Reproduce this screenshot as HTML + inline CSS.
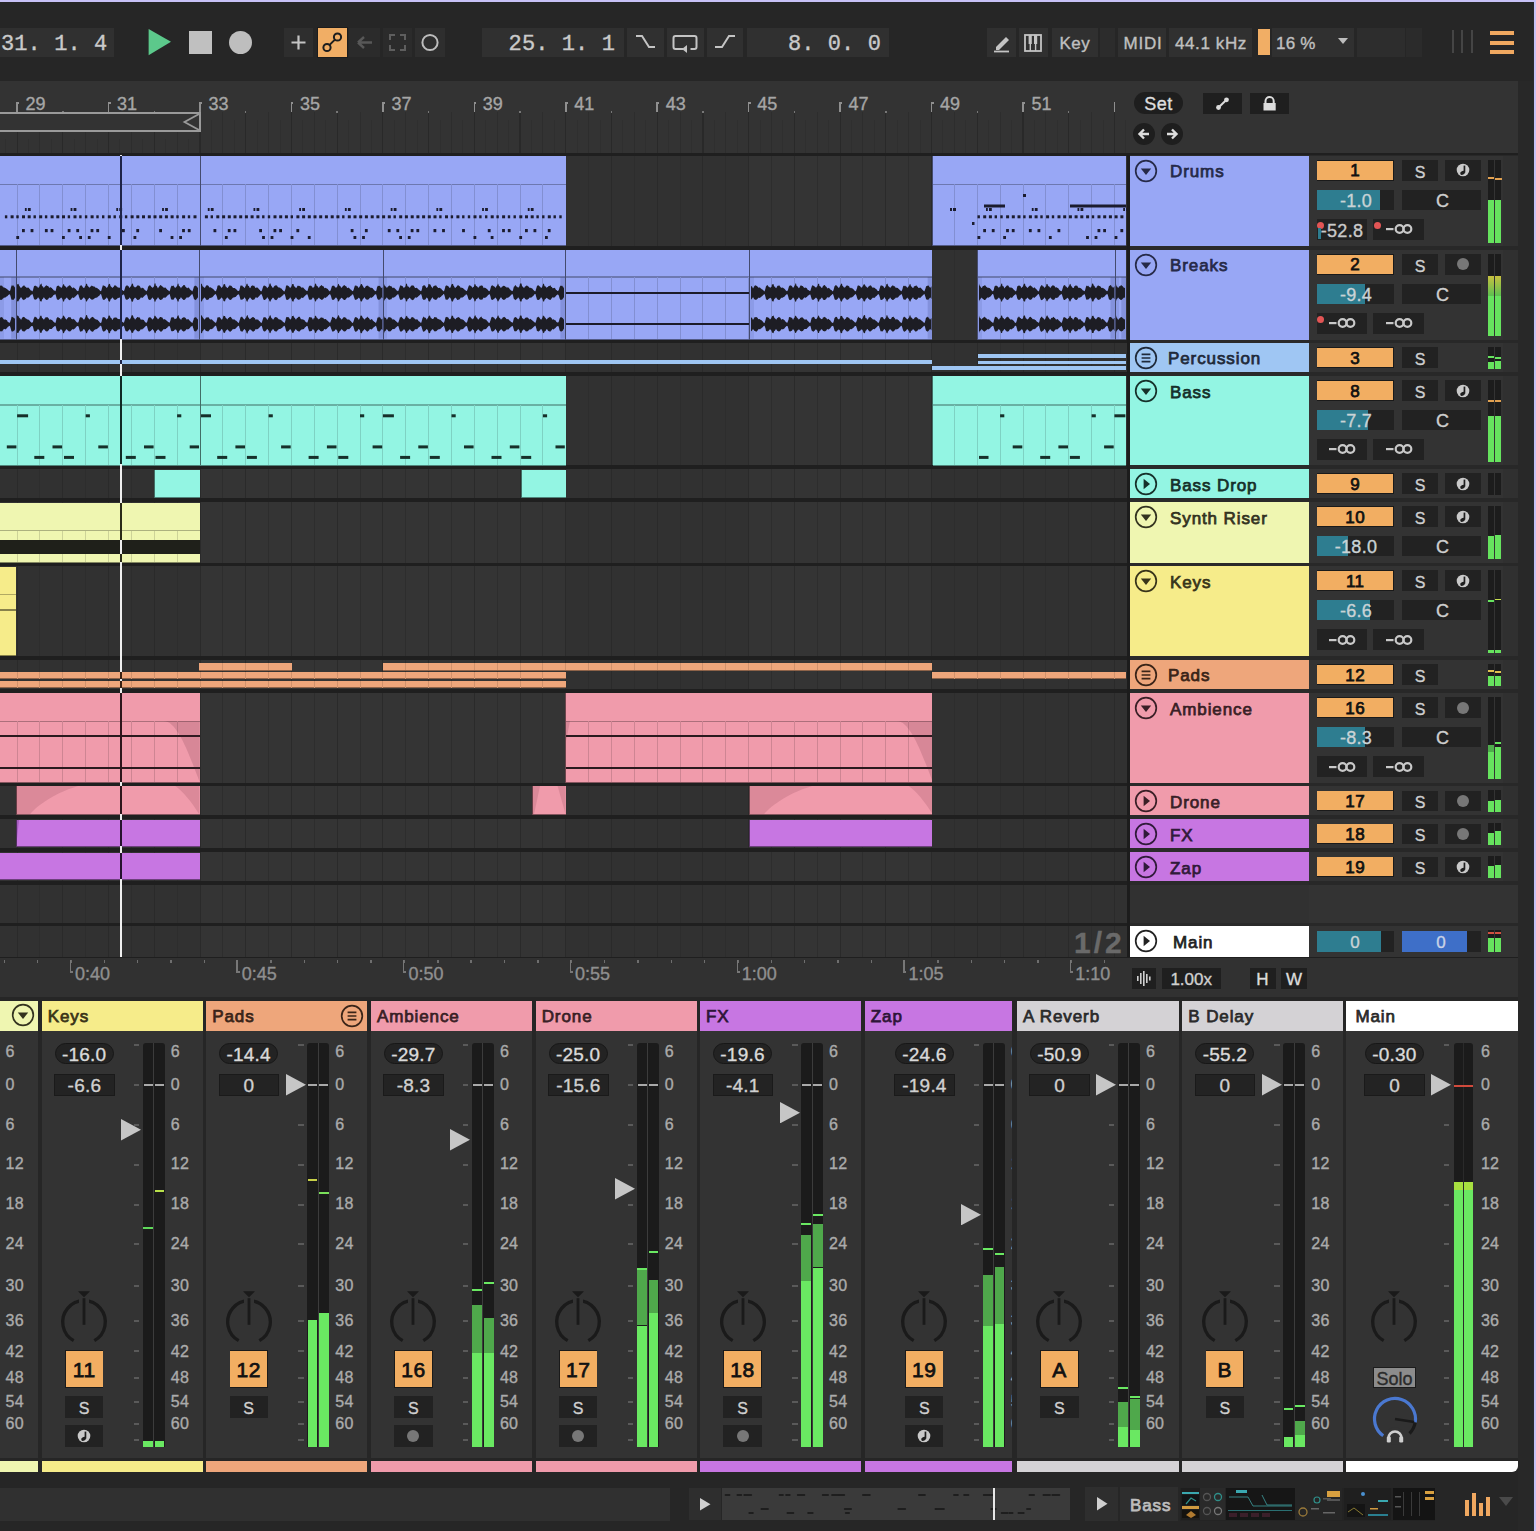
<!DOCTYPE html><html><head><meta charset="utf-8"><style>
html,body{margin:0;padding:0;width:1536px;height:1531px;overflow:hidden;background:#2a2a2a;}
div{position:absolute;box-sizing:border-box;}
.t{white-space:nowrap;-webkit-text-stroke:0.35px currentColor;}
.b{-webkit-text-stroke:0.75px currentColor;}
</style></head><body>
<div style="left:0.00px;top:0.00px;width:1536.00px;height:1531.00px;background:#2a2a2a;"></div>
<div style="left:0.00px;top:2.00px;width:1533.00px;height:79.00px;background:#262626;"></div>
<div style="left:0.00px;top:28.00px;width:114.00px;height:29.00px;background:#303030;"></div>
<div class="t" style="left:1.00px;top:32.24px;line-height:26.40px;font-size:22px;color:#cacaca;font-weight:normal;font-family:'Liberation Mono',monospace;letter-spacing:0.1px;">31.&nbsp;1.&nbsp;4</div>
<svg style="position:absolute;left:148.00px;top:28.00px;" width="24.00" height="28.00" viewBox="0 0 24.00 28.00"><polygon points="0.6,1 23,13.8 0.6,27.2" fill="#5cc98b"/></svg>
<div style="left:189.00px;top:31.00px;width:22.60px;height:23.00px;background:#c0c0c0;"></div>
<div style="left:228.5px;top:31px;width:23px;height:23px;border-radius:50%;background:#bebebe"></div>
<div style="left:284.00px;top:28.00px;width:29.00px;height:29.00px;background:#2e2e2e;"></div>
<svg style="position:absolute;left:284.00px;top:28.00px;" width="29.00" height="29.00" viewBox="0 0 29.00 29.00"><path d="M14.5 7.5v14M7.5 14.5h14" stroke="#c4c4c4" stroke-width="2.2" fill="none"/></svg>
<div style="left:316.50px;top:26.50px;width:31.00px;height:31.00px;background:#1c1c1c;"></div>
<div style="left:317.50px;top:27.50px;width:29.00px;height:29.00px;background:#f1ae65;"></div>
<svg style="position:absolute;left:316.50px;top:26.50px;" width="31.00" height="31.00" viewBox="0 0 31.00 31.00"><circle cx="10" cy="20.5" r="3.6" stroke="#1e1e1e" stroke-width="2" fill="none"/><circle cx="20.5" cy="10" r="3.6" stroke="#1e1e1e" stroke-width="2" fill="none"/><path d="M12.6 17.9L17.9 12.6" stroke="#1e1e1e" stroke-width="2"/></svg>
<div style="left:349.00px;top:28.00px;width:31.00px;height:29.00px;background:#2b2b2b;"></div>
<svg style="position:absolute;left:349.00px;top:28.00px;" width="31.00" height="29.00" viewBox="0 0 31.00 29.00"><path d="M9 14.5h14M9 14.5l6-5.5M9 14.5l6 5.5" stroke="#585858" stroke-width="2.4" fill="none"/></svg>
<div style="left:383.00px;top:28.00px;width:29.00px;height:29.00px;background:#2b2b2b;"></div>
<svg style="position:absolute;left:383.00px;top:28.00px;" width="29.00" height="29.00" viewBox="0 0 29.00 29.00"><path d="M7 12V7h5M17 7h5v5M22 17v5h-5M12 22H7v-5" stroke="#5e5e5e" stroke-width="2" fill="none"/></svg>
<div style="left:415.00px;top:28.00px;width:30.00px;height:29.00px;background:#2e2e2e;"></div>
<svg style="position:absolute;left:415.00px;top:28.00px;" width="30.00" height="29.00" viewBox="0 0 30.00 29.00"><circle cx="15" cy="14.5" r="7.6" stroke="#bdbdbd" stroke-width="2" fill="none"/></svg>
<div style="left:482.00px;top:28.00px;width:142.00px;height:29.00px;background:#303030;"></div>
<div class="t" style="left:315.00px;width:300px;text-align:right;top:32.24px;line-height:26.40px;font-size:22px;color:#cacaca;font-weight:normal;font-family:'Liberation Mono',monospace;letter-spacing:0.1px;">25.&nbsp;1.&nbsp;1</div>
<div style="left:627.00px;top:28.00px;width:37.00px;height:29.00px;background:#303030;"></div>
<svg style="position:absolute;left:627.00px;top:27.00px;" width="37.00" height="29.00" viewBox="0 0 37.00 29.00"><path d="M9 9h6l7 11h6" stroke="#c4c4c4" stroke-width="2" fill="none"/></svg>
<div style="left:667.00px;top:28.00px;width:37.00px;height:29.00px;background:#303030;"></div>
<svg style="position:absolute;left:667.00px;top:27.00px;" width="37.00" height="29.00" viewBox="0 0 37.00 29.00"><path d="M16 22h-7.5a2 2 0 0 1-2-2v-9a2 2 0 0 1 2-2h19a2 2 0 0 1 2 2v9a2 2 0 0 1-2 2h-4" stroke="#c4c4c4" stroke-width="2" fill="none"/><polygon points="15,22 20,18 20,26" fill="#c4c4c4"/></svg>
<div style="left:707.00px;top:28.00px;width:36.00px;height:29.00px;background:#303030;"></div>
<svg style="position:absolute;left:707.00px;top:27.00px;" width="36.00" height="29.00" viewBox="0 0 36.00 29.00"><path d="M8 20h7l7-11h6" stroke="#c4c4c4" stroke-width="2" fill="none"/></svg>
<div style="left:747.00px;top:28.00px;width:142.00px;height:29.00px;background:#303030;"></div>
<div class="t" style="left:581.00px;width:300px;text-align:right;top:32.24px;line-height:26.40px;font-size:22px;color:#cacaca;font-weight:normal;font-family:'Liberation Mono',monospace;letter-spacing:0.1px;">8.&nbsp;0.&nbsp;0</div>
<div style="left:987.00px;top:28.00px;width:29.00px;height:29.00px;background:#303030;"></div>
<svg style="position:absolute;left:987.00px;top:28.00px;" width="29.00" height="29.00" viewBox="0 0 29.00 29.00"><path d="M9 19l10-10 3 3-10 10h-3z" fill="#c4c4c4"/><path d="M7 23.5h15" stroke="#c4c4c4" stroke-width="1.8"/></svg>
<div style="left:1019.00px;top:28.00px;width:28.50px;height:29.00px;background:#303030;"></div>
<svg style="position:absolute;left:1019.00px;top:28.00px;" width="28.50" height="29.00" viewBox="0 0 28.50 29.00"><rect x="6" y="7" width="16" height="16" stroke="#c4c4c4" stroke-width="1.8" fill="none"/><path d="M11.3 7v16M16.6 7v16" stroke="#c4c4c4" stroke-width="1.4"/><rect x="9.6" y="7" width="3.2" height="9" fill="#c4c4c4"/><rect x="15" y="7" width="3.2" height="9" fill="#c4c4c4"/></svg>
<div style="left:1052.00px;top:28.00px;width:45.50px;height:29.00px;background:#303030;"></div>
<div class="t" style="left:1059.50px;top:34.34px;line-height:20.40px;font-size:17px;color:#c0c0c0;font-weight:normal;font-family:'Liberation Sans',sans-serif;letter-spacing:0.5px">Key</div>
<div style="left:1100.00px;top:28.00px;width:15.00px;height:29.00px;background:#2c2c2c;"></div>
<div style="left:1118.00px;top:28.00px;width:48.00px;height:29.00px;background:#303030;"></div>
<div class="t" style="left:1123.50px;top:34.34px;line-height:20.40px;font-size:17px;color:#c0c0c0;font-weight:normal;font-family:'Liberation Sans',sans-serif;letter-spacing:0.8px">MIDI</div>
<div style="left:1169.00px;top:28.00px;width:83.00px;height:29.00px;background:#303030;"></div>
<div class="t" style="left:1175.00px;top:34.34px;line-height:20.40px;font-size:17px;color:#c0c0c0;font-weight:normal;font-family:'Liberation Sans',sans-serif;letter-spacing:0.6px">44.1 kHz</div>
<div style="left:1258.00px;top:29.00px;width:12.00px;height:26.00px;background:#f1ae65;"></div>
<div style="left:1272.00px;top:28.00px;width:82.00px;height:29.00px;background:#303030;"></div>
<div class="t" style="left:1276.00px;top:34.34px;line-height:20.40px;font-size:17px;color:#c0c0c0;font-weight:normal;font-family:'Liberation Sans',sans-serif;letter-spacing:0.2px">16 %</div>
<svg style="position:absolute;left:1337.00px;top:37.00px;" width="12.00" height="8.00" viewBox="0 0 12.00 8.00"><polygon points="1,1 11,1 6,7" fill="#bdbdbd"/></svg>
<div style="left:1357.00px;top:28.00px;width:48.00px;height:29.00px;background:#2d2d2d;"></div>
<div style="left:1406.00px;top:28.00px;width:16.00px;height:29.00px;background:#2b2b2b;"></div>
<div style="left:1451.70px;top:30.00px;width:2.60px;height:23.00px;background:#454545;"></div>
<div style="left:1460.70px;top:30.00px;width:2.60px;height:23.00px;background:#454545;"></div>
<div style="left:1470.70px;top:30.00px;width:2.60px;height:23.00px;background:#454545;"></div>
<div style="left:1490.00px;top:31.00px;width:23.50px;height:4.00px;background:#f0a860;"></div>
<div style="left:1490.00px;top:40.50px;width:23.50px;height:4.00px;background:#f0a860;"></div>
<div style="left:1490.00px;top:50.00px;width:23.50px;height:4.00px;background:#f0a860;"></div>
<div style="left:1518.00px;top:81.00px;width:15.00px;height:1450.00px;background:#282828;"></div>
<div style="left:0.00px;top:0.00px;width:1536.00px;height:2.00px;background:#c7c1f6;"></div>
<div style="left:1533.50px;top:0.00px;width:2.50px;height:1531.00px;background:#c7c1f6;"></div>
<div style="left:0.00px;top:81.00px;width:1518.00px;height:72.00px;background:#333333;"></div>
<div style="left:0.00px;top:153.00px;width:1518.00px;height:2.00px;background:#1f1f1f;"></div>
<div style="left:5.18px;top:139.00px;width:1.00px;height:14.00px;background:#2f2f2f;"></div>
<div style="left:16.51px;top:131.00px;width:1.20px;height:22.00px;background:#292929;"></div>
<div style="left:28.04px;top:139.00px;width:1.00px;height:14.00px;background:#2f2f2f;"></div>
<div style="left:39.47px;top:131.00px;width:1.00px;height:22.00px;background:#2d2d2d;"></div>
<div style="left:50.90px;top:139.00px;width:1.00px;height:14.00px;background:#2f2f2f;"></div>
<div style="left:62.23px;top:131.00px;width:1.20px;height:22.00px;background:#292929;"></div>
<div style="left:73.76px;top:139.00px;width:1.00px;height:14.00px;background:#2f2f2f;"></div>
<div style="left:85.19px;top:131.00px;width:1.00px;height:22.00px;background:#2d2d2d;"></div>
<div style="left:96.63px;top:139.00px;width:1.00px;height:14.00px;background:#2f2f2f;"></div>
<div style="left:107.96px;top:131.00px;width:1.20px;height:22.00px;background:#292929;"></div>
<div style="left:119.49px;top:139.00px;width:1.00px;height:14.00px;background:#2f2f2f;"></div>
<div style="left:130.92px;top:131.00px;width:1.00px;height:22.00px;background:#2d2d2d;"></div>
<div style="left:142.35px;top:139.00px;width:1.00px;height:14.00px;background:#2f2f2f;"></div>
<div style="left:153.68px;top:131.00px;width:1.20px;height:22.00px;background:#292929;"></div>
<div style="left:165.21px;top:139.00px;width:1.00px;height:14.00px;background:#2f2f2f;"></div>
<div style="left:176.64px;top:131.00px;width:1.00px;height:22.00px;background:#2d2d2d;"></div>
<div style="left:188.07px;top:139.00px;width:1.00px;height:14.00px;background:#2f2f2f;"></div>
<div style="left:199.40px;top:131.00px;width:1.20px;height:22.00px;background:#292929;"></div>
<div style="left:210.93px;top:120.00px;width:1.00px;height:33.00px;background:#2f2f2f;"></div>
<div style="left:222.36px;top:112.00px;width:1.00px;height:41.00px;background:#2d2d2d;"></div>
<div style="left:233.79px;top:120.00px;width:1.00px;height:33.00px;background:#2f2f2f;"></div>
<div style="left:245.12px;top:112.00px;width:1.20px;height:41.00px;background:#292929;"></div>
<div style="left:256.65px;top:120.00px;width:1.00px;height:33.00px;background:#2f2f2f;"></div>
<div style="left:268.08px;top:112.00px;width:1.00px;height:41.00px;background:#2d2d2d;"></div>
<div style="left:279.51px;top:120.00px;width:1.00px;height:33.00px;background:#2f2f2f;"></div>
<div style="left:290.84px;top:112.00px;width:1.20px;height:41.00px;background:#292929;"></div>
<div style="left:302.37px;top:120.00px;width:1.00px;height:33.00px;background:#2f2f2f;"></div>
<div style="left:313.81px;top:112.00px;width:1.00px;height:41.00px;background:#2d2d2d;"></div>
<div style="left:325.24px;top:120.00px;width:1.00px;height:33.00px;background:#2f2f2f;"></div>
<div style="left:336.57px;top:112.00px;width:1.20px;height:41.00px;background:#292929;"></div>
<div style="left:348.10px;top:120.00px;width:1.00px;height:33.00px;background:#2f2f2f;"></div>
<div style="left:359.53px;top:112.00px;width:1.00px;height:41.00px;background:#2d2d2d;"></div>
<div style="left:370.96px;top:120.00px;width:1.00px;height:33.00px;background:#2f2f2f;"></div>
<div style="left:382.29px;top:112.00px;width:1.20px;height:41.00px;background:#292929;"></div>
<div style="left:393.82px;top:120.00px;width:1.00px;height:33.00px;background:#2f2f2f;"></div>
<div style="left:405.25px;top:112.00px;width:1.00px;height:41.00px;background:#2d2d2d;"></div>
<div style="left:416.68px;top:120.00px;width:1.00px;height:33.00px;background:#2f2f2f;"></div>
<div style="left:428.01px;top:112.00px;width:1.20px;height:41.00px;background:#292929;"></div>
<div style="left:439.54px;top:120.00px;width:1.00px;height:33.00px;background:#2f2f2f;"></div>
<div style="left:450.97px;top:112.00px;width:1.00px;height:41.00px;background:#2d2d2d;"></div>
<div style="left:462.40px;top:120.00px;width:1.00px;height:33.00px;background:#2f2f2f;"></div>
<div style="left:473.73px;top:112.00px;width:1.20px;height:41.00px;background:#292929;"></div>
<div style="left:485.26px;top:120.00px;width:1.00px;height:33.00px;background:#2f2f2f;"></div>
<div style="left:496.69px;top:112.00px;width:1.00px;height:41.00px;background:#2d2d2d;"></div>
<div style="left:508.12px;top:120.00px;width:1.00px;height:33.00px;background:#2f2f2f;"></div>
<div style="left:519.45px;top:112.00px;width:1.20px;height:41.00px;background:#292929;"></div>
<div style="left:530.98px;top:120.00px;width:1.00px;height:33.00px;background:#2f2f2f;"></div>
<div style="left:542.41px;top:112.00px;width:1.00px;height:41.00px;background:#2d2d2d;"></div>
<div style="left:553.85px;top:120.00px;width:1.00px;height:33.00px;background:#2f2f2f;"></div>
<div style="left:565.18px;top:112.00px;width:1.20px;height:41.00px;background:#292929;"></div>
<div style="left:576.71px;top:120.00px;width:1.00px;height:33.00px;background:#2f2f2f;"></div>
<div style="left:588.14px;top:112.00px;width:1.00px;height:41.00px;background:#2d2d2d;"></div>
<div style="left:599.57px;top:120.00px;width:1.00px;height:33.00px;background:#2f2f2f;"></div>
<div style="left:610.90px;top:112.00px;width:1.20px;height:41.00px;background:#292929;"></div>
<div style="left:622.43px;top:120.00px;width:1.00px;height:33.00px;background:#2f2f2f;"></div>
<div style="left:633.86px;top:112.00px;width:1.00px;height:41.00px;background:#2d2d2d;"></div>
<div style="left:645.29px;top:120.00px;width:1.00px;height:33.00px;background:#2f2f2f;"></div>
<div style="left:656.62px;top:112.00px;width:1.20px;height:41.00px;background:#292929;"></div>
<div style="left:668.15px;top:120.00px;width:1.00px;height:33.00px;background:#2f2f2f;"></div>
<div style="left:679.58px;top:112.00px;width:1.00px;height:41.00px;background:#2d2d2d;"></div>
<div style="left:691.01px;top:120.00px;width:1.00px;height:33.00px;background:#2f2f2f;"></div>
<div style="left:702.34px;top:112.00px;width:1.20px;height:41.00px;background:#292929;"></div>
<div style="left:713.87px;top:120.00px;width:1.00px;height:33.00px;background:#2f2f2f;"></div>
<div style="left:725.30px;top:112.00px;width:1.00px;height:41.00px;background:#2d2d2d;"></div>
<div style="left:736.73px;top:120.00px;width:1.00px;height:33.00px;background:#2f2f2f;"></div>
<div style="left:748.06px;top:112.00px;width:1.20px;height:41.00px;background:#292929;"></div>
<div style="left:759.59px;top:120.00px;width:1.00px;height:33.00px;background:#2f2f2f;"></div>
<div style="left:771.02px;top:112.00px;width:1.00px;height:41.00px;background:#2d2d2d;"></div>
<div style="left:782.46px;top:120.00px;width:1.00px;height:33.00px;background:#2f2f2f;"></div>
<div style="left:793.79px;top:112.00px;width:1.20px;height:41.00px;background:#292929;"></div>
<div style="left:805.32px;top:120.00px;width:1.00px;height:33.00px;background:#2f2f2f;"></div>
<div style="left:816.75px;top:112.00px;width:1.00px;height:41.00px;background:#2d2d2d;"></div>
<div style="left:828.18px;top:120.00px;width:1.00px;height:33.00px;background:#2f2f2f;"></div>
<div style="left:839.51px;top:112.00px;width:1.20px;height:41.00px;background:#292929;"></div>
<div style="left:851.04px;top:120.00px;width:1.00px;height:33.00px;background:#2f2f2f;"></div>
<div style="left:862.47px;top:112.00px;width:1.00px;height:41.00px;background:#2d2d2d;"></div>
<div style="left:873.90px;top:120.00px;width:1.00px;height:33.00px;background:#2f2f2f;"></div>
<div style="left:885.23px;top:112.00px;width:1.20px;height:41.00px;background:#292929;"></div>
<div style="left:896.76px;top:120.00px;width:1.00px;height:33.00px;background:#2f2f2f;"></div>
<div style="left:908.19px;top:112.00px;width:1.00px;height:41.00px;background:#2d2d2d;"></div>
<div style="left:919.62px;top:120.00px;width:1.00px;height:33.00px;background:#2f2f2f;"></div>
<div style="left:930.95px;top:112.00px;width:1.20px;height:41.00px;background:#292929;"></div>
<div style="left:942.48px;top:120.00px;width:1.00px;height:33.00px;background:#2f2f2f;"></div>
<div style="left:953.91px;top:112.00px;width:1.00px;height:41.00px;background:#2d2d2d;"></div>
<div style="left:965.34px;top:120.00px;width:1.00px;height:33.00px;background:#2f2f2f;"></div>
<div style="left:976.67px;top:112.00px;width:1.20px;height:41.00px;background:#292929;"></div>
<div style="left:988.20px;top:120.00px;width:1.00px;height:33.00px;background:#2f2f2f;"></div>
<div style="left:999.63px;top:112.00px;width:1.00px;height:41.00px;background:#2d2d2d;"></div>
<div style="left:1011.07px;top:120.00px;width:1.00px;height:33.00px;background:#2f2f2f;"></div>
<div style="left:1022.40px;top:112.00px;width:1.20px;height:41.00px;background:#292929;"></div>
<div style="left:1033.93px;top:120.00px;width:1.00px;height:33.00px;background:#2f2f2f;"></div>
<div style="left:1045.36px;top:112.00px;width:1.00px;height:41.00px;background:#2d2d2d;"></div>
<div style="left:1056.79px;top:120.00px;width:1.00px;height:33.00px;background:#2f2f2f;"></div>
<div style="left:1068.12px;top:112.00px;width:1.20px;height:41.00px;background:#292929;"></div>
<div style="left:1079.65px;top:120.00px;width:1.00px;height:33.00px;background:#2f2f2f;"></div>
<div style="left:1091.08px;top:112.00px;width:1.00px;height:41.00px;background:#2d2d2d;"></div>
<div style="left:1102.51px;top:120.00px;width:1.00px;height:33.00px;background:#2f2f2f;"></div>
<div style="left:1113.84px;top:112.00px;width:1.20px;height:41.00px;background:#292929;"></div>
<div style="left:1125.37px;top:120.00px;width:1.00px;height:33.00px;background:#2f2f2f;"></div>
<div style="left:16.36px;top:102.00px;width:1.50px;height:10.00px;background:#8f8f8f;"></div>
<div style="left:16.36px;top:102.00px;width:2.75px;height:1.50px;background:#8f8f8f;"></div>
<div class="t" style="left:25.61px;top:93.56px;line-height:21.60px;font-size:18px;color:#a6a6a6;font-weight:normal;font-family:'Liberation Sans',sans-serif;">29</div>
<div style="left:62.08px;top:111.00px;width:1.50px;height:2.00px;background:#777;"></div>
<div style="left:107.81px;top:102.00px;width:1.50px;height:10.00px;background:#8f8f8f;"></div>
<div style="left:107.81px;top:102.00px;width:2.75px;height:1.50px;background:#8f8f8f;"></div>
<div class="t" style="left:117.06px;top:93.56px;line-height:21.60px;font-size:18px;color:#a6a6a6;font-weight:normal;font-family:'Liberation Sans',sans-serif;">31</div>
<div style="left:153.53px;top:111.00px;width:1.50px;height:2.00px;background:#777;"></div>
<div style="left:199.25px;top:102.00px;width:1.50px;height:10.00px;background:#8f8f8f;"></div>
<div style="left:199.25px;top:102.00px;width:2.75px;height:1.50px;background:#8f8f8f;"></div>
<div class="t" style="left:208.50px;top:93.56px;line-height:21.60px;font-size:18px;color:#a6a6a6;font-weight:normal;font-family:'Liberation Sans',sans-serif;">33</div>
<div style="left:244.97px;top:111.00px;width:1.50px;height:2.00px;background:#777;"></div>
<div style="left:290.69px;top:102.00px;width:1.50px;height:10.00px;background:#8f8f8f;"></div>
<div style="left:290.69px;top:102.00px;width:2.75px;height:1.50px;background:#8f8f8f;"></div>
<div class="t" style="left:299.94px;top:93.56px;line-height:21.60px;font-size:18px;color:#a6a6a6;font-weight:normal;font-family:'Liberation Sans',sans-serif;">35</div>
<div style="left:336.42px;top:111.00px;width:1.50px;height:2.00px;background:#777;"></div>
<div style="left:382.14px;top:102.00px;width:1.50px;height:10.00px;background:#8f8f8f;"></div>
<div style="left:382.14px;top:102.00px;width:2.75px;height:1.50px;background:#8f8f8f;"></div>
<div class="t" style="left:391.39px;top:93.56px;line-height:21.60px;font-size:18px;color:#a6a6a6;font-weight:normal;font-family:'Liberation Sans',sans-serif;">37</div>
<div style="left:427.86px;top:111.00px;width:1.50px;height:2.00px;background:#777;"></div>
<div style="left:473.58px;top:102.00px;width:1.50px;height:10.00px;background:#8f8f8f;"></div>
<div style="left:473.58px;top:102.00px;width:2.75px;height:1.50px;background:#8f8f8f;"></div>
<div class="t" style="left:482.83px;top:93.56px;line-height:21.60px;font-size:18px;color:#a6a6a6;font-weight:normal;font-family:'Liberation Sans',sans-serif;">39</div>
<div style="left:519.30px;top:111.00px;width:1.50px;height:2.00px;background:#777;"></div>
<div style="left:565.03px;top:102.00px;width:1.50px;height:10.00px;background:#8f8f8f;"></div>
<div style="left:565.03px;top:102.00px;width:2.75px;height:1.50px;background:#8f8f8f;"></div>
<div class="t" style="left:574.28px;top:93.56px;line-height:21.60px;font-size:18px;color:#a6a6a6;font-weight:normal;font-family:'Liberation Sans',sans-serif;">41</div>
<div style="left:610.75px;top:111.00px;width:1.50px;height:2.00px;background:#777;"></div>
<div style="left:656.47px;top:102.00px;width:1.50px;height:10.00px;background:#8f8f8f;"></div>
<div style="left:656.47px;top:102.00px;width:2.75px;height:1.50px;background:#8f8f8f;"></div>
<div class="t" style="left:665.72px;top:93.56px;line-height:21.60px;font-size:18px;color:#a6a6a6;font-weight:normal;font-family:'Liberation Sans',sans-serif;">43</div>
<div style="left:702.19px;top:111.00px;width:1.50px;height:2.00px;background:#777;"></div>
<div style="left:747.91px;top:102.00px;width:1.50px;height:10.00px;background:#8f8f8f;"></div>
<div style="left:747.91px;top:102.00px;width:2.75px;height:1.50px;background:#8f8f8f;"></div>
<div class="t" style="left:757.16px;top:93.56px;line-height:21.60px;font-size:18px;color:#a6a6a6;font-weight:normal;font-family:'Liberation Sans',sans-serif;">45</div>
<div style="left:793.64px;top:111.00px;width:1.50px;height:2.00px;background:#777;"></div>
<div style="left:839.36px;top:102.00px;width:1.50px;height:10.00px;background:#8f8f8f;"></div>
<div style="left:839.36px;top:102.00px;width:2.75px;height:1.50px;background:#8f8f8f;"></div>
<div class="t" style="left:848.61px;top:93.56px;line-height:21.60px;font-size:18px;color:#a6a6a6;font-weight:normal;font-family:'Liberation Sans',sans-serif;">47</div>
<div style="left:885.08px;top:111.00px;width:1.50px;height:2.00px;background:#777;"></div>
<div style="left:930.80px;top:102.00px;width:1.50px;height:10.00px;background:#8f8f8f;"></div>
<div style="left:930.80px;top:102.00px;width:2.75px;height:1.50px;background:#8f8f8f;"></div>
<div class="t" style="left:940.05px;top:93.56px;line-height:21.60px;font-size:18px;color:#a6a6a6;font-weight:normal;font-family:'Liberation Sans',sans-serif;">49</div>
<div style="left:976.52px;top:111.00px;width:1.50px;height:2.00px;background:#777;"></div>
<div style="left:1022.25px;top:102.00px;width:1.50px;height:10.00px;background:#8f8f8f;"></div>
<div style="left:1022.25px;top:102.00px;width:2.75px;height:1.50px;background:#8f8f8f;"></div>
<div class="t" style="left:1031.50px;top:93.56px;line-height:21.60px;font-size:18px;color:#a6a6a6;font-weight:normal;font-family:'Liberation Sans',sans-serif;">51</div>
<div style="left:1067.97px;top:111.00px;width:1.50px;height:2.00px;background:#777;"></div>
<div style="left:1113.69px;top:102.00px;width:1.50px;height:10.00px;background:#8f8f8f;"></div>
<div style="left:0.00px;top:112.30px;width:201.00px;height:2.00px;background:#9a9a9a;"></div>
<div style="left:0.00px;top:129.50px;width:201.00px;height:2.00px;background:#9a9a9a;"></div>
<div style="left:199.00px;top:112.30px;width:2.00px;height:19.20px;background:#9a9a9a;"></div>
<svg style="position:absolute;left:182.00px;top:112.00px;" width="20.00" height="20.00" viewBox="0 0 20.00 20.00"><path d="M18 1.5L2.5 10L18 18.5" stroke="#9a9a9a" stroke-width="1.8" fill="none"/></svg>
<div style="left:1134px;top:92px;width:49px;height:22px;border-radius:11px;background:#1e1e1e"></div>
<div class="t" style="left:1134.00px;width:49px;text-align:center;top:94.36px;line-height:21.60px;font-size:18px;color:#dedede;font-weight:normal;font-family:'Liberation Sans',sans-serif;letter-spacing:0.5px">Set</div>
<div style="left:1203.00px;top:92.50px;width:39.00px;height:21.20px;background:#1f1f1f;"></div>
<svg style="position:absolute;left:1203.00px;top:92.50px;" width="39.00" height="21.20" viewBox="0 0 39.00 21.20"><circle cx="15.5" cy="14.5" r="2.4" fill="#ddd"/><circle cx="23.5" cy="6.8" r="2.4" fill="#ddd"/><path d="M15.5 14.5L23.5 6.8" stroke="#ddd" stroke-width="2"/></svg>
<div style="left:1249.60px;top:92.50px;width:39.20px;height:21.20px;background:#1f1f1f;"></div>
<svg style="position:absolute;left:1249.60px;top:92.50px;" width="39.20" height="21.20" viewBox="0 0 39.20 21.20"><path d="M15.5 10V8a4.1 4.1 0 0 1 8.2 0v2" stroke="#ddd" stroke-width="2" fill="none"/><rect x="13.5" y="10" width="12.2" height="7.5" fill="#ddd"/></svg>
<div style="left:1133.40px;top:123px;width:22px;height:22px;border-radius:50%;background:#1e1e1e"></div>
<svg style="position:absolute;left:1133.40px;top:123.00px;" width="22.00" height="22.00" viewBox="0 0 22.00 22.00"><path d="M16 11H7M11 6.5L6.5 11L11 15.5" stroke="#ddd" stroke-width="2.4" fill="none"/></svg>
<div style="left:1161.20px;top:123px;width:22px;height:22px;border-radius:50%;background:#1e1e1e"></div>
<svg style="position:absolute;left:1161.20px;top:123.00px;" width="22.00" height="22.00" viewBox="0 0 22.00 22.00"><path d="M6 11H15M11 6.5L15.5 11L11 15.5" stroke="#ddd" stroke-width="2.4" fill="none"/></svg>
<div style="left:0.00px;top:155.00px;width:1126.50px;height:802.00px;background:#1f1f1f;"></div>
<div style="left:0.00px;top:155.50px;width:1126.50px;height:90.50px;background:#313131;"></div>
<div style="left:0.00px;top:249.50px;width:1126.50px;height:90.20px;background:#313131;"></div>
<div style="left:0.00px;top:342.70px;width:1126.50px;height:29.30px;background:#313131;"></div>
<div style="left:0.00px;top:375.70px;width:1126.50px;height:89.80px;background:#313131;"></div>
<div style="left:0.00px;top:468.70px;width:1126.50px;height:29.60px;background:#313131;"></div>
<div style="left:0.00px;top:501.80px;width:1126.50px;height:61.00px;background:#313131;"></div>
<div style="left:0.00px;top:565.80px;width:1126.50px;height:90.50px;background:#313131;"></div>
<div style="left:0.00px;top:659.80px;width:1126.50px;height:29.70px;background:#313131;"></div>
<div style="left:0.00px;top:692.80px;width:1126.50px;height:90.00px;background:#313131;"></div>
<div style="left:0.00px;top:786.00px;width:1126.50px;height:29.30px;background:#313131;"></div>
<div style="left:0.00px;top:819.00px;width:1126.50px;height:29.00px;background:#313131;"></div>
<div style="left:0.00px;top:852.00px;width:1126.50px;height:29.30px;background:#313131;"></div>
<div style="left:0.00px;top:884.50px;width:1126.50px;height:38.50px;background:#313131;"></div>
<div style="left:0.00px;top:926.00px;width:1126.50px;height:30.50px;background:#313131;"></div>
<div style="left:200.00px;top:155.50px;width:182.89px;height:90.50px;background:#343434;"></div>
<div style="left:200.00px;top:249.50px;width:182.89px;height:90.20px;background:#343434;"></div>
<div style="left:200.00px;top:342.70px;width:182.89px;height:29.30px;background:#343434;"></div>
<div style="left:200.00px;top:375.70px;width:182.89px;height:89.80px;background:#343434;"></div>
<div style="left:200.00px;top:468.70px;width:182.89px;height:29.60px;background:#343434;"></div>
<div style="left:200.00px;top:501.80px;width:182.89px;height:61.00px;background:#343434;"></div>
<div style="left:200.00px;top:565.80px;width:182.89px;height:90.50px;background:#343434;"></div>
<div style="left:200.00px;top:659.80px;width:182.89px;height:29.70px;background:#343434;"></div>
<div style="left:200.00px;top:692.80px;width:182.89px;height:90.00px;background:#343434;"></div>
<div style="left:200.00px;top:786.00px;width:182.89px;height:29.30px;background:#343434;"></div>
<div style="left:200.00px;top:819.00px;width:182.89px;height:29.00px;background:#343434;"></div>
<div style="left:200.00px;top:852.00px;width:182.89px;height:29.30px;background:#343434;"></div>
<div style="left:200.00px;top:884.50px;width:182.89px;height:38.50px;background:#343434;"></div>
<div style="left:200.00px;top:926.00px;width:182.89px;height:30.50px;background:#343434;"></div>
<div style="left:382.89px;top:155.50px;width:182.89px;height:90.50px;background:#343434;"></div>
<div style="left:382.89px;top:249.50px;width:182.89px;height:90.20px;background:#343434;"></div>
<div style="left:382.89px;top:342.70px;width:182.89px;height:29.30px;background:#343434;"></div>
<div style="left:382.89px;top:375.70px;width:182.89px;height:89.80px;background:#343434;"></div>
<div style="left:382.89px;top:468.70px;width:182.89px;height:29.60px;background:#343434;"></div>
<div style="left:382.89px;top:501.80px;width:182.89px;height:61.00px;background:#343434;"></div>
<div style="left:382.89px;top:565.80px;width:182.89px;height:90.50px;background:#343434;"></div>
<div style="left:382.89px;top:659.80px;width:182.89px;height:29.70px;background:#343434;"></div>
<div style="left:382.89px;top:692.80px;width:182.89px;height:90.00px;background:#343434;"></div>
<div style="left:382.89px;top:786.00px;width:182.89px;height:29.30px;background:#343434;"></div>
<div style="left:382.89px;top:819.00px;width:182.89px;height:29.00px;background:#343434;"></div>
<div style="left:382.89px;top:852.00px;width:182.89px;height:29.30px;background:#343434;"></div>
<div style="left:382.89px;top:884.50px;width:182.89px;height:38.50px;background:#343434;"></div>
<div style="left:382.89px;top:926.00px;width:182.89px;height:30.50px;background:#343434;"></div>
<div style="left:748.66px;top:155.50px;width:182.89px;height:90.50px;background:#343434;"></div>
<div style="left:748.66px;top:249.50px;width:182.89px;height:90.20px;background:#343434;"></div>
<div style="left:748.66px;top:342.70px;width:182.89px;height:29.30px;background:#343434;"></div>
<div style="left:748.66px;top:375.70px;width:182.89px;height:89.80px;background:#343434;"></div>
<div style="left:748.66px;top:468.70px;width:182.89px;height:29.60px;background:#343434;"></div>
<div style="left:748.66px;top:501.80px;width:182.89px;height:61.00px;background:#343434;"></div>
<div style="left:748.66px;top:565.80px;width:182.89px;height:90.50px;background:#343434;"></div>
<div style="left:748.66px;top:659.80px;width:182.89px;height:29.70px;background:#343434;"></div>
<div style="left:748.66px;top:692.80px;width:182.89px;height:90.00px;background:#343434;"></div>
<div style="left:748.66px;top:786.00px;width:182.89px;height:29.30px;background:#343434;"></div>
<div style="left:748.66px;top:819.00px;width:182.89px;height:29.00px;background:#343434;"></div>
<div style="left:748.66px;top:852.00px;width:182.89px;height:29.30px;background:#343434;"></div>
<div style="left:748.66px;top:884.50px;width:182.89px;height:38.50px;background:#343434;"></div>
<div style="left:748.66px;top:926.00px;width:182.89px;height:30.50px;background:#343434;"></div>
<div style="left:16.61px;top:155.50px;width:1.00px;height:90.50px;background:#2a2a2a;"></div>
<div style="left:39.47px;top:155.50px;width:1.00px;height:90.50px;background:#2d2d2d;"></div>
<div style="left:62.33px;top:155.50px;width:1.00px;height:90.50px;background:#2a2a2a;"></div>
<div style="left:85.19px;top:155.50px;width:1.00px;height:90.50px;background:#2d2d2d;"></div>
<div style="left:108.06px;top:155.50px;width:1.00px;height:90.50px;background:#2a2a2a;"></div>
<div style="left:130.92px;top:155.50px;width:1.00px;height:90.50px;background:#2d2d2d;"></div>
<div style="left:153.78px;top:155.50px;width:1.00px;height:90.50px;background:#2a2a2a;"></div>
<div style="left:176.64px;top:155.50px;width:1.00px;height:90.50px;background:#2d2d2d;"></div>
<div style="left:199.50px;top:155.50px;width:1.00px;height:90.50px;background:#2a2a2a;"></div>
<div style="left:222.36px;top:155.50px;width:1.00px;height:90.50px;background:#2d2d2d;"></div>
<div style="left:245.22px;top:155.50px;width:1.00px;height:90.50px;background:#2a2a2a;"></div>
<div style="left:268.08px;top:155.50px;width:1.00px;height:90.50px;background:#2d2d2d;"></div>
<div style="left:290.94px;top:155.50px;width:1.00px;height:90.50px;background:#2a2a2a;"></div>
<div style="left:313.81px;top:155.50px;width:1.00px;height:90.50px;background:#2d2d2d;"></div>
<div style="left:336.67px;top:155.50px;width:1.00px;height:90.50px;background:#2a2a2a;"></div>
<div style="left:359.53px;top:155.50px;width:1.00px;height:90.50px;background:#2d2d2d;"></div>
<div style="left:382.39px;top:155.50px;width:1.00px;height:90.50px;background:#2a2a2a;"></div>
<div style="left:405.25px;top:155.50px;width:1.00px;height:90.50px;background:#2d2d2d;"></div>
<div style="left:428.11px;top:155.50px;width:1.00px;height:90.50px;background:#2a2a2a;"></div>
<div style="left:450.97px;top:155.50px;width:1.00px;height:90.50px;background:#2d2d2d;"></div>
<div style="left:473.83px;top:155.50px;width:1.00px;height:90.50px;background:#2a2a2a;"></div>
<div style="left:496.69px;top:155.50px;width:1.00px;height:90.50px;background:#2d2d2d;"></div>
<div style="left:519.55px;top:155.50px;width:1.00px;height:90.50px;background:#2a2a2a;"></div>
<div style="left:542.41px;top:155.50px;width:1.00px;height:90.50px;background:#2d2d2d;"></div>
<div style="left:565.28px;top:155.50px;width:1.00px;height:90.50px;background:#2a2a2a;"></div>
<div style="left:588.14px;top:155.50px;width:1.00px;height:90.50px;background:#2d2d2d;"></div>
<div style="left:611.00px;top:155.50px;width:1.00px;height:90.50px;background:#2a2a2a;"></div>
<div style="left:633.86px;top:155.50px;width:1.00px;height:90.50px;background:#2d2d2d;"></div>
<div style="left:656.72px;top:155.50px;width:1.00px;height:90.50px;background:#2a2a2a;"></div>
<div style="left:679.58px;top:155.50px;width:1.00px;height:90.50px;background:#2d2d2d;"></div>
<div style="left:702.44px;top:155.50px;width:1.00px;height:90.50px;background:#2a2a2a;"></div>
<div style="left:725.30px;top:155.50px;width:1.00px;height:90.50px;background:#2d2d2d;"></div>
<div style="left:748.16px;top:155.50px;width:1.00px;height:90.50px;background:#2a2a2a;"></div>
<div style="left:771.02px;top:155.50px;width:1.00px;height:90.50px;background:#2d2d2d;"></div>
<div style="left:793.89px;top:155.50px;width:1.00px;height:90.50px;background:#2a2a2a;"></div>
<div style="left:816.75px;top:155.50px;width:1.00px;height:90.50px;background:#2d2d2d;"></div>
<div style="left:839.61px;top:155.50px;width:1.00px;height:90.50px;background:#2a2a2a;"></div>
<div style="left:862.47px;top:155.50px;width:1.00px;height:90.50px;background:#2d2d2d;"></div>
<div style="left:885.33px;top:155.50px;width:1.00px;height:90.50px;background:#2a2a2a;"></div>
<div style="left:908.19px;top:155.50px;width:1.00px;height:90.50px;background:#2d2d2d;"></div>
<div style="left:931.05px;top:155.50px;width:1.00px;height:90.50px;background:#2a2a2a;"></div>
<div style="left:953.91px;top:155.50px;width:1.00px;height:90.50px;background:#2d2d2d;"></div>
<div style="left:976.77px;top:155.50px;width:1.00px;height:90.50px;background:#2a2a2a;"></div>
<div style="left:999.63px;top:155.50px;width:1.00px;height:90.50px;background:#2d2d2d;"></div>
<div style="left:1022.50px;top:155.50px;width:1.00px;height:90.50px;background:#2a2a2a;"></div>
<div style="left:1045.36px;top:155.50px;width:1.00px;height:90.50px;background:#2d2d2d;"></div>
<div style="left:1068.22px;top:155.50px;width:1.00px;height:90.50px;background:#2a2a2a;"></div>
<div style="left:1091.08px;top:155.50px;width:1.00px;height:90.50px;background:#2d2d2d;"></div>
<div style="left:1113.94px;top:155.50px;width:1.00px;height:90.50px;background:#2a2a2a;"></div>
<div style="left:16.61px;top:249.50px;width:1.00px;height:90.20px;background:#2a2a2a;"></div>
<div style="left:39.47px;top:249.50px;width:1.00px;height:90.20px;background:#2d2d2d;"></div>
<div style="left:62.33px;top:249.50px;width:1.00px;height:90.20px;background:#2a2a2a;"></div>
<div style="left:85.19px;top:249.50px;width:1.00px;height:90.20px;background:#2d2d2d;"></div>
<div style="left:108.06px;top:249.50px;width:1.00px;height:90.20px;background:#2a2a2a;"></div>
<div style="left:130.92px;top:249.50px;width:1.00px;height:90.20px;background:#2d2d2d;"></div>
<div style="left:153.78px;top:249.50px;width:1.00px;height:90.20px;background:#2a2a2a;"></div>
<div style="left:176.64px;top:249.50px;width:1.00px;height:90.20px;background:#2d2d2d;"></div>
<div style="left:199.50px;top:249.50px;width:1.00px;height:90.20px;background:#2a2a2a;"></div>
<div style="left:222.36px;top:249.50px;width:1.00px;height:90.20px;background:#2d2d2d;"></div>
<div style="left:245.22px;top:249.50px;width:1.00px;height:90.20px;background:#2a2a2a;"></div>
<div style="left:268.08px;top:249.50px;width:1.00px;height:90.20px;background:#2d2d2d;"></div>
<div style="left:290.94px;top:249.50px;width:1.00px;height:90.20px;background:#2a2a2a;"></div>
<div style="left:313.81px;top:249.50px;width:1.00px;height:90.20px;background:#2d2d2d;"></div>
<div style="left:336.67px;top:249.50px;width:1.00px;height:90.20px;background:#2a2a2a;"></div>
<div style="left:359.53px;top:249.50px;width:1.00px;height:90.20px;background:#2d2d2d;"></div>
<div style="left:382.39px;top:249.50px;width:1.00px;height:90.20px;background:#2a2a2a;"></div>
<div style="left:405.25px;top:249.50px;width:1.00px;height:90.20px;background:#2d2d2d;"></div>
<div style="left:428.11px;top:249.50px;width:1.00px;height:90.20px;background:#2a2a2a;"></div>
<div style="left:450.97px;top:249.50px;width:1.00px;height:90.20px;background:#2d2d2d;"></div>
<div style="left:473.83px;top:249.50px;width:1.00px;height:90.20px;background:#2a2a2a;"></div>
<div style="left:496.69px;top:249.50px;width:1.00px;height:90.20px;background:#2d2d2d;"></div>
<div style="left:519.55px;top:249.50px;width:1.00px;height:90.20px;background:#2a2a2a;"></div>
<div style="left:542.41px;top:249.50px;width:1.00px;height:90.20px;background:#2d2d2d;"></div>
<div style="left:565.28px;top:249.50px;width:1.00px;height:90.20px;background:#2a2a2a;"></div>
<div style="left:588.14px;top:249.50px;width:1.00px;height:90.20px;background:#2d2d2d;"></div>
<div style="left:611.00px;top:249.50px;width:1.00px;height:90.20px;background:#2a2a2a;"></div>
<div style="left:633.86px;top:249.50px;width:1.00px;height:90.20px;background:#2d2d2d;"></div>
<div style="left:656.72px;top:249.50px;width:1.00px;height:90.20px;background:#2a2a2a;"></div>
<div style="left:679.58px;top:249.50px;width:1.00px;height:90.20px;background:#2d2d2d;"></div>
<div style="left:702.44px;top:249.50px;width:1.00px;height:90.20px;background:#2a2a2a;"></div>
<div style="left:725.30px;top:249.50px;width:1.00px;height:90.20px;background:#2d2d2d;"></div>
<div style="left:748.16px;top:249.50px;width:1.00px;height:90.20px;background:#2a2a2a;"></div>
<div style="left:771.02px;top:249.50px;width:1.00px;height:90.20px;background:#2d2d2d;"></div>
<div style="left:793.89px;top:249.50px;width:1.00px;height:90.20px;background:#2a2a2a;"></div>
<div style="left:816.75px;top:249.50px;width:1.00px;height:90.20px;background:#2d2d2d;"></div>
<div style="left:839.61px;top:249.50px;width:1.00px;height:90.20px;background:#2a2a2a;"></div>
<div style="left:862.47px;top:249.50px;width:1.00px;height:90.20px;background:#2d2d2d;"></div>
<div style="left:885.33px;top:249.50px;width:1.00px;height:90.20px;background:#2a2a2a;"></div>
<div style="left:908.19px;top:249.50px;width:1.00px;height:90.20px;background:#2d2d2d;"></div>
<div style="left:931.05px;top:249.50px;width:1.00px;height:90.20px;background:#2a2a2a;"></div>
<div style="left:953.91px;top:249.50px;width:1.00px;height:90.20px;background:#2d2d2d;"></div>
<div style="left:976.77px;top:249.50px;width:1.00px;height:90.20px;background:#2a2a2a;"></div>
<div style="left:999.63px;top:249.50px;width:1.00px;height:90.20px;background:#2d2d2d;"></div>
<div style="left:1022.50px;top:249.50px;width:1.00px;height:90.20px;background:#2a2a2a;"></div>
<div style="left:1045.36px;top:249.50px;width:1.00px;height:90.20px;background:#2d2d2d;"></div>
<div style="left:1068.22px;top:249.50px;width:1.00px;height:90.20px;background:#2a2a2a;"></div>
<div style="left:1091.08px;top:249.50px;width:1.00px;height:90.20px;background:#2d2d2d;"></div>
<div style="left:1113.94px;top:249.50px;width:1.00px;height:90.20px;background:#2a2a2a;"></div>
<div style="left:16.61px;top:342.70px;width:1.00px;height:29.30px;background:#2a2a2a;"></div>
<div style="left:39.47px;top:342.70px;width:1.00px;height:29.30px;background:#2d2d2d;"></div>
<div style="left:62.33px;top:342.70px;width:1.00px;height:29.30px;background:#2a2a2a;"></div>
<div style="left:85.19px;top:342.70px;width:1.00px;height:29.30px;background:#2d2d2d;"></div>
<div style="left:108.06px;top:342.70px;width:1.00px;height:29.30px;background:#2a2a2a;"></div>
<div style="left:130.92px;top:342.70px;width:1.00px;height:29.30px;background:#2d2d2d;"></div>
<div style="left:153.78px;top:342.70px;width:1.00px;height:29.30px;background:#2a2a2a;"></div>
<div style="left:176.64px;top:342.70px;width:1.00px;height:29.30px;background:#2d2d2d;"></div>
<div style="left:199.50px;top:342.70px;width:1.00px;height:29.30px;background:#2a2a2a;"></div>
<div style="left:222.36px;top:342.70px;width:1.00px;height:29.30px;background:#2d2d2d;"></div>
<div style="left:245.22px;top:342.70px;width:1.00px;height:29.30px;background:#2a2a2a;"></div>
<div style="left:268.08px;top:342.70px;width:1.00px;height:29.30px;background:#2d2d2d;"></div>
<div style="left:290.94px;top:342.70px;width:1.00px;height:29.30px;background:#2a2a2a;"></div>
<div style="left:313.81px;top:342.70px;width:1.00px;height:29.30px;background:#2d2d2d;"></div>
<div style="left:336.67px;top:342.70px;width:1.00px;height:29.30px;background:#2a2a2a;"></div>
<div style="left:359.53px;top:342.70px;width:1.00px;height:29.30px;background:#2d2d2d;"></div>
<div style="left:382.39px;top:342.70px;width:1.00px;height:29.30px;background:#2a2a2a;"></div>
<div style="left:405.25px;top:342.70px;width:1.00px;height:29.30px;background:#2d2d2d;"></div>
<div style="left:428.11px;top:342.70px;width:1.00px;height:29.30px;background:#2a2a2a;"></div>
<div style="left:450.97px;top:342.70px;width:1.00px;height:29.30px;background:#2d2d2d;"></div>
<div style="left:473.83px;top:342.70px;width:1.00px;height:29.30px;background:#2a2a2a;"></div>
<div style="left:496.69px;top:342.70px;width:1.00px;height:29.30px;background:#2d2d2d;"></div>
<div style="left:519.55px;top:342.70px;width:1.00px;height:29.30px;background:#2a2a2a;"></div>
<div style="left:542.41px;top:342.70px;width:1.00px;height:29.30px;background:#2d2d2d;"></div>
<div style="left:565.28px;top:342.70px;width:1.00px;height:29.30px;background:#2a2a2a;"></div>
<div style="left:588.14px;top:342.70px;width:1.00px;height:29.30px;background:#2d2d2d;"></div>
<div style="left:611.00px;top:342.70px;width:1.00px;height:29.30px;background:#2a2a2a;"></div>
<div style="left:633.86px;top:342.70px;width:1.00px;height:29.30px;background:#2d2d2d;"></div>
<div style="left:656.72px;top:342.70px;width:1.00px;height:29.30px;background:#2a2a2a;"></div>
<div style="left:679.58px;top:342.70px;width:1.00px;height:29.30px;background:#2d2d2d;"></div>
<div style="left:702.44px;top:342.70px;width:1.00px;height:29.30px;background:#2a2a2a;"></div>
<div style="left:725.30px;top:342.70px;width:1.00px;height:29.30px;background:#2d2d2d;"></div>
<div style="left:748.16px;top:342.70px;width:1.00px;height:29.30px;background:#2a2a2a;"></div>
<div style="left:771.02px;top:342.70px;width:1.00px;height:29.30px;background:#2d2d2d;"></div>
<div style="left:793.89px;top:342.70px;width:1.00px;height:29.30px;background:#2a2a2a;"></div>
<div style="left:816.75px;top:342.70px;width:1.00px;height:29.30px;background:#2d2d2d;"></div>
<div style="left:839.61px;top:342.70px;width:1.00px;height:29.30px;background:#2a2a2a;"></div>
<div style="left:862.47px;top:342.70px;width:1.00px;height:29.30px;background:#2d2d2d;"></div>
<div style="left:885.33px;top:342.70px;width:1.00px;height:29.30px;background:#2a2a2a;"></div>
<div style="left:908.19px;top:342.70px;width:1.00px;height:29.30px;background:#2d2d2d;"></div>
<div style="left:931.05px;top:342.70px;width:1.00px;height:29.30px;background:#2a2a2a;"></div>
<div style="left:953.91px;top:342.70px;width:1.00px;height:29.30px;background:#2d2d2d;"></div>
<div style="left:976.77px;top:342.70px;width:1.00px;height:29.30px;background:#2a2a2a;"></div>
<div style="left:999.63px;top:342.70px;width:1.00px;height:29.30px;background:#2d2d2d;"></div>
<div style="left:1022.50px;top:342.70px;width:1.00px;height:29.30px;background:#2a2a2a;"></div>
<div style="left:1045.36px;top:342.70px;width:1.00px;height:29.30px;background:#2d2d2d;"></div>
<div style="left:1068.22px;top:342.70px;width:1.00px;height:29.30px;background:#2a2a2a;"></div>
<div style="left:1091.08px;top:342.70px;width:1.00px;height:29.30px;background:#2d2d2d;"></div>
<div style="left:1113.94px;top:342.70px;width:1.00px;height:29.30px;background:#2a2a2a;"></div>
<div style="left:16.61px;top:375.70px;width:1.00px;height:89.80px;background:#2a2a2a;"></div>
<div style="left:39.47px;top:375.70px;width:1.00px;height:89.80px;background:#2d2d2d;"></div>
<div style="left:62.33px;top:375.70px;width:1.00px;height:89.80px;background:#2a2a2a;"></div>
<div style="left:85.19px;top:375.70px;width:1.00px;height:89.80px;background:#2d2d2d;"></div>
<div style="left:108.06px;top:375.70px;width:1.00px;height:89.80px;background:#2a2a2a;"></div>
<div style="left:130.92px;top:375.70px;width:1.00px;height:89.80px;background:#2d2d2d;"></div>
<div style="left:153.78px;top:375.70px;width:1.00px;height:89.80px;background:#2a2a2a;"></div>
<div style="left:176.64px;top:375.70px;width:1.00px;height:89.80px;background:#2d2d2d;"></div>
<div style="left:199.50px;top:375.70px;width:1.00px;height:89.80px;background:#2a2a2a;"></div>
<div style="left:222.36px;top:375.70px;width:1.00px;height:89.80px;background:#2d2d2d;"></div>
<div style="left:245.22px;top:375.70px;width:1.00px;height:89.80px;background:#2a2a2a;"></div>
<div style="left:268.08px;top:375.70px;width:1.00px;height:89.80px;background:#2d2d2d;"></div>
<div style="left:290.94px;top:375.70px;width:1.00px;height:89.80px;background:#2a2a2a;"></div>
<div style="left:313.81px;top:375.70px;width:1.00px;height:89.80px;background:#2d2d2d;"></div>
<div style="left:336.67px;top:375.70px;width:1.00px;height:89.80px;background:#2a2a2a;"></div>
<div style="left:359.53px;top:375.70px;width:1.00px;height:89.80px;background:#2d2d2d;"></div>
<div style="left:382.39px;top:375.70px;width:1.00px;height:89.80px;background:#2a2a2a;"></div>
<div style="left:405.25px;top:375.70px;width:1.00px;height:89.80px;background:#2d2d2d;"></div>
<div style="left:428.11px;top:375.70px;width:1.00px;height:89.80px;background:#2a2a2a;"></div>
<div style="left:450.97px;top:375.70px;width:1.00px;height:89.80px;background:#2d2d2d;"></div>
<div style="left:473.83px;top:375.70px;width:1.00px;height:89.80px;background:#2a2a2a;"></div>
<div style="left:496.69px;top:375.70px;width:1.00px;height:89.80px;background:#2d2d2d;"></div>
<div style="left:519.55px;top:375.70px;width:1.00px;height:89.80px;background:#2a2a2a;"></div>
<div style="left:542.41px;top:375.70px;width:1.00px;height:89.80px;background:#2d2d2d;"></div>
<div style="left:565.28px;top:375.70px;width:1.00px;height:89.80px;background:#2a2a2a;"></div>
<div style="left:588.14px;top:375.70px;width:1.00px;height:89.80px;background:#2d2d2d;"></div>
<div style="left:611.00px;top:375.70px;width:1.00px;height:89.80px;background:#2a2a2a;"></div>
<div style="left:633.86px;top:375.70px;width:1.00px;height:89.80px;background:#2d2d2d;"></div>
<div style="left:656.72px;top:375.70px;width:1.00px;height:89.80px;background:#2a2a2a;"></div>
<div style="left:679.58px;top:375.70px;width:1.00px;height:89.80px;background:#2d2d2d;"></div>
<div style="left:702.44px;top:375.70px;width:1.00px;height:89.80px;background:#2a2a2a;"></div>
<div style="left:725.30px;top:375.70px;width:1.00px;height:89.80px;background:#2d2d2d;"></div>
<div style="left:748.16px;top:375.70px;width:1.00px;height:89.80px;background:#2a2a2a;"></div>
<div style="left:771.02px;top:375.70px;width:1.00px;height:89.80px;background:#2d2d2d;"></div>
<div style="left:793.89px;top:375.70px;width:1.00px;height:89.80px;background:#2a2a2a;"></div>
<div style="left:816.75px;top:375.70px;width:1.00px;height:89.80px;background:#2d2d2d;"></div>
<div style="left:839.61px;top:375.70px;width:1.00px;height:89.80px;background:#2a2a2a;"></div>
<div style="left:862.47px;top:375.70px;width:1.00px;height:89.80px;background:#2d2d2d;"></div>
<div style="left:885.33px;top:375.70px;width:1.00px;height:89.80px;background:#2a2a2a;"></div>
<div style="left:908.19px;top:375.70px;width:1.00px;height:89.80px;background:#2d2d2d;"></div>
<div style="left:931.05px;top:375.70px;width:1.00px;height:89.80px;background:#2a2a2a;"></div>
<div style="left:953.91px;top:375.70px;width:1.00px;height:89.80px;background:#2d2d2d;"></div>
<div style="left:976.77px;top:375.70px;width:1.00px;height:89.80px;background:#2a2a2a;"></div>
<div style="left:999.63px;top:375.70px;width:1.00px;height:89.80px;background:#2d2d2d;"></div>
<div style="left:1022.50px;top:375.70px;width:1.00px;height:89.80px;background:#2a2a2a;"></div>
<div style="left:1045.36px;top:375.70px;width:1.00px;height:89.80px;background:#2d2d2d;"></div>
<div style="left:1068.22px;top:375.70px;width:1.00px;height:89.80px;background:#2a2a2a;"></div>
<div style="left:1091.08px;top:375.70px;width:1.00px;height:89.80px;background:#2d2d2d;"></div>
<div style="left:1113.94px;top:375.70px;width:1.00px;height:89.80px;background:#2a2a2a;"></div>
<div style="left:16.61px;top:468.70px;width:1.00px;height:29.60px;background:#2a2a2a;"></div>
<div style="left:39.47px;top:468.70px;width:1.00px;height:29.60px;background:#2d2d2d;"></div>
<div style="left:62.33px;top:468.70px;width:1.00px;height:29.60px;background:#2a2a2a;"></div>
<div style="left:85.19px;top:468.70px;width:1.00px;height:29.60px;background:#2d2d2d;"></div>
<div style="left:108.06px;top:468.70px;width:1.00px;height:29.60px;background:#2a2a2a;"></div>
<div style="left:130.92px;top:468.70px;width:1.00px;height:29.60px;background:#2d2d2d;"></div>
<div style="left:153.78px;top:468.70px;width:1.00px;height:29.60px;background:#2a2a2a;"></div>
<div style="left:176.64px;top:468.70px;width:1.00px;height:29.60px;background:#2d2d2d;"></div>
<div style="left:199.50px;top:468.70px;width:1.00px;height:29.60px;background:#2a2a2a;"></div>
<div style="left:222.36px;top:468.70px;width:1.00px;height:29.60px;background:#2d2d2d;"></div>
<div style="left:245.22px;top:468.70px;width:1.00px;height:29.60px;background:#2a2a2a;"></div>
<div style="left:268.08px;top:468.70px;width:1.00px;height:29.60px;background:#2d2d2d;"></div>
<div style="left:290.94px;top:468.70px;width:1.00px;height:29.60px;background:#2a2a2a;"></div>
<div style="left:313.81px;top:468.70px;width:1.00px;height:29.60px;background:#2d2d2d;"></div>
<div style="left:336.67px;top:468.70px;width:1.00px;height:29.60px;background:#2a2a2a;"></div>
<div style="left:359.53px;top:468.70px;width:1.00px;height:29.60px;background:#2d2d2d;"></div>
<div style="left:382.39px;top:468.70px;width:1.00px;height:29.60px;background:#2a2a2a;"></div>
<div style="left:405.25px;top:468.70px;width:1.00px;height:29.60px;background:#2d2d2d;"></div>
<div style="left:428.11px;top:468.70px;width:1.00px;height:29.60px;background:#2a2a2a;"></div>
<div style="left:450.97px;top:468.70px;width:1.00px;height:29.60px;background:#2d2d2d;"></div>
<div style="left:473.83px;top:468.70px;width:1.00px;height:29.60px;background:#2a2a2a;"></div>
<div style="left:496.69px;top:468.70px;width:1.00px;height:29.60px;background:#2d2d2d;"></div>
<div style="left:519.55px;top:468.70px;width:1.00px;height:29.60px;background:#2a2a2a;"></div>
<div style="left:542.41px;top:468.70px;width:1.00px;height:29.60px;background:#2d2d2d;"></div>
<div style="left:565.28px;top:468.70px;width:1.00px;height:29.60px;background:#2a2a2a;"></div>
<div style="left:588.14px;top:468.70px;width:1.00px;height:29.60px;background:#2d2d2d;"></div>
<div style="left:611.00px;top:468.70px;width:1.00px;height:29.60px;background:#2a2a2a;"></div>
<div style="left:633.86px;top:468.70px;width:1.00px;height:29.60px;background:#2d2d2d;"></div>
<div style="left:656.72px;top:468.70px;width:1.00px;height:29.60px;background:#2a2a2a;"></div>
<div style="left:679.58px;top:468.70px;width:1.00px;height:29.60px;background:#2d2d2d;"></div>
<div style="left:702.44px;top:468.70px;width:1.00px;height:29.60px;background:#2a2a2a;"></div>
<div style="left:725.30px;top:468.70px;width:1.00px;height:29.60px;background:#2d2d2d;"></div>
<div style="left:748.16px;top:468.70px;width:1.00px;height:29.60px;background:#2a2a2a;"></div>
<div style="left:771.02px;top:468.70px;width:1.00px;height:29.60px;background:#2d2d2d;"></div>
<div style="left:793.89px;top:468.70px;width:1.00px;height:29.60px;background:#2a2a2a;"></div>
<div style="left:816.75px;top:468.70px;width:1.00px;height:29.60px;background:#2d2d2d;"></div>
<div style="left:839.61px;top:468.70px;width:1.00px;height:29.60px;background:#2a2a2a;"></div>
<div style="left:862.47px;top:468.70px;width:1.00px;height:29.60px;background:#2d2d2d;"></div>
<div style="left:885.33px;top:468.70px;width:1.00px;height:29.60px;background:#2a2a2a;"></div>
<div style="left:908.19px;top:468.70px;width:1.00px;height:29.60px;background:#2d2d2d;"></div>
<div style="left:931.05px;top:468.70px;width:1.00px;height:29.60px;background:#2a2a2a;"></div>
<div style="left:953.91px;top:468.70px;width:1.00px;height:29.60px;background:#2d2d2d;"></div>
<div style="left:976.77px;top:468.70px;width:1.00px;height:29.60px;background:#2a2a2a;"></div>
<div style="left:999.63px;top:468.70px;width:1.00px;height:29.60px;background:#2d2d2d;"></div>
<div style="left:1022.50px;top:468.70px;width:1.00px;height:29.60px;background:#2a2a2a;"></div>
<div style="left:1045.36px;top:468.70px;width:1.00px;height:29.60px;background:#2d2d2d;"></div>
<div style="left:1068.22px;top:468.70px;width:1.00px;height:29.60px;background:#2a2a2a;"></div>
<div style="left:1091.08px;top:468.70px;width:1.00px;height:29.60px;background:#2d2d2d;"></div>
<div style="left:1113.94px;top:468.70px;width:1.00px;height:29.60px;background:#2a2a2a;"></div>
<div style="left:16.61px;top:501.80px;width:1.00px;height:61.00px;background:#2a2a2a;"></div>
<div style="left:39.47px;top:501.80px;width:1.00px;height:61.00px;background:#2d2d2d;"></div>
<div style="left:62.33px;top:501.80px;width:1.00px;height:61.00px;background:#2a2a2a;"></div>
<div style="left:85.19px;top:501.80px;width:1.00px;height:61.00px;background:#2d2d2d;"></div>
<div style="left:108.06px;top:501.80px;width:1.00px;height:61.00px;background:#2a2a2a;"></div>
<div style="left:130.92px;top:501.80px;width:1.00px;height:61.00px;background:#2d2d2d;"></div>
<div style="left:153.78px;top:501.80px;width:1.00px;height:61.00px;background:#2a2a2a;"></div>
<div style="left:176.64px;top:501.80px;width:1.00px;height:61.00px;background:#2d2d2d;"></div>
<div style="left:199.50px;top:501.80px;width:1.00px;height:61.00px;background:#2a2a2a;"></div>
<div style="left:222.36px;top:501.80px;width:1.00px;height:61.00px;background:#2d2d2d;"></div>
<div style="left:245.22px;top:501.80px;width:1.00px;height:61.00px;background:#2a2a2a;"></div>
<div style="left:268.08px;top:501.80px;width:1.00px;height:61.00px;background:#2d2d2d;"></div>
<div style="left:290.94px;top:501.80px;width:1.00px;height:61.00px;background:#2a2a2a;"></div>
<div style="left:313.81px;top:501.80px;width:1.00px;height:61.00px;background:#2d2d2d;"></div>
<div style="left:336.67px;top:501.80px;width:1.00px;height:61.00px;background:#2a2a2a;"></div>
<div style="left:359.53px;top:501.80px;width:1.00px;height:61.00px;background:#2d2d2d;"></div>
<div style="left:382.39px;top:501.80px;width:1.00px;height:61.00px;background:#2a2a2a;"></div>
<div style="left:405.25px;top:501.80px;width:1.00px;height:61.00px;background:#2d2d2d;"></div>
<div style="left:428.11px;top:501.80px;width:1.00px;height:61.00px;background:#2a2a2a;"></div>
<div style="left:450.97px;top:501.80px;width:1.00px;height:61.00px;background:#2d2d2d;"></div>
<div style="left:473.83px;top:501.80px;width:1.00px;height:61.00px;background:#2a2a2a;"></div>
<div style="left:496.69px;top:501.80px;width:1.00px;height:61.00px;background:#2d2d2d;"></div>
<div style="left:519.55px;top:501.80px;width:1.00px;height:61.00px;background:#2a2a2a;"></div>
<div style="left:542.41px;top:501.80px;width:1.00px;height:61.00px;background:#2d2d2d;"></div>
<div style="left:565.28px;top:501.80px;width:1.00px;height:61.00px;background:#2a2a2a;"></div>
<div style="left:588.14px;top:501.80px;width:1.00px;height:61.00px;background:#2d2d2d;"></div>
<div style="left:611.00px;top:501.80px;width:1.00px;height:61.00px;background:#2a2a2a;"></div>
<div style="left:633.86px;top:501.80px;width:1.00px;height:61.00px;background:#2d2d2d;"></div>
<div style="left:656.72px;top:501.80px;width:1.00px;height:61.00px;background:#2a2a2a;"></div>
<div style="left:679.58px;top:501.80px;width:1.00px;height:61.00px;background:#2d2d2d;"></div>
<div style="left:702.44px;top:501.80px;width:1.00px;height:61.00px;background:#2a2a2a;"></div>
<div style="left:725.30px;top:501.80px;width:1.00px;height:61.00px;background:#2d2d2d;"></div>
<div style="left:748.16px;top:501.80px;width:1.00px;height:61.00px;background:#2a2a2a;"></div>
<div style="left:771.02px;top:501.80px;width:1.00px;height:61.00px;background:#2d2d2d;"></div>
<div style="left:793.89px;top:501.80px;width:1.00px;height:61.00px;background:#2a2a2a;"></div>
<div style="left:816.75px;top:501.80px;width:1.00px;height:61.00px;background:#2d2d2d;"></div>
<div style="left:839.61px;top:501.80px;width:1.00px;height:61.00px;background:#2a2a2a;"></div>
<div style="left:862.47px;top:501.80px;width:1.00px;height:61.00px;background:#2d2d2d;"></div>
<div style="left:885.33px;top:501.80px;width:1.00px;height:61.00px;background:#2a2a2a;"></div>
<div style="left:908.19px;top:501.80px;width:1.00px;height:61.00px;background:#2d2d2d;"></div>
<div style="left:931.05px;top:501.80px;width:1.00px;height:61.00px;background:#2a2a2a;"></div>
<div style="left:953.91px;top:501.80px;width:1.00px;height:61.00px;background:#2d2d2d;"></div>
<div style="left:976.77px;top:501.80px;width:1.00px;height:61.00px;background:#2a2a2a;"></div>
<div style="left:999.63px;top:501.80px;width:1.00px;height:61.00px;background:#2d2d2d;"></div>
<div style="left:1022.50px;top:501.80px;width:1.00px;height:61.00px;background:#2a2a2a;"></div>
<div style="left:1045.36px;top:501.80px;width:1.00px;height:61.00px;background:#2d2d2d;"></div>
<div style="left:1068.22px;top:501.80px;width:1.00px;height:61.00px;background:#2a2a2a;"></div>
<div style="left:1091.08px;top:501.80px;width:1.00px;height:61.00px;background:#2d2d2d;"></div>
<div style="left:1113.94px;top:501.80px;width:1.00px;height:61.00px;background:#2a2a2a;"></div>
<div style="left:16.61px;top:565.80px;width:1.00px;height:90.50px;background:#2a2a2a;"></div>
<div style="left:39.47px;top:565.80px;width:1.00px;height:90.50px;background:#2d2d2d;"></div>
<div style="left:62.33px;top:565.80px;width:1.00px;height:90.50px;background:#2a2a2a;"></div>
<div style="left:85.19px;top:565.80px;width:1.00px;height:90.50px;background:#2d2d2d;"></div>
<div style="left:108.06px;top:565.80px;width:1.00px;height:90.50px;background:#2a2a2a;"></div>
<div style="left:130.92px;top:565.80px;width:1.00px;height:90.50px;background:#2d2d2d;"></div>
<div style="left:153.78px;top:565.80px;width:1.00px;height:90.50px;background:#2a2a2a;"></div>
<div style="left:176.64px;top:565.80px;width:1.00px;height:90.50px;background:#2d2d2d;"></div>
<div style="left:199.50px;top:565.80px;width:1.00px;height:90.50px;background:#2a2a2a;"></div>
<div style="left:222.36px;top:565.80px;width:1.00px;height:90.50px;background:#2d2d2d;"></div>
<div style="left:245.22px;top:565.80px;width:1.00px;height:90.50px;background:#2a2a2a;"></div>
<div style="left:268.08px;top:565.80px;width:1.00px;height:90.50px;background:#2d2d2d;"></div>
<div style="left:290.94px;top:565.80px;width:1.00px;height:90.50px;background:#2a2a2a;"></div>
<div style="left:313.81px;top:565.80px;width:1.00px;height:90.50px;background:#2d2d2d;"></div>
<div style="left:336.67px;top:565.80px;width:1.00px;height:90.50px;background:#2a2a2a;"></div>
<div style="left:359.53px;top:565.80px;width:1.00px;height:90.50px;background:#2d2d2d;"></div>
<div style="left:382.39px;top:565.80px;width:1.00px;height:90.50px;background:#2a2a2a;"></div>
<div style="left:405.25px;top:565.80px;width:1.00px;height:90.50px;background:#2d2d2d;"></div>
<div style="left:428.11px;top:565.80px;width:1.00px;height:90.50px;background:#2a2a2a;"></div>
<div style="left:450.97px;top:565.80px;width:1.00px;height:90.50px;background:#2d2d2d;"></div>
<div style="left:473.83px;top:565.80px;width:1.00px;height:90.50px;background:#2a2a2a;"></div>
<div style="left:496.69px;top:565.80px;width:1.00px;height:90.50px;background:#2d2d2d;"></div>
<div style="left:519.55px;top:565.80px;width:1.00px;height:90.50px;background:#2a2a2a;"></div>
<div style="left:542.41px;top:565.80px;width:1.00px;height:90.50px;background:#2d2d2d;"></div>
<div style="left:565.28px;top:565.80px;width:1.00px;height:90.50px;background:#2a2a2a;"></div>
<div style="left:588.14px;top:565.80px;width:1.00px;height:90.50px;background:#2d2d2d;"></div>
<div style="left:611.00px;top:565.80px;width:1.00px;height:90.50px;background:#2a2a2a;"></div>
<div style="left:633.86px;top:565.80px;width:1.00px;height:90.50px;background:#2d2d2d;"></div>
<div style="left:656.72px;top:565.80px;width:1.00px;height:90.50px;background:#2a2a2a;"></div>
<div style="left:679.58px;top:565.80px;width:1.00px;height:90.50px;background:#2d2d2d;"></div>
<div style="left:702.44px;top:565.80px;width:1.00px;height:90.50px;background:#2a2a2a;"></div>
<div style="left:725.30px;top:565.80px;width:1.00px;height:90.50px;background:#2d2d2d;"></div>
<div style="left:748.16px;top:565.80px;width:1.00px;height:90.50px;background:#2a2a2a;"></div>
<div style="left:771.02px;top:565.80px;width:1.00px;height:90.50px;background:#2d2d2d;"></div>
<div style="left:793.89px;top:565.80px;width:1.00px;height:90.50px;background:#2a2a2a;"></div>
<div style="left:816.75px;top:565.80px;width:1.00px;height:90.50px;background:#2d2d2d;"></div>
<div style="left:839.61px;top:565.80px;width:1.00px;height:90.50px;background:#2a2a2a;"></div>
<div style="left:862.47px;top:565.80px;width:1.00px;height:90.50px;background:#2d2d2d;"></div>
<div style="left:885.33px;top:565.80px;width:1.00px;height:90.50px;background:#2a2a2a;"></div>
<div style="left:908.19px;top:565.80px;width:1.00px;height:90.50px;background:#2d2d2d;"></div>
<div style="left:931.05px;top:565.80px;width:1.00px;height:90.50px;background:#2a2a2a;"></div>
<div style="left:953.91px;top:565.80px;width:1.00px;height:90.50px;background:#2d2d2d;"></div>
<div style="left:976.77px;top:565.80px;width:1.00px;height:90.50px;background:#2a2a2a;"></div>
<div style="left:999.63px;top:565.80px;width:1.00px;height:90.50px;background:#2d2d2d;"></div>
<div style="left:1022.50px;top:565.80px;width:1.00px;height:90.50px;background:#2a2a2a;"></div>
<div style="left:1045.36px;top:565.80px;width:1.00px;height:90.50px;background:#2d2d2d;"></div>
<div style="left:1068.22px;top:565.80px;width:1.00px;height:90.50px;background:#2a2a2a;"></div>
<div style="left:1091.08px;top:565.80px;width:1.00px;height:90.50px;background:#2d2d2d;"></div>
<div style="left:1113.94px;top:565.80px;width:1.00px;height:90.50px;background:#2a2a2a;"></div>
<div style="left:16.61px;top:659.80px;width:1.00px;height:29.70px;background:#2a2a2a;"></div>
<div style="left:39.47px;top:659.80px;width:1.00px;height:29.70px;background:#2d2d2d;"></div>
<div style="left:62.33px;top:659.80px;width:1.00px;height:29.70px;background:#2a2a2a;"></div>
<div style="left:85.19px;top:659.80px;width:1.00px;height:29.70px;background:#2d2d2d;"></div>
<div style="left:108.06px;top:659.80px;width:1.00px;height:29.70px;background:#2a2a2a;"></div>
<div style="left:130.92px;top:659.80px;width:1.00px;height:29.70px;background:#2d2d2d;"></div>
<div style="left:153.78px;top:659.80px;width:1.00px;height:29.70px;background:#2a2a2a;"></div>
<div style="left:176.64px;top:659.80px;width:1.00px;height:29.70px;background:#2d2d2d;"></div>
<div style="left:199.50px;top:659.80px;width:1.00px;height:29.70px;background:#2a2a2a;"></div>
<div style="left:222.36px;top:659.80px;width:1.00px;height:29.70px;background:#2d2d2d;"></div>
<div style="left:245.22px;top:659.80px;width:1.00px;height:29.70px;background:#2a2a2a;"></div>
<div style="left:268.08px;top:659.80px;width:1.00px;height:29.70px;background:#2d2d2d;"></div>
<div style="left:290.94px;top:659.80px;width:1.00px;height:29.70px;background:#2a2a2a;"></div>
<div style="left:313.81px;top:659.80px;width:1.00px;height:29.70px;background:#2d2d2d;"></div>
<div style="left:336.67px;top:659.80px;width:1.00px;height:29.70px;background:#2a2a2a;"></div>
<div style="left:359.53px;top:659.80px;width:1.00px;height:29.70px;background:#2d2d2d;"></div>
<div style="left:382.39px;top:659.80px;width:1.00px;height:29.70px;background:#2a2a2a;"></div>
<div style="left:405.25px;top:659.80px;width:1.00px;height:29.70px;background:#2d2d2d;"></div>
<div style="left:428.11px;top:659.80px;width:1.00px;height:29.70px;background:#2a2a2a;"></div>
<div style="left:450.97px;top:659.80px;width:1.00px;height:29.70px;background:#2d2d2d;"></div>
<div style="left:473.83px;top:659.80px;width:1.00px;height:29.70px;background:#2a2a2a;"></div>
<div style="left:496.69px;top:659.80px;width:1.00px;height:29.70px;background:#2d2d2d;"></div>
<div style="left:519.55px;top:659.80px;width:1.00px;height:29.70px;background:#2a2a2a;"></div>
<div style="left:542.41px;top:659.80px;width:1.00px;height:29.70px;background:#2d2d2d;"></div>
<div style="left:565.28px;top:659.80px;width:1.00px;height:29.70px;background:#2a2a2a;"></div>
<div style="left:588.14px;top:659.80px;width:1.00px;height:29.70px;background:#2d2d2d;"></div>
<div style="left:611.00px;top:659.80px;width:1.00px;height:29.70px;background:#2a2a2a;"></div>
<div style="left:633.86px;top:659.80px;width:1.00px;height:29.70px;background:#2d2d2d;"></div>
<div style="left:656.72px;top:659.80px;width:1.00px;height:29.70px;background:#2a2a2a;"></div>
<div style="left:679.58px;top:659.80px;width:1.00px;height:29.70px;background:#2d2d2d;"></div>
<div style="left:702.44px;top:659.80px;width:1.00px;height:29.70px;background:#2a2a2a;"></div>
<div style="left:725.30px;top:659.80px;width:1.00px;height:29.70px;background:#2d2d2d;"></div>
<div style="left:748.16px;top:659.80px;width:1.00px;height:29.70px;background:#2a2a2a;"></div>
<div style="left:771.02px;top:659.80px;width:1.00px;height:29.70px;background:#2d2d2d;"></div>
<div style="left:793.89px;top:659.80px;width:1.00px;height:29.70px;background:#2a2a2a;"></div>
<div style="left:816.75px;top:659.80px;width:1.00px;height:29.70px;background:#2d2d2d;"></div>
<div style="left:839.61px;top:659.80px;width:1.00px;height:29.70px;background:#2a2a2a;"></div>
<div style="left:862.47px;top:659.80px;width:1.00px;height:29.70px;background:#2d2d2d;"></div>
<div style="left:885.33px;top:659.80px;width:1.00px;height:29.70px;background:#2a2a2a;"></div>
<div style="left:908.19px;top:659.80px;width:1.00px;height:29.70px;background:#2d2d2d;"></div>
<div style="left:931.05px;top:659.80px;width:1.00px;height:29.70px;background:#2a2a2a;"></div>
<div style="left:953.91px;top:659.80px;width:1.00px;height:29.70px;background:#2d2d2d;"></div>
<div style="left:976.77px;top:659.80px;width:1.00px;height:29.70px;background:#2a2a2a;"></div>
<div style="left:999.63px;top:659.80px;width:1.00px;height:29.70px;background:#2d2d2d;"></div>
<div style="left:1022.50px;top:659.80px;width:1.00px;height:29.70px;background:#2a2a2a;"></div>
<div style="left:1045.36px;top:659.80px;width:1.00px;height:29.70px;background:#2d2d2d;"></div>
<div style="left:1068.22px;top:659.80px;width:1.00px;height:29.70px;background:#2a2a2a;"></div>
<div style="left:1091.08px;top:659.80px;width:1.00px;height:29.70px;background:#2d2d2d;"></div>
<div style="left:1113.94px;top:659.80px;width:1.00px;height:29.70px;background:#2a2a2a;"></div>
<div style="left:16.61px;top:692.80px;width:1.00px;height:90.00px;background:#2a2a2a;"></div>
<div style="left:39.47px;top:692.80px;width:1.00px;height:90.00px;background:#2d2d2d;"></div>
<div style="left:62.33px;top:692.80px;width:1.00px;height:90.00px;background:#2a2a2a;"></div>
<div style="left:85.19px;top:692.80px;width:1.00px;height:90.00px;background:#2d2d2d;"></div>
<div style="left:108.06px;top:692.80px;width:1.00px;height:90.00px;background:#2a2a2a;"></div>
<div style="left:130.92px;top:692.80px;width:1.00px;height:90.00px;background:#2d2d2d;"></div>
<div style="left:153.78px;top:692.80px;width:1.00px;height:90.00px;background:#2a2a2a;"></div>
<div style="left:176.64px;top:692.80px;width:1.00px;height:90.00px;background:#2d2d2d;"></div>
<div style="left:199.50px;top:692.80px;width:1.00px;height:90.00px;background:#2a2a2a;"></div>
<div style="left:222.36px;top:692.80px;width:1.00px;height:90.00px;background:#2d2d2d;"></div>
<div style="left:245.22px;top:692.80px;width:1.00px;height:90.00px;background:#2a2a2a;"></div>
<div style="left:268.08px;top:692.80px;width:1.00px;height:90.00px;background:#2d2d2d;"></div>
<div style="left:290.94px;top:692.80px;width:1.00px;height:90.00px;background:#2a2a2a;"></div>
<div style="left:313.81px;top:692.80px;width:1.00px;height:90.00px;background:#2d2d2d;"></div>
<div style="left:336.67px;top:692.80px;width:1.00px;height:90.00px;background:#2a2a2a;"></div>
<div style="left:359.53px;top:692.80px;width:1.00px;height:90.00px;background:#2d2d2d;"></div>
<div style="left:382.39px;top:692.80px;width:1.00px;height:90.00px;background:#2a2a2a;"></div>
<div style="left:405.25px;top:692.80px;width:1.00px;height:90.00px;background:#2d2d2d;"></div>
<div style="left:428.11px;top:692.80px;width:1.00px;height:90.00px;background:#2a2a2a;"></div>
<div style="left:450.97px;top:692.80px;width:1.00px;height:90.00px;background:#2d2d2d;"></div>
<div style="left:473.83px;top:692.80px;width:1.00px;height:90.00px;background:#2a2a2a;"></div>
<div style="left:496.69px;top:692.80px;width:1.00px;height:90.00px;background:#2d2d2d;"></div>
<div style="left:519.55px;top:692.80px;width:1.00px;height:90.00px;background:#2a2a2a;"></div>
<div style="left:542.41px;top:692.80px;width:1.00px;height:90.00px;background:#2d2d2d;"></div>
<div style="left:565.28px;top:692.80px;width:1.00px;height:90.00px;background:#2a2a2a;"></div>
<div style="left:588.14px;top:692.80px;width:1.00px;height:90.00px;background:#2d2d2d;"></div>
<div style="left:611.00px;top:692.80px;width:1.00px;height:90.00px;background:#2a2a2a;"></div>
<div style="left:633.86px;top:692.80px;width:1.00px;height:90.00px;background:#2d2d2d;"></div>
<div style="left:656.72px;top:692.80px;width:1.00px;height:90.00px;background:#2a2a2a;"></div>
<div style="left:679.58px;top:692.80px;width:1.00px;height:90.00px;background:#2d2d2d;"></div>
<div style="left:702.44px;top:692.80px;width:1.00px;height:90.00px;background:#2a2a2a;"></div>
<div style="left:725.30px;top:692.80px;width:1.00px;height:90.00px;background:#2d2d2d;"></div>
<div style="left:748.16px;top:692.80px;width:1.00px;height:90.00px;background:#2a2a2a;"></div>
<div style="left:771.02px;top:692.80px;width:1.00px;height:90.00px;background:#2d2d2d;"></div>
<div style="left:793.89px;top:692.80px;width:1.00px;height:90.00px;background:#2a2a2a;"></div>
<div style="left:816.75px;top:692.80px;width:1.00px;height:90.00px;background:#2d2d2d;"></div>
<div style="left:839.61px;top:692.80px;width:1.00px;height:90.00px;background:#2a2a2a;"></div>
<div style="left:862.47px;top:692.80px;width:1.00px;height:90.00px;background:#2d2d2d;"></div>
<div style="left:885.33px;top:692.80px;width:1.00px;height:90.00px;background:#2a2a2a;"></div>
<div style="left:908.19px;top:692.80px;width:1.00px;height:90.00px;background:#2d2d2d;"></div>
<div style="left:931.05px;top:692.80px;width:1.00px;height:90.00px;background:#2a2a2a;"></div>
<div style="left:953.91px;top:692.80px;width:1.00px;height:90.00px;background:#2d2d2d;"></div>
<div style="left:976.77px;top:692.80px;width:1.00px;height:90.00px;background:#2a2a2a;"></div>
<div style="left:999.63px;top:692.80px;width:1.00px;height:90.00px;background:#2d2d2d;"></div>
<div style="left:1022.50px;top:692.80px;width:1.00px;height:90.00px;background:#2a2a2a;"></div>
<div style="left:1045.36px;top:692.80px;width:1.00px;height:90.00px;background:#2d2d2d;"></div>
<div style="left:1068.22px;top:692.80px;width:1.00px;height:90.00px;background:#2a2a2a;"></div>
<div style="left:1091.08px;top:692.80px;width:1.00px;height:90.00px;background:#2d2d2d;"></div>
<div style="left:1113.94px;top:692.80px;width:1.00px;height:90.00px;background:#2a2a2a;"></div>
<div style="left:16.61px;top:786.00px;width:1.00px;height:29.30px;background:#2a2a2a;"></div>
<div style="left:39.47px;top:786.00px;width:1.00px;height:29.30px;background:#2d2d2d;"></div>
<div style="left:62.33px;top:786.00px;width:1.00px;height:29.30px;background:#2a2a2a;"></div>
<div style="left:85.19px;top:786.00px;width:1.00px;height:29.30px;background:#2d2d2d;"></div>
<div style="left:108.06px;top:786.00px;width:1.00px;height:29.30px;background:#2a2a2a;"></div>
<div style="left:130.92px;top:786.00px;width:1.00px;height:29.30px;background:#2d2d2d;"></div>
<div style="left:153.78px;top:786.00px;width:1.00px;height:29.30px;background:#2a2a2a;"></div>
<div style="left:176.64px;top:786.00px;width:1.00px;height:29.30px;background:#2d2d2d;"></div>
<div style="left:199.50px;top:786.00px;width:1.00px;height:29.30px;background:#2a2a2a;"></div>
<div style="left:222.36px;top:786.00px;width:1.00px;height:29.30px;background:#2d2d2d;"></div>
<div style="left:245.22px;top:786.00px;width:1.00px;height:29.30px;background:#2a2a2a;"></div>
<div style="left:268.08px;top:786.00px;width:1.00px;height:29.30px;background:#2d2d2d;"></div>
<div style="left:290.94px;top:786.00px;width:1.00px;height:29.30px;background:#2a2a2a;"></div>
<div style="left:313.81px;top:786.00px;width:1.00px;height:29.30px;background:#2d2d2d;"></div>
<div style="left:336.67px;top:786.00px;width:1.00px;height:29.30px;background:#2a2a2a;"></div>
<div style="left:359.53px;top:786.00px;width:1.00px;height:29.30px;background:#2d2d2d;"></div>
<div style="left:382.39px;top:786.00px;width:1.00px;height:29.30px;background:#2a2a2a;"></div>
<div style="left:405.25px;top:786.00px;width:1.00px;height:29.30px;background:#2d2d2d;"></div>
<div style="left:428.11px;top:786.00px;width:1.00px;height:29.30px;background:#2a2a2a;"></div>
<div style="left:450.97px;top:786.00px;width:1.00px;height:29.30px;background:#2d2d2d;"></div>
<div style="left:473.83px;top:786.00px;width:1.00px;height:29.30px;background:#2a2a2a;"></div>
<div style="left:496.69px;top:786.00px;width:1.00px;height:29.30px;background:#2d2d2d;"></div>
<div style="left:519.55px;top:786.00px;width:1.00px;height:29.30px;background:#2a2a2a;"></div>
<div style="left:542.41px;top:786.00px;width:1.00px;height:29.30px;background:#2d2d2d;"></div>
<div style="left:565.28px;top:786.00px;width:1.00px;height:29.30px;background:#2a2a2a;"></div>
<div style="left:588.14px;top:786.00px;width:1.00px;height:29.30px;background:#2d2d2d;"></div>
<div style="left:611.00px;top:786.00px;width:1.00px;height:29.30px;background:#2a2a2a;"></div>
<div style="left:633.86px;top:786.00px;width:1.00px;height:29.30px;background:#2d2d2d;"></div>
<div style="left:656.72px;top:786.00px;width:1.00px;height:29.30px;background:#2a2a2a;"></div>
<div style="left:679.58px;top:786.00px;width:1.00px;height:29.30px;background:#2d2d2d;"></div>
<div style="left:702.44px;top:786.00px;width:1.00px;height:29.30px;background:#2a2a2a;"></div>
<div style="left:725.30px;top:786.00px;width:1.00px;height:29.30px;background:#2d2d2d;"></div>
<div style="left:748.16px;top:786.00px;width:1.00px;height:29.30px;background:#2a2a2a;"></div>
<div style="left:771.02px;top:786.00px;width:1.00px;height:29.30px;background:#2d2d2d;"></div>
<div style="left:793.89px;top:786.00px;width:1.00px;height:29.30px;background:#2a2a2a;"></div>
<div style="left:816.75px;top:786.00px;width:1.00px;height:29.30px;background:#2d2d2d;"></div>
<div style="left:839.61px;top:786.00px;width:1.00px;height:29.30px;background:#2a2a2a;"></div>
<div style="left:862.47px;top:786.00px;width:1.00px;height:29.30px;background:#2d2d2d;"></div>
<div style="left:885.33px;top:786.00px;width:1.00px;height:29.30px;background:#2a2a2a;"></div>
<div style="left:908.19px;top:786.00px;width:1.00px;height:29.30px;background:#2d2d2d;"></div>
<div style="left:931.05px;top:786.00px;width:1.00px;height:29.30px;background:#2a2a2a;"></div>
<div style="left:953.91px;top:786.00px;width:1.00px;height:29.30px;background:#2d2d2d;"></div>
<div style="left:976.77px;top:786.00px;width:1.00px;height:29.30px;background:#2a2a2a;"></div>
<div style="left:999.63px;top:786.00px;width:1.00px;height:29.30px;background:#2d2d2d;"></div>
<div style="left:1022.50px;top:786.00px;width:1.00px;height:29.30px;background:#2a2a2a;"></div>
<div style="left:1045.36px;top:786.00px;width:1.00px;height:29.30px;background:#2d2d2d;"></div>
<div style="left:1068.22px;top:786.00px;width:1.00px;height:29.30px;background:#2a2a2a;"></div>
<div style="left:1091.08px;top:786.00px;width:1.00px;height:29.30px;background:#2d2d2d;"></div>
<div style="left:1113.94px;top:786.00px;width:1.00px;height:29.30px;background:#2a2a2a;"></div>
<div style="left:16.61px;top:819.00px;width:1.00px;height:29.00px;background:#2a2a2a;"></div>
<div style="left:39.47px;top:819.00px;width:1.00px;height:29.00px;background:#2d2d2d;"></div>
<div style="left:62.33px;top:819.00px;width:1.00px;height:29.00px;background:#2a2a2a;"></div>
<div style="left:85.19px;top:819.00px;width:1.00px;height:29.00px;background:#2d2d2d;"></div>
<div style="left:108.06px;top:819.00px;width:1.00px;height:29.00px;background:#2a2a2a;"></div>
<div style="left:130.92px;top:819.00px;width:1.00px;height:29.00px;background:#2d2d2d;"></div>
<div style="left:153.78px;top:819.00px;width:1.00px;height:29.00px;background:#2a2a2a;"></div>
<div style="left:176.64px;top:819.00px;width:1.00px;height:29.00px;background:#2d2d2d;"></div>
<div style="left:199.50px;top:819.00px;width:1.00px;height:29.00px;background:#2a2a2a;"></div>
<div style="left:222.36px;top:819.00px;width:1.00px;height:29.00px;background:#2d2d2d;"></div>
<div style="left:245.22px;top:819.00px;width:1.00px;height:29.00px;background:#2a2a2a;"></div>
<div style="left:268.08px;top:819.00px;width:1.00px;height:29.00px;background:#2d2d2d;"></div>
<div style="left:290.94px;top:819.00px;width:1.00px;height:29.00px;background:#2a2a2a;"></div>
<div style="left:313.81px;top:819.00px;width:1.00px;height:29.00px;background:#2d2d2d;"></div>
<div style="left:336.67px;top:819.00px;width:1.00px;height:29.00px;background:#2a2a2a;"></div>
<div style="left:359.53px;top:819.00px;width:1.00px;height:29.00px;background:#2d2d2d;"></div>
<div style="left:382.39px;top:819.00px;width:1.00px;height:29.00px;background:#2a2a2a;"></div>
<div style="left:405.25px;top:819.00px;width:1.00px;height:29.00px;background:#2d2d2d;"></div>
<div style="left:428.11px;top:819.00px;width:1.00px;height:29.00px;background:#2a2a2a;"></div>
<div style="left:450.97px;top:819.00px;width:1.00px;height:29.00px;background:#2d2d2d;"></div>
<div style="left:473.83px;top:819.00px;width:1.00px;height:29.00px;background:#2a2a2a;"></div>
<div style="left:496.69px;top:819.00px;width:1.00px;height:29.00px;background:#2d2d2d;"></div>
<div style="left:519.55px;top:819.00px;width:1.00px;height:29.00px;background:#2a2a2a;"></div>
<div style="left:542.41px;top:819.00px;width:1.00px;height:29.00px;background:#2d2d2d;"></div>
<div style="left:565.28px;top:819.00px;width:1.00px;height:29.00px;background:#2a2a2a;"></div>
<div style="left:588.14px;top:819.00px;width:1.00px;height:29.00px;background:#2d2d2d;"></div>
<div style="left:611.00px;top:819.00px;width:1.00px;height:29.00px;background:#2a2a2a;"></div>
<div style="left:633.86px;top:819.00px;width:1.00px;height:29.00px;background:#2d2d2d;"></div>
<div style="left:656.72px;top:819.00px;width:1.00px;height:29.00px;background:#2a2a2a;"></div>
<div style="left:679.58px;top:819.00px;width:1.00px;height:29.00px;background:#2d2d2d;"></div>
<div style="left:702.44px;top:819.00px;width:1.00px;height:29.00px;background:#2a2a2a;"></div>
<div style="left:725.30px;top:819.00px;width:1.00px;height:29.00px;background:#2d2d2d;"></div>
<div style="left:748.16px;top:819.00px;width:1.00px;height:29.00px;background:#2a2a2a;"></div>
<div style="left:771.02px;top:819.00px;width:1.00px;height:29.00px;background:#2d2d2d;"></div>
<div style="left:793.89px;top:819.00px;width:1.00px;height:29.00px;background:#2a2a2a;"></div>
<div style="left:816.75px;top:819.00px;width:1.00px;height:29.00px;background:#2d2d2d;"></div>
<div style="left:839.61px;top:819.00px;width:1.00px;height:29.00px;background:#2a2a2a;"></div>
<div style="left:862.47px;top:819.00px;width:1.00px;height:29.00px;background:#2d2d2d;"></div>
<div style="left:885.33px;top:819.00px;width:1.00px;height:29.00px;background:#2a2a2a;"></div>
<div style="left:908.19px;top:819.00px;width:1.00px;height:29.00px;background:#2d2d2d;"></div>
<div style="left:931.05px;top:819.00px;width:1.00px;height:29.00px;background:#2a2a2a;"></div>
<div style="left:953.91px;top:819.00px;width:1.00px;height:29.00px;background:#2d2d2d;"></div>
<div style="left:976.77px;top:819.00px;width:1.00px;height:29.00px;background:#2a2a2a;"></div>
<div style="left:999.63px;top:819.00px;width:1.00px;height:29.00px;background:#2d2d2d;"></div>
<div style="left:1022.50px;top:819.00px;width:1.00px;height:29.00px;background:#2a2a2a;"></div>
<div style="left:1045.36px;top:819.00px;width:1.00px;height:29.00px;background:#2d2d2d;"></div>
<div style="left:1068.22px;top:819.00px;width:1.00px;height:29.00px;background:#2a2a2a;"></div>
<div style="left:1091.08px;top:819.00px;width:1.00px;height:29.00px;background:#2d2d2d;"></div>
<div style="left:1113.94px;top:819.00px;width:1.00px;height:29.00px;background:#2a2a2a;"></div>
<div style="left:16.61px;top:852.00px;width:1.00px;height:29.30px;background:#2a2a2a;"></div>
<div style="left:39.47px;top:852.00px;width:1.00px;height:29.30px;background:#2d2d2d;"></div>
<div style="left:62.33px;top:852.00px;width:1.00px;height:29.30px;background:#2a2a2a;"></div>
<div style="left:85.19px;top:852.00px;width:1.00px;height:29.30px;background:#2d2d2d;"></div>
<div style="left:108.06px;top:852.00px;width:1.00px;height:29.30px;background:#2a2a2a;"></div>
<div style="left:130.92px;top:852.00px;width:1.00px;height:29.30px;background:#2d2d2d;"></div>
<div style="left:153.78px;top:852.00px;width:1.00px;height:29.30px;background:#2a2a2a;"></div>
<div style="left:176.64px;top:852.00px;width:1.00px;height:29.30px;background:#2d2d2d;"></div>
<div style="left:199.50px;top:852.00px;width:1.00px;height:29.30px;background:#2a2a2a;"></div>
<div style="left:222.36px;top:852.00px;width:1.00px;height:29.30px;background:#2d2d2d;"></div>
<div style="left:245.22px;top:852.00px;width:1.00px;height:29.30px;background:#2a2a2a;"></div>
<div style="left:268.08px;top:852.00px;width:1.00px;height:29.30px;background:#2d2d2d;"></div>
<div style="left:290.94px;top:852.00px;width:1.00px;height:29.30px;background:#2a2a2a;"></div>
<div style="left:313.81px;top:852.00px;width:1.00px;height:29.30px;background:#2d2d2d;"></div>
<div style="left:336.67px;top:852.00px;width:1.00px;height:29.30px;background:#2a2a2a;"></div>
<div style="left:359.53px;top:852.00px;width:1.00px;height:29.30px;background:#2d2d2d;"></div>
<div style="left:382.39px;top:852.00px;width:1.00px;height:29.30px;background:#2a2a2a;"></div>
<div style="left:405.25px;top:852.00px;width:1.00px;height:29.30px;background:#2d2d2d;"></div>
<div style="left:428.11px;top:852.00px;width:1.00px;height:29.30px;background:#2a2a2a;"></div>
<div style="left:450.97px;top:852.00px;width:1.00px;height:29.30px;background:#2d2d2d;"></div>
<div style="left:473.83px;top:852.00px;width:1.00px;height:29.30px;background:#2a2a2a;"></div>
<div style="left:496.69px;top:852.00px;width:1.00px;height:29.30px;background:#2d2d2d;"></div>
<div style="left:519.55px;top:852.00px;width:1.00px;height:29.30px;background:#2a2a2a;"></div>
<div style="left:542.41px;top:852.00px;width:1.00px;height:29.30px;background:#2d2d2d;"></div>
<div style="left:565.28px;top:852.00px;width:1.00px;height:29.30px;background:#2a2a2a;"></div>
<div style="left:588.14px;top:852.00px;width:1.00px;height:29.30px;background:#2d2d2d;"></div>
<div style="left:611.00px;top:852.00px;width:1.00px;height:29.30px;background:#2a2a2a;"></div>
<div style="left:633.86px;top:852.00px;width:1.00px;height:29.30px;background:#2d2d2d;"></div>
<div style="left:656.72px;top:852.00px;width:1.00px;height:29.30px;background:#2a2a2a;"></div>
<div style="left:679.58px;top:852.00px;width:1.00px;height:29.30px;background:#2d2d2d;"></div>
<div style="left:702.44px;top:852.00px;width:1.00px;height:29.30px;background:#2a2a2a;"></div>
<div style="left:725.30px;top:852.00px;width:1.00px;height:29.30px;background:#2d2d2d;"></div>
<div style="left:748.16px;top:852.00px;width:1.00px;height:29.30px;background:#2a2a2a;"></div>
<div style="left:771.02px;top:852.00px;width:1.00px;height:29.30px;background:#2d2d2d;"></div>
<div style="left:793.89px;top:852.00px;width:1.00px;height:29.30px;background:#2a2a2a;"></div>
<div style="left:816.75px;top:852.00px;width:1.00px;height:29.30px;background:#2d2d2d;"></div>
<div style="left:839.61px;top:852.00px;width:1.00px;height:29.30px;background:#2a2a2a;"></div>
<div style="left:862.47px;top:852.00px;width:1.00px;height:29.30px;background:#2d2d2d;"></div>
<div style="left:885.33px;top:852.00px;width:1.00px;height:29.30px;background:#2a2a2a;"></div>
<div style="left:908.19px;top:852.00px;width:1.00px;height:29.30px;background:#2d2d2d;"></div>
<div style="left:931.05px;top:852.00px;width:1.00px;height:29.30px;background:#2a2a2a;"></div>
<div style="left:953.91px;top:852.00px;width:1.00px;height:29.30px;background:#2d2d2d;"></div>
<div style="left:976.77px;top:852.00px;width:1.00px;height:29.30px;background:#2a2a2a;"></div>
<div style="left:999.63px;top:852.00px;width:1.00px;height:29.30px;background:#2d2d2d;"></div>
<div style="left:1022.50px;top:852.00px;width:1.00px;height:29.30px;background:#2a2a2a;"></div>
<div style="left:1045.36px;top:852.00px;width:1.00px;height:29.30px;background:#2d2d2d;"></div>
<div style="left:1068.22px;top:852.00px;width:1.00px;height:29.30px;background:#2a2a2a;"></div>
<div style="left:1091.08px;top:852.00px;width:1.00px;height:29.30px;background:#2d2d2d;"></div>
<div style="left:1113.94px;top:852.00px;width:1.00px;height:29.30px;background:#2a2a2a;"></div>
<div style="left:16.61px;top:884.50px;width:1.00px;height:38.50px;background:#2a2a2a;"></div>
<div style="left:39.47px;top:884.50px;width:1.00px;height:38.50px;background:#2d2d2d;"></div>
<div style="left:62.33px;top:884.50px;width:1.00px;height:38.50px;background:#2a2a2a;"></div>
<div style="left:85.19px;top:884.50px;width:1.00px;height:38.50px;background:#2d2d2d;"></div>
<div style="left:108.06px;top:884.50px;width:1.00px;height:38.50px;background:#2a2a2a;"></div>
<div style="left:130.92px;top:884.50px;width:1.00px;height:38.50px;background:#2d2d2d;"></div>
<div style="left:153.78px;top:884.50px;width:1.00px;height:38.50px;background:#2a2a2a;"></div>
<div style="left:176.64px;top:884.50px;width:1.00px;height:38.50px;background:#2d2d2d;"></div>
<div style="left:199.50px;top:884.50px;width:1.00px;height:38.50px;background:#2a2a2a;"></div>
<div style="left:222.36px;top:884.50px;width:1.00px;height:38.50px;background:#2d2d2d;"></div>
<div style="left:245.22px;top:884.50px;width:1.00px;height:38.50px;background:#2a2a2a;"></div>
<div style="left:268.08px;top:884.50px;width:1.00px;height:38.50px;background:#2d2d2d;"></div>
<div style="left:290.94px;top:884.50px;width:1.00px;height:38.50px;background:#2a2a2a;"></div>
<div style="left:313.81px;top:884.50px;width:1.00px;height:38.50px;background:#2d2d2d;"></div>
<div style="left:336.67px;top:884.50px;width:1.00px;height:38.50px;background:#2a2a2a;"></div>
<div style="left:359.53px;top:884.50px;width:1.00px;height:38.50px;background:#2d2d2d;"></div>
<div style="left:382.39px;top:884.50px;width:1.00px;height:38.50px;background:#2a2a2a;"></div>
<div style="left:405.25px;top:884.50px;width:1.00px;height:38.50px;background:#2d2d2d;"></div>
<div style="left:428.11px;top:884.50px;width:1.00px;height:38.50px;background:#2a2a2a;"></div>
<div style="left:450.97px;top:884.50px;width:1.00px;height:38.50px;background:#2d2d2d;"></div>
<div style="left:473.83px;top:884.50px;width:1.00px;height:38.50px;background:#2a2a2a;"></div>
<div style="left:496.69px;top:884.50px;width:1.00px;height:38.50px;background:#2d2d2d;"></div>
<div style="left:519.55px;top:884.50px;width:1.00px;height:38.50px;background:#2a2a2a;"></div>
<div style="left:542.41px;top:884.50px;width:1.00px;height:38.50px;background:#2d2d2d;"></div>
<div style="left:565.28px;top:884.50px;width:1.00px;height:38.50px;background:#2a2a2a;"></div>
<div style="left:588.14px;top:884.50px;width:1.00px;height:38.50px;background:#2d2d2d;"></div>
<div style="left:611.00px;top:884.50px;width:1.00px;height:38.50px;background:#2a2a2a;"></div>
<div style="left:633.86px;top:884.50px;width:1.00px;height:38.50px;background:#2d2d2d;"></div>
<div style="left:656.72px;top:884.50px;width:1.00px;height:38.50px;background:#2a2a2a;"></div>
<div style="left:679.58px;top:884.50px;width:1.00px;height:38.50px;background:#2d2d2d;"></div>
<div style="left:702.44px;top:884.50px;width:1.00px;height:38.50px;background:#2a2a2a;"></div>
<div style="left:725.30px;top:884.50px;width:1.00px;height:38.50px;background:#2d2d2d;"></div>
<div style="left:748.16px;top:884.50px;width:1.00px;height:38.50px;background:#2a2a2a;"></div>
<div style="left:771.02px;top:884.50px;width:1.00px;height:38.50px;background:#2d2d2d;"></div>
<div style="left:793.89px;top:884.50px;width:1.00px;height:38.50px;background:#2a2a2a;"></div>
<div style="left:816.75px;top:884.50px;width:1.00px;height:38.50px;background:#2d2d2d;"></div>
<div style="left:839.61px;top:884.50px;width:1.00px;height:38.50px;background:#2a2a2a;"></div>
<div style="left:862.47px;top:884.50px;width:1.00px;height:38.50px;background:#2d2d2d;"></div>
<div style="left:885.33px;top:884.50px;width:1.00px;height:38.50px;background:#2a2a2a;"></div>
<div style="left:908.19px;top:884.50px;width:1.00px;height:38.50px;background:#2d2d2d;"></div>
<div style="left:931.05px;top:884.50px;width:1.00px;height:38.50px;background:#2a2a2a;"></div>
<div style="left:953.91px;top:884.50px;width:1.00px;height:38.50px;background:#2d2d2d;"></div>
<div style="left:976.77px;top:884.50px;width:1.00px;height:38.50px;background:#2a2a2a;"></div>
<div style="left:999.63px;top:884.50px;width:1.00px;height:38.50px;background:#2d2d2d;"></div>
<div style="left:1022.50px;top:884.50px;width:1.00px;height:38.50px;background:#2a2a2a;"></div>
<div style="left:1045.36px;top:884.50px;width:1.00px;height:38.50px;background:#2d2d2d;"></div>
<div style="left:1068.22px;top:884.50px;width:1.00px;height:38.50px;background:#2a2a2a;"></div>
<div style="left:1091.08px;top:884.50px;width:1.00px;height:38.50px;background:#2d2d2d;"></div>
<div style="left:1113.94px;top:884.50px;width:1.00px;height:38.50px;background:#2a2a2a;"></div>
<div style="left:16.61px;top:926.00px;width:1.00px;height:30.50px;background:#2a2a2a;"></div>
<div style="left:39.47px;top:926.00px;width:1.00px;height:30.50px;background:#2d2d2d;"></div>
<div style="left:62.33px;top:926.00px;width:1.00px;height:30.50px;background:#2a2a2a;"></div>
<div style="left:85.19px;top:926.00px;width:1.00px;height:30.50px;background:#2d2d2d;"></div>
<div style="left:108.06px;top:926.00px;width:1.00px;height:30.50px;background:#2a2a2a;"></div>
<div style="left:130.92px;top:926.00px;width:1.00px;height:30.50px;background:#2d2d2d;"></div>
<div style="left:153.78px;top:926.00px;width:1.00px;height:30.50px;background:#2a2a2a;"></div>
<div style="left:176.64px;top:926.00px;width:1.00px;height:30.50px;background:#2d2d2d;"></div>
<div style="left:199.50px;top:926.00px;width:1.00px;height:30.50px;background:#2a2a2a;"></div>
<div style="left:222.36px;top:926.00px;width:1.00px;height:30.50px;background:#2d2d2d;"></div>
<div style="left:245.22px;top:926.00px;width:1.00px;height:30.50px;background:#2a2a2a;"></div>
<div style="left:268.08px;top:926.00px;width:1.00px;height:30.50px;background:#2d2d2d;"></div>
<div style="left:290.94px;top:926.00px;width:1.00px;height:30.50px;background:#2a2a2a;"></div>
<div style="left:313.81px;top:926.00px;width:1.00px;height:30.50px;background:#2d2d2d;"></div>
<div style="left:336.67px;top:926.00px;width:1.00px;height:30.50px;background:#2a2a2a;"></div>
<div style="left:359.53px;top:926.00px;width:1.00px;height:30.50px;background:#2d2d2d;"></div>
<div style="left:382.39px;top:926.00px;width:1.00px;height:30.50px;background:#2a2a2a;"></div>
<div style="left:405.25px;top:926.00px;width:1.00px;height:30.50px;background:#2d2d2d;"></div>
<div style="left:428.11px;top:926.00px;width:1.00px;height:30.50px;background:#2a2a2a;"></div>
<div style="left:450.97px;top:926.00px;width:1.00px;height:30.50px;background:#2d2d2d;"></div>
<div style="left:473.83px;top:926.00px;width:1.00px;height:30.50px;background:#2a2a2a;"></div>
<div style="left:496.69px;top:926.00px;width:1.00px;height:30.50px;background:#2d2d2d;"></div>
<div style="left:519.55px;top:926.00px;width:1.00px;height:30.50px;background:#2a2a2a;"></div>
<div style="left:542.41px;top:926.00px;width:1.00px;height:30.50px;background:#2d2d2d;"></div>
<div style="left:565.28px;top:926.00px;width:1.00px;height:30.50px;background:#2a2a2a;"></div>
<div style="left:588.14px;top:926.00px;width:1.00px;height:30.50px;background:#2d2d2d;"></div>
<div style="left:611.00px;top:926.00px;width:1.00px;height:30.50px;background:#2a2a2a;"></div>
<div style="left:633.86px;top:926.00px;width:1.00px;height:30.50px;background:#2d2d2d;"></div>
<div style="left:656.72px;top:926.00px;width:1.00px;height:30.50px;background:#2a2a2a;"></div>
<div style="left:679.58px;top:926.00px;width:1.00px;height:30.50px;background:#2d2d2d;"></div>
<div style="left:702.44px;top:926.00px;width:1.00px;height:30.50px;background:#2a2a2a;"></div>
<div style="left:725.30px;top:926.00px;width:1.00px;height:30.50px;background:#2d2d2d;"></div>
<div style="left:748.16px;top:926.00px;width:1.00px;height:30.50px;background:#2a2a2a;"></div>
<div style="left:771.02px;top:926.00px;width:1.00px;height:30.50px;background:#2d2d2d;"></div>
<div style="left:793.89px;top:926.00px;width:1.00px;height:30.50px;background:#2a2a2a;"></div>
<div style="left:816.75px;top:926.00px;width:1.00px;height:30.50px;background:#2d2d2d;"></div>
<div style="left:839.61px;top:926.00px;width:1.00px;height:30.50px;background:#2a2a2a;"></div>
<div style="left:862.47px;top:926.00px;width:1.00px;height:30.50px;background:#2d2d2d;"></div>
<div style="left:885.33px;top:926.00px;width:1.00px;height:30.50px;background:#2a2a2a;"></div>
<div style="left:908.19px;top:926.00px;width:1.00px;height:30.50px;background:#2d2d2d;"></div>
<div style="left:931.05px;top:926.00px;width:1.00px;height:30.50px;background:#2a2a2a;"></div>
<div style="left:953.91px;top:926.00px;width:1.00px;height:30.50px;background:#2d2d2d;"></div>
<div style="left:976.77px;top:926.00px;width:1.00px;height:30.50px;background:#2a2a2a;"></div>
<div style="left:999.63px;top:926.00px;width:1.00px;height:30.50px;background:#2d2d2d;"></div>
<div style="left:1022.50px;top:926.00px;width:1.00px;height:30.50px;background:#2a2a2a;"></div>
<div style="left:1045.36px;top:926.00px;width:1.00px;height:30.50px;background:#2d2d2d;"></div>
<div style="left:1068.22px;top:926.00px;width:1.00px;height:30.50px;background:#2a2a2a;"></div>
<div style="left:1091.08px;top:926.00px;width:1.00px;height:30.50px;background:#2d2d2d;"></div>
<div style="left:1113.94px;top:926.00px;width:1.00px;height:30.50px;background:#2a2a2a;"></div>
<div style="left:-2.00px;top:155.50px;width:202.00px;height:90.50px;background:#98a7f5;"></div>
<div style="left:-2.00px;top:245.00px;width:202.00px;height:1.00px;background:#535b86;"></div>
<div style="left:-2.00px;top:183.60px;width:202.00px;height:1.20px;background:#6d78b0;"></div>
<div style="left:16.61px;top:184.20px;width:1.00px;height:60.80px;background:#828fd2;"></div>
<div style="left:39.47px;top:184.20px;width:1.00px;height:60.80px;background:#828fd2;"></div>
<div style="left:62.33px;top:184.20px;width:1.00px;height:60.80px;background:#828fd2;"></div>
<div style="left:85.19px;top:184.20px;width:1.00px;height:60.80px;background:#828fd2;"></div>
<div style="left:108.06px;top:184.20px;width:1.00px;height:60.80px;background:#828fd2;"></div>
<div style="left:130.92px;top:184.20px;width:1.00px;height:60.80px;background:#828fd2;"></div>
<div style="left:153.78px;top:184.20px;width:1.00px;height:60.80px;background:#828fd2;"></div>
<div style="left:176.64px;top:184.20px;width:1.00px;height:60.80px;background:#828fd2;"></div>
<svg style="position:absolute;left:0.00px;top:155.50px;" width="200.00" height="90.50" viewBox="0 0 200.00 90.50"><g fill="#1b1c2e"><rect x="4.9" y="59.3" width="2.4" height="3.0"/><rect x="10.6" y="59.3" width="3.0" height="3.0"/><rect x="16.3" y="59.3" width="2.4" height="3.0"/><rect x="16.3" y="80.0" width="2.8" height="3.0"/><rect x="22.0" y="59.3" width="3.0" height="3.0"/><rect x="22.0" y="73.0" width="2.8" height="3.2"/><rect x="24.9" y="52.0" width="1.8" height="3.0"/><rect x="27.9" y="52.0" width="2.8" height="3.0"/><rect x="27.7" y="59.3" width="3.0" height="3.0"/><rect x="30.6" y="73.0" width="2.8" height="3.2"/><rect x="33.5" y="59.3" width="2.4" height="3.0"/><rect x="39.2" y="59.3" width="3.0" height="3.0"/><rect x="44.9" y="59.3" width="2.4" height="3.0"/><rect x="44.9" y="73.0" width="2.8" height="3.2"/><rect x="50.6" y="59.3" width="3.0" height="3.0"/><rect x="50.6" y="73.0" width="2.8" height="3.2"/><rect x="56.3" y="59.3" width="3.0" height="3.0"/><rect x="62.0" y="59.3" width="3.0" height="3.0"/><rect x="62.0" y="80.0" width="2.8" height="3.0"/><rect x="67.7" y="59.3" width="2.4" height="3.0"/><rect x="67.7" y="73.0" width="2.8" height="3.2"/><rect x="70.6" y="52.0" width="1.8" height="3.0"/><rect x="73.6" y="52.0" width="2.8" height="3.0"/><rect x="73.5" y="59.3" width="3.0" height="3.0"/><rect x="76.3" y="73.0" width="2.8" height="3.2"/><rect x="79.2" y="59.3" width="2.4" height="3.0"/><rect x="79.2" y="80.0" width="2.8" height="3.0"/><rect x="84.9" y="59.3" width="2.4" height="3.0"/><rect x="87.8" y="80.0" width="2.8" height="3.0"/><rect x="90.6" y="59.3" width="3.0" height="3.0"/><rect x="90.6" y="73.0" width="2.8" height="3.2"/><rect x="96.3" y="59.3" width="2.4" height="3.0"/><rect x="96.3" y="73.0" width="2.8" height="3.2"/><rect x="102.0" y="59.3" width="2.4" height="3.0"/><rect x="107.8" y="59.3" width="3.0" height="3.0"/><rect x="107.8" y="80.0" width="2.8" height="3.0"/><rect x="113.5" y="59.3" width="2.4" height="3.0"/><rect x="116.3" y="52.0" width="1.8" height="3.0"/><rect x="119.3" y="52.0" width="2.8" height="3.0"/><rect x="119.2" y="59.3" width="3.0" height="3.0"/><rect x="122.0" y="73.0" width="2.8" height="3.2"/><rect x="124.9" y="59.3" width="2.4" height="3.0"/><rect x="130.6" y="59.3" width="3.0" height="3.0"/><rect x="133.5" y="80.0" width="2.8" height="3.0"/><rect x="136.3" y="59.3" width="3.0" height="3.0"/><rect x="136.3" y="73.0" width="2.8" height="3.2"/><rect x="142.0" y="59.3" width="3.0" height="3.0"/><rect x="147.8" y="59.3" width="3.0" height="3.0"/><rect x="153.5" y="59.3" width="3.0" height="3.0"/><rect x="159.2" y="59.3" width="3.0" height="3.0"/><rect x="159.2" y="73.0" width="2.8" height="3.2"/><rect x="162.1" y="52.0" width="1.8" height="3.0"/><rect x="165.1" y="52.0" width="2.8" height="3.0"/><rect x="164.9" y="59.3" width="3.0" height="3.0"/><rect x="170.6" y="59.3" width="3.0" height="3.0"/><rect x="170.6" y="80.0" width="2.8" height="3.0"/><rect x="176.3" y="59.3" width="2.4" height="3.0"/><rect x="179.2" y="80.0" width="2.8" height="3.0"/><rect x="182.1" y="59.3" width="3.0" height="3.0"/><rect x="182.1" y="73.0" width="2.8" height="3.2"/><rect x="187.8" y="59.3" width="2.4" height="3.0"/><rect x="187.8" y="73.0" width="2.8" height="3.2"/><rect x="193.5" y="59.3" width="3.0" height="3.0"/></g></svg>
<div style="left:200.00px;top:155.50px;width:365.80px;height:90.50px;background:#98a7f5;"></div>
<div style="left:200.00px;top:245.00px;width:365.80px;height:1.00px;background:#535b86;"></div>
<div style="left:200.00px;top:183.60px;width:365.80px;height:1.20px;background:#6d78b0;"></div>
<div style="left:222.36px;top:184.20px;width:1.00px;height:60.80px;background:#828fd2;"></div>
<div style="left:245.22px;top:184.20px;width:1.00px;height:60.80px;background:#828fd2;"></div>
<div style="left:268.08px;top:184.20px;width:1.00px;height:60.80px;background:#828fd2;"></div>
<div style="left:290.94px;top:184.20px;width:1.00px;height:60.80px;background:#828fd2;"></div>
<div style="left:313.81px;top:184.20px;width:1.00px;height:60.80px;background:#828fd2;"></div>
<div style="left:336.67px;top:184.20px;width:1.00px;height:60.80px;background:#828fd2;"></div>
<div style="left:359.53px;top:184.20px;width:1.00px;height:60.80px;background:#828fd2;"></div>
<div style="left:382.39px;top:184.20px;width:1.00px;height:60.80px;background:#828fd2;"></div>
<div style="left:405.25px;top:184.20px;width:1.00px;height:60.80px;background:#828fd2;"></div>
<div style="left:428.11px;top:184.20px;width:1.00px;height:60.80px;background:#828fd2;"></div>
<div style="left:450.97px;top:184.20px;width:1.00px;height:60.80px;background:#828fd2;"></div>
<div style="left:473.83px;top:184.20px;width:1.00px;height:60.80px;background:#828fd2;"></div>
<div style="left:496.69px;top:184.20px;width:1.00px;height:60.80px;background:#828fd2;"></div>
<div style="left:519.55px;top:184.20px;width:1.00px;height:60.80px;background:#828fd2;"></div>
<div style="left:542.41px;top:184.20px;width:1.00px;height:60.80px;background:#828fd2;"></div>
<div style="left:199.50px;top:155.50px;width:1.10px;height:90.50px;background:#444b6e;"></div>
<svg style="position:absolute;left:200.00px;top:155.50px;" width="365.80" height="90.50" viewBox="0 0 365.80 90.50"><g fill="#1b1c2e"><rect x="4.9" y="59.3" width="3.0" height="3.0"/><rect x="7.8" y="52.0" width="1.8" height="3.0"/><rect x="10.8" y="52.0" width="2.8" height="3.0"/><rect x="10.6" y="59.3" width="2.4" height="3.0"/><rect x="13.5" y="73.0" width="2.8" height="3.2"/><rect x="16.3" y="59.3" width="3.0" height="3.0"/><rect x="22.1" y="59.3" width="3.0" height="3.0"/><rect x="24.9" y="80.0" width="2.8" height="3.0"/><rect x="27.8" y="59.3" width="3.0" height="3.0"/><rect x="27.8" y="73.0" width="2.8" height="3.2"/><rect x="33.5" y="59.3" width="3.0" height="3.0"/><rect x="33.5" y="73.0" width="2.8" height="3.2"/><rect x="39.2" y="59.3" width="3.0" height="3.0"/><rect x="44.9" y="59.3" width="3.0" height="3.0"/><rect x="50.6" y="59.3" width="3.0" height="3.0"/><rect x="53.5" y="52.0" width="1.8" height="3.0"/><rect x="56.5" y="52.0" width="2.8" height="3.0"/><rect x="56.4" y="59.3" width="3.0" height="3.0"/><rect x="59.2" y="73.0" width="2.8" height="3.2"/><rect x="62.1" y="59.3" width="2.4" height="3.0"/><rect x="62.1" y="80.0" width="2.8" height="3.0"/><rect x="67.8" y="59.3" width="2.4" height="3.0"/><rect x="70.6" y="80.0" width="2.8" height="3.0"/><rect x="73.5" y="59.3" width="3.0" height="3.0"/><rect x="73.5" y="73.0" width="2.8" height="3.2"/><rect x="79.2" y="59.3" width="3.0" height="3.0"/><rect x="79.2" y="73.0" width="2.8" height="3.2"/><rect x="84.9" y="59.3" width="3.0" height="3.0"/><rect x="90.6" y="59.3" width="2.4" height="3.0"/><rect x="90.6" y="80.0" width="2.8" height="3.0"/><rect x="96.4" y="59.3" width="3.0" height="3.0"/><rect x="96.4" y="73.0" width="2.8" height="3.2"/><rect x="99.2" y="52.0" width="1.8" height="3.0"/><rect x="102.2" y="52.0" width="2.8" height="3.0"/><rect x="102.1" y="59.3" width="3.0" height="3.0"/><rect x="107.8" y="59.3" width="3.0" height="3.0"/><rect x="107.8" y="80.0" width="2.8" height="3.0"/><rect x="113.5" y="59.3" width="3.0" height="3.0"/><rect x="119.2" y="59.3" width="3.0" height="3.0"/><rect x="124.9" y="59.3" width="3.0" height="3.0"/><rect x="130.7" y="59.3" width="3.0" height="3.0"/><rect x="136.4" y="59.3" width="3.0" height="3.0"/><rect x="142.1" y="59.3" width="2.4" height="3.0"/><rect x="144.9" y="52.0" width="1.8" height="3.0"/><rect x="147.9" y="52.0" width="2.8" height="3.0"/><rect x="147.8" y="59.3" width="3.0" height="3.0"/><rect x="150.7" y="73.0" width="2.8" height="3.2"/><rect x="153.5" y="59.3" width="3.0" height="3.0"/><rect x="153.5" y="80.0" width="2.8" height="3.0"/><rect x="159.2" y="59.3" width="3.0" height="3.0"/><rect x="162.1" y="80.0" width="2.8" height="3.0"/><rect x="164.9" y="59.3" width="3.0" height="3.0"/><rect x="164.9" y="73.0" width="2.8" height="3.2"/><rect x="170.7" y="59.3" width="3.0" height="3.0"/><rect x="176.4" y="59.3" width="3.0" height="3.0"/><rect x="182.1" y="59.3" width="3.0" height="3.0"/><rect x="187.8" y="59.3" width="3.0" height="3.0"/><rect x="187.8" y="73.0" width="2.8" height="3.2"/><rect x="190.7" y="52.0" width="1.8" height="3.0"/><rect x="193.7" y="52.0" width="2.8" height="3.0"/><rect x="193.5" y="59.3" width="2.4" height="3.0"/><rect x="196.4" y="73.0" width="2.8" height="3.2"/><rect x="199.2" y="59.3" width="3.0" height="3.0"/><rect x="199.2" y="80.0" width="2.8" height="3.0"/><rect x="204.9" y="59.3" width="3.0" height="3.0"/><rect x="207.8" y="80.0" width="2.8" height="3.0"/><rect x="210.7" y="59.3" width="3.0" height="3.0"/><rect x="210.7" y="73.0" width="2.8" height="3.2"/><rect x="216.4" y="59.3" width="3.0" height="3.0"/><rect x="216.4" y="73.0" width="2.8" height="3.2"/><rect x="222.1" y="59.3" width="3.0" height="3.0"/><rect x="227.8" y="59.3" width="3.0" height="3.0"/><rect x="233.5" y="59.3" width="3.0" height="3.0"/><rect x="233.5" y="73.0" width="2.8" height="3.2"/><rect x="236.4" y="52.0" width="1.8" height="3.0"/><rect x="239.4" y="52.0" width="2.8" height="3.0"/><rect x="239.2" y="59.3" width="2.4" height="3.0"/><rect x="242.1" y="73.0" width="2.8" height="3.2"/><rect x="245.0" y="59.3" width="3.0" height="3.0"/><rect x="250.7" y="59.3" width="2.4" height="3.0"/><rect x="256.4" y="59.3" width="3.0" height="3.0"/><rect x="262.1" y="59.3" width="2.4" height="3.0"/><rect x="262.1" y="73.0" width="2.8" height="3.2"/><rect x="267.8" y="59.3" width="2.4" height="3.0"/><rect x="273.5" y="59.3" width="3.0" height="3.0"/><rect x="273.5" y="80.0" width="2.8" height="3.0"/><rect x="279.2" y="59.3" width="2.4" height="3.0"/><rect x="282.1" y="52.0" width="1.8" height="3.0"/><rect x="285.1" y="52.0" width="2.8" height="3.0"/><rect x="285.0" y="59.3" width="2.4" height="3.0"/><rect x="287.8" y="73.0" width="2.8" height="3.2"/><rect x="290.7" y="59.3" width="3.0" height="3.0"/><rect x="290.7" y="80.0" width="2.8" height="3.0"/><rect x="296.4" y="59.3" width="2.4" height="3.0"/><rect x="302.1" y="59.3" width="3.0" height="3.0"/><rect x="302.1" y="73.0" width="2.8" height="3.2"/><rect x="307.8" y="59.3" width="2.4" height="3.0"/><rect x="307.8" y="73.0" width="2.8" height="3.2"/><rect x="313.5" y="59.3" width="2.4" height="3.0"/><rect x="319.3" y="59.3" width="3.0" height="3.0"/><rect x="319.3" y="80.0" width="2.8" height="3.0"/><rect x="325.0" y="59.3" width="3.0" height="3.0"/><rect x="325.0" y="73.0" width="2.8" height="3.2"/><rect x="327.8" y="52.0" width="1.8" height="3.0"/><rect x="330.8" y="52.0" width="2.8" height="3.0"/><rect x="330.7" y="59.3" width="3.0" height="3.0"/><rect x="333.5" y="73.0" width="2.8" height="3.2"/><rect x="336.4" y="59.3" width="2.4" height="3.0"/><rect x="342.1" y="59.3" width="2.4" height="3.0"/><rect x="345.0" y="80.0" width="2.8" height="3.0"/><rect x="347.8" y="59.3" width="3.0" height="3.0"/><rect x="347.8" y="73.0" width="2.8" height="3.2"/><rect x="353.5" y="59.3" width="2.4" height="3.0"/><rect x="359.3" y="59.3" width="2.4" height="3.0"/></g></svg>
<div style="left:932.80px;top:155.50px;width:193.70px;height:90.50px;background:#98a7f5;"></div>
<div style="left:932.80px;top:245.00px;width:193.70px;height:1.00px;background:#535b86;"></div>
<div style="left:932.80px;top:183.60px;width:193.70px;height:1.20px;background:#6d78b0;"></div>
<div style="left:953.91px;top:184.20px;width:1.00px;height:60.80px;background:#828fd2;"></div>
<div style="left:976.77px;top:184.20px;width:1.00px;height:60.80px;background:#828fd2;"></div>
<div style="left:999.63px;top:184.20px;width:1.00px;height:60.80px;background:#828fd2;"></div>
<div style="left:1022.50px;top:184.20px;width:1.00px;height:60.80px;background:#828fd2;"></div>
<div style="left:1045.36px;top:184.20px;width:1.00px;height:60.80px;background:#828fd2;"></div>
<div style="left:1068.22px;top:184.20px;width:1.00px;height:60.80px;background:#828fd2;"></div>
<div style="left:1091.08px;top:184.20px;width:1.00px;height:60.80px;background:#828fd2;"></div>
<div style="left:1113.94px;top:184.20px;width:1.00px;height:60.80px;background:#828fd2;"></div>
<div style="left:932.30px;top:155.50px;width:1.10px;height:90.50px;background:#444b6e;"></div>
<svg style="position:absolute;left:977.00px;top:155.50px;" width="149.50" height="90.50" viewBox="0 0 149.50 90.50"><g fill="#1b1c2e"><rect x="0.5" y="59.3" width="2.4" height="3.0"/><rect x="0.5" y="80.0" width="2.8" height="3.0"/><rect x="6.2" y="59.3" width="3.0" height="3.0"/><rect x="6.2" y="73.0" width="2.8" height="3.2"/><rect x="9.0" y="52.0" width="1.8" height="3.0"/><rect x="12.0" y="52.0" width="2.8" height="3.0"/><rect x="11.9" y="59.3" width="3.0" height="3.0"/><rect x="14.8" y="73.0" width="2.8" height="3.2"/><rect x="17.6" y="59.3" width="2.4" height="3.0"/><rect x="23.3" y="59.3" width="2.4" height="3.0"/><rect x="26.2" y="80.0" width="2.8" height="3.0"/><rect x="29.1" y="59.3" width="3.0" height="3.0"/><rect x="29.1" y="73.0" width="2.8" height="3.2"/><rect x="34.8" y="59.3" width="3.0" height="3.0"/><rect x="34.8" y="73.0" width="2.8" height="3.2"/><rect x="40.5" y="59.3" width="3.0" height="3.0"/><rect x="46.2" y="59.3" width="2.4" height="3.0"/><rect x="51.9" y="59.3" width="3.0" height="3.0"/><rect x="51.9" y="73.0" width="2.8" height="3.2"/><rect x="54.8" y="52.0" width="1.8" height="3.0"/><rect x="57.8" y="52.0" width="2.8" height="3.0"/><rect x="57.6" y="59.3" width="3.0" height="3.0"/><rect x="60.5" y="73.0" width="2.8" height="3.2"/><rect x="63.3" y="59.3" width="2.4" height="3.0"/><rect x="69.1" y="59.3" width="3.0" height="3.0"/><rect x="71.9" y="80.0" width="2.8" height="3.0"/><rect x="74.8" y="59.3" width="2.4" height="3.0"/><rect x="80.5" y="59.3" width="3.0" height="3.0"/><rect x="80.5" y="73.0" width="2.8" height="3.2"/><rect x="86.2" y="59.3" width="3.0" height="3.0"/><rect x="91.9" y="59.3" width="3.0" height="3.0"/><rect x="97.6" y="59.3" width="3.0" height="3.0"/><rect x="100.5" y="52.0" width="1.8" height="3.0"/><rect x="103.5" y="52.0" width="2.8" height="3.0"/><rect x="103.3" y="59.3" width="3.0" height="3.0"/><rect x="109.1" y="59.3" width="3.0" height="3.0"/><rect x="109.1" y="80.0" width="2.8" height="3.0"/><rect x="114.8" y="59.3" width="2.4" height="3.0"/><rect x="117.6" y="80.0" width="2.8" height="3.0"/><rect x="120.5" y="59.3" width="3.0" height="3.0"/><rect x="120.5" y="73.0" width="2.8" height="3.2"/><rect x="126.2" y="59.3" width="3.0" height="3.0"/><rect x="126.2" y="73.0" width="2.8" height="3.2"/><rect x="131.9" y="59.3" width="3.0" height="3.0"/><rect x="137.6" y="59.3" width="3.0" height="3.0"/><rect x="137.6" y="80.0" width="2.8" height="3.0"/><rect x="143.4" y="59.3" width="3.0" height="3.0"/><rect x="143.4" y="73.0" width="2.8" height="3.2"/><rect x="146.2" y="52.0" width="1.8" height="3.0"/><rect x="149.2" y="52.0" width="2.8" height="3.0"/></g></svg>
<svg style="position:absolute;left:932.80px;top:155.50px;" width="193.70" height="90.50" viewBox="0 0 193.70 90.50"><g fill="#1b1c2e"><rect x="51" y="48.5" width="21" height="3"/><rect x="137" y="48.5" width="56" height="3"/><rect x="17" y="52" width="2" height="3"/><rect x="20" y="52" width="3" height="3"/><rect x="39" y="66" width="2.5" height="3"/><rect x="90" y="38" width="3" height="3"/></g></svg>
<div style="left:-2.00px;top:249.50px;width:18.20px;height:90.20px;background:#98a7f5;"></div>
<div style="left:-2.00px;top:338.70px;width:18.20px;height:1.00px;background:#535b86;"></div>
<div style="left:-2.00px;top:276.40px;width:18.20px;height:1.20px;background:#6d78b0;"></div>
<svg style="position:absolute;left:0.00px;top:277.00px;" width="16.20" height="61.70" viewBox="0 0 16.20 61.70"><rect x="11.2" y="0" width="5" height="61.69999999999999" fill="rgba(40,50,110,0.18)"/><rect x="0" y="0" width="4" height="61.69999999999999" fill="rgba(40,50,110,0.10)"/><path d="M0.0,9.0 L0.5,8.5 L1.0,8.4 L1.5,8.7 L2.0,8.4 L2.5,9.5 L3.0,9.7 L3.5,10.5 L4.0,10.5 L4.5,10.5 L5.0,11.1 L5.5,11.0 L6.0,11.4 L6.5,11.8 L7.0,11.9 L7.5,12.4 L8.0,13.0 L8.5,13.6 L9.0,13.5 L9.5,14.1 L10.0,13.9 L10.5,12.5 L11.0,10.3 L11.5,8.9 L12.0,8.1 L12.5,9.0 L13.0,8.3 L13.5,8.6 L14.0,9.4 L14.5,9.8 L15.0,10.8 L15.0,20.7 L14.5,21.8 L14.0,21.9 L13.5,22.9 L13.0,23.1 L12.5,22.6 L12.0,23.0 L11.5,22.6 L11.0,21.1 L10.5,19.0 L10.0,17.5 L9.5,17.3 L9.0,17.7 L8.5,17.8 L8.0,18.4 L7.5,18.9 L7.0,19.4 L6.5,19.6 L6.0,20.1 L5.5,20.6 L5.0,20.5 L4.5,20.8 L4.0,20.6 L3.5,21.2 L3.0,21.5 L2.5,22.0 L2.0,22.7 L1.5,22.7 L1.0,22.9 L0.5,23.0 L0.0,22.3Z" fill="#1d1d24"/><path d="M0.0,40.5 L0.5,40.5 L1.0,40.5 L1.5,40.0 L2.0,40.2 L2.5,40.6 L3.0,41.5 L3.5,41.9 L4.0,42.7 L4.5,42.4 L5.0,42.4 L5.5,42.5 L6.0,42.7 L6.5,43.3 L7.0,43.1 L7.5,44.4 L8.0,44.9 L8.5,45.2 L9.0,45.5 L9.5,45.8 L10.0,45.4 L10.5,43.8 L11.0,42.4 L11.5,40.0 L12.0,39.8 L12.5,40.3 L13.0,39.9 L13.5,40.8 L14.0,40.9 L14.5,41.2 L15.0,42.1 L15.0,52.3 L14.5,53.4 L14.0,53.7 L13.5,54.0 L13.0,54.6 L12.5,54.4 L12.0,54.6 L11.5,54.2 L11.0,52.5 L10.5,50.8 L10.0,49.2 L9.5,48.7 L9.0,49.2 L8.5,49.5 L8.0,49.7 L7.5,50.3 L7.0,51.3 L6.5,51.5 L6.0,51.7 L5.5,52.4 L5.0,52.2 L4.5,52.0 L4.0,51.7 L3.5,52.5 L3.0,53.1 L2.5,53.9 L2.0,54.4 L1.5,54.3 L1.0,54.2 L0.5,54.4 L0.0,54.0Z" fill="#1d1d24"/></svg>
<div style="left:16.20px;top:249.50px;width:183.40px;height:90.20px;background:#98a7f5;"></div>
<div style="left:16.20px;top:338.70px;width:183.40px;height:1.00px;background:#535b86;"></div>
<div style="left:16.20px;top:276.40px;width:183.40px;height:1.20px;background:#6d78b0;"></div>
<div style="left:39.47px;top:277.00px;width:1.00px;height:61.70px;background:#828fd2;"></div>
<div style="left:62.33px;top:277.00px;width:1.00px;height:61.70px;background:#828fd2;"></div>
<div style="left:85.19px;top:277.00px;width:1.00px;height:61.70px;background:#828fd2;"></div>
<div style="left:108.06px;top:277.00px;width:1.00px;height:61.70px;background:#828fd2;"></div>
<div style="left:130.92px;top:277.00px;width:1.00px;height:61.70px;background:#828fd2;"></div>
<div style="left:153.78px;top:277.00px;width:1.00px;height:61.70px;background:#828fd2;"></div>
<div style="left:176.64px;top:277.00px;width:1.00px;height:61.70px;background:#828fd2;"></div>
<div style="left:15.70px;top:249.50px;width:1.10px;height:90.20px;background:#444b6e;"></div>
<svg style="position:absolute;left:16.20px;top:277.00px;" width="183.40" height="61.70" viewBox="0 0 183.40 61.70"><rect x="178.4" y="0" width="5" height="61.69999999999999" fill="rgba(40,50,110,0.18)"/><rect x="0" y="0" width="4" height="61.69999999999999" fill="rgba(40,50,110,0.10)"/><path d="M1.0,7.2 L1.5,7.3 L2.0,7.3 L2.5,6.8 L3.0,8.6 L3.5,9.0 L4.0,10.0 L4.5,10.4 L5.0,11.2 L5.5,10.5 L6.0,9.9 L6.5,9.4 L7.0,8.7 L7.5,8.9 L8.0,7.8 L8.5,9.0 L9.0,9.4 L9.5,9.7 L10.0,10.3 L10.5,10.8 L11.0,10.8 L11.5,10.6 L12.0,11.1 L12.5,10.6 L13.0,11.0 L13.5,12.0 L14.0,12.2 L14.5,13.2 L15.0,13.5 L15.5,13.6 L16.0,14.2 L16.5,14.2 L17.0,12.9 L17.5,11.0 L18.0,9.3 L18.5,8.8 L19.0,9.0 L19.5,8.5 L20.0,9.0 L20.5,9.4 L21.0,9.3 L21.5,9.9 L22.0,10.9 L22.5,10.8 L23.0,9.5 L23.5,9.8 L24.0,7.3 L24.5,7.7 L25.0,7.1 L25.5,6.2 L26.0,9.3 L26.5,9.2 L27.0,9.6 L27.5,10.8 L28.0,10.8 L28.5,10.0 L29.0,9.6 L29.5,8.9 L30.0,8.5 L30.5,8.3 L31.0,8.7 L31.5,9.1 L32.0,8.9 L32.5,9.6 L33.0,10.5 L33.5,10.8 L34.0,10.6 L34.5,10.1 L35.0,10.7 L35.5,10.8 L36.0,11.2 L36.5,12.1 L37.0,12.3 L37.5,13.3 L38.0,13.2 L38.5,13.6 L39.0,14.2 L39.5,14.0 L40.0,12.5 L40.5,10.1 L41.0,8.9 L41.5,8.9 L42.0,8.5 L42.5,8.8 L43.0,8.7 L43.5,9.7 L44.0,9.7 L44.5,10.1 L45.0,10.9 L45.5,10.7 L46.0,10.0 L46.5,9.2 L47.0,7.5 L47.5,7.2 L48.0,7.2 L48.5,8.9 L49.0,8.8 L49.5,9.4 L50.0,10.3 L50.5,10.5 L51.0,10.8 L51.5,9.5 L52.0,9.5 L52.5,8.9 L53.0,8.4 L53.5,8.2 L54.0,8.6 L54.5,8.8 L55.0,9.4 L55.5,10.2 L56.0,10.6 L56.5,11.4 L57.0,10.6 L57.5,10.4 L58.0,10.7 L58.5,11.0 L59.0,11.8 L59.5,11.8 L60.0,12.5 L60.5,13.2 L61.0,13.7 L61.5,14.1 L62.0,14.2 L62.5,13.7 L63.0,11.5 L63.5,10.0 L64.0,8.4 L64.5,8.5 L65.0,8.9 L65.5,8.1 L66.0,8.8 L66.5,9.8 L67.0,10.4 L67.5,10.7 L68.0,11.2 L68.5,10.5 L69.0,9.3 L69.5,9.1 L70.0,7.1 L70.5,6.7 L71.0,6.7 L71.5,8.7 L72.0,9.1 L72.5,9.7 L73.0,10.3 L73.5,10.8 L74.0,10.1 L74.5,9.4 L75.0,9.4 L75.5,8.5 L76.0,8.7 L76.5,9.1 L77.0,9.2 L77.5,9.4 L78.0,9.5 L78.5,9.6 L79.0,10.3 L79.5,10.8 L80.0,10.6 L80.5,10.9 L81.0,10.8 L81.5,11.3 L82.0,12.1 L82.5,12.0 L83.0,12.4 L83.5,13.1 L84.0,13.8 L84.5,14.1 L85.0,14.3 L85.5,12.9 L86.0,11.0 L86.5,9.6 L87.0,8.1 L87.5,8.8 L88.0,8.4 L88.5,9.0 L89.0,9.0 L89.5,9.7 L90.0,9.7 L90.5,11.0 L91.0,10.8 L91.5,10.1 L92.0,9.3 L92.5,7.4 L93.0,7.3 L93.5,6.8 L94.0,7.0 L94.5,9.1 L95.0,9.6 L95.5,10.0 L96.0,10.4 L96.5,11.0 L97.0,10.3 L97.5,9.9 L98.0,9.3 L98.5,8.6 L99.0,8.1 L99.5,8.8 L100.0,8.5 L100.5,9.5 L101.0,9.4 L101.5,10.2 L102.0,10.6 L102.5,10.5 L103.0,10.8 L103.5,10.5 L104.0,11.1 L104.5,11.3 L105.0,11.7 L105.5,12.3 L106.0,13.2 L106.5,13.1 L107.0,13.8 L107.5,14.1 L108.0,13.9 L108.5,12.8 L109.0,11.1 L109.5,9.6 L110.0,9.1 L110.5,8.5 L111.0,8.6 L111.5,8.3 L112.0,9.5 L112.5,9.1 L113.0,10.0 L113.5,11.2 L114.0,10.1 L114.5,9.6 L115.0,9.4 L115.5,7.4 L116.0,7.2 L116.5,6.3 L117.0,7.0 L117.5,9.2 L118.0,9.6 L118.5,10.0 L119.0,10.6 L119.5,10.3 L120.0,10.0 L120.5,9.4 L121.0,9.2 L121.5,8.5 L122.0,8.0 L122.5,8.8 L123.0,8.4 L123.5,9.0 L124.0,9.4 L124.5,10.4 L125.0,11.4 L125.5,11.2 L126.0,10.6 L126.5,11.0 L127.0,10.8 L127.5,11.6 L128.0,11.6 L128.5,12.8 L129.0,13.1 L129.5,13.5 L130.0,13.8 L130.5,14.2 L131.0,13.5 L131.5,12.5 L132.0,10.3 L132.5,9.2 L133.0,8.8 L133.5,8.4 L134.0,8.1 L134.5,8.8 L135.0,9.2 L135.5,9.9 L136.0,10.3 L136.5,10.8 L137.0,10.7 L137.5,9.7 L138.0,9.4 L138.5,6.8 L139.0,6.3 L139.5,6.5 L140.0,9.2 L140.5,8.5 L141.0,9.5 L141.5,10.5 L142.0,11.4 L142.5,10.4 L143.0,9.7 L143.5,9.3 L144.0,8.5 L144.5,8.0 L145.0,8.3 L145.5,8.8 L146.0,9.2 L146.5,9.6 L147.0,10.0 L147.5,10.4 L148.0,10.8 L148.5,10.8 L149.0,10.6 L149.5,10.5 L150.0,11.3 L150.5,11.8 L151.0,12.2 L151.5,13.0 L152.0,13.1 L152.5,13.6 L153.0,14.2 L153.5,14.3 L154.0,13.3 L154.5,11.3 L155.0,9.8 L155.5,8.9 L156.0,8.4 L156.5,9.0 L157.0,9.0 L157.5,8.3 L158.0,9.4 L158.5,10.1 L159.0,11.1 L159.5,10.6 L160.0,10.6 L160.5,9.6 L161.0,9.2 L161.5,7.5 L162.0,6.5 L162.5,6.7 L163.0,9.3 L163.5,9.1 L164.0,9.8 L164.5,10.2 L165.0,11.5 L165.5,10.3 L166.0,9.7 L166.5,9.3 L167.0,8.9 L167.5,8.1 L168.0,8.1 L168.5,8.3 L169.0,8.3 L169.5,9.9 L170.0,9.7 L170.5,10.8 L171.0,11.1 L171.5,11.2 L172.0,10.6 L172.5,10.6 L173.0,11.1 L173.5,11.6 L174.0,12.4 L174.5,12.7 L175.0,13.3 L175.5,13.6 L176.0,14.3 L176.5,14.2 L177.0,12.7 L177.5,11.3 L178.0,9.4 L178.5,9.3 L179.0,8.7 L179.5,8.7 L180.0,8.8 L180.5,9.3 L181.0,9.8 L181.5,10.6 L182.0,10.9 L182.0,20.3 L181.5,21.1 L181.0,21.6 L180.5,22.2 L180.0,22.7 L179.5,23.2 L179.0,22.6 L178.5,22.4 L178.0,22.3 L177.5,20.2 L177.0,18.8 L176.5,17.3 L176.0,17.1 L175.5,17.7 L175.0,18.0 L174.5,18.8 L174.0,19.2 L173.5,19.7 L173.0,20.3 L172.5,20.6 L172.0,20.5 L171.5,20.5 L171.0,20.6 L170.5,20.5 L170.0,21.4 L169.5,21.7 L169.0,22.7 L168.5,22.7 L168.0,22.9 L167.5,23.0 L167.0,22.4 L166.5,22.0 L166.0,21.5 L165.5,20.9 L165.0,20.1 L164.5,20.9 L164.0,21.9 L163.5,22.1 L163.0,22.4 L162.5,24.7 L162.0,24.5 L161.5,24.2 L161.0,22.5 L160.5,22.1 L160.0,21.1 L159.5,20.6 L159.0,20.5 L158.5,21.1 L158.0,22.1 L157.5,22.7 L157.0,22.6 L156.5,22.8 L156.0,22.7 L155.5,22.4 L155.0,21.9 L154.5,20.1 L154.0,18.2 L153.5,17.1 L153.0,17.1 L152.5,17.9 L152.0,18.3 L151.5,18.5 L151.0,19.1 L150.5,19.8 L150.0,20.3 L149.5,20.8 L149.0,20.5 L148.5,20.7 L148.0,20.6 L147.5,20.7 L147.0,21.3 L146.5,21.9 L146.0,22.5 L145.5,22.6 L145.0,23.0 L144.5,23.1 L144.0,22.7 L143.5,22.2 L143.0,21.7 L142.5,20.8 L142.0,20.3 L141.5,21.0 L141.0,21.9 L140.5,22.6 L140.0,22.6 L139.5,24.4 L139.0,24.8 L138.5,24.5 L138.0,22.1 L137.5,22.0 L137.0,20.9 L136.5,20.5 L136.0,20.8 L135.5,21.8 L135.0,22.4 L134.5,22.8 L134.0,22.8 L133.5,22.9 L133.0,22.7 L132.5,22.2 L132.0,21.2 L131.5,19.1 L131.0,17.9 L130.5,17.2 L130.0,17.6 L129.5,17.9 L129.0,18.4 L128.5,18.7 L128.0,19.6 L127.5,19.7 L127.0,20.6 L126.5,20.7 L126.0,21.0 L125.5,20.5 L125.0,20.2 L124.5,21.1 L124.0,21.8 L123.5,22.2 L123.0,22.8 L122.5,22.7 L122.0,23.0 L121.5,22.9 L121.0,22.6 L120.5,22.1 L120.0,21.3 L119.5,20.8 L119.0,20.7 L118.5,21.1 L118.0,21.9 L117.5,22.2 L117.0,24.5 L116.5,24.7 L116.0,24.5 L115.5,24.4 L115.0,22.0 L114.5,21.6 L114.0,21.2 L113.5,20.3 L113.0,21.4 L112.5,22.0 L112.0,22.1 L111.5,22.7 L111.0,22.8 L110.5,22.7 L110.0,22.6 L109.5,22.1 L109.0,20.5 L108.5,18.7 L108.0,17.6 L107.5,17.4 L107.0,17.5 L106.5,18.2 L106.0,18.3 L105.5,19.1 L105.0,19.6 L104.5,20.1 L104.0,20.2 L103.5,20.8 L103.0,20.7 L102.5,20.9 L102.0,20.8 L101.5,21.3 L101.0,21.9 L100.5,22.2 L100.0,22.6 L99.5,22.7 L99.0,23.2 L98.5,22.5 L98.0,22.4 L97.5,21.8 L97.0,21.1 L96.5,20.3 L96.0,21.2 L95.5,21.5 L95.0,22.0 L94.5,22.4 L94.0,24.4 L93.5,24.8 L93.0,24.3 L92.5,24.1 L92.0,22.0 L91.5,21.5 L91.0,20.5 L90.5,20.5 L90.0,21.6 L89.5,21.7 L89.0,22.3 L88.5,22.7 L88.0,23.0 L87.5,22.8 L87.0,22.8 L86.5,21.8 L86.0,20.3 L85.5,18.4 L85.0,17.1 L84.5,17.3 L84.0,17.5 L83.5,18.4 L83.0,18.9 L82.5,19.2 L82.0,19.5 L81.5,20.2 L81.0,20.6 L80.5,20.7 L80.0,20.6 L79.5,20.9 L79.0,21.0 L78.5,21.5 L78.0,21.8 L77.5,22.2 L77.0,22.5 L76.5,22.6 L76.0,23.0 L75.5,22.6 L75.0,22.1 L74.5,21.9 L74.0,21.1 L73.5,20.7 L73.0,21.2 L72.5,21.7 L72.0,22.4 L71.5,22.7 L71.0,24.6 L70.5,24.5 L70.0,24.3 L69.5,22.1 L69.0,22.1 L68.5,21.0 L68.0,20.4 L67.5,20.6 L67.0,21.2 L66.5,21.8 L66.0,22.3 L65.5,23.0 L65.0,22.8 L64.5,22.7 L64.0,22.7 L63.5,21.1 L63.0,19.9 L62.5,17.8 L62.0,17.2 L61.5,17.3 L61.0,17.7 L60.5,18.3 L60.0,18.9 L59.5,19.5 L59.0,19.6 L58.5,20.5 L58.0,20.5 L57.5,21.0 L57.0,20.9 L56.5,20.3 L56.0,20.7 L55.5,21.4 L55.0,22.1 L54.5,22.7 L54.0,22.9 L53.5,23.2 L53.0,22.9 L52.5,22.6 L52.0,21.8 L51.5,21.6 L51.0,20.6 L50.5,20.7 L50.0,21.1 L49.5,21.9 L49.0,22.2 L48.5,22.6 L48.0,24.4 L47.5,24.7 L47.0,24.1 L46.5,22.3 L46.0,21.6 L45.5,20.7 L45.0,20.6 L44.5,21.2 L44.0,21.5 L43.5,22.0 L43.0,22.5 L42.5,22.7 L42.0,23.0 L41.5,22.5 L41.0,22.4 L40.5,21.1 L40.0,19.0 L39.5,17.5 L39.0,17.1 L38.5,17.7 L38.0,18.1 L37.5,18.1 L37.0,19.1 L36.5,19.4 L36.0,20.1 L35.5,20.4 L35.0,20.8 L34.5,21.0 L34.0,20.7 L33.5,20.4 L33.0,21.0 L32.5,21.5 L32.0,22.4 L31.5,22.5 L31.0,23.0 L30.5,22.9 L30.0,22.6 L29.5,22.2 L29.0,22.1 L28.5,21.1 L28.0,20.5 L27.5,20.6 L27.0,21.7 L26.5,21.9 L26.0,22.5 L25.5,24.7 L25.0,24.2 L24.5,24.3 L24.0,24.3 L23.5,21.8 L23.0,21.7 L22.5,20.8 L22.0,20.3 L21.5,21.2 L21.0,21.8 L20.5,22.2 L20.0,22.4 L19.5,22.8 L19.0,22.6 L18.5,22.5 L18.0,22.0 L17.5,20.3 L17.0,18.5 L16.5,17.2 L16.0,17.1 L15.5,17.8 L15.0,17.9 L14.5,18.3 L14.0,19.2 L13.5,19.5 L13.0,20.3 L12.5,20.6 L12.0,20.6 L11.5,20.8 L11.0,20.6 L10.5,20.4 L10.0,21.4 L9.5,22.0 L9.0,22.2 L8.5,22.5 L8.0,23.2 L7.5,22.9 L7.0,22.4 L6.5,22.4 L6.0,21.6 L5.5,20.8 L5.0,20.1 L4.5,20.8 L4.0,21.4 L3.5,22.2 L3.0,22.7 L2.5,24.3 L2.0,24.2 L1.5,24.4 L1.0,24.0Z" fill="#1d1d24"/><path d="M1.0,38.9 L1.5,38.2 L2.0,39.0 L2.5,39.0 L3.0,40.6 L3.5,41.0 L4.0,41.5 L4.5,41.7 L5.0,43.1 L5.5,41.9 L6.0,40.9 L6.5,40.4 L7.0,39.8 L7.5,40.0 L8.0,39.9 L8.5,40.3 L9.0,40.7 L9.5,41.5 L10.0,41.3 L10.5,42.0 L11.0,42.2 L11.5,42.4 L12.0,42.6 L12.5,42.7 L13.0,43.1 L13.5,43.4 L14.0,44.2 L14.5,44.7 L15.0,45.2 L15.5,45.7 L16.0,45.6 L16.5,45.6 L17.0,44.7 L17.5,42.3 L18.0,40.9 L18.5,40.1 L19.0,39.6 L19.5,40.0 L20.0,40.2 L20.5,40.5 L21.0,41.0 L21.5,41.9 L22.0,42.4 L22.5,42.1 L23.0,41.7 L23.5,41.0 L24.0,39.4 L24.5,38.7 L25.0,38.4 L25.5,38.9 L26.0,40.9 L26.5,40.9 L27.0,41.9 L27.5,42.3 L28.0,42.7 L28.5,41.6 L29.0,41.6 L29.5,40.3 L30.0,40.3 L30.5,40.2 L31.0,40.4 L31.5,39.9 L32.0,40.7 L32.5,41.2 L33.0,42.0 L33.5,42.9 L34.0,42.6 L34.5,42.6 L35.0,42.5 L35.5,42.9 L36.0,43.1 L36.5,43.5 L37.0,44.3 L37.5,44.8 L38.0,45.0 L38.5,45.4 L39.0,45.9 L39.5,45.8 L40.0,44.0 L40.5,41.6 L41.0,40.8 L41.5,40.2 L42.0,39.9 L42.5,40.4 L43.0,40.9 L43.5,40.9 L44.0,41.5 L44.5,41.9 L45.0,42.7 L45.5,41.6 L46.0,41.0 L46.5,40.8 L47.0,38.4 L47.5,38.7 L48.0,38.7 L48.5,40.0 L49.0,40.4 L49.5,41.5 L50.0,42.3 L50.5,42.5 L51.0,41.9 L51.5,41.1 L52.0,41.0 L52.5,40.1 L53.0,40.1 L53.5,40.5 L54.0,39.9 L54.5,40.3 L55.0,41.3 L55.5,41.9 L56.0,41.9 L56.5,42.5 L57.0,42.1 L57.5,41.8 L58.0,42.6 L58.5,42.6 L59.0,43.3 L59.5,43.8 L60.0,44.4 L60.5,45.0 L61.0,45.5 L61.5,45.6 L62.0,45.7 L62.5,44.9 L63.0,43.5 L63.5,41.6 L64.0,40.6 L64.5,40.3 L65.0,40.2 L65.5,40.5 L66.0,40.4 L66.5,40.9 L67.0,41.7 L67.5,42.5 L68.0,42.4 L68.5,42.2 L69.0,41.1 L69.5,40.2 L70.0,38.5 L70.5,37.9 L71.0,38.1 L71.5,40.1 L72.0,40.9 L72.5,41.3 L73.0,42.1 L73.5,42.5 L74.0,41.9 L74.5,41.3 L75.0,40.7 L75.5,40.5 L76.0,40.0 L76.5,40.0 L77.0,39.8 L77.5,40.5 L78.0,41.3 L78.5,41.5 L79.0,41.8 L79.5,42.5 L80.0,42.1 L80.5,42.7 L81.0,42.8 L81.5,42.7 L82.0,43.3 L82.5,44.1 L83.0,44.3 L83.5,45.2 L84.0,45.6 L84.5,46.0 L85.0,45.9 L85.5,45.0 L86.0,42.7 L86.5,40.8 L87.0,40.0 L87.5,40.2 L88.0,40.3 L88.5,40.2 L89.0,40.7 L89.5,41.0 L90.0,41.9 L90.5,42.5 L91.0,42.0 L91.5,41.6 L92.0,41.1 L92.5,38.8 L93.0,38.6 L93.5,38.6 L94.0,39.1 L94.5,40.8 L95.0,40.7 L95.5,41.3 L96.0,42.4 L96.5,42.9 L97.0,41.9 L97.5,41.3 L98.0,40.6 L98.5,40.7 L99.0,40.4 L99.5,40.6 L100.0,40.5 L100.5,40.5 L101.0,41.3 L101.5,41.6 L102.0,42.2 L102.5,42.1 L103.0,42.1 L103.5,42.1 L104.0,42.6 L104.5,43.1 L105.0,43.6 L105.5,44.1 L106.0,44.5 L106.5,45.0 L107.0,45.3 L107.5,45.8 L108.0,45.5 L108.5,43.9 L109.0,42.6 L109.5,40.9 L110.0,40.0 L110.5,40.5 L111.0,40.0 L111.5,40.4 L112.0,40.6 L112.5,41.5 L113.0,41.8 L113.5,42.4 L114.0,42.4 L114.5,41.3 L115.0,40.6 L115.5,38.5 L116.0,38.3 L116.5,38.3 L117.0,38.6 L117.5,40.3 L118.0,41.3 L118.5,41.3 L119.0,42.7 L119.5,42.2 L120.0,41.5 L120.5,41.1 L121.0,40.6 L121.5,39.9 L122.0,40.1 L122.5,40.4 L123.0,40.5 L123.5,40.3 L124.0,41.2 L124.5,42.1 L125.0,42.9 L125.5,42.4 L126.0,42.4 L126.5,42.6 L127.0,42.9 L127.5,42.8 L128.0,43.3 L128.5,44.3 L129.0,44.7 L129.5,45.4 L130.0,45.5 L130.5,45.8 L131.0,45.5 L131.5,43.8 L132.0,42.0 L132.5,40.7 L133.0,40.4 L133.5,40.4 L134.0,39.8 L134.5,40.4 L135.0,41.1 L135.5,41.5 L136.0,41.8 L136.5,42.7 L137.0,41.9 L137.5,41.5 L138.0,40.8 L138.5,38.6 L139.0,39.0 L139.5,38.7 L140.0,40.3 L140.5,40.2 L141.0,41.3 L141.5,41.6 L142.0,42.4 L142.5,41.8 L143.0,41.5 L143.5,40.7 L144.0,40.0 L144.5,39.9 L145.0,40.1 L145.5,40.5 L146.0,40.3 L146.5,40.8 L147.0,41.8 L147.5,42.3 L148.0,42.8 L148.5,42.1 L149.0,42.2 L149.5,42.8 L150.0,42.9 L150.5,43.4 L151.0,43.9 L151.5,44.2 L152.0,45.1 L152.5,45.1 L153.0,45.6 L153.5,45.8 L154.0,44.7 L154.5,43.3 L155.0,41.1 L155.5,40.3 L156.0,40.4 L156.5,39.9 L157.0,40.7 L157.5,40.3 L158.0,40.5 L158.5,41.9 L159.0,42.3 L159.5,41.8 L160.0,41.8 L160.5,41.5 L161.0,40.4 L161.5,38.7 L162.0,38.8 L162.5,38.1 L163.0,40.3 L163.5,41.2 L164.0,41.7 L164.5,42.1 L165.0,42.9 L165.5,42.2 L166.0,40.9 L166.5,40.9 L167.0,40.6 L167.5,40.5 L168.0,40.1 L168.5,40.6 L169.0,40.5 L169.5,40.9 L170.0,41.5 L170.5,42.4 L171.0,42.4 L171.5,42.2 L172.0,42.3 L172.5,42.1 L173.0,42.9 L173.5,43.4 L174.0,43.7 L174.5,44.4 L175.0,45.1 L175.5,45.2 L176.0,45.8 L176.5,45.9 L177.0,44.1 L177.5,42.9 L178.0,40.7 L178.5,40.7 L179.0,40.6 L179.5,40.6 L180.0,39.8 L180.5,41.0 L181.0,41.5 L181.5,42.0 L182.0,42.6 L182.0,52.1 L181.5,52.6 L181.0,53.5 L180.5,53.8 L180.0,54.4 L179.5,54.3 L179.0,54.4 L178.5,54.1 L178.0,53.7 L177.5,51.8 L177.0,50.4 L176.5,48.7 L176.0,48.8 L175.5,49.4 L175.0,49.5 L174.5,50.1 L174.0,50.9 L173.5,51.3 L173.0,51.9 L172.5,52.3 L172.0,52.1 L171.5,52.6 L171.0,52.2 L170.5,52.1 L170.0,53.0 L169.5,53.4 L169.0,53.8 L168.5,54.3 L168.0,54.4 L167.5,54.4 L167.0,54.2 L166.5,53.8 L166.0,53.4 L165.5,52.6 L165.0,51.9 L164.5,52.4 L164.0,53.2 L163.5,53.6 L163.0,54.0 L162.5,56.1 L162.0,55.8 L161.5,55.8 L161.0,54.2 L160.5,53.3 L160.0,52.6 L159.5,52.5 L159.0,52.5 L158.5,53.1 L158.0,53.8 L157.5,54.0 L157.0,54.1 L156.5,54.3 L156.0,54.4 L155.5,54.0 L155.0,53.4 L154.5,51.2 L154.0,50.0 L153.5,48.9 L153.0,49.1 L152.5,49.5 L152.0,49.6 L151.5,50.6 L151.0,50.9 L150.5,51.1 L150.0,51.9 L149.5,52.1 L149.0,52.3 L148.5,52.2 L148.0,52.0 L147.5,52.2 L147.0,53.0 L146.5,53.5 L146.0,54.2 L145.5,54.4 L145.0,54.8 L144.5,54.6 L144.0,54.3 L143.5,53.6 L143.0,53.0 L142.5,52.5 L142.0,52.2 L141.5,53.0 L141.0,53.2 L140.5,54.0 L140.0,54.2 L139.5,56.3 L139.0,56.0 L138.5,55.6 L138.0,54.0 L137.5,53.2 L137.0,52.8 L136.5,51.7 L136.0,52.7 L135.5,53.0 L135.0,53.7 L134.5,54.0 L134.0,54.5 L133.5,54.5 L133.0,54.5 L132.5,53.9 L132.0,52.8 L131.5,50.9 L131.0,49.1 L130.5,48.8 L130.0,49.0 L129.5,49.2 L129.0,50.0 L128.5,50.2 L128.0,51.1 L127.5,51.6 L127.0,51.6 L126.5,52.2 L126.0,52.4 L125.5,52.4 L125.0,51.9 L124.5,52.7 L124.0,53.4 L123.5,53.9 L123.0,54.3 L122.5,54.6 L122.0,54.3 L121.5,54.3 L121.0,53.8 L120.5,53.2 L120.0,53.1 L119.5,52.2 L119.0,52.2 L118.5,53.2 L118.0,53.6 L117.5,54.3 L117.0,56.0 L116.5,55.8 L116.0,55.8 L115.5,55.7 L115.0,53.9 L114.5,53.3 L114.0,52.5 L113.5,52.2 L113.0,52.7 L112.5,53.4 L112.0,54.0 L111.5,54.5 L111.0,54.6 L110.5,54.2 L110.0,54.3 L109.5,53.8 L109.0,52.2 L108.5,50.7 L108.0,49.1 L107.5,48.8 L107.0,49.3 L106.5,49.6 L106.0,50.0 L105.5,50.5 L105.0,51.0 L104.5,51.3 L104.0,52.1 L103.5,52.3 L103.0,52.5 L102.5,52.5 L102.0,52.2 L101.5,52.9 L101.0,53.6 L100.5,53.9 L100.0,54.5 L99.5,54.3 L99.0,54.2 L98.5,54.2 L98.0,54.1 L97.5,53.1 L97.0,52.9 L96.5,51.9 L96.0,52.3 L95.5,53.1 L95.0,53.9 L94.5,54.1 L94.0,55.9 L93.5,56.3 L93.0,56.3 L92.5,55.5 L92.0,53.4 L91.5,52.9 L91.0,52.4 L90.5,52.1 L90.0,52.8 L89.5,53.6 L89.0,54.2 L88.5,54.3 L88.0,54.2 L87.5,54.7 L87.0,54.3 L86.5,53.6 L86.0,51.7 L85.5,49.7 L85.0,48.7 L84.5,48.7 L84.0,49.0 L83.5,49.5 L83.0,50.5 L82.5,50.6 L82.0,51.1 L81.5,51.6 L81.0,51.9 L80.5,52.0 L80.0,52.4 L79.5,52.2 L79.0,52.5 L78.5,52.9 L78.0,53.3 L77.5,54.2 L77.0,54.5 L76.5,54.8 L76.0,54.7 L75.5,54.2 L75.0,53.9 L74.5,53.4 L74.0,52.5 L73.5,52.1 L73.0,52.8 L72.5,53.1 L72.0,53.9 L71.5,54.4 L71.0,56.3 L70.5,56.3 L70.0,55.7 L69.5,54.2 L69.0,53.6 L68.5,52.6 L68.0,52.3 L67.5,52.1 L67.0,52.9 L66.5,53.7 L66.0,54.4 L65.5,54.1 L65.0,54.7 L64.5,54.6 L64.0,54.4 L63.5,53.1 L63.0,51.0 L62.5,49.6 L62.0,48.9 L61.5,49.0 L61.0,49.2 L60.5,49.6 L60.0,50.2 L59.5,50.8 L59.0,51.4 L58.5,51.8 L58.0,52.1 L57.5,52.6 L57.0,52.5 L56.5,51.9 L56.0,52.4 L55.5,52.9 L55.0,53.7 L54.5,54.0 L54.0,54.7 L53.5,54.3 L53.0,54.3 L52.5,54.3 L52.0,53.6 L51.5,53.3 L51.0,52.5 L50.5,52.3 L50.0,52.6 L49.5,53.4 L49.0,53.9 L48.5,54.5 L48.0,55.9 L47.5,56.3 L47.0,55.9 L46.5,53.8 L46.0,53.3 L45.5,52.7 L45.0,51.8 L44.5,52.5 L44.0,53.2 L43.5,54.0 L43.0,53.9 L42.5,54.5 L42.0,54.4 L41.5,54.1 L41.0,53.7 L40.5,52.7 L40.0,50.6 L39.5,48.9 L39.0,48.7 L38.5,49.2 L38.0,49.7 L37.5,49.9 L37.0,50.4 L36.5,51.0 L36.0,51.7 L35.5,52.0 L35.0,52.0 L34.5,52.1 L34.0,52.1 L33.5,51.8 L33.0,52.7 L32.5,53.5 L32.0,53.7 L31.5,54.5 L31.0,54.2 L30.5,54.6 L30.0,54.3 L29.5,54.0 L29.0,53.2 L28.5,52.7 L28.0,51.9 L27.5,52.3 L27.0,52.8 L26.5,53.4 L26.0,54.0 L25.5,55.7 L25.0,56.1 L24.5,55.7 L24.0,55.5 L23.5,53.5 L23.0,53.0 L22.5,52.4 L22.0,52.1 L21.5,52.6 L21.0,53.5 L20.5,53.7 L20.0,54.2 L19.5,54.3 L19.0,54.7 L18.5,54.2 L18.0,53.9 L17.5,52.1 L17.0,50.0 L16.5,48.9 L16.0,49.1 L15.5,48.9 L15.0,49.4 L14.5,50.0 L14.0,50.4 L13.5,51.2 L13.0,51.5 L12.5,51.9 L12.0,52.2 L11.5,52.1 L11.0,52.3 L10.5,52.5 L10.0,53.1 L9.5,53.4 L9.0,53.9 L8.5,54.4 L8.0,54.5 L7.5,54.3 L7.0,54.5 L6.5,54.0 L6.0,53.5 L5.5,52.4 L5.0,51.6 L4.5,52.8 L4.0,53.1 L3.5,53.8 L3.0,54.3 L2.5,55.8 L2.0,55.9 L1.5,56.1 L1.0,55.5Z" fill="#1d1d24"/></svg>
<div style="left:199.60px;top:249.50px;width:183.60px;height:90.20px;background:#98a7f5;"></div>
<div style="left:199.60px;top:338.70px;width:183.60px;height:1.00px;background:#535b86;"></div>
<div style="left:199.60px;top:276.40px;width:183.60px;height:1.20px;background:#6d78b0;"></div>
<div style="left:222.36px;top:277.00px;width:1.00px;height:61.70px;background:#828fd2;"></div>
<div style="left:245.22px;top:277.00px;width:1.00px;height:61.70px;background:#828fd2;"></div>
<div style="left:268.08px;top:277.00px;width:1.00px;height:61.70px;background:#828fd2;"></div>
<div style="left:290.94px;top:277.00px;width:1.00px;height:61.70px;background:#828fd2;"></div>
<div style="left:313.81px;top:277.00px;width:1.00px;height:61.70px;background:#828fd2;"></div>
<div style="left:336.67px;top:277.00px;width:1.00px;height:61.70px;background:#828fd2;"></div>
<div style="left:359.53px;top:277.00px;width:1.00px;height:61.70px;background:#828fd2;"></div>
<div style="left:199.10px;top:249.50px;width:1.10px;height:90.20px;background:#444b6e;"></div>
<svg style="position:absolute;left:199.60px;top:277.00px;" width="183.60" height="61.70" viewBox="0 0 183.60 61.70"><rect x="178.6" y="0" width="5" height="61.69999999999999" fill="rgba(40,50,110,0.18)"/><rect x="0" y="0" width="4" height="61.69999999999999" fill="rgba(40,50,110,0.10)"/><path d="M1.0,7.0 L1.5,6.4 L2.0,7.4 L2.5,9.2 L3.0,9.4 L3.5,10.0 L4.0,10.6 L4.5,10.8 L5.0,10.8 L5.5,9.7 L6.0,8.7 L6.5,8.4 L7.0,8.0 L7.5,8.4 L8.0,8.5 L8.5,9.0 L9.0,9.7 L9.5,10.5 L10.0,10.5 L10.5,10.3 L11.0,10.5 L11.5,10.9 L12.0,11.2 L12.5,11.5 L13.0,12.0 L13.5,12.3 L14.0,13.1 L14.5,13.6 L15.0,14.1 L15.5,14.3 L16.0,13.9 L16.5,12.4 L17.0,11.5 L17.5,8.6 L18.0,8.9 L18.5,8.3 L19.0,8.0 L19.5,8.6 L20.0,9.0 L20.5,9.5 L21.0,10.0 L21.5,11.0 L22.0,10.4 L22.5,9.8 L23.0,9.6 L23.5,7.3 L24.0,7.5 L24.5,7.0 L25.0,6.9 L25.5,9.2 L26.0,9.8 L26.5,9.9 L27.0,11.0 L27.5,10.9 L28.0,10.4 L28.5,9.4 L29.0,9.5 L29.5,8.3 L30.0,8.5 L30.5,8.6 L31.0,9.0 L31.5,8.7 L32.0,9.7 L32.5,10.3 L33.0,11.1 L33.5,11.0 L34.0,10.9 L34.5,11.1 L35.0,11.2 L35.5,11.7 L36.0,11.9 L36.5,12.5 L37.0,13.2 L37.5,13.7 L38.0,13.8 L38.5,14.1 L39.0,13.9 L39.5,12.7 L40.0,10.6 L40.5,8.3 L41.0,8.9 L41.5,8.5 L42.0,8.3 L42.5,9.1 L43.0,9.7 L43.5,9.8 L44.0,10.5 L44.5,11.0 L45.0,10.4 L45.5,9.3 L46.0,8.8 L46.5,7.1 L47.0,6.5 L47.5,7.1 L48.0,8.9 L48.5,8.8 L49.0,9.3 L49.5,10.5 L50.0,11.3 L50.5,10.8 L51.0,9.6 L51.5,8.8 L52.0,8.9 L52.5,8.2 L53.0,8.4 L53.5,9.0 L54.0,8.6 L54.5,9.2 L55.0,10.2 L55.5,10.9 L56.0,10.8 L56.5,10.6 L57.0,10.5 L57.5,10.4 L58.0,11.3 L58.5,11.4 L59.0,12.2 L59.5,12.7 L60.0,13.3 L60.5,13.9 L61.0,14.3 L61.5,14.3 L62.0,13.2 L62.5,11.6 L63.0,10.0 L63.5,8.8 L64.0,8.7 L64.5,8.6 L65.0,8.7 L65.5,9.2 L66.0,9.3 L66.5,9.9 L67.0,10.8 L67.5,11.2 L68.0,10.1 L68.5,10.0 L69.0,9.0 L69.5,6.6 L70.0,6.7 L70.5,6.3 L71.0,8.4 L71.5,8.9 L72.0,9.8 L72.5,10.4 L73.0,11.2 L73.5,10.3 L74.0,9.6 L74.5,9.1 L75.0,8.6 L75.5,8.6 L76.0,8.3 L76.5,8.5 L77.0,8.5 L77.5,9.4 L78.0,10.3 L78.5,10.6 L79.0,10.3 L79.5,10.7 L80.0,10.5 L80.5,11.3 L81.0,11.6 L81.5,11.6 L82.0,12.3 L82.5,13.0 L83.0,13.2 L83.5,14.1 L84.0,14.3 L84.5,14.4 L85.0,13.2 L85.5,11.7 L86.0,9.1 L86.5,8.5 L87.0,8.2 L87.5,8.6 L88.0,8.8 L88.5,9.0 L89.0,9.6 L89.5,10.0 L90.0,11.0 L90.5,10.7 L91.0,9.7 L91.5,9.4 L92.0,7.4 L92.5,6.9 L93.0,6.9 L93.5,7.1 L94.0,9.3 L94.5,9.6 L95.0,9.7 L95.5,10.4 L96.0,11.2 L96.5,10.7 L97.0,9.7 L97.5,9.1 L98.0,8.6 L98.5,8.9 L99.0,8.8 L99.5,9.1 L100.0,9.2 L100.5,9.5 L101.0,10.3 L101.5,10.7 L102.0,10.4 L102.5,10.4 L103.0,10.6 L103.5,10.8 L104.0,11.4 L104.5,12.0 L105.0,12.5 L105.5,13.1 L106.0,13.4 L106.5,13.8 L107.0,14.1 L107.5,13.9 L108.0,12.3 L108.5,10.5 L109.0,9.3 L109.5,8.9 L110.0,8.2 L110.5,8.9 L111.0,8.6 L111.5,9.2 L112.0,9.6 L112.5,10.6 L113.0,10.9 L113.5,10.3 L114.0,10.2 L114.5,9.2 L115.0,7.0 L115.5,6.6 L116.0,6.7 L116.5,8.5 L117.0,8.9 L117.5,9.1 L118.0,10.3 L118.5,10.4 L119.0,11.1 L119.5,9.8 L120.0,9.3 L120.5,9.0 L121.0,8.6 L121.5,8.1 L122.0,8.5 L122.5,9.1 L123.0,9.3 L123.5,9.3 L124.0,10.3 L124.5,11.2 L125.0,10.9 L125.5,10.8 L126.0,11.0 L126.5,11.3 L127.0,11.8 L127.5,11.7 L128.0,12.3 L128.5,13.3 L129.0,13.6 L129.5,14.3 L130.0,14.3 L130.5,13.5 L131.0,12.2 L131.5,10.5 L132.0,9.1 L132.5,8.8 L133.0,8.7 L133.5,8.8 L134.0,8.5 L134.5,9.2 L135.0,10.1 L135.5,10.6 L136.0,10.7 L136.5,10.4 L137.0,9.7 L137.5,9.3 L138.0,7.3 L138.5,6.8 L139.0,7.4 L139.5,8.8 L140.0,9.1 L140.5,9.2 L141.0,10.4 L141.5,10.7 L142.0,10.5 L142.5,9.5 L143.0,9.2 L143.5,8.7 L144.0,8.1 L144.5,8.2 L145.0,8.6 L145.5,9.2 L146.0,9.1 L146.5,9.8 L147.0,10.8 L147.5,11.0 L148.0,11.0 L148.5,10.5 L149.0,10.8 L149.5,11.5 L150.0,11.7 L150.5,12.4 L151.0,12.8 L151.5,13.1 L152.0,13.9 L152.5,13.9 L153.0,14.3 L153.5,13.1 L154.0,11.5 L154.5,9.8 L155.0,8.5 L155.5,8.4 L156.0,8.7 L156.5,8.5 L157.0,9.4 L157.5,9.2 L158.0,9.6 L158.5,10.9 L159.0,10.8 L159.5,9.5 L160.0,9.6 L160.5,7.9 L161.0,6.9 L161.5,7.0 L162.0,7.3 L162.5,8.4 L163.0,9.1 L163.5,10.2 L164.0,10.7 L164.5,11.3 L165.0,10.6 L165.5,10.0 L166.0,8.7 L166.5,8.9 L167.0,8.7 L167.5,8.8 L168.0,8.6 L168.5,9.4 L169.0,9.5 L169.5,10.0 L170.0,10.6 L170.5,10.8 L171.0,10.7 L171.5,10.7 L172.0,10.9 L172.5,10.9 L173.0,11.8 L173.5,12.4 L174.0,12.7 L174.5,13.4 L175.0,14.0 L175.5,14.0 L176.0,14.3 L176.5,13.1 L177.0,10.6 L177.5,9.4 L178.0,8.5 L178.5,8.9 L179.0,9.0 L179.5,9.1 L180.0,8.6 L180.5,9.9 L181.0,10.5 L181.5,11.1 L182.0,10.7 L182.5,10.3 L182.5,21.4 L182.0,20.8 L181.5,20.3 L181.0,21.3 L180.5,21.7 L180.0,22.4 L179.5,22.5 L179.0,22.8 L178.5,22.7 L178.0,22.6 L177.5,22.1 L177.0,20.5 L176.5,18.4 L176.0,17.1 L175.5,17.4 L175.0,17.4 L174.5,18.0 L174.0,18.7 L173.5,19.2 L173.0,19.8 L172.5,20.3 L172.0,20.3 L171.5,20.9 L171.0,20.7 L170.5,20.6 L170.0,20.7 L169.5,21.2 L169.0,21.7 L168.5,22.4 L168.0,22.6 L167.5,22.8 L167.0,22.8 L166.5,22.6 L166.0,22.3 L165.5,21.7 L165.0,21.0 L164.5,20.1 L164.0,20.9 L163.5,21.4 L163.0,22.0 L162.5,22.7 L162.0,24.2 L161.5,24.4 L161.0,24.6 L160.5,23.9 L160.0,21.7 L159.5,21.6 L159.0,20.8 L158.5,20.8 L158.0,21.6 L157.5,21.9 L157.0,22.2 L156.5,22.5 L156.0,22.9 L155.5,22.7 L155.0,22.7 L154.5,21.5 L154.0,20.1 L153.5,18.4 L153.0,17.2 L152.5,17.5 L152.0,17.5 L151.5,18.4 L151.0,18.8 L150.5,19.0 L150.0,19.8 L149.5,20.1 L149.0,20.5 L148.5,20.6 L148.0,20.7 L147.5,20.3 L147.0,20.8 L146.5,21.3 L146.0,22.1 L145.5,22.6 L145.0,23.1 L144.5,23.1 L144.0,23.0 L143.5,22.4 L143.0,22.0 L142.5,21.6 L142.0,21.0 L141.5,20.7 L141.0,21.0 L140.5,21.9 L140.0,22.3 L139.5,22.9 L139.0,24.4 L138.5,24.3 L138.0,24.4 L137.5,22.1 L137.0,21.8 L136.5,20.8 L136.0,20.6 L135.5,20.8 L135.0,21.5 L134.5,22.0 L134.0,22.7 L133.5,22.8 L133.0,23.0 L132.5,22.7 L132.0,22.5 L131.5,21.1 L131.0,19.1 L130.5,17.9 L130.0,17.1 L129.5,17.2 L129.0,17.9 L128.5,18.1 L128.0,18.9 L127.5,19.5 L127.0,19.6 L126.5,20.3 L126.0,20.6 L125.5,20.9 L125.0,20.7 L124.5,20.4 L124.0,21.1 L123.5,21.8 L123.0,22.2 L122.5,22.7 L122.0,22.6 L121.5,22.9 L121.0,22.6 L120.5,22.1 L120.0,22.1 L119.5,21.3 L119.0,20.5 L118.5,20.9 L118.0,21.4 L117.5,22.2 L117.0,22.5 L116.5,22.5 L116.0,24.3 L115.5,24.4 L115.0,24.3 L114.5,22.3 L114.0,21.5 L113.5,21.1 L113.0,20.3 L112.5,21.1 L112.0,21.9 L111.5,22.5 L111.0,22.8 L110.5,22.6 L110.0,22.9 L109.5,22.6 L109.0,22.4 L108.5,20.8 L108.0,19.0 L107.5,17.4 L107.0,17.3 L106.5,17.6 L106.0,17.9 L105.5,18.3 L105.0,18.9 L104.5,19.2 L104.0,20.1 L103.5,20.4 L103.0,20.8 L102.5,20.9 L102.0,20.8 L101.5,20.6 L101.0,21.3 L100.5,21.7 L100.0,22.6 L99.5,22.5 L99.0,22.6 L98.5,22.8 L98.0,22.9 L97.5,22.1 L97.0,22.0 L96.5,21.0 L96.0,20.3 L95.5,20.8 L95.0,21.7 L94.5,22.1 L94.0,22.4 L93.5,24.6 L93.0,24.8 L92.5,24.2 L92.0,23.8 L91.5,21.9 L91.0,21.4 L90.5,20.6 L90.0,20.5 L89.5,21.4 L89.0,22.1 L88.5,22.4 L88.0,22.5 L87.5,23.1 L87.0,23.0 L86.5,22.7 L86.0,22.0 L85.5,19.8 L85.0,18.1 L84.5,17.1 L84.0,17.1 L83.5,17.4 L83.0,18.4 L82.5,18.5 L82.0,19.0 L81.5,19.5 L81.0,19.9 L80.5,20.2 L80.0,20.7 L79.5,20.7 L79.0,20.8 L78.5,20.6 L78.0,21.1 L77.5,22.1 L77.0,22.6 L76.5,23.0 L76.0,23.2 L75.5,22.9 L75.0,22.8 L74.5,22.4 L74.0,21.6 L73.5,21.0 L73.0,20.4 L72.5,20.9 L72.0,21.8 L71.5,22.4 L71.0,22.8 L70.5,24.7 L70.0,24.2 L69.5,24.6 L69.0,22.5 L68.5,21.7 L68.0,21.4 L67.5,20.2 L67.0,20.6 L66.5,21.5 L66.0,22.3 L65.5,22.2 L65.0,23.0 L64.5,23.1 L64.0,23.1 L63.5,22.6 L63.0,21.3 L62.5,19.6 L62.0,18.2 L61.5,17.1 L61.0,17.2 L60.5,17.5 L60.0,18.0 L59.5,18.7 L59.0,19.3 L58.5,19.8 L58.0,20.2 L57.5,20.8 L57.0,20.9 L56.5,20.6 L56.0,20.3 L55.5,20.6 L55.0,21.5 L54.5,22.0 L54.0,22.9 L53.5,22.6 L53.0,22.8 L52.5,23.0 L52.0,22.4 L51.5,22.3 L51.0,21.6 L50.5,20.9 L50.0,20.3 L49.5,21.1 L49.0,21.8 L48.5,22.6 L48.0,22.5 L47.5,24.7 L47.0,24.5 L46.5,24.2 L46.0,22.2 L45.5,21.8 L45.0,20.9 L44.5,20.2 L44.0,21.0 L43.5,21.9 L43.0,21.9 L42.5,22.6 L42.0,22.7 L41.5,22.7 L41.0,22.5 L40.5,22.7 L40.0,20.8 L39.5,18.9 L39.0,17.5 L38.5,17.3 L38.0,17.7 L37.5,17.8 L37.0,18.3 L36.5,18.9 L36.0,19.6 L35.5,20.0 L35.0,20.1 L34.5,20.3 L34.0,20.6 L33.5,20.5 L33.0,20.4 L32.5,21.3 L32.0,21.6 L31.5,22.5 L31.0,22.4 L30.5,23.0 L30.0,22.9 L29.5,22.7 L29.0,22.1 L28.5,21.8 L28.0,21.0 L27.5,20.4 L27.0,20.5 L26.5,21.2 L26.0,21.9 L25.5,22.2 L25.0,24.4 L24.5,24.2 L24.0,24.2 L23.5,23.9 L23.0,22.0 L22.5,21.4 L22.0,20.9 L21.5,20.3 L21.0,21.2 L20.5,21.6 L20.0,22.2 L19.5,22.5 L19.0,23.1 L18.5,22.8 L18.0,22.8 L17.5,22.5 L17.0,20.1 L16.5,18.8 L16.0,17.5 L15.5,17.1 L15.0,17.4 L14.5,17.8 L14.0,18.3 L13.5,19.1 L13.0,19.4 L12.5,19.9 L12.0,20.4 L11.5,20.4 L11.0,20.8 L10.5,21.0 L10.0,20.8 L9.5,21.1 L9.0,21.8 L8.5,22.4 L8.0,22.7 L7.5,22.7 L7.0,23.1 L6.5,22.8 L6.0,22.4 L5.5,21.5 L5.0,20.8 L4.5,20.6 L4.0,20.8 L3.5,21.6 L3.0,22.3 L2.5,22.4 L2.0,24.3 L1.5,24.6 L1.0,24.2Z" fill="#1d1d24"/><path d="M1.0,38.7 L1.5,37.9 L2.0,38.9 L2.5,40.1 L3.0,40.8 L3.5,41.2 L4.0,42.4 L4.5,42.5 L5.0,41.9 L5.5,41.5 L6.0,40.6 L6.5,40.4 L7.0,40.5 L7.5,40.6 L8.0,40.1 L8.5,40.4 L9.0,40.8 L9.5,41.9 L10.0,42.3 L10.5,42.8 L11.0,42.0 L11.5,42.5 L12.0,42.6 L12.5,43.2 L13.0,43.4 L13.5,44.3 L14.0,44.5 L14.5,45.1 L15.0,45.4 L15.5,45.8 L16.0,45.8 L16.5,44.4 L17.0,42.8 L17.5,40.1 L18.0,40.9 L18.5,39.9 L19.0,40.2 L19.5,40.1 L20.0,40.7 L20.5,41.1 L21.0,42.2 L21.5,42.5 L22.0,42.4 L22.5,41.9 L23.0,40.5 L23.5,38.6 L24.0,38.9 L24.5,39.1 L25.0,39.1 L25.5,40.5 L26.0,41.0 L26.5,41.4 L27.0,42.1 L27.5,42.4 L28.0,41.3 L28.5,40.9 L29.0,40.8 L29.5,40.0 L30.0,40.1 L30.5,39.8 L31.0,40.2 L31.5,40.9 L32.0,41.7 L32.5,42.0 L33.0,43.0 L33.5,42.3 L34.0,42.2 L34.5,42.6 L35.0,42.9 L35.5,43.4 L36.0,43.6 L36.5,44.1 L37.0,44.5 L37.5,45.1 L38.0,45.4 L38.5,45.9 L39.0,45.5 L39.5,43.4 L40.0,42.2 L40.5,40.3 L41.0,40.2 L41.5,39.7 L42.0,39.6 L42.5,40.5 L43.0,40.8 L43.5,41.7 L44.0,42.3 L44.5,42.5 L45.0,41.9 L45.5,41.1 L46.0,40.8 L46.5,39.2 L47.0,38.5 L47.5,37.8 L48.0,39.7 L48.5,40.7 L49.0,40.9 L49.5,42.2 L50.0,42.0 L50.5,41.8 L51.0,41.3 L51.5,40.7 L52.0,40.8 L52.5,39.9 L53.0,40.0 L53.5,40.0 L54.0,41.0 L54.5,40.7 L55.0,41.5 L55.5,42.5 L56.0,42.9 L56.5,42.2 L57.0,42.3 L57.5,42.7 L58.0,42.6 L58.5,43.0 L59.0,43.9 L59.5,44.1 L60.0,44.8 L60.5,45.3 L61.0,45.7 L61.5,45.9 L62.0,45.1 L62.5,43.3 L63.0,41.7 L63.5,40.4 L64.0,40.0 L64.5,40.4 L65.0,40.0 L65.5,40.4 L66.0,40.7 L66.5,41.5 L67.0,42.5 L67.5,42.9 L68.0,41.4 L68.5,41.3 L69.0,40.6 L69.5,38.9 L70.0,38.2 L70.5,38.3 L71.0,40.1 L71.5,41.2 L72.0,41.3 L72.5,41.9 L73.0,42.7 L73.5,42.3 L74.0,41.6 L74.5,40.7 L75.0,40.0 L75.5,40.2 L76.0,40.1 L76.5,40.4 L77.0,40.3 L77.5,41.1 L78.0,41.6 L78.5,42.0 L79.0,42.5 L79.5,42.5 L80.0,42.2 L80.5,42.8 L81.0,43.0 L81.5,43.5 L82.0,43.6 L82.5,44.2 L83.0,45.1 L83.5,45.0 L84.0,45.8 L84.5,46.0 L85.0,44.9 L85.5,43.2 L86.0,40.8 L86.5,39.8 L87.0,40.5 L87.5,39.9 L88.0,40.1 L88.5,40.2 L89.0,40.6 L89.5,41.6 L90.0,42.3 L90.5,42.5 L91.0,41.9 L91.5,41.0 L92.0,38.9 L92.5,39.1 L93.0,38.9 L93.5,38.6 L94.0,40.5 L94.5,40.6 L95.0,41.3 L95.5,42.1 L96.0,42.7 L96.5,41.7 L97.0,40.9 L97.5,40.9 L98.0,40.3 L98.5,40.0 L99.0,39.6 L99.5,39.7 L100.0,40.3 L100.5,41.6 L101.0,42.0 L101.5,42.3 L102.0,42.5 L102.5,42.3 L103.0,42.5 L103.5,42.8 L104.0,42.8 L104.5,43.3 L105.0,44.1 L105.5,44.7 L106.0,45.0 L106.5,45.5 L107.0,45.6 L107.5,45.5 L108.0,43.7 L108.5,42.3 L109.0,40.4 L109.5,40.1 L110.0,40.3 L110.5,40.2 L111.0,40.5 L111.5,40.3 L112.0,40.9 L112.5,41.8 L113.0,42.9 L113.5,41.6 L114.0,41.1 L114.5,41.4 L115.0,38.5 L115.5,39.0 L116.0,38.8 L116.5,40.4 L117.0,40.4 L117.5,41.5 L118.0,41.4 L118.5,42.4 L119.0,42.1 L119.5,41.8 L120.0,41.4 L120.5,40.8 L121.0,40.6 L121.5,40.5 L122.0,40.4 L122.5,40.9 L123.0,40.4 L123.5,41.3 L124.0,41.9 L124.5,42.2 L125.0,42.1 L125.5,42.0 L126.0,42.2 L126.5,42.8 L127.0,43.4 L127.5,43.6 L128.0,44.3 L128.5,44.7 L129.0,44.8 L129.5,45.6 L130.0,45.9 L130.5,44.9 L131.0,43.6 L131.5,42.4 L132.0,40.6 L132.5,39.7 L133.0,40.1 L133.5,40.6 L134.0,40.8 L134.5,40.7 L135.0,41.3 L135.5,42.0 L136.0,42.4 L136.5,41.7 L137.0,40.6 L137.5,40.3 L138.0,38.5 L138.5,38.2 L139.0,38.4 L139.5,40.5 L140.0,40.7 L140.5,41.3 L141.0,41.8 L141.5,42.7 L142.0,42.0 L142.5,41.8 L143.0,41.0 L143.5,40.6 L144.0,39.8 L144.5,40.3 L145.0,40.5 L145.5,40.7 L146.0,40.5 L146.5,41.8 L147.0,42.3 L147.5,42.6 L148.0,42.5 L148.5,42.5 L149.0,42.4 L149.5,42.7 L150.0,43.4 L150.5,43.8 L151.0,44.3 L151.5,45.1 L152.0,45.5 L152.5,45.9 L153.0,45.7 L153.5,44.6 L154.0,43.1 L154.5,41.2 L155.0,40.4 L155.5,39.9 L156.0,40.2 L156.5,40.3 L157.0,40.7 L157.5,40.9 L158.0,41.5 L158.5,42.6 L159.0,42.8 L159.5,41.6 L160.0,41.2 L160.5,38.6 L161.0,38.8 L161.5,38.6 L162.0,39.0 L162.5,40.2 L163.0,40.9 L163.5,41.5 L164.0,41.7 L164.5,42.6 L165.0,42.5 L165.5,41.3 L166.0,41.0 L166.5,40.8 L167.0,40.2 L167.5,39.6 L168.0,40.5 L168.5,40.9 L169.0,40.7 L169.5,42.2 L170.0,42.4 L170.5,42.9 L171.0,42.5 L171.5,42.0 L172.0,42.3 L172.5,42.7 L173.0,43.8 L173.5,44.0 L174.0,44.5 L174.5,44.9 L175.0,45.1 L175.5,45.7 L176.0,46.0 L176.5,44.6 L177.0,43.1 L177.5,40.5 L178.0,40.8 L178.5,40.6 L179.0,39.6 L179.5,40.5 L180.0,40.3 L180.5,41.0 L181.0,42.1 L181.5,42.4 L182.0,42.1 L182.5,41.5 L182.5,53.3 L182.0,52.2 L181.5,52.3 L181.0,52.5 L180.5,53.4 L180.0,54.0 L179.5,54.5 L179.0,54.7 L178.5,54.3 L178.0,54.1 L177.5,54.1 L177.0,51.7 L176.5,50.2 L176.0,48.7 L175.5,49.0 L175.0,49.4 L174.5,49.8 L174.0,50.2 L173.5,50.6 L173.0,51.0 L172.5,51.7 L172.0,52.0 L171.5,52.5 L171.0,52.4 L170.5,52.0 L170.0,52.1 L169.5,52.6 L169.0,53.5 L168.5,53.8 L168.0,54.3 L167.5,54.7 L167.0,54.4 L166.5,54.1 L166.0,53.6 L165.5,53.1 L165.0,52.4 L164.5,52.0 L164.0,52.9 L163.5,53.2 L163.0,53.9 L162.5,54.3 L162.0,55.8 L161.5,56.3 L161.0,56.2 L160.5,55.7 L160.0,53.2 L159.5,52.7 L159.0,52.0 L158.5,52.0 L158.0,52.9 L157.5,53.7 L157.0,54.0 L156.5,54.5 L156.0,54.7 L155.5,54.7 L155.0,54.3 L154.5,53.4 L154.0,51.6 L153.5,50.0 L153.0,48.8 L152.5,48.7 L152.0,49.1 L151.5,49.5 L151.0,50.3 L150.5,51.0 L150.0,51.2 L149.5,51.9 L149.0,52.3 L148.5,52.1 L148.0,52.3 L147.5,52.0 L147.0,52.5 L146.5,52.9 L146.0,53.7 L145.5,54.3 L145.0,54.2 L144.5,54.4 L144.0,54.6 L143.5,53.9 L143.0,53.6 L142.5,53.0 L142.0,52.4 L141.5,51.9 L141.0,53.0 L140.5,53.5 L140.0,54.2 L139.5,54.2 L139.0,55.8 L138.5,56.3 L138.0,55.7 L137.5,53.9 L137.0,53.6 L136.5,52.8 L136.0,52.2 L135.5,52.4 L135.0,53.1 L134.5,53.9 L134.0,54.1 L133.5,54.4 L133.0,54.6 L132.5,54.7 L132.0,53.8 L131.5,52.4 L131.0,51.2 L130.5,49.7 L130.0,48.7 L129.5,49.0 L129.0,49.7 L128.5,49.9 L128.0,50.2 L127.5,51.1 L127.0,51.5 L126.5,51.9 L126.0,52.2 L125.5,52.4 L125.0,52.3 L124.5,52.1 L124.0,52.4 L123.5,53.4 L123.0,53.9 L122.5,54.1 L122.0,54.5 L121.5,54.6 L121.0,54.1 L120.5,54.2 L120.0,53.5 L119.5,53.1 L119.0,52.4 L118.5,52.2 L118.0,52.9 L117.5,53.3 L117.0,53.8 L116.5,54.6 L116.0,56.1 L115.5,55.8 L115.0,55.7 L114.5,53.6 L114.0,53.2 L113.5,52.8 L113.0,51.7 L112.5,52.5 L112.0,53.6 L111.5,54.0 L111.0,54.1 L110.5,54.2 L110.0,54.4 L109.5,54.3 L109.0,53.9 L108.5,52.3 L108.0,50.7 L107.5,49.0 L107.0,48.9 L106.5,49.1 L106.0,49.7 L105.5,50.0 L105.0,50.5 L104.5,51.1 L104.0,51.9 L103.5,51.9 L103.0,52.4 L102.5,52.2 L102.0,52.2 L101.5,52.4 L101.0,52.9 L100.5,53.3 L100.0,53.9 L99.5,54.6 L99.0,54.6 L98.5,54.4 L98.0,54.0 L97.5,53.9 L97.0,53.4 L96.5,52.9 L96.0,52.2 L95.5,52.3 L95.0,53.0 L94.5,54.0 L94.0,54.3 L93.5,55.7 L93.0,56.0 L92.5,55.8 L92.0,55.5 L91.5,53.9 L91.0,52.9 L90.5,52.2 L90.0,52.2 L89.5,52.7 L89.0,53.6 L88.5,54.0 L88.0,54.2 L87.5,54.8 L87.0,54.4 L86.5,54.5 L86.0,53.6 L85.5,51.6 L85.0,49.8 L84.5,48.7 L84.0,48.9 L83.5,49.5 L83.0,49.5 L82.5,50.4 L82.0,51.0 L81.5,51.0 L81.0,51.7 L80.5,51.8 L80.0,52.1 L79.5,52.1 L79.0,52.0 L78.5,52.4 L78.0,52.7 L77.5,53.5 L77.0,54.1 L76.5,54.4 L76.0,54.7 L75.5,54.2 L75.0,54.3 L74.5,53.9 L74.0,53.3 L73.5,52.4 L73.0,51.8 L72.5,52.5 L72.0,53.6 L71.5,53.6 L71.0,54.5 L70.5,56.0 L70.0,56.3 L69.5,55.8 L69.0,53.9 L68.5,53.3 L68.0,52.9 L67.5,51.9 L67.0,52.1 L66.5,52.9 L66.0,53.6 L65.5,54.1 L65.0,54.4 L64.5,54.5 L64.0,54.3 L63.5,53.9 L63.0,52.9 L62.5,51.4 L62.0,49.5 L61.5,48.7 L61.0,48.9 L60.5,49.3 L60.0,49.9 L59.5,50.5 L59.0,50.8 L58.5,51.5 L58.0,51.9 L57.5,52.2 L57.0,52.1 L56.5,52.5 L56.0,51.9 L55.5,52.3 L55.0,53.1 L54.5,53.9 L54.0,54.0 L53.5,54.7 L53.0,54.5 L52.5,54.4 L52.0,53.8 L51.5,53.6 L51.0,53.0 L50.5,52.5 L50.0,52.5 L49.5,52.6 L49.0,53.4 L48.5,53.9 L48.0,54.6 L47.5,56.4 L47.0,56.4 L46.5,55.9 L46.0,53.7 L45.5,53.2 L45.0,52.6 L44.5,51.9 L44.0,52.6 L43.5,53.0 L43.0,54.0 L42.5,54.5 L42.0,54.7 L41.5,54.5 L41.0,54.1 L40.5,54.3 L40.0,52.3 L39.5,51.0 L39.0,49.1 L38.5,48.7 L38.0,49.1 L37.5,49.4 L37.0,50.1 L36.5,50.6 L36.0,51.2 L35.5,51.4 L35.0,51.9 L34.5,52.1 L34.0,52.3 L33.5,52.3 L33.0,51.8 L32.5,52.5 L32.0,53.2 L31.5,53.8 L31.0,54.1 L30.5,54.7 L30.0,54.7 L29.5,54.6 L29.0,53.9 L28.5,53.5 L28.0,53.1 L27.5,52.2 L27.0,52.5 L26.5,53.3 L26.0,53.5 L25.5,54.3 L25.0,55.8 L24.5,55.8 L24.0,55.9 L23.5,55.6 L23.0,54.0 L22.5,52.8 L22.0,52.3 L21.5,52.1 L21.0,52.6 L20.5,53.7 L20.0,53.8 L19.5,54.6 L19.0,54.2 L18.5,54.6 L18.0,54.0 L17.5,54.1 L17.0,52.0 L16.5,50.3 L16.0,48.8 L15.5,48.8 L15.0,49.1 L14.5,49.6 L14.0,50.3 L13.5,50.5 L13.0,51.4 L12.5,51.6 L12.0,51.9 L11.5,52.1 L11.0,52.6 L10.5,52.1 L10.0,52.2 L9.5,53.0 L9.0,53.5 L8.5,54.3 L8.0,54.6 L7.5,54.2 L7.0,54.2 L6.5,54.0 L6.0,53.9 L5.5,53.4 L5.0,52.5 L4.5,52.2 L4.0,52.3 L3.5,53.2 L3.0,53.7 L2.5,54.3 L2.0,55.9 L1.5,56.2 L1.0,55.7Z" fill="#1d1d24"/></svg>
<div style="left:383.20px;top:249.50px;width:182.40px;height:90.20px;background:#98a7f5;"></div>
<div style="left:383.20px;top:338.70px;width:182.40px;height:1.00px;background:#535b86;"></div>
<div style="left:383.20px;top:276.40px;width:182.40px;height:1.20px;background:#6d78b0;"></div>
<div style="left:405.25px;top:277.00px;width:1.00px;height:61.70px;background:#828fd2;"></div>
<div style="left:428.11px;top:277.00px;width:1.00px;height:61.70px;background:#828fd2;"></div>
<div style="left:450.97px;top:277.00px;width:1.00px;height:61.70px;background:#828fd2;"></div>
<div style="left:473.83px;top:277.00px;width:1.00px;height:61.70px;background:#828fd2;"></div>
<div style="left:496.69px;top:277.00px;width:1.00px;height:61.70px;background:#828fd2;"></div>
<div style="left:519.55px;top:277.00px;width:1.00px;height:61.70px;background:#828fd2;"></div>
<div style="left:542.41px;top:277.00px;width:1.00px;height:61.70px;background:#828fd2;"></div>
<div style="left:382.70px;top:249.50px;width:1.10px;height:90.20px;background:#444b6e;"></div>
<svg style="position:absolute;left:383.20px;top:277.00px;" width="182.40" height="61.70" viewBox="0 0 182.40 61.70"><rect x="177.40000000000003" y="0" width="5" height="61.69999999999999" fill="rgba(40,50,110,0.18)"/><rect x="0" y="0" width="4" height="61.69999999999999" fill="rgba(40,50,110,0.10)"/><path d="M1.0,6.9 L1.5,8.2 L2.0,9.3 L2.5,9.2 L3.0,10.0 L3.5,10.6 L4.0,11.1 L4.5,9.9 L5.0,9.4 L5.5,9.2 L6.0,8.5 L6.5,8.6 L7.0,8.9 L7.5,9.3 L8.0,9.0 L8.5,9.5 L9.0,10.1 L9.5,11.2 L10.0,10.5 L10.5,11.1 L11.0,10.6 L11.5,11.3 L12.0,11.6 L12.5,12.2 L13.0,12.6 L13.5,13.4 L14.0,13.6 L14.5,14.1 L15.0,14.3 L15.5,13.6 L16.0,12.0 L16.5,10.4 L17.0,9.1 L17.5,8.0 L18.0,9.1 L18.5,8.4 L19.0,9.0 L19.5,9.1 L20.0,9.9 L20.5,10.4 L21.0,11.2 L21.5,10.2 L22.0,9.8 L22.5,9.5 L23.0,6.7 L23.5,6.6 L24.0,7.3 L24.5,9.3 L25.0,9.5 L25.5,9.6 L26.0,10.3 L26.5,10.8 L27.0,10.5 L27.5,9.8 L28.0,8.8 L28.5,8.6 L29.0,8.8 L29.5,8.2 L30.0,8.6 L30.5,8.6 L31.0,9.2 L31.5,10.1 L32.0,11.0 L32.5,10.9 L33.0,11.0 L33.5,10.7 L34.0,10.8 L34.5,11.4 L35.0,11.9 L35.5,12.5 L36.0,12.7 L36.5,13.2 L37.0,13.6 L37.5,14.1 L38.0,14.3 L38.5,13.5 L39.0,11.7 L39.5,9.1 L40.0,8.9 L40.5,8.3 L41.0,8.4 L41.5,8.3 L42.0,8.5 L42.5,9.5 L43.0,10.0 L43.5,11.0 L44.0,11.0 L44.5,9.9 L45.0,9.4 L45.5,7.0 L46.0,7.0 L46.5,7.4 L47.0,6.9 L47.5,8.1 L48.0,8.7 L48.5,9.9 L49.0,10.2 L49.5,11.5 L50.0,9.9 L50.5,9.2 L51.0,8.9 L51.5,8.5 L52.0,8.9 L52.5,8.2 L53.0,8.6 L53.5,8.8 L54.0,10.0 L54.5,9.9 L55.0,10.9 L55.5,11.1 L56.0,11.0 L56.5,10.7 L57.0,11.0 L57.5,11.6 L58.0,11.6 L58.5,12.1 L59.0,13.0 L59.5,13.2 L60.0,13.8 L60.5,14.2 L61.0,14.2 L61.5,12.7 L62.0,11.1 L62.5,9.1 L63.0,8.8 L63.5,8.5 L64.0,8.3 L64.5,9.0 L65.0,8.9 L65.5,9.5 L66.0,10.0 L66.5,10.9 L67.0,10.8 L67.5,10.4 L68.0,8.9 L68.5,7.5 L69.0,6.9 L69.5,7.1 L70.0,6.7 L70.5,8.7 L71.0,9.1 L71.5,10.4 L72.0,10.6 L72.5,10.9 L73.0,10.2 L73.5,9.8 L74.0,9.3 L74.5,8.6 L75.0,8.1 L75.5,8.5 L76.0,8.8 L76.5,9.3 L77.0,9.5 L77.5,10.4 L78.0,11.0 L78.5,10.4 L79.0,10.8 L79.5,11.0 L80.0,11.0 L80.5,11.7 L81.0,12.0 L81.5,12.7 L82.0,12.8 L82.5,13.3 L83.0,14.1 L83.5,13.9 L84.0,13.8 L84.5,12.5 L85.0,10.9 L85.5,9.4 L86.0,8.4 L86.5,7.9 L87.0,8.9 L87.5,8.6 L88.0,9.0 L88.5,9.4 L89.0,10.0 L89.5,11.0 L90.0,10.2 L90.5,10.0 L91.0,9.6 L91.5,7.3 L92.0,7.0 L92.5,7.4 L93.0,9.0 L93.5,9.1 L94.0,9.5 L94.5,9.8 L95.0,10.7 L95.5,10.6 L96.0,10.2 L96.5,9.2 L97.0,8.6 L97.5,8.9 L98.0,8.5 L98.5,8.4 L99.0,8.4 L99.5,8.7 L100.0,9.5 L100.5,10.8 L101.0,11.2 L101.5,10.5 L102.0,10.8 L102.5,10.9 L103.0,11.3 L103.5,11.8 L104.0,11.9 L104.5,12.5 L105.0,13.3 L105.5,13.8 L106.0,14.0 L106.5,14.3 L107.0,13.2 L107.5,11.6 L108.0,9.4 L108.5,8.8 L109.0,8.4 L109.5,8.3 L110.0,8.8 L110.5,9.0 L111.0,9.5 L111.5,9.6 L112.0,10.2 L112.5,10.8 L113.0,10.5 L113.5,9.0 L114.0,8.7 L114.5,7.8 L115.0,6.6 L115.5,7.4 L116.0,9.0 L116.5,9.2 L117.0,9.6 L117.5,10.8 L118.0,10.8 L118.5,10.5 L119.0,9.5 L119.5,9.4 L120.0,9.2 L120.5,8.8 L121.0,8.8 L121.5,9.0 L122.0,9.2 L122.5,9.9 L123.0,9.6 L123.5,10.6 L124.0,10.7 L124.5,10.2 L125.0,10.5 L125.5,10.6 L126.0,11.1 L126.5,11.8 L127.0,12.5 L127.5,12.7 L128.0,13.4 L128.5,13.8 L129.0,13.8 L129.5,14.3 L130.0,13.3 L130.5,11.0 L131.0,9.5 L131.5,9.4 L132.0,8.6 L132.5,8.0 L133.0,8.7 L133.5,9.4 L134.0,9.8 L134.5,9.9 L135.0,10.7 L135.5,10.6 L136.0,9.8 L136.5,9.2 L137.0,6.6 L137.5,6.5 L138.0,6.6 L138.5,6.6 L139.0,8.8 L139.5,9.5 L140.0,9.9 L140.5,10.6 L141.0,10.9 L141.5,10.5 L142.0,9.5 L142.5,9.4 L143.0,8.8 L143.5,8.7 L144.0,8.2 L144.5,8.9 L145.0,9.3 L145.5,9.8 L146.0,9.8 L146.5,11.1 L147.0,10.8 L147.5,10.7 L148.0,10.9 L148.5,11.2 L149.0,11.3 L149.5,11.7 L150.0,12.6 L150.5,12.9 L151.0,13.4 L151.5,14.1 L152.0,14.3 L152.5,14.3 L153.0,12.2 L153.5,10.7 L154.0,9.0 L154.5,8.6 L155.0,8.5 L155.5,8.3 L156.0,8.8 L156.5,9.2 L157.0,9.8 L157.5,10.1 L158.0,10.9 L158.5,10.8 L159.0,10.3 L159.5,9.1 L160.0,7.3 L160.5,6.6 L161.0,7.1 L161.5,8.7 L162.0,9.4 L162.5,9.2 L163.0,10.1 L163.5,10.8 L164.0,10.5 L164.5,10.0 L165.0,10.0 L165.5,9.0 L166.0,8.9 L166.5,8.9 L167.0,8.6 L167.5,8.3 L168.0,9.4 L168.5,10.0 L169.0,10.1 L169.5,11.5 L170.0,10.7 L170.5,11.2 L171.0,11.1 L171.5,10.8 L172.0,11.3 L172.5,11.8 L173.0,12.9 L173.5,13.1 L174.0,13.6 L174.5,13.9 L175.0,14.0 L175.5,13.6 L176.0,12.6 L176.5,10.6 L177.0,9.5 L177.5,8.4 L178.0,8.9 L178.5,9.0 L179.0,8.3 L179.5,9.4 L180.0,9.5 L180.5,10.4 L181.0,11.3 L181.0,20.1 L180.5,20.9 L180.0,21.6 L179.5,22.3 L179.0,22.7 L178.5,22.7 L178.0,22.8 L177.5,23.1 L177.0,22.2 L176.5,21.1 L176.0,19.0 L175.5,17.9 L175.0,17.4 L174.5,17.5 L174.0,17.9 L173.5,18.3 L173.0,18.7 L172.5,19.4 L172.0,19.9 L171.5,20.5 L171.0,20.6 L170.5,20.5 L170.0,20.7 L169.5,20.1 L169.0,21.0 L168.5,21.5 L168.0,22.2 L167.5,22.9 L167.0,22.8 L166.5,22.8 L166.0,22.6 L165.5,22.2 L165.0,21.7 L164.5,21.4 L164.0,20.9 L163.5,20.7 L163.0,21.5 L162.5,22.1 L162.0,22.2 L161.5,23.0 L161.0,24.7 L160.5,24.5 L160.0,23.9 L159.5,22.0 L159.0,21.4 L158.5,20.6 L158.0,20.3 L157.5,21.2 L157.0,21.7 L156.5,22.4 L156.0,22.8 L155.5,23.1 L155.0,23.0 L154.5,22.8 L154.0,22.5 L153.5,20.8 L153.0,19.0 L152.5,17.1 L152.0,17.1 L151.5,17.3 L151.0,18.0 L150.5,18.7 L150.0,18.9 L149.5,19.6 L149.0,20.2 L148.5,20.2 L148.0,20.7 L147.5,20.6 L147.0,20.8 L146.5,20.4 L146.0,21.3 L145.5,22.0 L145.0,22.1 L144.5,22.6 L144.0,23.1 L143.5,22.6 L143.0,22.5 L142.5,22.2 L142.0,21.7 L141.5,20.9 L141.0,20.6 L140.5,21.0 L140.0,21.8 L139.5,22.1 L139.0,22.3 L138.5,24.7 L138.0,24.3 L137.5,24.4 L137.0,24.3 L136.5,22.1 L136.0,21.5 L135.5,20.6 L135.0,20.5 L134.5,21.5 L134.0,21.8 L133.5,22.3 L133.0,22.8 L132.5,23.2 L132.0,22.6 L131.5,22.3 L131.0,22.2 L130.5,20.4 L130.0,18.1 L129.5,17.1 L129.0,17.5 L128.5,17.6 L128.0,17.9 L127.5,18.7 L127.0,19.1 L126.5,19.7 L126.0,20.1 L125.5,20.6 L125.0,20.6 L124.5,20.9 L124.0,20.5 L123.5,20.9 L123.0,21.5 L122.5,21.9 L122.0,22.5 L121.5,22.8 L121.0,22.7 L120.5,23.0 L120.0,22.6 L119.5,22.3 L119.0,21.8 L118.5,20.8 L118.0,20.3 L117.5,20.8 L117.0,21.5 L116.5,22.5 L116.0,22.7 L115.5,24.2 L115.0,24.4 L114.5,24.1 L114.0,22.4 L113.5,22.1 L113.0,21.0 L112.5,20.4 L112.0,21.1 L111.5,21.6 L111.0,21.9 L110.5,22.2 L110.0,22.7 L109.5,22.9 L109.0,22.7 L108.5,22.7 L108.0,21.7 L107.5,19.6 L107.0,18.1 L106.5,17.1 L106.0,17.5 L105.5,17.7 L105.0,18.2 L104.5,18.7 L104.0,19.6 L103.5,19.7 L103.0,20.4 L102.5,20.4 L102.0,20.7 L101.5,21.0 L101.0,20.5 L100.5,20.8 L100.0,21.6 L99.5,22.4 L99.0,22.6 L98.5,22.8 L98.0,22.6 L97.5,22.7 L97.0,22.5 L96.5,22.2 L96.0,21.6 L95.5,20.6 L95.0,20.4 L94.5,21.5 L94.0,22.0 L93.5,22.1 L93.0,22.6 L92.5,24.3 L92.0,24.3 L91.5,24.5 L91.0,22.1 L90.5,21.6 L90.0,21.1 L89.5,20.1 L89.0,21.1 L88.5,21.7 L88.0,22.1 L87.5,22.9 L87.0,22.8 L86.5,23.1 L86.0,22.8 L85.5,22.3 L85.0,20.6 L84.5,19.1 L84.0,17.7 L83.5,17.4 L83.0,17.3 L82.5,18.1 L82.0,18.7 L81.5,18.6 L81.0,19.4 L80.5,19.7 L80.0,20.2 L79.5,20.4 L79.0,20.5 L78.5,20.8 L78.0,20.2 L77.5,21.0 L77.0,21.8 L76.5,22.3 L76.0,22.8 L75.5,22.6 L75.0,23.0 L74.5,22.9 L74.0,22.4 L73.5,21.7 L73.0,21.0 L72.5,20.4 L72.0,21.0 L71.5,21.2 L71.0,22.3 L70.5,22.4 L70.0,24.6 L69.5,24.4 L69.0,24.4 L68.5,24.0 L68.0,22.1 L67.5,21.2 L67.0,20.6 L66.5,20.3 L66.0,21.1 L65.5,21.8 L65.0,22.3 L64.5,22.7 L64.0,22.7 L63.5,22.7 L63.0,22.5 L62.5,22.5 L62.0,20.3 L61.5,18.6 L61.0,17.1 L60.5,17.1 L60.0,17.7 L59.5,18.2 L59.0,18.5 L58.5,19.1 L58.0,19.7 L57.5,20.1 L57.0,20.2 L56.5,20.9 L56.0,20.6 L55.5,20.4 L55.0,20.5 L54.5,21.5 L54.0,21.7 L53.5,22.7 L53.0,22.7 L52.5,22.9 L52.0,22.6 L51.5,22.6 L51.0,22.2 L50.5,21.8 L50.0,21.3 L49.5,20.1 L49.0,20.9 L48.5,21.6 L48.0,22.4 L47.5,22.9 L47.0,24.7 L46.5,24.6 L46.0,24.2 L45.5,23.9 L45.0,21.9 L44.5,21.3 L44.0,20.7 L43.5,20.5 L43.0,21.5 L42.5,22.2 L42.0,22.7 L41.5,22.7 L41.0,22.7 L40.5,23.1 L40.0,22.3 L39.5,22.0 L39.0,19.7 L38.5,18.0 L38.0,17.1 L37.5,17.2 L37.0,17.8 L36.5,18.2 L36.0,18.8 L35.5,19.0 L35.0,19.7 L34.5,20.0 L34.0,20.4 L33.5,20.7 L33.0,20.5 L32.5,20.4 L32.0,20.6 L31.5,21.4 L31.0,21.9 L30.5,22.7 L30.0,23.0 L29.5,23.2 L29.0,22.7 L28.5,22.5 L28.0,22.4 L27.5,21.6 L27.0,21.0 L26.5,20.7 L26.0,21.0 L25.5,22.0 L25.0,22.1 L24.5,22.4 L24.0,24.4 L23.5,24.3 L23.0,24.6 L22.5,22.0 L22.0,21.6 L21.5,21.2 L21.0,20.3 L20.5,21.1 L20.0,21.5 L19.5,22.4 L19.0,22.3 L18.5,22.9 L18.0,22.6 L17.5,23.0 L17.0,22.5 L16.5,21.3 L16.0,19.4 L15.5,17.8 L15.0,17.1 L14.5,17.4 L14.0,17.9 L13.5,18.2 L13.0,19.0 L12.5,19.4 L12.0,19.7 L11.5,20.1 L11.0,20.8 L10.5,20.5 L10.0,20.8 L9.5,20.5 L9.0,21.0 L8.5,21.9 L8.0,22.5 L7.5,22.3 L7.0,22.6 L6.5,22.7 L6.0,22.8 L5.5,22.5 L5.0,21.8 L4.5,21.6 L4.0,20.4 L3.5,20.6 L3.0,21.2 L2.5,22.1 L2.0,22.3 L1.5,22.9 L1.0,24.3Z" fill="#1d1d24"/><path d="M1.0,38.8 L1.5,40.4 L2.0,40.7 L2.5,40.7 L3.0,41.1 L3.5,42.6 L4.0,42.4 L4.5,42.0 L5.0,40.6 L5.5,40.6 L6.0,40.0 L6.5,40.3 L7.0,40.6 L7.5,40.5 L8.0,40.4 L8.5,41.4 L9.0,41.5 L9.5,42.4 L10.0,42.8 L10.5,42.2 L11.0,42.2 L11.5,42.9 L12.0,43.1 L12.5,44.1 L13.0,44.1 L13.5,44.7 L14.0,45.3 L14.5,45.4 L15.0,45.9 L15.5,45.0 L16.0,43.4 L16.5,42.1 L17.0,40.0 L17.5,40.6 L18.0,40.2 L18.5,39.6 L19.0,40.5 L19.5,40.9 L20.0,41.4 L20.5,42.1 L21.0,42.5 L21.5,41.9 L22.0,41.2 L22.5,40.5 L23.0,38.9 L23.5,39.3 L24.0,38.5 L24.5,40.5 L25.0,40.4 L25.5,41.3 L26.0,41.4 L26.5,42.1 L27.0,42.3 L27.5,41.7 L28.0,41.2 L28.5,40.2 L29.0,39.9 L29.5,40.2 L30.0,40.2 L30.5,40.5 L31.0,41.5 L31.5,41.2 L32.0,42.3 L32.5,42.5 L33.0,42.3 L33.5,42.6 L34.0,42.3 L34.5,42.6 L35.0,43.2 L35.5,44.0 L36.0,44.5 L36.5,44.6 L37.0,45.3 L37.5,45.6 L38.0,45.9 L38.5,44.9 L39.0,43.1 L39.5,41.3 L40.0,40.4 L40.5,39.5 L41.0,40.1 L41.5,40.7 L42.0,40.3 L42.5,41.0 L43.0,41.3 L43.5,42.5 L44.0,42.4 L44.5,41.3 L45.0,40.8 L45.5,39.5 L46.0,38.9 L46.5,38.6 L47.0,38.5 L47.5,40.4 L48.0,40.8 L48.5,41.3 L49.0,42.1 L49.5,42.1 L50.0,41.8 L50.5,41.7 L51.0,40.8 L51.5,39.9 L52.0,40.1 L52.5,40.4 L53.0,40.0 L53.5,40.4 L54.0,41.1 L54.5,41.8 L55.0,42.2 L55.5,42.1 L56.0,42.2 L56.5,42.7 L57.0,42.4 L57.5,42.7 L58.0,43.4 L58.5,43.7 L59.0,44.6 L59.5,44.9 L60.0,45.2 L60.5,45.9 L61.0,45.6 L61.5,44.3 L62.0,42.6 L62.5,40.3 L63.0,40.2 L63.5,40.1 L64.0,39.8 L64.5,40.2 L65.0,40.5 L65.5,40.8 L66.0,42.0 L66.5,42.3 L67.0,42.3 L67.5,41.9 L68.0,41.0 L68.5,39.2 L69.0,38.3 L69.5,38.9 L70.0,38.8 L70.5,40.9 L71.0,40.4 L71.5,41.7 L72.0,41.8 L72.5,42.4 L73.0,41.4 L73.5,40.9 L74.0,40.8 L74.5,40.4 L75.0,40.3 L75.5,40.0 L76.0,40.4 L76.5,40.7 L77.0,41.1 L77.5,42.0 L78.0,42.2 L78.5,42.3 L79.0,42.3 L79.5,42.6 L80.0,42.8 L80.5,43.1 L81.0,43.4 L81.5,44.3 L82.0,44.6 L82.5,45.4 L83.0,45.2 L83.5,45.7 L84.0,45.5 L84.5,43.7 L85.0,42.0 L85.5,40.5 L86.0,40.5 L86.5,39.6 L87.0,39.5 L87.5,40.0 L88.0,41.1 L88.5,41.4 L89.0,41.5 L89.5,42.6 L90.0,41.6 L90.5,41.7 L91.0,40.6 L91.5,39.0 L92.0,38.5 L92.5,38.3 L93.0,40.0 L93.5,40.3 L94.0,40.9 L94.5,41.6 L95.0,42.4 L95.5,42.5 L96.0,41.8 L96.5,41.3 L97.0,40.4 L97.5,40.3 L98.0,39.7 L98.5,39.5 L99.0,40.9 L99.5,41.2 L100.0,41.3 L100.5,41.9 L101.0,42.3 L101.5,42.1 L102.0,42.6 L102.5,42.4 L103.0,42.5 L103.5,42.9 L104.0,44.0 L104.5,44.2 L105.0,45.0 L105.5,45.4 L106.0,45.9 L106.5,46.0 L107.0,44.8 L107.5,43.4 L108.0,41.7 L108.5,40.2 L109.0,40.0 L109.5,39.8 L110.0,40.3 L110.5,40.4 L111.0,40.6 L111.5,41.5 L112.0,41.8 L112.5,42.8 L113.0,42.0 L113.5,41.0 L114.0,40.8 L114.5,39.3 L115.0,38.5 L115.5,38.6 L116.0,40.5 L116.5,40.7 L117.0,41.2 L117.5,41.8 L118.0,42.7 L118.5,42.1 L119.0,41.5 L119.5,41.3 L120.0,40.1 L120.5,40.2 L121.0,40.2 L121.5,39.7 L122.0,40.6 L122.5,40.7 L123.0,41.2 L123.5,42.3 L124.0,42.0 L124.5,42.2 L125.0,42.1 L125.5,42.2 L126.0,42.9 L126.5,43.7 L127.0,43.5 L127.5,44.3 L128.0,45.0 L128.5,45.0 L129.0,45.4 L129.5,45.8 L130.0,45.0 L130.5,42.8 L131.0,41.1 L131.5,40.7 L132.0,40.1 L132.5,39.9 L133.0,40.5 L133.5,40.6 L134.0,41.2 L134.5,41.8 L135.0,42.3 L135.5,42.3 L136.0,41.6 L136.5,40.8 L137.0,38.6 L137.5,38.4 L138.0,38.7 L138.5,38.5 L139.0,40.8 L139.5,41.3 L140.0,41.8 L140.5,41.8 L141.0,42.5 L141.5,41.7 L142.0,41.3 L142.5,40.7 L143.0,40.5 L143.5,40.4 L144.0,40.4 L144.5,40.6 L145.0,40.7 L145.5,41.4 L146.0,41.7 L146.5,42.5 L147.0,42.2 L147.5,41.8 L148.0,42.2 L148.5,42.9 L149.0,42.8 L149.5,43.7 L150.0,43.9 L150.5,44.6 L151.0,44.8 L151.5,45.3 L152.0,45.8 L152.5,45.8 L153.0,44.3 L153.5,42.4 L154.0,40.2 L154.5,40.3 L155.0,40.5 L155.5,39.5 L156.0,40.3 L156.5,40.8 L157.0,41.4 L157.5,42.3 L158.0,42.6 L158.5,42.5 L159.0,41.6 L159.5,40.6 L160.0,38.2 L160.5,39.3 L161.0,38.4 L161.5,40.1 L162.0,40.5 L162.5,40.9 L163.0,41.7 L163.5,42.5 L164.0,42.2 L164.5,41.7 L165.0,40.5 L165.5,40.9 L166.0,40.6 L166.5,40.3 L167.0,39.8 L167.5,40.2 L168.0,40.8 L168.5,41.1 L169.0,42.1 L169.5,42.9 L170.0,42.1 L170.5,42.4 L171.0,42.5 L171.5,43.0 L172.0,43.3 L172.5,43.3 L173.0,44.3 L173.5,45.0 L174.0,45.3 L174.5,45.4 L175.0,45.6 L175.5,45.2 L176.0,44.0 L176.5,41.9 L177.0,40.8 L177.5,40.4 L178.0,39.9 L178.5,40.3 L179.0,40.7 L179.5,40.9 L180.0,41.3 L180.5,42.2 L181.0,42.6 L181.0,51.8 L180.5,52.2 L180.0,53.2 L179.5,54.0 L179.0,54.0 L178.5,54.6 L178.0,54.8 L177.5,54.1 L177.0,54.2 L176.5,52.7 L176.0,50.8 L175.5,49.3 L175.0,49.0 L174.5,49.2 L174.0,49.3 L173.5,49.7 L173.0,50.3 L172.5,51.1 L172.0,51.3 L171.5,51.8 L171.0,52.1 L170.5,52.5 L170.0,52.4 L169.5,51.8 L169.0,52.5 L168.5,53.5 L168.0,53.6 L167.5,54.5 L167.0,54.7 L166.5,54.3 L166.0,54.3 L165.5,54.1 L165.0,53.8 L164.5,52.6 L164.0,52.4 L163.5,52.0 L163.0,53.2 L162.5,53.9 L162.0,54.2 L161.5,54.4 L161.0,56.2 L160.5,55.8 L160.0,56.0 L159.5,53.7 L159.0,53.4 L158.5,52.2 L158.0,51.8 L157.5,52.5 L157.0,53.5 L156.5,53.7 L156.0,54.1 L155.5,54.8 L155.0,54.3 L154.5,54.0 L154.0,54.2 L153.5,52.1 L153.0,50.2 L152.5,48.8 L152.0,48.8 L151.5,49.3 L151.0,49.7 L150.5,49.9 L150.0,50.8 L149.5,51.1 L149.0,51.7 L148.5,51.8 L148.0,52.5 L147.5,52.6 L147.0,52.2 L146.5,52.4 L146.0,52.9 L145.5,53.5 L145.0,53.9 L144.5,54.3 L144.0,54.4 L143.5,54.3 L143.0,54.4 L142.5,53.9 L142.0,53.3 L141.5,53.0 L141.0,52.2 L140.5,52.5 L140.0,52.9 L139.5,53.5 L139.0,54.1 L138.5,55.9 L138.0,55.8 L137.5,56.1 L137.0,55.6 L136.5,53.6 L136.0,52.7 L135.5,52.1 L135.0,52.5 L134.5,52.7 L134.0,53.4 L133.5,54.2 L133.0,54.1 L132.5,54.4 L132.0,54.3 L131.5,54.2 L131.0,53.3 L130.5,51.5 L130.0,49.8 L129.5,48.7 L129.0,49.2 L128.5,49.5 L128.0,49.7 L127.5,50.2 L127.0,51.0 L126.5,51.0 L126.0,52.0 L125.5,52.4 L125.0,52.3 L124.5,52.6 L124.0,52.5 L123.5,52.5 L123.0,53.2 L122.5,53.7 L122.0,53.8 L121.5,54.5 L121.0,54.2 L120.5,54.6 L120.0,54.2 L119.5,53.5 L119.0,52.9 L118.5,52.2 L118.0,52.1 L117.5,52.9 L117.0,53.3 L116.5,54.1 L116.0,54.3 L115.5,56.1 L115.0,56.0 L114.5,55.6 L114.0,54.0 L113.5,53.4 L113.0,52.7 L112.5,51.8 L112.0,52.6 L111.5,53.2 L111.0,53.7 L110.5,54.2 L110.0,54.3 L109.5,54.8 L109.0,54.2 L108.5,54.2 L108.0,52.7 L107.5,51.1 L107.0,49.7 L106.5,48.7 L106.0,48.8 L105.5,49.1 L105.0,49.7 L104.5,50.2 L104.0,50.8 L103.5,51.5 L103.0,51.9 L102.5,52.3 L102.0,52.1 L101.5,52.4 L101.0,52.0 L100.5,52.5 L100.0,53.4 L99.5,53.6 L99.0,54.1 L98.5,54.7 L98.0,54.6 L97.5,54.2 L97.0,54.1 L96.5,53.6 L96.0,52.8 L95.5,52.3 L95.0,52.5 L94.5,52.7 L94.0,53.6 L93.5,54.1 L93.0,54.3 L92.5,56.2 L92.0,56.2 L91.5,55.7 L91.0,53.6 L90.5,53.0 L90.0,52.8 L89.5,51.8 L89.0,52.9 L88.5,53.4 L88.0,53.8 L87.5,54.4 L87.0,54.7 L86.5,54.6 L86.0,54.3 L85.5,54.1 L85.0,52.5 L84.5,50.8 L84.0,49.2 L83.5,49.0 L83.0,49.3 L82.5,49.3 L82.0,50.2 L81.5,50.3 L81.0,51.2 L80.5,51.5 L80.0,52.0 L79.5,52.2 L79.0,52.1 L78.5,52.4 L78.0,52.2 L77.5,52.4 L77.0,53.6 L76.5,53.8 L76.0,54.3 L75.5,54.5 L75.0,54.4 L74.5,54.5 L74.0,54.1 L73.5,53.6 L73.0,53.0 L72.5,52.2 L72.0,52.5 L71.5,52.9 L71.0,53.8 L70.5,53.9 L70.0,55.8 L69.5,56.0 L69.0,56.1 L68.5,55.8 L68.0,53.8 L67.5,52.9 L67.0,52.5 L66.5,52.4 L66.0,52.7 L65.5,53.6 L65.0,53.9 L64.5,54.3 L64.0,54.7 L63.5,54.4 L63.0,54.4 L62.5,54.2 L62.0,51.8 L61.5,50.4 L61.0,49.1 L60.5,48.7 L60.0,49.4 L59.5,49.9 L59.0,49.9 L58.5,50.9 L58.0,51.3 L57.5,51.8 L57.0,52.2 L56.5,52.1 L56.0,52.4 L55.5,52.2 L55.0,52.5 L54.5,53.0 L54.0,53.4 L53.5,53.9 L53.0,54.3 L52.5,54.2 L52.0,54.5 L51.5,54.3 L51.0,54.1 L50.5,53.0 L50.0,52.5 L49.5,52.2 L49.0,52.5 L48.5,53.2 L48.0,53.8 L47.5,54.2 L47.0,56.3 L46.5,56.0 L46.0,56.2 L45.5,55.5 L45.0,53.6 L44.5,53.1 L44.0,52.1 L43.5,52.0 L43.0,53.1 L42.5,53.3 L42.0,53.9 L41.5,54.2 L41.0,54.6 L40.5,54.7 L40.0,54.4 L39.5,53.1 L39.0,51.5 L38.5,49.8 L38.0,48.7 L37.5,49.0 L37.0,49.3 L36.5,50.0 L36.0,50.1 L35.5,50.5 L35.0,51.3 L34.5,51.8 L34.0,52.3 L33.5,52.1 L33.0,52.6 L32.5,52.2 L32.0,52.1 L31.5,53.3 L31.0,53.4 L30.5,54.2 L30.0,54.3 L29.5,54.6 L29.0,54.3 L28.5,54.0 L28.0,53.7 L27.5,53.0 L27.0,52.2 L26.5,52.3 L26.0,53.0 L25.5,53.5 L25.0,54.0 L24.5,54.2 L24.0,56.0 L23.5,55.8 L23.0,56.0 L22.5,54.1 L22.0,53.4 L21.5,52.5 L21.0,52.3 L20.5,52.5 L20.0,53.4 L19.5,53.4 L19.0,54.3 L18.5,54.6 L18.0,54.5 L17.5,54.4 L17.0,54.3 L16.5,52.8 L16.0,51.2 L15.5,49.6 L15.0,48.7 L14.5,49.3 L14.0,49.4 L13.5,49.9 L13.0,50.4 L12.5,50.7 L12.0,51.7 L11.5,51.8 L11.0,52.3 L10.5,52.1 L10.0,52.0 L9.5,51.9 L9.0,52.8 L8.5,53.3 L8.0,53.8 L7.5,54.2 L7.0,54.4 L6.5,54.3 L6.0,54.6 L5.5,54.2 L5.0,53.8 L4.5,52.8 L4.0,52.4 L3.5,52.1 L3.0,53.2 L2.5,53.8 L2.0,54.3 L1.5,54.5 L1.0,56.4Z" fill="#1d1d24"/></svg>
<div style="left:565.60px;top:249.50px;width:184.10px;height:90.20px;background:#98a7f5;"></div>
<div style="left:565.60px;top:338.70px;width:184.10px;height:1.00px;background:#535b86;"></div>
<div style="left:565.60px;top:276.40px;width:184.10px;height:1.20px;background:#6d78b0;"></div>
<div style="left:588.14px;top:277.00px;width:1.00px;height:61.70px;background:#828fd2;"></div>
<div style="left:611.00px;top:277.00px;width:1.00px;height:61.70px;background:#828fd2;"></div>
<div style="left:633.86px;top:277.00px;width:1.00px;height:61.70px;background:#828fd2;"></div>
<div style="left:656.72px;top:277.00px;width:1.00px;height:61.70px;background:#828fd2;"></div>
<div style="left:679.58px;top:277.00px;width:1.00px;height:61.70px;background:#828fd2;"></div>
<div style="left:702.44px;top:277.00px;width:1.00px;height:61.70px;background:#828fd2;"></div>
<div style="left:725.30px;top:277.00px;width:1.00px;height:61.70px;background:#828fd2;"></div>
<div style="left:748.16px;top:277.00px;width:1.00px;height:61.70px;background:#828fd2;"></div>
<div style="left:565.10px;top:249.50px;width:1.10px;height:90.20px;background:#444b6e;"></div>
<div style="left:565.60px;top:291.70px;width:184.10px;height:2.00px;background:#1c1c2a;"></div>
<div style="left:565.60px;top:323.30px;width:184.10px;height:2.00px;background:#1c1c2a;"></div>
<div style="left:749.70px;top:249.50px;width:182.70px;height:90.20px;background:#98a7f5;"></div>
<div style="left:749.70px;top:338.70px;width:182.70px;height:1.00px;background:#535b86;"></div>
<div style="left:749.70px;top:276.40px;width:182.70px;height:1.20px;background:#6d78b0;"></div>
<div style="left:771.02px;top:277.00px;width:1.00px;height:61.70px;background:#828fd2;"></div>
<div style="left:793.89px;top:277.00px;width:1.00px;height:61.70px;background:#828fd2;"></div>
<div style="left:816.75px;top:277.00px;width:1.00px;height:61.70px;background:#828fd2;"></div>
<div style="left:839.61px;top:277.00px;width:1.00px;height:61.70px;background:#828fd2;"></div>
<div style="left:862.47px;top:277.00px;width:1.00px;height:61.70px;background:#828fd2;"></div>
<div style="left:885.33px;top:277.00px;width:1.00px;height:61.70px;background:#828fd2;"></div>
<div style="left:908.19px;top:277.00px;width:1.00px;height:61.70px;background:#828fd2;"></div>
<div style="left:749.20px;top:249.50px;width:1.10px;height:90.20px;background:#444b6e;"></div>
<svg style="position:absolute;left:749.70px;top:277.00px;" width="182.70" height="61.70" viewBox="0 0 182.70 61.70"><rect x="177.69999999999993" y="0" width="5" height="61.69999999999999" fill="rgba(40,50,110,0.18)"/><rect x="0" y="0" width="4" height="61.69999999999999" fill="rgba(40,50,110,0.10)"/><path d="M1.0,8.9 L1.5,9.2 L2.0,9.6 L2.5,10.4 L3.0,11.4 L3.5,10.8 L4.0,9.8 L4.5,8.7 L5.0,8.6 L5.5,8.2 L6.0,8.8 L6.5,8.7 L7.0,9.3 L7.5,9.4 L8.0,10.2 L8.5,10.4 L9.0,11.1 L9.5,10.2 L10.0,10.5 L10.5,11.3 L11.0,11.4 L11.5,11.9 L12.0,12.4 L12.5,12.6 L13.0,13.1 L13.5,13.6 L14.0,14.1 L14.5,14.4 L15.0,13.1 L15.5,11.3 L16.0,9.3 L16.5,8.9 L17.0,8.0 L17.5,8.1 L18.0,9.2 L18.5,9.6 L19.0,9.7 L19.5,10.2 L20.0,10.5 L20.5,10.7 L21.0,10.0 L21.5,9.9 L22.0,6.9 L22.5,7.6 L23.0,7.5 L23.5,6.8 L24.0,9.3 L24.5,9.8 L25.0,9.5 L25.5,10.8 L26.0,11.2 L26.5,10.7 L27.0,9.4 L27.5,9.0 L28.0,8.6 L28.5,9.0 L29.0,8.1 L29.5,8.8 L30.0,9.5 L30.5,9.9 L31.0,10.7 L31.5,10.8 L32.0,10.7 L32.5,10.6 L33.0,10.8 L33.5,11.2 L34.0,11.2 L34.5,12.0 L35.0,12.2 L35.5,13.3 L36.0,13.6 L36.5,14.0 L37.0,14.3 L37.5,13.8 L38.0,12.7 L38.5,10.9 L39.0,9.2 L39.5,8.9 L40.0,8.1 L40.5,8.7 L41.0,8.2 L41.5,8.9 L42.0,9.2 L42.5,10.3 L43.0,10.8 L43.5,10.6 L44.0,9.7 L44.5,8.8 L45.0,7.9 L45.5,6.5 L46.0,6.3 L46.5,8.7 L47.0,9.1 L47.5,9.6 L48.0,10.0 L48.5,10.9 L49.0,11.2 L49.5,10.6 L50.0,9.5 L50.5,8.6 L51.0,8.5 L51.5,8.4 L52.0,8.9 L52.5,9.1 L53.0,9.2 L53.5,10.3 L54.0,10.4 L54.5,10.9 L55.0,10.7 L55.5,10.5 L56.0,10.8 L56.5,11.1 L57.0,11.4 L57.5,12.4 L58.0,12.9 L58.5,12.9 L59.0,13.4 L59.5,13.8 L60.0,14.2 L60.5,13.5 L61.0,11.8 L61.5,10.3 L62.0,8.7 L62.5,8.2 L63.0,8.5 L63.5,8.7 L64.0,9.1 L64.5,9.3 L65.0,10.2 L65.5,10.1 L66.0,11.0 L66.5,10.1 L67.0,9.5 L67.5,9.1 L68.0,7.1 L68.5,6.9 L69.0,6.3 L69.5,9.3 L70.0,8.9 L70.5,9.4 L71.0,10.2 L71.5,10.7 L72.0,11.0 L72.5,10.2 L73.0,8.7 L73.5,8.7 L74.0,8.2 L74.5,7.9 L75.0,8.2 L75.5,9.3 L76.0,9.6 L76.5,10.0 L77.0,10.7 L77.5,11.4 L78.0,11.2 L78.5,10.8 L79.0,11.2 L79.5,11.3 L80.0,12.2 L80.5,12.4 L81.0,13.0 L81.5,13.1 L82.0,13.7 L82.5,14.3 L83.0,14.2 L83.5,13.0 L84.0,11.3 L84.5,9.2 L85.0,9.1 L85.5,8.3 L86.0,7.9 L86.5,8.5 L87.0,8.9 L87.5,9.6 L88.0,10.3 L88.5,10.7 L89.0,10.9 L89.5,10.0 L90.0,9.3 L90.5,8.1 L91.0,7.3 L91.5,6.6 L92.0,6.8 L92.5,9.0 L93.0,9.0 L93.5,10.0 L94.0,10.5 L94.5,10.6 L95.0,10.5 L95.5,10.0 L96.0,9.1 L96.5,8.6 L97.0,8.7 L97.5,8.5 L98.0,8.5 L98.5,9.2 L99.0,9.1 L99.5,10.3 L100.0,11.2 L100.5,10.9 L101.0,10.6 L101.5,11.2 L102.0,11.2 L102.5,11.6 L103.0,11.7 L103.5,12.3 L104.0,13.1 L104.5,13.4 L105.0,14.0 L105.5,14.2 L106.0,13.9 L106.5,12.5 L107.0,11.2 L107.5,9.0 L108.0,8.5 L108.5,8.2 L109.0,9.0 L109.5,8.7 L110.0,9.0 L110.5,9.8 L111.0,10.6 L111.5,10.5 L112.0,10.5 L112.5,9.5 L113.0,9.1 L113.5,7.5 L114.0,7.6 L114.5,7.2 L115.0,7.7 L115.5,9.1 L116.0,9.6 L116.5,9.7 L117.0,10.4 L117.5,10.8 L118.0,10.5 L118.5,9.5 L119.0,9.3 L119.5,9.0 L120.0,8.3 L120.5,8.4 L121.0,8.5 L121.5,9.3 L122.0,9.9 L122.5,10.6 L123.0,11.1 L123.5,10.3 L124.0,10.7 L124.5,10.7 L125.0,10.9 L125.5,11.8 L126.0,11.9 L126.5,12.2 L127.0,12.9 L127.5,13.7 L128.0,13.9 L128.5,14.1 L129.0,14.0 L129.5,12.1 L130.0,10.6 L130.5,8.5 L131.0,8.7 L131.5,8.3 L132.0,8.7 L132.5,8.7 L133.0,9.0 L133.5,9.4 L134.0,10.4 L134.5,11.2 L135.0,10.4 L135.5,9.7 L136.0,9.1 L136.5,6.9 L137.0,7.1 L137.5,6.4 L138.0,8.5 L138.5,9.3 L139.0,9.7 L139.5,10.1 L140.0,10.7 L140.5,10.7 L141.0,9.8 L141.5,9.3 L142.0,9.2 L142.5,8.4 L143.0,8.1 L143.5,9.0 L144.0,9.3 L144.5,9.3 L145.0,9.5 L145.5,10.5 L146.0,11.0 L146.5,10.4 L147.0,10.9 L147.5,11.1 L148.0,10.7 L148.5,11.9 L149.0,12.0 L149.5,12.7 L150.0,13.3 L150.5,13.4 L151.0,14.1 L151.5,14.3 L152.0,13.3 L152.5,11.9 L153.0,9.8 L153.5,8.6 L154.0,9.2 L154.5,8.9 L155.0,8.6 L155.5,9.1 L156.0,9.5 L156.5,9.5 L157.0,10.6 L157.5,10.8 L158.0,10.2 L158.5,9.4 L159.0,9.1 L159.5,7.8 L160.0,6.7 L160.5,7.2 L161.0,9.3 L161.5,9.5 L162.0,9.9 L162.5,10.8 L163.0,11.1 L163.5,10.7 L164.0,9.3 L164.5,9.3 L165.0,9.3 L165.5,8.8 L166.0,8.7 L166.5,8.3 L167.0,9.5 L167.5,9.6 L168.0,10.3 L168.5,10.9 L169.0,11.0 L169.5,10.8 L170.0,10.8 L170.5,10.6 L171.0,11.3 L171.5,11.5 L172.0,12.2 L172.5,12.7 L173.0,13.3 L173.5,13.7 L174.0,14.2 L174.5,14.3 L175.0,12.8 L175.5,11.5 L176.0,9.7 L176.5,8.9 L177.0,9.0 L177.5,8.5 L178.0,8.9 L178.5,8.3 L179.0,9.3 L179.5,10.1 L180.0,10.6 L180.5,10.7 L181.0,9.9 L181.5,9.3 L181.5,22.2 L181.0,21.2 L180.5,20.5 L180.0,20.8 L179.5,21.3 L179.0,22.1 L178.5,22.7 L178.0,22.5 L177.5,22.8 L177.0,22.7 L176.5,22.6 L176.0,21.7 L175.5,19.9 L175.0,18.6 L174.5,17.1 L174.0,17.3 L173.5,17.8 L173.0,18.0 L172.5,18.8 L172.0,19.2 L171.5,19.6 L171.0,20.2 L170.5,20.7 L170.0,20.8 L169.5,20.9 L169.0,20.3 L168.5,20.8 L168.0,21.3 L167.5,22.1 L167.0,22.2 L166.5,22.8 L166.0,23.0 L165.5,22.6 L165.0,22.3 L164.5,21.9 L164.0,21.9 L163.5,21.0 L163.0,20.1 L162.5,20.9 L162.0,21.5 L161.5,22.2 L161.0,22.4 L160.5,24.5 L160.0,24.4 L159.5,24.1 L159.0,22.5 L158.5,21.7 L158.0,21.4 L157.5,20.4 L157.0,20.9 L156.5,21.6 L156.0,22.2 L155.5,22.7 L155.0,22.7 L154.5,22.8 L154.0,22.5 L153.5,22.6 L153.0,21.3 L152.5,19.5 L152.0,18.1 L151.5,17.1 L151.0,17.3 L150.5,17.9 L150.0,18.2 L149.5,18.6 L149.0,19.3 L148.5,19.7 L148.0,20.5 L147.5,20.5 L147.0,20.7 L146.5,20.8 L146.0,20.5 L145.5,21.0 L145.0,21.7 L144.5,21.8 L144.0,22.5 L143.5,22.8 L143.0,22.9 L142.5,23.1 L142.0,22.5 L141.5,22.3 L141.0,21.7 L140.5,20.7 L140.0,20.5 L139.5,21.4 L139.0,22.1 L138.5,22.2 L138.0,22.8 L137.5,24.5 L137.0,24.7 L136.5,24.1 L136.0,22.0 L135.5,21.9 L135.0,21.0 L134.5,20.1 L134.0,20.9 L133.5,21.8 L133.0,22.3 L132.5,22.4 L132.0,22.7 L131.5,23.0 L131.0,22.9 L130.5,22.7 L130.0,20.8 L129.5,19.3 L129.0,17.4 L128.5,17.3 L128.0,17.6 L127.5,17.7 L127.0,18.5 L126.5,19.1 L126.0,19.3 L125.5,19.7 L125.0,20.6 L124.5,20.7 L124.0,20.9 L123.5,20.8 L123.0,20.4 L122.5,21.1 L122.0,21.5 L121.5,22.1 L121.0,22.8 L120.5,23.1 L120.0,22.7 L119.5,22.7 L119.0,22.1 L118.5,22.0 L118.0,21.1 L117.5,20.6 L117.0,20.7 L116.5,21.6 L116.0,22.1 L115.5,22.5 L115.0,24.2 L114.5,24.6 L114.0,24.2 L113.5,24.3 L113.0,21.9 L112.5,21.7 L112.0,21.0 L111.5,20.8 L111.0,21.1 L110.5,21.6 L110.0,22.4 L109.5,22.5 L109.0,22.7 L108.5,22.9 L108.0,22.7 L107.5,22.1 L107.0,20.5 L106.5,18.7 L106.0,17.4 L105.5,17.1 L105.0,17.5 L104.5,17.9 L104.0,18.4 L103.5,19.3 L103.0,19.6 L102.5,19.9 L102.0,20.2 L101.5,20.4 L101.0,20.6 L100.5,20.7 L100.0,20.4 L99.5,21.2 L99.0,22.1 L98.5,22.3 L98.0,22.6 L97.5,23.1 L97.0,22.6 L96.5,22.7 L96.0,22.1 L95.5,21.6 L95.0,20.9 L94.5,20.6 L94.0,20.7 L93.5,21.5 L93.0,22.3 L92.5,22.5 L92.0,24.2 L91.5,24.8 L91.0,24.2 L90.5,23.7 L90.0,22.1 L89.5,21.4 L89.0,20.6 L88.5,20.4 L88.0,21.4 L87.5,21.9 L87.0,22.6 L86.5,22.7 L86.0,23.1 L85.5,22.7 L85.0,22.7 L84.5,22.0 L84.0,20.0 L83.5,18.5 L83.0,17.1 L82.5,17.1 L82.0,17.7 L81.5,18.1 L81.0,18.4 L80.5,19.1 L80.0,19.4 L79.5,20.2 L79.0,20.4 L78.5,20.5 L78.0,20.4 L77.5,20.3 L77.0,20.6 L76.5,21.6 L76.0,22.0 L75.5,22.4 L75.0,23.0 L74.5,23.1 L74.0,23.0 L73.5,22.8 L73.0,22.4 L72.5,21.3 L72.0,20.6 L71.5,20.8 L71.0,21.4 L70.5,22.1 L70.0,22.6 L69.5,22.4 L69.0,24.7 L68.5,24.4 L68.0,24.5 L67.5,22.0 L67.0,21.7 L66.5,21.0 L66.0,20.5 L65.5,21.0 L65.0,21.5 L64.5,22.0 L64.0,22.3 L63.5,22.9 L63.0,22.8 L62.5,22.8 L62.0,22.7 L61.5,21.4 L61.0,19.7 L60.5,17.9 L60.0,17.3 L59.5,17.7 L59.0,18.1 L58.5,18.5 L58.0,18.5 L57.5,19.2 L57.0,19.8 L56.5,20.2 L56.0,20.3 L55.5,20.9 L55.0,20.8 L54.5,20.3 L54.0,20.7 L53.5,21.3 L53.0,22.3 L52.5,22.5 L52.0,22.8 L51.5,22.7 L51.0,22.7 L50.5,22.6 L50.0,21.7 L49.5,21.1 L49.0,20.5 L48.5,20.5 L48.0,21.6 L47.5,22.1 L47.0,22.3 L46.5,23.0 L46.0,24.8 L45.5,24.7 L45.0,24.0 L44.5,22.3 L44.0,21.5 L43.5,20.8 L43.0,20.5 L42.5,21.1 L42.0,21.9 L41.5,22.3 L41.0,22.9 L40.5,22.7 L40.0,23.2 L39.5,22.8 L39.0,22.6 L38.5,20.8 L38.0,18.8 L37.5,17.6 L37.0,17.1 L36.5,17.4 L36.0,17.7 L35.5,18.2 L35.0,19.1 L34.5,19.4 L34.0,20.1 L33.5,20.1 L33.0,20.6 L32.5,20.7 L32.0,20.7 L31.5,20.8 L31.0,20.9 L30.5,21.7 L30.0,22.3 L29.5,22.9 L29.0,23.0 L28.5,22.7 L28.0,22.9 L27.5,22.2 L27.0,21.7 L26.5,20.9 L26.0,20.3 L25.5,20.9 L25.0,21.6 L24.5,21.8 L24.0,22.5 L23.5,24.4 L23.0,24.4 L22.5,24.2 L22.0,24.1 L21.5,21.8 L21.0,21.5 L20.5,20.9 L20.0,20.7 L19.5,21.5 L19.0,21.6 L18.5,22.1 L18.0,22.6 L17.5,23.0 L17.0,23.1 L16.5,22.5 L16.0,22.2 L15.5,20.1 L15.0,18.3 L14.5,17.1 L14.0,17.3 L13.5,17.8 L13.0,18.3 L12.5,18.8 L12.0,19.3 L11.5,19.4 L11.0,20.0 L10.5,20.3 L10.0,20.9 L9.5,21.0 L9.0,20.5 L8.5,20.7 L8.0,21.3 L7.5,21.8 L7.0,22.3 L6.5,22.8 L6.0,22.6 L5.5,23.0 L5.0,22.4 L4.5,22.4 L4.0,21.8 L3.5,20.9 L3.0,20.1 L2.5,20.9 L2.0,21.6 L1.5,22.2 L1.0,22.6Z" fill="#1d1d24"/><path d="M1.0,40.1 L1.5,40.7 L2.0,41.0 L2.5,42.1 L3.0,43.0 L3.5,42.0 L4.0,41.5 L4.5,40.3 L5.0,40.1 L5.5,40.2 L6.0,40.2 L6.5,40.1 L7.0,40.5 L7.5,40.7 L8.0,41.7 L8.5,42.3 L9.0,42.1 L9.5,42.3 L10.0,41.9 L10.5,42.9 L11.0,43.0 L11.5,43.2 L12.0,43.8 L12.5,44.3 L13.0,44.8 L13.5,45.4 L14.0,45.9 L14.5,45.9 L15.0,44.5 L15.5,43.0 L16.0,40.8 L16.5,40.1 L17.0,40.3 L17.5,40.2 L18.0,40.4 L18.5,40.7 L19.0,41.1 L19.5,41.7 L20.0,42.5 L20.5,42.1 L21.0,41.5 L21.5,40.6 L22.0,39.3 L22.5,39.1 L23.0,39.0 L23.5,38.3 L24.0,39.9 L24.5,41.1 L25.0,41.5 L25.5,41.8 L26.0,42.5 L26.5,42.4 L27.0,41.3 L27.5,40.9 L28.0,40.7 L28.5,40.0 L29.0,40.2 L29.5,40.3 L30.0,40.4 L30.5,41.3 L31.0,42.1 L31.5,42.9 L32.0,42.1 L32.5,42.1 L33.0,42.4 L33.5,42.3 L34.0,43.0 L34.5,43.1 L35.0,44.2 L35.5,44.5 L36.0,45.1 L36.5,45.4 L37.0,45.7 L37.5,45.6 L38.0,44.1 L38.5,42.7 L39.0,40.1 L39.5,40.1 L40.0,40.5 L40.5,40.0 L41.0,40.7 L41.5,40.4 L42.0,41.3 L42.5,41.5 L43.0,42.9 L43.5,42.1 L44.0,41.0 L44.5,40.7 L45.0,39.0 L45.5,38.7 L46.0,38.8 L46.5,39.9 L47.0,40.4 L47.5,41.2 L48.0,41.6 L48.5,42.4 L49.0,42.3 L49.5,41.9 L50.0,41.2 L50.5,40.7 L51.0,40.7 L51.5,40.2 L52.0,40.5 L52.5,40.2 L53.0,40.9 L53.5,41.5 L54.0,42.1 L54.5,42.5 L55.0,42.5 L55.5,42.4 L56.0,42.4 L56.5,42.2 L57.0,43.1 L57.5,43.8 L58.0,44.0 L58.5,44.7 L59.0,45.0 L59.5,45.8 L60.0,46.0 L60.5,45.6 L61.0,43.6 L61.5,41.6 L62.0,40.4 L62.5,40.6 L63.0,40.1 L63.5,39.7 L64.0,40.3 L64.5,40.6 L65.0,41.9 L65.5,41.7 L66.0,42.3 L66.5,41.9 L67.0,41.1 L67.5,40.5 L68.0,39.3 L68.5,38.2 L69.0,38.9 L69.5,40.5 L70.0,40.8 L70.5,41.3 L71.0,42.1 L71.5,42.0 L72.0,42.2 L72.5,41.8 L73.0,40.3 L73.5,40.5 L74.0,40.3 L74.5,40.1 L75.0,39.7 L75.5,40.6 L76.0,41.2 L76.5,41.1 L77.0,42.4 L77.5,42.3 L78.0,42.3 L78.5,41.8 L79.0,42.3 L79.5,42.9 L80.0,43.0 L80.5,43.7 L81.0,44.6 L81.5,45.1 L82.0,45.7 L82.5,45.8 L83.0,45.9 L83.5,45.0 L84.0,43.3 L84.5,41.0 L85.0,40.7 L85.5,39.8 L86.0,40.2 L86.5,39.8 L87.0,40.1 L87.5,41.4 L88.0,41.8 L88.5,42.2 L89.0,42.4 L89.5,41.8 L90.0,41.3 L90.5,38.9 L91.0,38.9 L91.5,39.0 L92.0,38.8 L92.5,40.3 L93.0,40.8 L93.5,41.2 L94.0,42.5 L94.5,42.8 L95.0,42.0 L95.5,41.8 L96.0,41.4 L96.5,40.1 L97.0,40.3 L97.5,39.9 L98.0,40.4 L98.5,40.7 L99.0,40.7 L99.5,41.6 L100.0,42.5 L100.5,42.7 L101.0,42.2 L101.5,42.5 L102.0,42.7 L102.5,43.0 L103.0,43.7 L103.5,44.0 L104.0,44.4 L104.5,45.1 L105.0,45.6 L105.5,45.6 L106.0,45.6 L106.5,44.3 L107.0,43.0 L107.5,40.9 L108.0,40.6 L108.5,39.8 L109.0,40.6 L109.5,41.0 L110.0,40.7 L110.5,41.1 L111.0,42.1 L111.5,42.5 L112.0,41.8 L112.5,41.5 L113.0,40.6 L113.5,38.8 L114.0,38.4 L114.5,38.1 L115.0,38.1 L115.5,41.1 L116.0,41.2 L116.5,41.1 L117.0,42.8 L117.5,42.4 L118.0,42.0 L118.5,41.2 L119.0,40.2 L119.5,40.4 L120.0,39.7 L120.5,40.1 L121.0,40.7 L121.5,41.0 L122.0,41.6 L122.5,41.9 L123.0,42.6 L123.5,42.4 L124.0,42.6 L124.5,42.5 L125.0,43.1 L125.5,43.4 L126.0,43.8 L126.5,44.2 L127.0,44.5 L127.5,45.3 L128.0,45.8 L128.5,45.8 L129.0,45.5 L129.5,43.7 L130.0,42.6 L130.5,40.7 L131.0,40.3 L131.5,40.1 L132.0,40.5 L132.5,39.9 L133.0,40.2 L133.5,41.7 L134.0,41.8 L134.5,42.5 L135.0,42.0 L135.5,41.3 L136.0,40.7 L136.5,38.6 L137.0,38.1 L137.5,38.8 L138.0,40.4 L138.5,40.6 L139.0,41.4 L139.5,42.1 L140.0,41.9 L140.5,42.3 L141.0,41.7 L141.5,41.3 L142.0,39.9 L142.5,39.9 L143.0,39.9 L143.5,39.6 L144.0,40.6 L144.5,41.1 L145.0,41.4 L145.5,42.2 L146.0,42.9 L146.5,42.2 L147.0,41.8 L147.5,42.6 L148.0,42.9 L148.5,43.1 L149.0,43.8 L149.5,44.3 L150.0,44.9 L150.5,45.2 L151.0,45.8 L151.5,45.9 L152.0,45.2 L152.5,43.1 L153.0,41.3 L153.5,40.3 L154.0,39.8 L154.5,39.8 L155.0,40.2 L155.5,40.4 L156.0,41.3 L156.5,41.6 L157.0,42.2 L157.5,42.3 L158.0,42.0 L158.5,41.0 L159.0,40.7 L159.5,39.1 L160.0,38.1 L160.5,38.8 L161.0,40.7 L161.5,40.5 L162.0,40.7 L162.5,41.8 L163.0,42.5 L163.5,42.0 L164.0,41.8 L164.5,41.0 L165.0,40.3 L165.5,40.2 L166.0,40.2 L166.5,40.2 L167.0,40.3 L167.5,41.4 L168.0,41.0 L168.5,42.2 L169.0,42.5 L169.5,42.1 L170.0,42.5 L170.5,42.7 L171.0,42.9 L171.5,43.7 L172.0,43.8 L172.5,44.2 L173.0,44.9 L173.5,45.3 L174.0,45.8 L174.5,45.9 L175.0,44.8 L175.5,42.9 L176.0,40.7 L176.5,40.6 L177.0,40.2 L177.5,39.5 L178.0,40.6 L178.5,40.2 L179.0,41.4 L179.5,41.5 L180.0,42.7 L180.5,42.3 L181.0,41.6 L181.5,41.2 L181.5,53.4 L181.0,52.8 L180.5,52.3 L180.0,52.1 L179.5,52.8 L179.0,53.3 L178.5,54.0 L178.0,54.2 L177.5,54.8 L177.0,54.3 L176.5,54.0 L176.0,53.6 L175.5,51.9 L175.0,49.8 L174.5,48.7 L174.0,48.7 L173.5,49.4 L173.0,49.7 L172.5,50.3 L172.0,50.9 L171.5,51.0 L171.0,52.0 L170.5,52.0 L170.0,52.4 L169.5,52.5 L169.0,52.3 L168.5,52.3 L168.0,53.2 L167.5,53.6 L167.0,54.0 L166.5,54.2 L166.0,54.7 L165.5,54.5 L165.0,54.0 L164.5,53.5 L164.0,53.0 L163.5,52.5 L163.0,52.1 L162.5,52.9 L162.0,53.6 L161.5,53.7 L161.0,54.0 L160.5,56.1 L160.0,56.1 L159.5,55.8 L159.0,53.7 L158.5,53.7 L158.0,52.6 L157.5,52.3 L157.0,52.3 L156.5,52.9 L156.0,53.7 L155.5,54.1 L155.0,54.6 L154.5,54.7 L154.0,54.6 L153.5,54.0 L153.0,53.0 L152.5,51.3 L152.0,49.4 L151.5,48.7 L151.0,48.8 L150.5,49.4 L150.0,49.7 L149.5,50.4 L149.0,51.0 L148.5,51.6 L148.0,52.0 L147.5,52.0 L147.0,52.6 L146.5,52.5 L146.0,51.8 L145.5,52.5 L145.0,53.1 L144.5,53.5 L144.0,54.0 L143.5,54.6 L143.0,54.4 L142.5,54.4 L142.0,54.3 L141.5,53.4 L141.0,53.1 L140.5,52.3 L140.0,52.5 L139.5,52.6 L139.0,53.3 L138.5,54.1 L138.0,54.6 L137.5,56.2 L137.0,56.2 L136.5,55.9 L136.0,54.1 L135.5,53.3 L135.0,52.8 L134.5,52.0 L134.0,52.6 L133.5,53.1 L133.0,54.0 L132.5,54.4 L132.0,54.3 L131.5,54.2 L131.0,54.4 L130.5,54.1 L130.0,52.2 L129.5,50.8 L129.0,49.1 L128.5,48.8 L128.0,48.8 L127.5,49.2 L127.0,50.0 L126.5,50.3 L126.0,50.9 L125.5,51.3 L125.0,51.7 L124.5,52.2 L124.0,52.2 L123.5,52.0 L123.0,52.0 L122.5,52.8 L122.0,53.2 L121.5,53.6 L121.0,54.2 L120.5,54.3 L120.0,54.8 L119.5,54.2 L119.0,54.0 L118.5,53.3 L118.0,52.8 L117.5,52.1 L117.0,52.1 L116.5,53.2 L116.0,53.4 L115.5,53.9 L115.0,56.0 L114.5,56.2 L114.0,56.1 L113.5,55.5 L113.0,53.9 L112.5,53.0 L112.0,52.5 L111.5,52.4 L111.0,52.5 L110.5,53.6 L110.0,53.8 L109.5,54.0 L109.0,54.3 L108.5,54.7 L108.0,54.1 L107.5,53.7 L107.0,51.8 L106.5,50.2 L106.0,49.0 L105.5,48.9 L105.0,49.1 L104.5,49.5 L104.0,50.3 L103.5,50.7 L103.0,51.1 L102.5,51.4 L102.0,51.9 L101.5,52.3 L101.0,52.1 L100.5,52.2 L100.0,52.3 L99.5,52.9 L99.0,53.7 L98.5,54.1 L98.0,54.6 L97.5,54.5 L97.0,54.5 L96.5,54.2 L96.0,53.6 L95.5,53.2 L95.0,52.7 L94.5,51.9 L94.0,52.3 L93.5,53.1 L93.0,53.5 L92.5,54.0 L92.0,56.2 L91.5,56.0 L91.0,56.2 L90.5,55.6 L90.0,53.5 L89.5,53.1 L89.0,52.5 L88.5,52.4 L88.0,52.9 L87.5,53.3 L87.0,54.3 L86.5,54.4 L86.0,54.6 L85.5,54.5 L85.0,53.9 L84.5,53.4 L84.0,51.4 L83.5,49.7 L83.0,48.7 L82.5,48.9 L82.0,49.0 L81.5,49.6 L81.0,50.0 L80.5,51.1 L80.0,51.6 L79.5,51.8 L79.0,52.3 L78.5,52.6 L78.0,52.5 L77.5,52.1 L77.0,52.2 L76.5,53.3 L76.0,53.7 L75.5,54.1 L75.0,54.6 L74.5,54.3 L74.0,54.3 L73.5,54.0 L73.0,53.9 L72.5,52.9 L72.0,52.6 L71.5,52.3 L71.0,52.6 L70.5,53.4 L70.0,53.7 L69.5,54.0 L69.0,55.9 L68.5,56.0 L68.0,55.7 L67.5,54.1 L67.0,53.2 L66.5,52.9 L66.0,52.1 L65.5,52.7 L65.0,52.9 L64.5,54.0 L64.0,54.0 L63.5,54.7 L63.0,54.7 L62.5,54.1 L62.0,53.9 L61.5,53.0 L61.0,51.0 L60.5,49.1 L60.0,48.7 L59.5,48.9 L59.0,49.6 L58.5,49.8 L58.0,50.6 L57.5,50.8 L57.0,51.4 L56.5,52.1 L56.0,52.1 L55.5,52.1 L55.0,52.1 L54.5,52.0 L54.0,52.6 L53.5,53.1 L53.0,54.0 L52.5,54.0 L52.0,54.3 L51.5,54.6 L51.0,54.1 L50.5,54.0 L50.0,53.6 L49.5,52.8 L49.0,52.4 L48.5,52.5 L48.0,52.9 L47.5,53.3 L47.0,54.3 L46.5,54.4 L46.0,56.0 L45.5,55.9 L45.0,55.5 L44.5,53.9 L44.0,53.3 L43.5,52.7 L43.0,51.7 L42.5,52.9 L42.0,53.6 L41.5,54.1 L41.0,54.0 L40.5,54.5 L40.0,54.3 L39.5,54.3 L39.0,54.3 L38.5,52.0 L38.0,50.6 L37.5,49.0 L37.0,48.9 L36.5,49.1 L36.0,49.5 L35.5,50.1 L35.0,50.4 L34.5,51.4 L34.0,51.6 L33.5,52.2 L33.0,52.1 L32.5,52.3 L32.0,52.4 L31.5,52.0 L31.0,52.7 L30.5,53.5 L30.0,53.9 L29.5,54.3 L29.0,54.4 L28.5,54.6 L28.0,54.1 L27.5,53.9 L27.0,53.5 L26.5,52.5 L26.0,52.2 L25.5,52.6 L25.0,53.4 L24.5,53.9 L24.0,54.3 L23.5,56.2 L23.0,55.9 L22.5,55.8 L22.0,55.6 L21.5,53.9 L21.0,53.0 L20.5,52.4 L20.0,52.4 L19.5,52.6 L19.0,53.6 L18.5,53.8 L18.0,54.2 L17.5,54.2 L17.0,54.5 L16.5,54.1 L16.0,53.9 L15.5,51.6 L15.0,50.1 L14.5,48.7 L14.0,48.7 L13.5,49.2 L13.0,49.7 L12.5,50.4 L12.0,50.6 L11.5,51.2 L11.0,51.4 L10.5,51.8 L10.0,52.5 L9.5,52.1 L9.0,52.2 L8.5,52.0 L8.0,53.0 L7.5,53.6 L7.0,54.3 L6.5,54.5 L6.0,54.7 L5.5,54.2 L5.0,54.1 L4.5,54.0 L4.0,53.2 L3.5,52.7 L3.0,51.7 L2.5,52.8 L2.0,53.5 L1.5,54.1 L1.0,54.3Z" fill="#1d1d24"/></svg>
<div style="left:977.70px;top:249.50px;width:137.50px;height:90.20px;background:#98a7f5;"></div>
<div style="left:977.70px;top:338.70px;width:137.50px;height:1.00px;background:#535b86;"></div>
<div style="left:977.70px;top:276.40px;width:137.50px;height:1.20px;background:#6d78b0;"></div>
<div style="left:999.63px;top:277.00px;width:1.00px;height:61.70px;background:#828fd2;"></div>
<div style="left:1022.50px;top:277.00px;width:1.00px;height:61.70px;background:#828fd2;"></div>
<div style="left:1045.36px;top:277.00px;width:1.00px;height:61.70px;background:#828fd2;"></div>
<div style="left:1068.22px;top:277.00px;width:1.00px;height:61.70px;background:#828fd2;"></div>
<div style="left:1091.08px;top:277.00px;width:1.00px;height:61.70px;background:#828fd2;"></div>
<div style="left:977.20px;top:249.50px;width:1.10px;height:90.20px;background:#444b6e;"></div>
<svg style="position:absolute;left:977.70px;top:277.00px;" width="137.50" height="61.70" viewBox="0 0 137.50 61.70"><rect x="132.5" y="0" width="5" height="61.69999999999999" fill="rgba(40,50,110,0.18)"/><rect x="0" y="0" width="4" height="61.69999999999999" fill="rgba(40,50,110,0.10)"/><path d="M1.0,6.6 L1.5,8.6 L2.0,8.7 L2.5,9.8 L3.0,10.6 L3.5,10.9 L4.0,10.7 L4.5,9.4 L5.0,9.0 L5.5,8.9 L6.0,8.7 L6.5,8.3 L7.0,8.6 L7.5,8.5 L8.0,9.4 L8.5,9.9 L9.0,10.3 L9.5,10.9 L10.0,10.2 L10.5,11.1 L11.0,11.0 L11.5,11.1 L12.0,11.6 L12.5,12.1 L13.0,12.5 L13.5,13.3 L14.0,13.8 L14.5,14.3 L15.0,14.3 L15.5,13.4 L16.0,11.5 L16.5,9.6 L17.0,9.0 L17.5,8.7 L18.0,8.6 L18.5,8.7 L19.0,9.0 L19.5,9.3 L20.0,10.1 L20.5,10.5 L21.0,10.7 L21.5,9.8 L22.0,9.8 L22.5,9.4 L23.0,7.6 L23.5,6.7 L24.0,6.3 L24.5,9.0 L25.0,9.3 L25.5,9.3 L26.0,10.4 L26.5,11.6 L27.0,10.5 L27.5,9.9 L28.0,9.6 L28.5,8.7 L29.0,8.6 L29.5,8.5 L30.0,8.3 L30.5,9.1 L31.0,9.8 L31.5,10.5 L32.0,10.6 L32.5,10.6 L33.0,10.7 L33.5,10.4 L34.0,11.0 L34.5,10.9 L35.0,12.0 L35.5,12.3 L36.0,12.9 L36.5,13.3 L37.0,13.7 L37.5,14.2 L38.0,14.2 L38.5,13.2 L39.0,10.6 L39.5,9.1 L40.0,9.1 L40.5,8.4 L41.0,8.8 L41.5,8.4 L42.0,9.1 L42.5,9.1 L43.0,10.4 L43.5,10.9 L44.0,10.3 L44.5,9.8 L45.0,9.6 L45.5,7.4 L46.0,7.3 L46.5,6.5 L47.0,6.8 L47.5,9.0 L48.0,9.2 L48.5,10.0 L49.0,10.6 L49.5,11.1 L50.0,10.4 L50.5,9.7 L51.0,9.5 L51.5,8.8 L52.0,8.8 L52.5,8.3 L53.0,8.9 L53.5,9.3 L54.0,9.7 L54.5,10.1 L55.0,11.2 L55.5,10.9 L56.0,10.6 L56.5,10.3 L57.0,11.0 L57.5,11.5 L58.0,11.8 L58.5,12.5 L59.0,12.7 L59.5,13.7 L60.0,14.1 L60.5,14.4 L61.0,13.9 L61.5,12.2 L62.0,10.6 L62.5,9.4 L63.0,8.7 L63.5,8.0 L64.0,8.4 L64.5,8.5 L65.0,9.7 L65.5,9.2 L66.0,10.1 L66.5,11.1 L67.0,10.4 L67.5,9.6 L68.0,9.7 L68.5,6.8 L69.0,7.3 L69.5,7.1 L70.0,8.8 L70.5,9.1 L71.0,9.8 L71.5,9.5 L72.0,10.8 L72.5,11.0 L73.0,9.5 L73.5,9.5 L74.0,9.1 L74.5,8.6 L75.0,7.9 L75.5,8.6 L76.0,9.0 L76.5,8.8 L77.0,10.0 L77.5,10.3 L78.0,11.0 L78.5,10.1 L79.0,10.5 L79.5,10.9 L80.0,10.9 L80.5,11.5 L81.0,12.4 L81.5,12.9 L82.0,13.5 L82.5,13.8 L83.0,14.1 L83.5,14.3 L84.0,13.6 L84.5,11.7 L85.0,10.3 L85.5,8.5 L86.0,8.7 L86.5,8.1 L87.0,8.1 L87.5,9.2 L88.0,9.5 L88.5,9.7 L89.0,10.6 L89.5,11.0 L90.0,10.4 L90.5,9.6 L91.0,9.2 L91.5,7.6 L92.0,7.2 L92.5,6.8 L93.0,8.7 L93.5,8.9 L94.0,10.2 L94.5,10.4 L95.0,11.0 L95.5,10.9 L96.0,10.4 L96.5,9.0 L97.0,9.0 L97.5,8.4 L98.0,8.6 L98.5,8.7 L99.0,8.5 L99.5,9.2 L100.0,10.1 L100.5,11.0 L101.0,10.8 L101.5,10.8 L102.0,10.9 L102.5,11.0 L103.0,11.6 L103.5,11.7 L104.0,12.2 L104.5,12.9 L105.0,13.4 L105.5,13.5 L106.0,13.9 L106.5,14.3 L107.0,13.4 L107.5,11.6 L108.0,9.8 L108.5,8.5 L109.0,9.1 L109.5,9.2 L110.0,8.6 L110.5,8.9 L111.0,9.7 L111.5,10.1 L112.0,10.4 L112.5,10.8 L113.0,9.7 L113.5,9.4 L114.0,7.1 L114.5,6.6 L115.0,6.4 L115.5,7.7 L116.0,9.0 L116.5,8.8 L117.0,10.4 L117.5,10.4 L118.0,11.2 L118.5,10.4 L119.0,9.3 L119.5,9.3 L120.0,8.3 L120.5,8.5 L121.0,8.9 L121.5,8.9 L122.0,9.3 L122.5,9.6 L123.0,10.2 L123.5,11.0 L124.0,11.1 L124.5,10.8 L125.0,11.2 L125.5,11.3 L126.0,11.6 L126.5,11.9 L127.0,12.3 L127.5,13.1 L128.0,13.6 L128.5,13.8 L129.0,14.3 L129.5,14.0 L130.0,13.0 L130.5,11.0 L131.0,9.1 L131.5,8.7 L132.0,8.8 L132.5,8.0 L133.0,8.1 L133.5,9.4 L134.0,9.4 L134.5,10.1 L135.0,11.0 L135.5,10.5 L136.0,9.8 L136.5,9.2 L136.5,22.1 L136.0,21.8 L135.5,20.9 L135.0,20.6 L134.5,21.2 L134.0,21.7 L133.5,22.2 L133.0,22.9 L132.5,23.0 L132.0,22.7 L131.5,22.4 L131.0,22.4 L130.5,20.6 L130.0,18.5 L129.5,17.3 L129.0,17.1 L128.5,17.6 L128.0,17.7 L127.5,18.2 L127.0,19.1 L126.5,19.4 L126.0,19.9 L125.5,20.1 L125.0,20.4 L124.5,20.8 L124.0,20.5 L123.5,20.2 L123.0,21.2 L122.5,22.0 L122.0,22.2 L121.5,22.5 L121.0,22.9 L120.5,22.7 L120.0,22.9 L119.5,22.2 L119.0,21.8 L118.5,20.9 L118.0,20.3 L117.5,20.9 L117.0,21.3 L116.5,22.3 L116.0,22.4 L115.5,24.2 L115.0,24.5 L114.5,24.4 L114.0,24.1 L113.5,21.8 L113.0,21.6 L112.5,20.6 L112.0,20.7 L111.5,21.6 L111.0,21.7 L110.5,22.6 L110.0,22.6 L109.5,22.6 L109.0,22.7 L108.5,22.8 L108.0,21.7 L107.5,19.8 L107.0,18.1 L106.5,17.1 L106.0,17.5 L105.5,17.8 L105.0,18.1 L104.5,18.5 L104.0,19.3 L103.5,19.7 L103.0,20.1 L102.5,20.2 L102.0,20.6 L101.5,20.8 L101.0,20.4 L100.5,20.6 L100.0,21.6 L99.5,22.1 L99.0,22.7 L98.5,22.9 L98.0,23.1 L97.5,22.8 L97.0,22.6 L96.5,22.1 L96.0,21.3 L95.5,20.8 L95.0,20.5 L94.5,21.1 L94.0,21.5 L93.5,22.2 L93.0,22.4 L92.5,24.3 L92.0,24.6 L91.5,24.2 L91.0,22.6 L90.5,21.7 L90.0,21.2 L89.5,20.7 L89.0,21.1 L88.5,21.7 L88.0,22.1 L87.5,22.3 L87.0,23.1 L86.5,23.0 L86.0,22.9 L85.5,22.5 L85.0,21.0 L84.5,19.5 L84.0,17.8 L83.5,17.1 L83.0,17.2 L82.5,17.7 L82.0,18.0 L81.5,18.6 L81.0,19.0 L80.5,20.1 L80.0,20.5 L79.5,20.5 L79.0,20.9 L78.5,21.0 L78.0,20.5 L77.5,20.9 L77.0,21.4 L76.5,22.4 L76.0,22.7 L75.5,22.8 L75.0,23.1 L74.5,22.6 L74.0,22.4 L73.5,21.8 L73.0,21.6 L72.5,20.5 L72.0,20.8 L71.5,21.6 L71.0,21.8 L70.5,22.4 L70.0,22.5 L69.5,24.2 L69.0,24.3 L68.5,24.2 L68.0,22.1 L67.5,21.9 L67.0,20.8 L66.5,20.5 L66.0,21.1 L65.5,21.9 L65.0,22.0 L64.5,22.9 L64.0,22.7 L63.5,23.2 L63.0,22.9 L62.5,22.1 L62.0,20.6 L61.5,19.3 L61.0,17.5 L60.5,17.1 L60.0,17.3 L59.5,17.8 L59.0,18.6 L58.5,18.8 L58.0,19.6 L57.5,19.8 L57.0,20.3 L56.5,20.9 L56.0,20.6 L55.5,20.5 L55.0,20.2 L54.5,21.1 L54.0,21.8 L53.5,22.2 L53.0,22.8 L52.5,22.7 L52.0,22.7 L51.5,22.8 L51.0,22.1 L50.5,21.8 L50.0,21.2 L49.5,20.4 L49.0,21.0 L48.5,21.7 L48.0,22.0 L47.5,22.2 L47.0,24.7 L46.5,24.5 L46.0,24.3 L45.5,23.9 L45.0,21.8 L44.5,21.7 L44.0,20.9 L43.5,20.7 L43.0,20.9 L42.5,22.1 L42.0,22.6 L41.5,23.0 L41.0,22.6 L40.5,22.9 L40.0,22.5 L39.5,22.1 L39.0,20.6 L38.5,18.3 L38.0,17.2 L37.5,17.2 L37.0,17.7 L36.5,18.1 L36.0,18.6 L35.5,19.1 L35.0,19.5 L34.5,20.4 L34.0,20.5 L33.5,20.9 L33.0,20.6 L32.5,20.6 L32.0,20.8 L31.5,21.2 L31.0,21.8 L30.5,22.6 L30.0,22.7 L29.5,22.9 L29.0,22.8 L28.5,22.7 L28.0,22.0 L27.5,21.7 L27.0,21.1 L26.5,20.1 L26.0,21.1 L25.5,21.8 L25.0,22.5 L24.5,22.8 L24.0,24.6 L23.5,24.7 L23.0,24.1 L22.5,22.3 L22.0,21.8 L21.5,21.6 L21.0,20.5 L20.5,20.8 L20.0,21.6 L19.5,21.7 L19.0,22.6 L18.5,22.6 L18.0,22.8 L17.5,22.5 L17.0,22.6 L16.5,21.5 L16.0,20.0 L15.5,17.9 L15.0,17.1 L14.5,17.1 L14.0,17.6 L13.5,18.2 L13.0,18.7 L12.5,19.5 L12.0,19.7 L11.5,20.1 L11.0,20.3 L10.5,20.4 L10.0,20.9 L9.5,20.3 L9.0,20.8 L8.5,21.2 L8.0,22.2 L7.5,22.5 L7.0,23.1 L6.5,23.0 L6.0,23.0 L5.5,22.3 L5.0,22.0 L4.5,21.7 L4.0,20.8 L3.5,20.7 L3.0,20.9 L2.5,21.9 L2.0,22.5 L1.5,23.0 L1.0,24.5Z" fill="#1d1d24"/><path d="M1.0,38.5 L1.5,40.6 L2.0,40.7 L2.5,41.2 L3.0,42.1 L3.5,42.5 L4.0,41.9 L4.5,41.0 L5.0,41.3 L5.5,40.3 L6.0,40.2 L6.5,39.6 L7.0,40.5 L7.5,40.4 L8.0,40.9 L8.5,41.4 L9.0,42.0 L9.5,42.5 L10.0,42.5 L10.5,42.3 L11.0,42.3 L11.5,43.2 L12.0,43.2 L12.5,43.8 L13.0,44.5 L13.5,44.8 L14.0,45.3 L14.5,45.5 L15.0,46.0 L15.5,45.2 L16.0,43.1 L16.5,41.3 L17.0,40.1 L17.5,39.8 L18.0,39.7 L18.5,40.3 L19.0,40.3 L19.5,41.1 L20.0,41.8 L20.5,42.2 L21.0,42.7 L21.5,41.6 L22.0,41.0 L22.5,41.0 L23.0,39.0 L23.5,38.5 L24.0,38.5 L24.5,40.3 L25.0,41.1 L25.5,41.0 L26.0,42.1 L26.5,42.6 L27.0,41.8 L27.5,41.4 L28.0,40.8 L28.5,39.9 L29.0,40.6 L29.5,39.5 L30.0,39.9 L30.5,40.3 L31.0,41.0 L31.5,41.7 L32.0,42.1 L32.5,42.7 L33.0,42.5 L33.5,42.4 L34.0,42.2 L34.5,43.0 L35.0,43.3 L35.5,43.8 L36.0,44.1 L36.5,45.3 L37.0,45.6 L37.5,46.0 L38.0,45.8 L38.5,44.5 L39.0,42.7 L39.5,40.4 L40.0,40.7 L40.5,39.7 L41.0,39.5 L41.5,40.1 L42.0,41.0 L42.5,41.0 L43.0,41.5 L43.5,42.1 L44.0,42.1 L44.5,41.7 L45.0,40.9 L45.5,39.1 L46.0,38.4 L46.5,38.3 L47.0,39.0 L47.5,40.6 L48.0,41.5 L48.5,41.4 L49.0,42.5 L49.5,42.2 L50.0,42.2 L50.5,41.4 L51.0,41.1 L51.5,40.0 L52.0,40.0 L52.5,39.8 L53.0,40.1 L53.5,40.9 L54.0,41.0 L54.5,42.3 L55.0,42.0 L55.5,42.5 L56.0,41.8 L56.5,42.6 L57.0,43.0 L57.5,42.9 L58.0,43.6 L58.5,44.3 L59.0,44.8 L59.5,44.9 L60.0,45.2 L60.5,45.8 L61.0,45.7 L61.5,44.1 L62.0,41.6 L62.5,41.0 L63.0,40.2 L63.5,39.8 L64.0,39.6 L64.5,40.7 L65.0,41.1 L65.5,41.3 L66.0,42.3 L66.5,42.7 L67.0,42.1 L67.5,41.4 L68.0,40.3 L68.5,38.9 L69.0,38.6 L69.5,38.6 L70.0,39.9 L70.5,40.5 L71.0,40.9 L71.5,41.9 L72.0,42.5 L72.5,42.5 L73.0,41.5 L73.5,40.8 L74.0,40.9 L74.5,40.7 L75.0,40.3 L75.5,39.7 L76.0,40.2 L76.5,41.0 L77.0,40.9 L77.5,42.1 L78.0,42.4 L78.5,42.5 L79.0,42.4 L79.5,42.1 L80.0,42.3 L80.5,43.3 L81.0,43.4 L81.5,44.0 L82.0,44.6 L82.5,44.9 L83.0,45.4 L83.5,45.9 L84.0,44.9 L84.5,43.6 L85.0,41.7 L85.5,40.4 L86.0,40.1 L86.5,40.3 L87.0,40.4 L87.5,40.8 L88.0,41.0 L88.5,41.5 L89.0,42.2 L89.5,42.1 L90.0,41.5 L90.5,41.0 L91.0,40.7 L91.5,39.2 L92.0,38.8 L92.5,38.7 L93.0,40.5 L93.5,40.9 L94.0,40.9 L94.5,41.8 L95.0,42.8 L95.5,42.4 L96.0,41.4 L96.5,40.6 L97.0,40.2 L97.5,40.1 L98.0,39.9 L98.5,40.6 L99.0,40.4 L99.5,41.1 L100.0,41.8 L100.5,42.5 L101.0,42.8 L101.5,42.0 L102.0,42.5 L102.5,42.0 L103.0,43.0 L103.5,43.8 L104.0,43.7 L104.5,44.4 L105.0,44.7 L105.5,45.6 L106.0,45.9 L106.5,45.7 L107.0,44.8 L107.5,43.1 L108.0,41.1 L108.5,40.0 L109.0,40.2 L109.5,39.9 L110.0,40.3 L110.5,40.6 L111.0,41.5 L111.5,41.8 L112.0,42.8 L112.5,42.2 L113.0,41.5 L113.5,41.3 L114.0,38.9 L114.5,38.9 L115.0,38.6 L115.5,39.0 L116.0,40.5 L116.5,40.9 L117.0,41.5 L117.5,41.9 L118.0,42.5 L118.5,41.8 L119.0,41.1 L119.5,40.6 L120.0,40.1 L120.5,40.2 L121.0,40.0 L121.5,40.6 L122.0,40.7 L122.5,40.7 L123.0,42.2 L123.5,42.4 L124.0,42.2 L124.5,41.8 L125.0,42.1 L125.5,42.6 L126.0,43.0 L126.5,43.2 L127.0,44.3 L127.5,44.6 L128.0,45.2 L128.5,45.7 L129.0,45.6 L129.5,45.6 L130.0,44.1 L130.5,43.0 L131.0,40.5 L131.5,40.2 L132.0,40.1 L132.5,39.9 L133.0,40.1 L133.5,40.4 L134.0,41.2 L134.5,41.5 L135.0,42.4 L135.5,42.2 L136.0,41.1 L136.5,41.0 L136.5,54.0 L136.0,53.3 L135.5,52.3 L135.0,52.1 L134.5,53.0 L134.0,53.4 L133.5,54.0 L133.0,54.5 L132.5,54.7 L132.0,54.5 L131.5,54.2 L131.0,54.0 L130.5,51.8 L130.0,50.4 L129.5,49.0 L129.0,49.0 L128.5,48.9 L128.0,49.5 L127.5,50.1 L127.0,50.5 L126.5,51.4 L126.0,51.4 L125.5,51.8 L125.0,52.3 L124.5,52.6 L124.0,52.3 L123.5,52.0 L123.0,52.7 L122.5,53.6 L122.0,53.9 L121.5,54.1 L121.0,54.5 L120.5,54.2 L120.0,54.1 L119.5,53.6 L119.0,53.2 L118.5,52.8 L118.0,51.9 L117.5,52.7 L117.0,53.0 L116.5,53.7 L116.0,54.1 L115.5,55.9 L115.0,56.0 L114.5,56.1 L114.0,55.9 L113.5,53.3 L113.0,53.0 L112.5,52.4 L112.0,52.1 L111.5,52.8 L111.0,53.4 L110.5,53.8 L110.0,54.4 L109.5,54.7 L109.0,54.5 L108.5,54.4 L108.0,53.2 L107.5,51.5 L107.0,49.8 L106.5,48.8 L106.0,48.7 L105.5,49.1 L105.0,49.9 L104.5,50.2 L104.0,50.7 L103.5,51.0 L103.0,51.5 L102.5,52.3 L102.0,52.4 L101.5,52.5 L101.0,52.0 L100.5,52.1 L100.0,53.1 L99.5,53.5 L99.0,53.9 L98.5,54.1 L98.0,54.7 L97.5,54.3 L97.0,54.4 L96.5,53.9 L96.0,53.2 L95.5,52.3 L95.0,52.1 L94.5,52.5 L94.0,53.6 L93.5,53.6 L93.0,54.5 L92.5,56.2 L92.0,56.0 L91.5,55.8 L91.0,53.8 L90.5,53.3 L90.0,53.0 L89.5,52.3 L89.0,52.7 L88.5,53.3 L88.0,53.8 L87.5,53.9 L87.0,54.5 L86.5,54.4 L86.0,54.5 L85.5,54.3 L85.0,53.0 L84.5,50.9 L84.0,49.7 L83.5,48.7 L83.0,49.2 L82.5,49.7 L82.0,50.1 L81.5,50.6 L81.0,51.0 L80.5,51.2 L80.0,52.1 L79.5,52.3 L79.0,52.4 L78.5,52.3 L78.0,52.3 L77.5,52.4 L77.0,53.3 L76.5,53.6 L76.0,54.4 L75.5,54.7 L75.0,54.4 L74.5,54.2 L74.0,53.9 L73.5,53.8 L73.0,53.0 L72.5,52.3 L72.0,52.2 L71.5,52.8 L71.0,53.4 L70.5,54.2 L70.0,54.4 L69.5,56.2 L69.0,56.2 L68.5,55.5 L68.0,54.0 L67.5,53.0 L67.0,52.4 L66.5,51.7 L66.0,52.5 L65.5,53.5 L65.0,53.8 L64.5,54.0 L64.0,54.7 L63.5,54.8 L63.0,54.6 L62.5,53.9 L62.0,52.6 L61.5,50.7 L61.0,49.0 L60.5,48.8 L60.0,49.3 L59.5,49.7 L59.0,49.9 L58.5,50.4 L58.0,50.9 L57.5,51.7 L57.0,51.8 L56.5,51.9 L56.0,52.5 L55.5,52.1 L55.0,52.3 L54.5,52.6 L54.0,53.6 L53.5,53.6 L53.0,54.1 L52.5,54.3 L52.0,54.5 L51.5,54.4 L51.0,53.8 L50.5,53.4 L50.0,52.7 L49.5,52.4 L49.0,52.1 L48.5,53.2 L48.0,53.4 L47.5,53.9 L47.0,55.9 L46.5,56.2 L46.0,55.9 L45.5,56.0 L45.0,53.9 L44.5,52.8 L44.0,52.5 L43.5,52.3 L43.0,52.8 L42.5,53.5 L42.0,53.7 L41.5,54.1 L41.0,54.7 L40.5,54.6 L40.0,54.3 L39.5,54.0 L39.0,52.1 L38.5,49.9 L38.0,48.8 L37.5,48.7 L37.0,49.0 L36.5,49.4 L36.0,50.4 L35.5,51.0 L35.0,51.2 L34.5,51.6 L34.0,52.3 L33.5,52.2 L33.0,52.4 L32.5,52.0 L32.0,52.3 L31.5,52.7 L31.0,53.8 L30.5,54.3 L30.0,54.5 L29.5,54.7 L29.0,54.3 L28.5,54.5 L28.0,53.6 L27.5,53.5 L27.0,52.6 L26.5,52.0 L26.0,52.6 L25.5,53.4 L25.0,53.8 L24.5,54.2 L24.0,56.1 L23.5,55.9 L23.0,56.0 L22.5,54.0 L22.0,53.3 L21.5,53.1 L21.0,52.0 L20.5,52.3 L20.0,52.9 L19.5,53.8 L19.0,54.3 L18.5,54.2 L18.0,54.5 L17.5,54.6 L17.0,54.2 L16.5,53.1 L16.0,51.5 L15.5,49.5 L15.0,48.7 L14.5,49.1 L14.0,49.2 L13.5,49.8 L13.0,50.1 L12.5,50.8 L12.0,51.5 L11.5,51.6 L11.0,52.2 L10.5,52.6 L10.0,52.1 L9.5,52.2 L9.0,52.4 L8.5,53.1 L8.0,53.5 L7.5,53.8 L7.0,54.2 L6.5,54.7 L6.0,54.2 L5.5,54.3 L5.0,53.5 L4.5,53.3 L4.0,52.5 L3.5,52.2 L3.0,52.7 L2.5,53.4 L2.0,53.9 L1.5,54.2 L1.0,55.9Z" fill="#1d1d24"/></svg>
<div style="left:1115.20px;top:249.50px;width:11.30px;height:90.20px;background:#98a7f5;"></div>
<div style="left:1115.20px;top:338.70px;width:11.30px;height:1.00px;background:#535b86;"></div>
<div style="left:1115.20px;top:276.40px;width:11.30px;height:1.20px;background:#6d78b0;"></div>
<div style="left:1114.70px;top:249.50px;width:1.10px;height:90.20px;background:#444b6e;"></div>
<svg style="position:absolute;left:1115.20px;top:277.00px;" width="11.30" height="61.70" viewBox="0 0 11.30 61.70"><rect x="6.2999999999999545" y="0" width="5" height="61.69999999999999" fill="rgba(40,50,110,0.18)"/><rect x="0" y="0" width="4" height="61.69999999999999" fill="rgba(40,50,110,0.10)"/><path d="M1.0,7.0 L1.5,9.3 L2.0,9.4 L2.5,10.0 L3.0,10.9 L3.5,10.8 L4.0,9.8 L4.5,9.0 L5.0,9.4 L5.5,8.5 L6.0,8.5 L6.5,8.0 L7.0,9.1 L7.5,9.1 L8.0,9.7 L8.5,10.3 L9.0,10.9 L9.5,10.8 L10.0,10.9 L10.0,20.5 L9.5,20.8 L9.0,20.4 L8.5,21.1 L8.0,21.5 L7.5,21.9 L7.0,22.5 L6.5,23.1 L6.0,22.7 L5.5,22.9 L5.0,22.2 L4.5,22.1 L4.0,21.4 L3.5,20.7 L3.0,20.6 L2.5,21.4 L2.0,22.0 L1.5,22.4 L1.0,24.2Z" fill="#1d1d24"/><path d="M1.0,38.2 L1.5,40.5 L2.0,40.7 L2.5,41.9 L3.0,42.5 L3.5,42.7 L4.0,42.1 L4.5,41.2 L5.0,41.1 L5.5,40.4 L6.0,40.0 L6.5,40.0 L7.0,40.4 L7.5,40.7 L8.0,41.4 L8.5,41.5 L9.0,42.2 L9.5,42.4 L10.0,41.9 L10.0,52.5 L9.5,52.1 L9.0,52.1 L8.5,52.9 L8.0,53.4 L7.5,54.0 L7.0,54.0 L6.5,54.6 L6.0,54.4 L5.5,54.1 L5.0,53.8 L4.5,53.4 L4.0,52.6 L3.5,52.1 L3.0,52.2 L2.5,52.9 L2.0,53.6 L1.5,54.1 L1.0,56.1Z" fill="#1d1d24"/></svg>
<div style="left:0.00px;top:360.00px;width:932.40px;height:3.50px;background:#9fc6f3;"></div>
<div style="left:977.70px;top:353.50px;width:148.80px;height:4.50px;background:#9fc6f3;"></div>
<div style="left:977.70px;top:360.80px;width:148.80px;height:3.40px;background:#9fc6f3;"></div>
<div style="left:932.40px;top:365.60px;width:194.10px;height:4.90px;background:#9fc6f3;"></div>
<div style="left:-2.00px;top:375.70px;width:202.00px;height:89.80px;background:#93f5e3;"></div>
<div style="left:-2.00px;top:464.50px;width:202.00px;height:1.00px;background:#50867c;"></div>
<div style="left:-2.00px;top:404.40px;width:202.00px;height:1.20px;background:#69b0a3;"></div>
<div style="left:16.61px;top:405.00px;width:1.00px;height:59.50px;background:#7ed2c3;"></div>
<div style="left:39.47px;top:405.00px;width:1.00px;height:59.50px;background:#7ed2c3;"></div>
<div style="left:62.33px;top:405.00px;width:1.00px;height:59.50px;background:#7ed2c3;"></div>
<div style="left:85.19px;top:405.00px;width:1.00px;height:59.50px;background:#7ed2c3;"></div>
<div style="left:108.06px;top:405.00px;width:1.00px;height:59.50px;background:#7ed2c3;"></div>
<div style="left:130.92px;top:405.00px;width:1.00px;height:59.50px;background:#7ed2c3;"></div>
<div style="left:153.78px;top:405.00px;width:1.00px;height:59.50px;background:#7ed2c3;"></div>
<div style="left:176.64px;top:405.00px;width:1.00px;height:59.50px;background:#7ed2c3;"></div>
<svg style="position:absolute;left:1.00px;top:375.70px;" width="199.00" height="89.80" viewBox="0 0 199.00 89.80"><g fill="#16302a"><rect x="5.8" y="69.4" width="9.6" height="3.0"/><rect x="51.5" y="69.4" width="9.6" height="3.0"/><rect x="97.3" y="69.4" width="9.6" height="3.0"/><rect x="143.0" y="69.4" width="9.6" height="3.0"/><rect x="188.7" y="69.4" width="9.3" height="3.0"/><rect x="33.3" y="79.9" width="10.0" height="3.0"/><rect x="63.0" y="79.9" width="10.0" height="3.0"/><rect x="124.8" y="79.9" width="10.0" height="3.0"/><rect x="154.5" y="79.9" width="10.0" height="3.0"/><rect x="16.1" y="38.3" width="11.0" height="3.0"/><rect x="84.7" y="38.3" width="4.2" height="3.0"/><rect x="176.1" y="38.3" width="4.2" height="3.0"/></g></svg>
<div style="left:200.00px;top:375.70px;width:365.80px;height:89.80px;background:#93f5e3;"></div>
<div style="left:200.00px;top:464.50px;width:365.80px;height:1.00px;background:#50867c;"></div>
<div style="left:200.00px;top:404.40px;width:365.80px;height:1.20px;background:#69b0a3;"></div>
<div style="left:222.36px;top:405.00px;width:1.00px;height:59.50px;background:#7ed2c3;"></div>
<div style="left:245.22px;top:405.00px;width:1.00px;height:59.50px;background:#7ed2c3;"></div>
<div style="left:268.08px;top:405.00px;width:1.00px;height:59.50px;background:#7ed2c3;"></div>
<div style="left:290.94px;top:405.00px;width:1.00px;height:59.50px;background:#7ed2c3;"></div>
<div style="left:313.81px;top:405.00px;width:1.00px;height:59.50px;background:#7ed2c3;"></div>
<div style="left:336.67px;top:405.00px;width:1.00px;height:59.50px;background:#7ed2c3;"></div>
<div style="left:359.53px;top:405.00px;width:1.00px;height:59.50px;background:#7ed2c3;"></div>
<div style="left:382.39px;top:405.00px;width:1.00px;height:59.50px;background:#7ed2c3;"></div>
<div style="left:405.25px;top:405.00px;width:1.00px;height:59.50px;background:#7ed2c3;"></div>
<div style="left:428.11px;top:405.00px;width:1.00px;height:59.50px;background:#7ed2c3;"></div>
<div style="left:450.97px;top:405.00px;width:1.00px;height:59.50px;background:#7ed2c3;"></div>
<div style="left:473.83px;top:405.00px;width:1.00px;height:59.50px;background:#7ed2c3;"></div>
<div style="left:496.69px;top:405.00px;width:1.00px;height:59.50px;background:#7ed2c3;"></div>
<div style="left:519.55px;top:405.00px;width:1.00px;height:59.50px;background:#7ed2c3;"></div>
<div style="left:542.41px;top:405.00px;width:1.00px;height:59.50px;background:#7ed2c3;"></div>
<div style="left:199.50px;top:375.70px;width:1.10px;height:89.80px;background:#426e66;"></div>
<svg style="position:absolute;left:201.00px;top:375.70px;" width="364.80" height="89.80" viewBox="0 0 364.80 89.80"><g fill="#16302a"><rect x="34.4" y="69.4" width="9.6" height="3.0"/><rect x="80.1" y="69.4" width="9.6" height="3.0"/><rect x="125.9" y="69.4" width="9.6" height="3.0"/><rect x="171.6" y="69.4" width="9.6" height="3.0"/><rect x="217.3" y="69.4" width="9.6" height="3.0"/><rect x="263.0" y="69.4" width="9.6" height="3.0"/><rect x="308.8" y="69.4" width="9.6" height="3.0"/><rect x="354.5" y="69.4" width="9.3" height="3.0"/><rect x="16.2" y="79.9" width="10.0" height="3.0"/><rect x="45.9" y="79.9" width="10.0" height="3.0"/><rect x="107.6" y="79.9" width="10.0" height="3.0"/><rect x="137.3" y="79.9" width="10.0" height="3.0"/><rect x="199.1" y="79.9" width="10.0" height="3.0"/><rect x="228.8" y="79.9" width="10.0" height="3.0"/><rect x="290.5" y="79.9" width="10.0" height="3.0"/><rect x="320.2" y="79.9" width="10.0" height="3.0"/><rect x="0.0" y="38.3" width="10.0" height="3.0"/><rect x="181.9" y="38.3" width="11.0" height="3.0"/><rect x="67.6" y="38.3" width="4.2" height="3.0"/><rect x="159.0" y="38.3" width="4.2" height="3.0"/><rect x="250.5" y="38.3" width="4.2" height="3.0"/><rect x="341.9" y="38.3" width="4.2" height="3.0"/></g></svg>
<div style="left:932.80px;top:375.70px;width:193.70px;height:89.80px;background:#93f5e3;"></div>
<div style="left:932.80px;top:464.50px;width:193.70px;height:1.00px;background:#50867c;"></div>
<div style="left:932.80px;top:404.40px;width:193.70px;height:1.20px;background:#69b0a3;"></div>
<div style="left:953.91px;top:405.00px;width:1.00px;height:59.50px;background:#7ed2c3;"></div>
<div style="left:976.77px;top:405.00px;width:1.00px;height:59.50px;background:#7ed2c3;"></div>
<div style="left:999.63px;top:405.00px;width:1.00px;height:59.50px;background:#7ed2c3;"></div>
<div style="left:1022.50px;top:405.00px;width:1.00px;height:59.50px;background:#7ed2c3;"></div>
<div style="left:1045.36px;top:405.00px;width:1.00px;height:59.50px;background:#7ed2c3;"></div>
<div style="left:1068.22px;top:405.00px;width:1.00px;height:59.50px;background:#7ed2c3;"></div>
<div style="left:1091.08px;top:405.00px;width:1.00px;height:59.50px;background:#7ed2c3;"></div>
<div style="left:1113.94px;top:405.00px;width:1.00px;height:59.50px;background:#7ed2c3;"></div>
<div style="left:932.30px;top:375.70px;width:1.10px;height:89.80px;background:#426e66;"></div>
<svg style="position:absolute;left:979.00px;top:375.70px;" width="147.50" height="89.80" viewBox="0 0 147.50 89.80"><g fill="#16302a"><rect x="33.7" y="69.4" width="9.6" height="3.0"/><rect x="79.4" y="69.4" width="9.6" height="3.0"/><rect x="125.1" y="69.4" width="9.6" height="3.0"/><rect x="0.0" y="79.9" width="9.5" height="3.0"/><rect x="61.2" y="79.9" width="10.0" height="3.0"/><rect x="90.9" y="79.9" width="10.0" height="3.0"/><rect x="135.4" y="38.3" width="11.0" height="3.0"/><rect x="21.1" y="38.3" width="4.2" height="3.0"/><rect x="112.6" y="38.3" width="4.2" height="3.0"/></g></svg>
<div style="left:154.40px;top:470.20px;width:45.40px;height:27.40px;background:#93f5e3;"></div>
<div style="left:154.40px;top:496.60px;width:45.40px;height:1.00px;background:#50867c;"></div>
<div style="left:153.90px;top:470.20px;width:1.10px;height:27.40px;background:#426e66;"></div>
<div style="left:521.00px;top:470.20px;width:44.80px;height:27.40px;background:#93f5e3;"></div>
<div style="left:521.00px;top:496.60px;width:44.80px;height:1.00px;background:#50867c;"></div>
<div style="left:520.50px;top:470.20px;width:1.10px;height:27.40px;background:#426e66;"></div>
<div style="left:-2.00px;top:503.00px;width:201.80px;height:59.70px;background:#eff6b1;"></div>
<div style="left:-2.00px;top:561.70px;width:201.80px;height:1.00px;background:#838761;"></div>
<div style="left:-2.00px;top:529.90px;width:201.80px;height:1.20px;background:#acb17f;"></div>
<div style="left:16.61px;top:530.50px;width:1.00px;height:31.20px;background:#cdd398;"></div>
<div style="left:39.47px;top:530.50px;width:1.00px;height:31.20px;background:#cdd398;"></div>
<div style="left:62.33px;top:530.50px;width:1.00px;height:31.20px;background:#cdd398;"></div>
<div style="left:85.19px;top:530.50px;width:1.00px;height:31.20px;background:#cdd398;"></div>
<div style="left:108.06px;top:530.50px;width:1.00px;height:31.20px;background:#cdd398;"></div>
<div style="left:130.92px;top:530.50px;width:1.00px;height:31.20px;background:#cdd398;"></div>
<div style="left:153.78px;top:530.50px;width:1.00px;height:31.20px;background:#cdd398;"></div>
<div style="left:176.64px;top:530.50px;width:1.00px;height:31.20px;background:#cdd398;"></div>
<div style="left:0.00px;top:540.00px;width:199.80px;height:14.00px;background:#1f201a;"></div>
<div style="left:-2.00px;top:566.50px;width:17.70px;height:89.50px;background:#f6ec8a;"></div>
<div style="left:-2.00px;top:655.00px;width:17.70px;height:1.00px;background:#87814b;"></div>
<div style="left:-2.00px;top:593.90px;width:17.70px;height:1.20px;background:#b1a963;"></div>
<div style="left:0.00px;top:609.30px;width:15.70px;height:1.50px;background:#87814b;"></div>
<div style="left:199.30px;top:662.90px;width:92.30px;height:7.40px;background:#eea67b;"></div>
<div style="left:199.30px;top:669.50px;width:92.30px;height:0.80px;background:#8e6349;"></div>
<div style="left:222.36px;top:662.90px;width:1.00px;height:7.40px;background:#d1926c;"></div>
<div style="left:245.22px;top:662.90px;width:1.00px;height:7.40px;background:#d1926c;"></div>
<div style="left:268.08px;top:662.90px;width:1.00px;height:7.40px;background:#d1926c;"></div>
<div style="left:383.00px;top:662.90px;width:549.40px;height:7.40px;background:#eea67b;"></div>
<div style="left:383.00px;top:669.50px;width:549.40px;height:0.80px;background:#8e6349;"></div>
<div style="left:405.25px;top:662.90px;width:1.00px;height:7.40px;background:#d1926c;"></div>
<div style="left:428.11px;top:662.90px;width:1.00px;height:7.40px;background:#d1926c;"></div>
<div style="left:450.97px;top:662.90px;width:1.00px;height:7.40px;background:#d1926c;"></div>
<div style="left:473.83px;top:662.90px;width:1.00px;height:7.40px;background:#d1926c;"></div>
<div style="left:496.69px;top:662.90px;width:1.00px;height:7.40px;background:#d1926c;"></div>
<div style="left:519.55px;top:662.90px;width:1.00px;height:7.40px;background:#d1926c;"></div>
<div style="left:542.41px;top:662.90px;width:1.00px;height:7.40px;background:#d1926c;"></div>
<div style="left:565.28px;top:662.90px;width:1.00px;height:7.40px;background:#d1926c;"></div>
<div style="left:588.14px;top:662.90px;width:1.00px;height:7.40px;background:#d1926c;"></div>
<div style="left:611.00px;top:662.90px;width:1.00px;height:7.40px;background:#d1926c;"></div>
<div style="left:633.86px;top:662.90px;width:1.00px;height:7.40px;background:#d1926c;"></div>
<div style="left:656.72px;top:662.90px;width:1.00px;height:7.40px;background:#d1926c;"></div>
<div style="left:679.58px;top:662.90px;width:1.00px;height:7.40px;background:#d1926c;"></div>
<div style="left:702.44px;top:662.90px;width:1.00px;height:7.40px;background:#d1926c;"></div>
<div style="left:725.30px;top:662.90px;width:1.00px;height:7.40px;background:#d1926c;"></div>
<div style="left:748.16px;top:662.90px;width:1.00px;height:7.40px;background:#d1926c;"></div>
<div style="left:771.02px;top:662.90px;width:1.00px;height:7.40px;background:#d1926c;"></div>
<div style="left:793.89px;top:662.90px;width:1.00px;height:7.40px;background:#d1926c;"></div>
<div style="left:816.75px;top:662.90px;width:1.00px;height:7.40px;background:#d1926c;"></div>
<div style="left:839.61px;top:662.90px;width:1.00px;height:7.40px;background:#d1926c;"></div>
<div style="left:862.47px;top:662.90px;width:1.00px;height:7.40px;background:#d1926c;"></div>
<div style="left:885.33px;top:662.90px;width:1.00px;height:7.40px;background:#d1926c;"></div>
<div style="left:908.19px;top:662.90px;width:1.00px;height:7.40px;background:#d1926c;"></div>
<div style="left:0.00px;top:671.90px;width:565.50px;height:7.10px;background:#eea67b;"></div>
<div style="left:0.00px;top:678.20px;width:565.50px;height:0.80px;background:#8e6349;"></div>
<div style="left:16.61px;top:671.90px;width:1.00px;height:7.10px;background:#d1926c;"></div>
<div style="left:39.47px;top:671.90px;width:1.00px;height:7.10px;background:#d1926c;"></div>
<div style="left:62.33px;top:671.90px;width:1.00px;height:7.10px;background:#d1926c;"></div>
<div style="left:85.19px;top:671.90px;width:1.00px;height:7.10px;background:#d1926c;"></div>
<div style="left:108.06px;top:671.90px;width:1.00px;height:7.10px;background:#d1926c;"></div>
<div style="left:130.92px;top:671.90px;width:1.00px;height:7.10px;background:#d1926c;"></div>
<div style="left:153.78px;top:671.90px;width:1.00px;height:7.10px;background:#d1926c;"></div>
<div style="left:176.64px;top:671.90px;width:1.00px;height:7.10px;background:#d1926c;"></div>
<div style="left:199.50px;top:671.90px;width:1.00px;height:7.10px;background:#d1926c;"></div>
<div style="left:222.36px;top:671.90px;width:1.00px;height:7.10px;background:#d1926c;"></div>
<div style="left:245.22px;top:671.90px;width:1.00px;height:7.10px;background:#d1926c;"></div>
<div style="left:268.08px;top:671.90px;width:1.00px;height:7.10px;background:#d1926c;"></div>
<div style="left:290.94px;top:671.90px;width:1.00px;height:7.10px;background:#d1926c;"></div>
<div style="left:313.81px;top:671.90px;width:1.00px;height:7.10px;background:#d1926c;"></div>
<div style="left:336.67px;top:671.90px;width:1.00px;height:7.10px;background:#d1926c;"></div>
<div style="left:359.53px;top:671.90px;width:1.00px;height:7.10px;background:#d1926c;"></div>
<div style="left:382.39px;top:671.90px;width:1.00px;height:7.10px;background:#d1926c;"></div>
<div style="left:405.25px;top:671.90px;width:1.00px;height:7.10px;background:#d1926c;"></div>
<div style="left:428.11px;top:671.90px;width:1.00px;height:7.10px;background:#d1926c;"></div>
<div style="left:450.97px;top:671.90px;width:1.00px;height:7.10px;background:#d1926c;"></div>
<div style="left:473.83px;top:671.90px;width:1.00px;height:7.10px;background:#d1926c;"></div>
<div style="left:496.69px;top:671.90px;width:1.00px;height:7.10px;background:#d1926c;"></div>
<div style="left:519.55px;top:671.90px;width:1.00px;height:7.10px;background:#d1926c;"></div>
<div style="left:542.41px;top:671.90px;width:1.00px;height:7.10px;background:#d1926c;"></div>
<div style="left:0.00px;top:680.60px;width:565.50px;height:7.10px;background:#eea67b;"></div>
<div style="left:0.00px;top:686.90px;width:565.50px;height:0.80px;background:#8e6349;"></div>
<div style="left:16.61px;top:680.60px;width:1.00px;height:7.10px;background:#d1926c;"></div>
<div style="left:39.47px;top:680.60px;width:1.00px;height:7.10px;background:#d1926c;"></div>
<div style="left:62.33px;top:680.60px;width:1.00px;height:7.10px;background:#d1926c;"></div>
<div style="left:85.19px;top:680.60px;width:1.00px;height:7.10px;background:#d1926c;"></div>
<div style="left:108.06px;top:680.60px;width:1.00px;height:7.10px;background:#d1926c;"></div>
<div style="left:130.92px;top:680.60px;width:1.00px;height:7.10px;background:#d1926c;"></div>
<div style="left:153.78px;top:680.60px;width:1.00px;height:7.10px;background:#d1926c;"></div>
<div style="left:176.64px;top:680.60px;width:1.00px;height:7.10px;background:#d1926c;"></div>
<div style="left:199.50px;top:680.60px;width:1.00px;height:7.10px;background:#d1926c;"></div>
<div style="left:222.36px;top:680.60px;width:1.00px;height:7.10px;background:#d1926c;"></div>
<div style="left:245.22px;top:680.60px;width:1.00px;height:7.10px;background:#d1926c;"></div>
<div style="left:268.08px;top:680.60px;width:1.00px;height:7.10px;background:#d1926c;"></div>
<div style="left:290.94px;top:680.60px;width:1.00px;height:7.10px;background:#d1926c;"></div>
<div style="left:313.81px;top:680.60px;width:1.00px;height:7.10px;background:#d1926c;"></div>
<div style="left:336.67px;top:680.60px;width:1.00px;height:7.10px;background:#d1926c;"></div>
<div style="left:359.53px;top:680.60px;width:1.00px;height:7.10px;background:#d1926c;"></div>
<div style="left:382.39px;top:680.60px;width:1.00px;height:7.10px;background:#d1926c;"></div>
<div style="left:405.25px;top:680.60px;width:1.00px;height:7.10px;background:#d1926c;"></div>
<div style="left:428.11px;top:680.60px;width:1.00px;height:7.10px;background:#d1926c;"></div>
<div style="left:450.97px;top:680.60px;width:1.00px;height:7.10px;background:#d1926c;"></div>
<div style="left:473.83px;top:680.60px;width:1.00px;height:7.10px;background:#d1926c;"></div>
<div style="left:496.69px;top:680.60px;width:1.00px;height:7.10px;background:#d1926c;"></div>
<div style="left:519.55px;top:680.60px;width:1.00px;height:7.10px;background:#d1926c;"></div>
<div style="left:542.41px;top:680.60px;width:1.00px;height:7.10px;background:#d1926c;"></div>
<div style="left:932.40px;top:671.60px;width:194.10px;height:7.40px;background:#eea67b;"></div>
<div style="left:932.40px;top:678.20px;width:194.10px;height:0.80px;background:#8e6349;"></div>
<div style="left:953.91px;top:671.60px;width:1.00px;height:7.40px;background:#d1926c;"></div>
<div style="left:976.77px;top:671.60px;width:1.00px;height:7.40px;background:#d1926c;"></div>
<div style="left:999.63px;top:671.60px;width:1.00px;height:7.40px;background:#d1926c;"></div>
<div style="left:1022.50px;top:671.60px;width:1.00px;height:7.40px;background:#d1926c;"></div>
<div style="left:1045.36px;top:671.60px;width:1.00px;height:7.40px;background:#d1926c;"></div>
<div style="left:1068.22px;top:671.60px;width:1.00px;height:7.40px;background:#d1926c;"></div>
<div style="left:1091.08px;top:671.60px;width:1.00px;height:7.40px;background:#d1926c;"></div>
<div style="left:1113.94px;top:671.60px;width:1.00px;height:7.40px;background:#d1926c;"></div>
<div style="left:-2.00px;top:692.80px;width:201.70px;height:90.00px;background:#f09bab;"></div>
<div style="left:-2.00px;top:781.80px;width:201.70px;height:1.00px;background:#84555e;"></div>
<div style="left:-2.00px;top:720.60px;width:201.70px;height:1.20px;background:#ac6f7b;"></div>
<div style="left:16.61px;top:721.20px;width:1.00px;height:60.60px;background:#ce8593;"></div>
<div style="left:39.47px;top:721.20px;width:1.00px;height:60.60px;background:#ce8593;"></div>
<div style="left:62.33px;top:721.20px;width:1.00px;height:60.60px;background:#ce8593;"></div>
<div style="left:85.19px;top:721.20px;width:1.00px;height:60.60px;background:#ce8593;"></div>
<div style="left:108.06px;top:721.20px;width:1.00px;height:60.60px;background:#ce8593;"></div>
<div style="left:130.92px;top:721.20px;width:1.00px;height:60.60px;background:#ce8593;"></div>
<div style="left:153.78px;top:721.20px;width:1.00px;height:60.60px;background:#ce8593;"></div>
<div style="left:176.64px;top:721.20px;width:1.00px;height:60.60px;background:#ce8593;"></div>
<div style="left:0.00px;top:735.30px;width:199.70px;height:2.00px;background:#2a1a1e;"></div>
<div style="left:0.00px;top:766.50px;width:199.70px;height:2.00px;background:#2a1a1e;"></div>
<svg style="position:absolute;left:0.00px;top:721.20px;" width="199.70" height="60.60" viewBox="0 0 199.70 60.60"><path d="M163.7,0 C177.7,0 189.7,35 199.7,61 L199.7,0Z" fill="rgba(90,30,50,0.16)"/></svg>
<div style="left:565.60px;top:692.80px;width:366.80px;height:90.00px;background:#f09bab;"></div>
<div style="left:565.60px;top:781.80px;width:366.80px;height:1.00px;background:#84555e;"></div>
<div style="left:565.60px;top:720.60px;width:366.80px;height:1.20px;background:#ac6f7b;"></div>
<div style="left:588.14px;top:721.20px;width:1.00px;height:60.60px;background:#ce8593;"></div>
<div style="left:611.00px;top:721.20px;width:1.00px;height:60.60px;background:#ce8593;"></div>
<div style="left:633.86px;top:721.20px;width:1.00px;height:60.60px;background:#ce8593;"></div>
<div style="left:656.72px;top:721.20px;width:1.00px;height:60.60px;background:#ce8593;"></div>
<div style="left:679.58px;top:721.20px;width:1.00px;height:60.60px;background:#ce8593;"></div>
<div style="left:702.44px;top:721.20px;width:1.00px;height:60.60px;background:#ce8593;"></div>
<div style="left:725.30px;top:721.20px;width:1.00px;height:60.60px;background:#ce8593;"></div>
<div style="left:748.16px;top:721.20px;width:1.00px;height:60.60px;background:#ce8593;"></div>
<div style="left:771.02px;top:721.20px;width:1.00px;height:60.60px;background:#ce8593;"></div>
<div style="left:793.89px;top:721.20px;width:1.00px;height:60.60px;background:#ce8593;"></div>
<div style="left:816.75px;top:721.20px;width:1.00px;height:60.60px;background:#ce8593;"></div>
<div style="left:839.61px;top:721.20px;width:1.00px;height:60.60px;background:#ce8593;"></div>
<div style="left:862.47px;top:721.20px;width:1.00px;height:60.60px;background:#ce8593;"></div>
<div style="left:885.33px;top:721.20px;width:1.00px;height:60.60px;background:#ce8593;"></div>
<div style="left:908.19px;top:721.20px;width:1.00px;height:60.60px;background:#ce8593;"></div>
<div style="left:565.10px;top:692.80px;width:1.10px;height:90.00px;background:#6c454c;"></div>
<div style="left:565.60px;top:735.30px;width:366.80px;height:2.00px;background:#2a1a1e;"></div>
<div style="left:565.60px;top:766.50px;width:366.80px;height:2.00px;background:#2a1a1e;"></div>
<svg style="position:absolute;left:565.60px;top:721.20px;" width="366.80" height="60.60" viewBox="0 0 366.80 60.60"><path d="M330.79999999999995,0 C344.79999999999995,0 356.79999999999995,35 366.79999999999995,61 L366.79999999999995,0Z" fill="rgba(90,30,50,0.16)"/></svg>
<svg style="position:absolute;left:565.60px;top:721.20px;" width="366.80" height="60.60" viewBox="0 0 366.80 60.60"><path d="M0,0 L4,0 L0,20Z" fill="rgba(90,30,50,0.16)"/></svg>
<div style="left:16.40px;top:786.00px;width:183.30px;height:29.30px;background:#f09bab;"></div>
<div style="left:16.40px;top:814.30px;width:183.30px;height:1.00px;background:#84555e;"></div>
<div style="left:15.90px;top:786.00px;width:1.10px;height:29.30px;background:#6c454c;"></div>
<svg style="position:absolute;left:16.40px;top:786.00px;" width="183.30" height="28.30" viewBox="0 0 183.30 28.30"><path d="M0,0 L62,0 C34.1,8.489999999999986 18.599999999999998,22.639999999999965 14,28.299999999999955 L0,28.299999999999955Z" fill="rgba(90,30,50,0.14)"/><path d="M159.29999999999998,0 L183.29999999999998,0 L183.29999999999998,28.299999999999955 C175.29999999999998,15.564999999999976 167.29999999999998,5.659999999999991 159.29999999999998,0Z" fill="rgba(90,30,50,0.14)"/></svg>
<div style="left:532.00px;top:786.00px;width:33.60px;height:29.30px;background:#f09bab;"></div>
<div style="left:532.00px;top:814.30px;width:33.60px;height:1.00px;background:#84555e;"></div>
<div style="left:531.50px;top:786.00px;width:1.10px;height:29.30px;background:#6c454c;"></div>
<svg style="position:absolute;left:532.00px;top:786.00px;" width="33.60" height="28.30" viewBox="0 0 33.60 28.30"><path d="M0,0 L8,0 L2,28.299999999999955 L0,28.299999999999955Z" fill="rgba(90,30,50,0.14)"/><path d="M25.600000000000023,0 L33.60000000000002,0 L33.60000000000002,28.299999999999955Z" fill="rgba(90,30,50,0.14)"/></svg>
<div style="left:749.70px;top:786.00px;width:182.70px;height:29.30px;background:#f09bab;"></div>
<div style="left:749.70px;top:814.30px;width:182.70px;height:1.00px;background:#84555e;"></div>
<div style="left:749.20px;top:786.00px;width:1.10px;height:29.30px;background:#6c454c;"></div>
<svg style="position:absolute;left:749.70px;top:786.00px;" width="182.70" height="28.30" viewBox="0 0 182.70 28.30"><path d="M0,0 L62,0 C34.1,8.489999999999986 18.599999999999998,22.639999999999965 14,28.299999999999955 L0,28.299999999999955Z" fill="rgba(90,30,50,0.14)"/><path d="M158.69999999999993,0 L182.69999999999993,0 L182.69999999999993,28.299999999999955 C174.69999999999993,15.564999999999976 166.69999999999993,5.659999999999991 158.69999999999993,0Z" fill="rgba(90,30,50,0.14)"/></svg>
<div style="left:16.40px;top:819.70px;width:183.30px;height:27.00px;background:#c776e2;"></div>
<div style="left:16.40px;top:845.70px;width:183.30px;height:1.00px;background:#6d407c;"></div>
<div style="left:15.90px;top:819.70px;width:1.10px;height:27.00px;background:#593565;"></div>
<div style="left:749.70px;top:819.70px;width:182.70px;height:27.00px;background:#c776e2;"></div>
<div style="left:749.70px;top:845.70px;width:182.70px;height:1.00px;background:#6d407c;"></div>
<div style="left:749.20px;top:819.70px;width:1.10px;height:27.00px;background:#593565;"></div>
<svg style="position:absolute;left:16.40px;top:819.70px;" width="4.00" height="27.00" viewBox="0 0 4.00 27.00"><path d="M0,0 L3,0 L0,27Z" fill="rgba(60,20,80,0.25)"/></svg>
<div style="left:-2.00px;top:852.50px;width:201.70px;height:27.30px;background:#c776e2;"></div>
<div style="left:-2.00px;top:878.80px;width:201.70px;height:1.00px;background:#6d407c;"></div>
<div style="left:119.60px;top:155.00px;width:2.00px;height:802.00px;background:#efefef;"></div>
<div style="left:119.60px;top:155.50px;width:2.00px;height:89.50px;background:#1e2448;"></div>
<div style="left:119.60px;top:249.50px;width:2.00px;height:89.20px;background:#1e2448;"></div>
<div style="left:119.60px;top:360.00px;width:2.00px;height:3.50px;background:#1e2448;"></div>
<div style="left:119.60px;top:375.70px;width:2.00px;height:88.80px;background:#0f2a25;"></div>
<div style="left:119.60px;top:503.00px;width:2.00px;height:37.00px;background:#2a2a18;"></div>
<div style="left:119.60px;top:554.00px;width:2.00px;height:7.70px;background:#2a2a18;"></div>
<div style="left:119.60px;top:671.90px;width:2.00px;height:7.10px;background:#3a2012;"></div>
<div style="left:119.60px;top:680.60px;width:2.00px;height:7.10px;background:#3a2012;"></div>
<div style="left:119.60px;top:692.80px;width:2.00px;height:89.00px;background:#2e151b;"></div>
<div style="left:119.60px;top:786.00px;width:2.00px;height:28.30px;background:#2e151b;"></div>
<div style="left:119.60px;top:819.70px;width:2.00px;height:26.00px;background:#26122e;"></div>
<div style="left:119.60px;top:852.50px;width:2.00px;height:26.30px;background:#26122e;"></div>
<div class="t" style="left:1074.00px;top:925.10px;line-height:36.00px;font-size:30px;color:#6a6a6a;font-weight:bold;font-family:'Liberation Sans',sans-serif;letter-spacing:3px">1/2</div>
<div style="left:1126.50px;top:155.00px;width:3.10px;height:802.00px;background:#1c1c1c;"></div>
<div style="left:0.00px;top:956.50px;width:1518.00px;height:1.50px;background:#1f1f1f;"></div>
<div style="left:0.00px;top:958.00px;width:1518.00px;height:39.00px;background:#313131;"></div>
<div style="left:3.70px;top:959.50px;width:1.40px;height:3.00px;background:#6e6e6e;"></div>
<div style="left:37.04px;top:959.50px;width:1.40px;height:3.00px;background:#6e6e6e;"></div>
<div style="left:70.38px;top:959.50px;width:1.40px;height:3.00px;background:#6e6e6e;"></div>
<div style="left:103.72px;top:959.50px;width:1.40px;height:3.00px;background:#6e6e6e;"></div>
<div style="left:137.06px;top:959.50px;width:1.40px;height:3.00px;background:#6e6e6e;"></div>
<div style="left:170.40px;top:959.50px;width:1.40px;height:3.00px;background:#6e6e6e;"></div>
<div style="left:203.74px;top:959.50px;width:1.40px;height:3.00px;background:#6e6e6e;"></div>
<div style="left:237.08px;top:959.50px;width:1.40px;height:3.00px;background:#6e6e6e;"></div>
<div style="left:270.42px;top:959.50px;width:1.40px;height:3.00px;background:#6e6e6e;"></div>
<div style="left:303.76px;top:959.50px;width:1.40px;height:3.00px;background:#6e6e6e;"></div>
<div style="left:337.10px;top:959.50px;width:1.40px;height:3.00px;background:#6e6e6e;"></div>
<div style="left:370.44px;top:959.50px;width:1.40px;height:3.00px;background:#6e6e6e;"></div>
<div style="left:403.78px;top:959.50px;width:1.40px;height:3.00px;background:#6e6e6e;"></div>
<div style="left:437.12px;top:959.50px;width:1.40px;height:3.00px;background:#6e6e6e;"></div>
<div style="left:470.46px;top:959.50px;width:1.40px;height:3.00px;background:#6e6e6e;"></div>
<div style="left:503.80px;top:959.50px;width:1.40px;height:3.00px;background:#6e6e6e;"></div>
<div style="left:537.14px;top:959.50px;width:1.40px;height:3.00px;background:#6e6e6e;"></div>
<div style="left:570.48px;top:959.50px;width:1.40px;height:3.00px;background:#6e6e6e;"></div>
<div style="left:603.82px;top:959.50px;width:1.40px;height:3.00px;background:#6e6e6e;"></div>
<div style="left:637.16px;top:959.50px;width:1.40px;height:3.00px;background:#6e6e6e;"></div>
<div style="left:670.50px;top:959.50px;width:1.40px;height:3.00px;background:#6e6e6e;"></div>
<div style="left:703.84px;top:959.50px;width:1.40px;height:3.00px;background:#6e6e6e;"></div>
<div style="left:737.18px;top:959.50px;width:1.40px;height:3.00px;background:#6e6e6e;"></div>
<div style="left:770.52px;top:959.50px;width:1.40px;height:3.00px;background:#6e6e6e;"></div>
<div style="left:803.86px;top:959.50px;width:1.40px;height:3.00px;background:#6e6e6e;"></div>
<div style="left:837.20px;top:959.50px;width:1.40px;height:3.00px;background:#6e6e6e;"></div>
<div style="left:870.54px;top:959.50px;width:1.40px;height:3.00px;background:#6e6e6e;"></div>
<div style="left:903.88px;top:959.50px;width:1.40px;height:3.00px;background:#6e6e6e;"></div>
<div style="left:937.22px;top:959.50px;width:1.40px;height:3.00px;background:#6e6e6e;"></div>
<div style="left:970.56px;top:959.50px;width:1.40px;height:3.00px;background:#6e6e6e;"></div>
<div style="left:1003.90px;top:959.50px;width:1.40px;height:3.00px;background:#6e6e6e;"></div>
<div style="left:1037.24px;top:959.50px;width:1.40px;height:3.00px;background:#6e6e6e;"></div>
<div style="left:1070.58px;top:959.50px;width:1.40px;height:3.00px;background:#6e6e6e;"></div>
<div style="left:1103.92px;top:959.50px;width:1.40px;height:3.00px;background:#6e6e6e;"></div>
<div style="left:69.70px;top:960.00px;width:1.40px;height:12.50px;background:#777;"></div>
<div style="left:69.70px;top:971.00px;width:3.20px;height:1.50px;background:#777;"></div>
<div class="t" style="left:75.00px;top:963.66px;line-height:21.60px;font-size:18px;color:#8f8f8f;font-weight:normal;font-family:'Liberation Sans',sans-serif;">0:40</div>
<div style="left:236.40px;top:960.00px;width:1.40px;height:12.50px;background:#777;"></div>
<div style="left:236.40px;top:971.00px;width:3.20px;height:1.50px;background:#777;"></div>
<div class="t" style="left:241.70px;top:963.66px;line-height:21.60px;font-size:18px;color:#8f8f8f;font-weight:normal;font-family:'Liberation Sans',sans-serif;">0:45</div>
<div style="left:403.10px;top:960.00px;width:1.40px;height:12.50px;background:#777;"></div>
<div style="left:403.10px;top:971.00px;width:3.20px;height:1.50px;background:#777;"></div>
<div class="t" style="left:408.40px;top:963.66px;line-height:21.60px;font-size:18px;color:#8f8f8f;font-weight:normal;font-family:'Liberation Sans',sans-serif;">0:50</div>
<div style="left:569.80px;top:960.00px;width:1.40px;height:12.50px;background:#777;"></div>
<div style="left:569.80px;top:971.00px;width:3.20px;height:1.50px;background:#777;"></div>
<div class="t" style="left:575.10px;top:963.66px;line-height:21.60px;font-size:18px;color:#8f8f8f;font-weight:normal;font-family:'Liberation Sans',sans-serif;">0:55</div>
<div style="left:736.50px;top:960.00px;width:1.40px;height:12.50px;background:#777;"></div>
<div style="left:736.50px;top:971.00px;width:3.20px;height:1.50px;background:#777;"></div>
<div class="t" style="left:741.80px;top:963.66px;line-height:21.60px;font-size:18px;color:#8f8f8f;font-weight:normal;font-family:'Liberation Sans',sans-serif;">1:00</div>
<div style="left:903.20px;top:960.00px;width:1.40px;height:12.50px;background:#777;"></div>
<div style="left:903.20px;top:971.00px;width:3.20px;height:1.50px;background:#777;"></div>
<div class="t" style="left:908.50px;top:963.66px;line-height:21.60px;font-size:18px;color:#8f8f8f;font-weight:normal;font-family:'Liberation Sans',sans-serif;">1:05</div>
<div style="left:1069.90px;top:960.00px;width:1.40px;height:12.50px;background:#777;"></div>
<div style="left:1069.90px;top:971.00px;width:3.20px;height:1.50px;background:#777;"></div>
<div class="t" style="left:1075.20px;top:963.66px;line-height:21.60px;font-size:18px;color:#8f8f8f;font-weight:normal;font-family:'Liberation Sans',sans-serif;">1:10</div>
<div style="left:1131.50px;top:967.50px;width:24.00px;height:21.00px;background:#1f1f1f;"></div>
<svg style="position:absolute;left:1131.50px;top:967.50px;" width="24.00" height="21.00" viewBox="0 0 24.00 21.00"><g fill="#cfcfcf"><rect x="5" y="8" width="1.6" height="5"/><rect x="8" y="5" width="1.6" height="11"/><rect x="11" y="3" width="1.6" height="15"/><rect x="14" y="6" width="1.6" height="9"/><rect x="17" y="8.5" width="1.6" height="4"/></g></svg>
<div style="left:1162.00px;top:967.50px;width:58.50px;height:21.00px;background:#1f1f1f;"></div>
<div class="t" style="left:1162.20px;width:58px;text-align:center;top:969.84px;line-height:20.40px;font-size:17px;color:#cfcfcf;font-weight:normal;font-family:'Liberation Sans',sans-serif;">1.00x</div>
<div style="left:1249.50px;top:967.50px;width:26.00px;height:21.00px;background:#1f1f1f;"></div>
<div class="t" style="left:1249.50px;width:26px;text-align:center;top:969.84px;line-height:20.40px;font-size:17px;color:#dcdcdc;font-weight:normal;font-family:'Liberation Sans',sans-serif;">H</div>
<div style="left:1281.00px;top:967.50px;width:26.00px;height:21.00px;background:#1f1f1f;"></div>
<div class="t" style="left:1281.00px;width:26px;text-align:center;top:969.84px;line-height:20.40px;font-size:17px;color:#dcdcdc;font-weight:normal;font-family:'Liberation Sans',sans-serif;">W</div>
<div style="left:1308.80px;top:155.00px;width:209.20px;height:802.00px;background:#282828;"></div>
<div style="left:1129.60px;top:155.50px;width:179.20px;height:90.50px;background:#98a7f5;"></div>
<svg style="position:absolute;left:1134.00px;top:158.50px;" width="24.00" height="24.00" viewBox="0 0 24.00 24.00"><circle cx="12" cy="12" r="10.3" stroke="#262a48" stroke-width="1.7" fill="none"/><polygon points="6.8,9.6 17.2,9.6 12,16" fill="#262a48"/></svg>
<div class="t b" style="left:1170.00px;top:162.34px;line-height:20.40px;font-size:17px;color:#262a48;font-weight:normal;font-family:'Liberation Sans',sans-serif;letter-spacing:0.9px">Drums</div>
<div style="left:1308.80px;top:155.50px;width:209.20px;height:90.50px;background:#333333;"></div>
<div style="left:1503.00px;top:155.50px;width:15.00px;height:90.50px;background:#303030;"></div>
<div style="left:1316.50px;top:160.00px;width:77.30px;height:20.80px;background:#1a1a1a;"></div>
<div style="left:1317.30px;top:160.80px;width:75.70px;height:19.20px;background:#f2ae62;"></div>
<div class="t b" style="left:1325.20px;width:60px;text-align:center;top:161.44px;line-height:20.40px;font-size:17px;color:#111;font-weight:normal;font-family:'Liberation Sans',sans-serif;letter-spacing:0.4px">1</div>
<div style="left:1402.00px;top:160.00px;width:35.80px;height:20.80px;background:#222222;"></div>
<div class="t" style="left:1405.00px;width:30px;text-align:center;top:162.72px;line-height:19.20px;font-size:16px;color:#cfcfcf;font-weight:normal;font-family:'Liberation Sans',sans-serif;">S</div>
<div style="left:1445.40px;top:160.00px;width:35.40px;height:20.80px;background:#222222;"></div>
<svg style="position:absolute;left:1455.10px;top:162.40px;" width="16.00" height="16.00" viewBox="0 0 16.00 16.00"><circle cx="8" cy="8" r="6.3" fill="#c9c9c9"/><rect x="8.6" y="3.6" width="1.7" height="7" fill="#1e1e1e"/><ellipse cx="7.6" cy="10.9" rx="2.5" ry="1.8" transform="rotate(-25 7.6 10.9)" fill="#1e1e1e"/></svg>
<div style="left:1316.50px;top:189.50px;width:77.30px;height:20.50px;background:#222222;"></div>
<div style="left:1316.50px;top:189.50px;width:63.00px;height:20.50px;background:#2e7d90;"></div>
<div class="t" style="left:1321.00px;width:70px;text-align:center;top:191.11px;line-height:21.60px;font-size:18px;color:#c9d3d6;font-weight:normal;font-family:'Liberation Sans',sans-serif;letter-spacing:0.3px">-1.0</div>
<div style="left:1402.00px;top:189.50px;width:78.80px;height:20.50px;background:#222222;"></div>
<div class="t" style="left:1427.40px;width:30px;text-align:center;top:191.11px;line-height:21.60px;font-size:18px;color:#cfcfcf;font-weight:normal;font-family:'Liberation Sans',sans-serif;">C</div>
<div style="left:1316.50px;top:218.50px;width:50.10px;height:21.50px;background:#222222;"></div>
<div style="left:1373.00px;top:218.50px;width:51.00px;height:21.50px;background:#222222;"></div>
<div style="left:1316.5px;top:221.5px;width:7px;height:7px;border-radius:50%;background:#e25555"></div>
<div style="left:1373.5px;top:221.5px;width:7px;height:7px;border-radius:50%;background:#e25555"></div>
<div style="left:1318.00px;top:227.50px;width:3.00px;height:11.50px;background:#2e7d90;"></div>
<div class="t" style="left:1312.00px;width:60px;text-align:center;top:220.61px;line-height:21.60px;font-size:18px;color:#c9c9c9;font-weight:normal;font-family:'Liberation Sans',sans-serif;letter-spacing:0.3px">-52.8</div>
<svg style="position:absolute;left:1384.50px;top:222.25px;" width="28.00" height="14.00" viewBox="0 0 28.00 14.00"><rect x="1" y="6" width="7.5" height="2.2" fill="#c9c9c9"/><circle cx="14.6" cy="7" r="3.9" stroke="#c9c9c9" stroke-width="2.2" fill="none"/><circle cx="22.4" cy="7" r="3.9" stroke="#c9c9c9" stroke-width="2.2" fill="none"/></svg>
<div style="left:1488.40px;top:159.50px;width:5.20px;height:83.00px;background:#1c1c1c;"></div>
<div style="left:1495.00px;top:159.50px;width:5.90px;height:83.00px;background:#1c1c1c;"></div>
<div style="left:1129.60px;top:249.50px;width:179.20px;height:90.20px;background:#98a7f5;"></div>
<svg style="position:absolute;left:1134.00px;top:252.50px;" width="24.00" height="24.00" viewBox="0 0 24.00 24.00"><circle cx="12" cy="12" r="10.3" stroke="#262a48" stroke-width="1.7" fill="none"/><polygon points="6.8,9.6 17.2,9.6 12,16" fill="#262a48"/></svg>
<div class="t b" style="left:1170.00px;top:256.34px;line-height:20.40px;font-size:17px;color:#262a48;font-weight:normal;font-family:'Liberation Sans',sans-serif;letter-spacing:0.9px">Breaks</div>
<div style="left:1308.80px;top:249.50px;width:209.20px;height:90.20px;background:#333333;"></div>
<div style="left:1503.00px;top:249.50px;width:15.00px;height:90.20px;background:#303030;"></div>
<div style="left:1316.50px;top:254.00px;width:77.30px;height:20.80px;background:#1a1a1a;"></div>
<div style="left:1317.30px;top:254.80px;width:75.70px;height:19.20px;background:#f2ae62;"></div>
<div class="t b" style="left:1325.20px;width:60px;text-align:center;top:255.44px;line-height:20.40px;font-size:17px;color:#111;font-weight:normal;font-family:'Liberation Sans',sans-serif;letter-spacing:0.4px">2</div>
<div style="left:1402.00px;top:254.00px;width:35.80px;height:20.80px;background:#222222;"></div>
<div class="t" style="left:1405.00px;width:30px;text-align:center;top:256.72px;line-height:19.20px;font-size:16px;color:#cfcfcf;font-weight:normal;font-family:'Liberation Sans',sans-serif;">S</div>
<div style="left:1445.40px;top:254.00px;width:35.40px;height:20.80px;background:#222222;"></div>
<div style="left:1457.10px;top:258.40px;width:12px;height:12px;border-radius:50%;background:#777"></div>
<div style="left:1316.50px;top:283.50px;width:77.30px;height:20.50px;background:#222222;"></div>
<div style="left:1316.50px;top:283.50px;width:48.00px;height:20.50px;background:#2e7d90;"></div>
<div class="t" style="left:1321.00px;width:70px;text-align:center;top:285.11px;line-height:21.60px;font-size:18px;color:#c9d3d6;font-weight:normal;font-family:'Liberation Sans',sans-serif;letter-spacing:0.3px">-9.4</div>
<div style="left:1402.00px;top:283.50px;width:78.80px;height:20.50px;background:#222222;"></div>
<div class="t" style="left:1427.40px;width:30px;text-align:center;top:285.11px;line-height:21.60px;font-size:18px;color:#cfcfcf;font-weight:normal;font-family:'Liberation Sans',sans-serif;">C</div>
<div style="left:1316.50px;top:312.50px;width:50.10px;height:21.50px;background:#222222;"></div>
<div style="left:1373.00px;top:312.50px;width:51.00px;height:21.50px;background:#222222;"></div>
<div style="left:1316.5px;top:315.5px;width:7px;height:7px;border-radius:50%;background:#e25555"></div>
<svg style="position:absolute;left:1328.00px;top:316.25px;" width="28.00" height="14.00" viewBox="0 0 28.00 14.00"><rect x="1" y="6" width="7.5" height="2.2" fill="#c9c9c9"/><circle cx="14.6" cy="7" r="3.9" stroke="#c9c9c9" stroke-width="2.2" fill="none"/><circle cx="22.4" cy="7" r="3.9" stroke="#c9c9c9" stroke-width="2.2" fill="none"/></svg>
<svg style="position:absolute;left:1384.50px;top:316.25px;" width="28.00" height="14.00" viewBox="0 0 28.00 14.00"><rect x="1" y="6" width="7.5" height="2.2" fill="#c9c9c9"/><circle cx="14.6" cy="7" r="3.9" stroke="#c9c9c9" stroke-width="2.2" fill="none"/><circle cx="22.4" cy="7" r="3.9" stroke="#c9c9c9" stroke-width="2.2" fill="none"/></svg>
<div style="left:1488.40px;top:253.50px;width:5.20px;height:82.70px;background:#1c1c1c;"></div>
<div style="left:1495.00px;top:253.50px;width:5.90px;height:82.70px;background:#1c1c1c;"></div>
<div style="left:1129.60px;top:342.70px;width:179.20px;height:29.30px;background:#9fc6f3;"></div>
<svg style="position:absolute;left:1134.00px;top:345.50px;" width="24.00" height="24.00" viewBox="0 0 24.00 24.00"><circle cx="12" cy="12" r="10.3" stroke="#1f2a3a" stroke-width="1.7" fill="none"/><path d="M7.6 8.4h8.8M7.6 12h8.8M7.6 15.6h8.8" stroke="#1f2a3a" stroke-width="1.7"/></svg>
<div class="t b" style="left:1168.00px;top:349.34px;line-height:20.40px;font-size:17px;color:#1f2a3a;font-weight:normal;font-family:'Liberation Sans',sans-serif;letter-spacing:0.9px">Percussion</div>
<div style="left:1308.80px;top:342.70px;width:209.20px;height:29.30px;background:#333333;"></div>
<div style="left:1503.00px;top:342.70px;width:15.00px;height:29.30px;background:#303030;"></div>
<div style="left:1316.50px;top:347.20px;width:77.30px;height:20.80px;background:#1a1a1a;"></div>
<div style="left:1317.30px;top:348.00px;width:75.70px;height:19.20px;background:#f2ae62;"></div>
<div class="t b" style="left:1325.20px;width:60px;text-align:center;top:348.64px;line-height:20.40px;font-size:17px;color:#111;font-weight:normal;font-family:'Liberation Sans',sans-serif;letter-spacing:0.4px">3</div>
<div style="left:1402.00px;top:347.20px;width:35.80px;height:20.80px;background:#222222;"></div>
<div class="t" style="left:1405.00px;width:30px;text-align:center;top:349.92px;line-height:19.20px;font-size:16px;color:#cfcfcf;font-weight:normal;font-family:'Liberation Sans',sans-serif;">S</div>
<div style="left:1488.40px;top:346.70px;width:5.20px;height:21.80px;background:#1c1c1c;"></div>
<div style="left:1495.00px;top:346.70px;width:5.90px;height:21.80px;background:#1c1c1c;"></div>
<div style="left:1129.60px;top:375.70px;width:179.20px;height:89.80px;background:#93f5e3;"></div>
<svg style="position:absolute;left:1134.00px;top:378.70px;" width="24.00" height="24.00" viewBox="0 0 24.00 24.00"><circle cx="12" cy="12" r="10.3" stroke="#16302a" stroke-width="1.7" fill="none"/><polygon points="6.8,9.6 17.2,9.6 12,16" fill="#16302a"/></svg>
<div class="t b" style="left:1170.00px;top:382.54px;line-height:20.40px;font-size:17px;color:#16302a;font-weight:normal;font-family:'Liberation Sans',sans-serif;letter-spacing:0.9px">Bass</div>
<div style="left:1308.80px;top:375.70px;width:209.20px;height:89.80px;background:#333333;"></div>
<div style="left:1503.00px;top:375.70px;width:15.00px;height:89.80px;background:#303030;"></div>
<div style="left:1316.50px;top:380.20px;width:77.30px;height:20.80px;background:#1a1a1a;"></div>
<div style="left:1317.30px;top:381.00px;width:75.70px;height:19.20px;background:#f2ae62;"></div>
<div class="t b" style="left:1325.20px;width:60px;text-align:center;top:381.64px;line-height:20.40px;font-size:17px;color:#111;font-weight:normal;font-family:'Liberation Sans',sans-serif;letter-spacing:0.4px">8</div>
<div style="left:1402.00px;top:380.20px;width:35.80px;height:20.80px;background:#222222;"></div>
<div class="t" style="left:1405.00px;width:30px;text-align:center;top:382.92px;line-height:19.20px;font-size:16px;color:#cfcfcf;font-weight:normal;font-family:'Liberation Sans',sans-serif;">S</div>
<div style="left:1445.40px;top:380.20px;width:35.40px;height:20.80px;background:#222222;"></div>
<svg style="position:absolute;left:1455.10px;top:382.60px;" width="16.00" height="16.00" viewBox="0 0 16.00 16.00"><circle cx="8" cy="8" r="6.3" fill="#c9c9c9"/><rect x="8.6" y="3.6" width="1.7" height="7" fill="#1e1e1e"/><ellipse cx="7.6" cy="10.9" rx="2.5" ry="1.8" transform="rotate(-25 7.6 10.9)" fill="#1e1e1e"/></svg>
<div style="left:1316.50px;top:409.70px;width:77.30px;height:20.50px;background:#222222;"></div>
<div style="left:1316.50px;top:409.70px;width:51.50px;height:20.50px;background:#2e7d90;"></div>
<div class="t" style="left:1321.00px;width:70px;text-align:center;top:411.31px;line-height:21.60px;font-size:18px;color:#c9d3d6;font-weight:normal;font-family:'Liberation Sans',sans-serif;letter-spacing:0.3px">-7.7</div>
<div style="left:1402.00px;top:409.70px;width:78.80px;height:20.50px;background:#222222;"></div>
<div class="t" style="left:1427.40px;width:30px;text-align:center;top:411.31px;line-height:21.60px;font-size:18px;color:#cfcfcf;font-weight:normal;font-family:'Liberation Sans',sans-serif;">C</div>
<div style="left:1316.50px;top:438.70px;width:50.10px;height:21.50px;background:#222222;"></div>
<div style="left:1373.00px;top:438.70px;width:51.00px;height:21.50px;background:#222222;"></div>
<svg style="position:absolute;left:1328.00px;top:442.45px;" width="28.00" height="14.00" viewBox="0 0 28.00 14.00"><rect x="1" y="6" width="7.5" height="2.2" fill="#c9c9c9"/><circle cx="14.6" cy="7" r="3.9" stroke="#c9c9c9" stroke-width="2.2" fill="none"/><circle cx="22.4" cy="7" r="3.9" stroke="#c9c9c9" stroke-width="2.2" fill="none"/></svg>
<svg style="position:absolute;left:1384.50px;top:442.45px;" width="28.00" height="14.00" viewBox="0 0 28.00 14.00"><rect x="1" y="6" width="7.5" height="2.2" fill="#c9c9c9"/><circle cx="14.6" cy="7" r="3.9" stroke="#c9c9c9" stroke-width="2.2" fill="none"/><circle cx="22.4" cy="7" r="3.9" stroke="#c9c9c9" stroke-width="2.2" fill="none"/></svg>
<div style="left:1488.40px;top:379.70px;width:5.20px;height:82.30px;background:#1c1c1c;"></div>
<div style="left:1495.00px;top:379.70px;width:5.90px;height:82.30px;background:#1c1c1c;"></div>
<div style="left:1129.60px;top:468.70px;width:179.20px;height:29.60px;background:#93f5e3;"></div>
<svg style="position:absolute;left:1134.00px;top:471.70px;" width="24.00" height="24.00" viewBox="0 0 24.00 24.00"><circle cx="12" cy="12" r="10.3" stroke="#16302a" stroke-width="1.7" fill="none"/><polygon points="9.6,6.8 9.6,17.2 16,12" fill="#16302a"/></svg>
<div class="t b" style="left:1170.00px;top:475.54px;line-height:20.40px;font-size:17px;color:#16302a;font-weight:normal;font-family:'Liberation Sans',sans-serif;letter-spacing:0.9px">Bass Drop</div>
<div style="left:1308.80px;top:468.70px;width:209.20px;height:29.60px;background:#333333;"></div>
<div style="left:1503.00px;top:468.70px;width:15.00px;height:29.60px;background:#303030;"></div>
<div style="left:1316.50px;top:473.20px;width:77.30px;height:20.80px;background:#1a1a1a;"></div>
<div style="left:1317.30px;top:474.00px;width:75.70px;height:19.20px;background:#f2ae62;"></div>
<div class="t b" style="left:1325.20px;width:60px;text-align:center;top:474.64px;line-height:20.40px;font-size:17px;color:#111;font-weight:normal;font-family:'Liberation Sans',sans-serif;letter-spacing:0.4px">9</div>
<div style="left:1402.00px;top:473.20px;width:35.80px;height:20.80px;background:#222222;"></div>
<div class="t" style="left:1405.00px;width:30px;text-align:center;top:475.92px;line-height:19.20px;font-size:16px;color:#cfcfcf;font-weight:normal;font-family:'Liberation Sans',sans-serif;">S</div>
<div style="left:1445.40px;top:473.20px;width:35.40px;height:20.80px;background:#222222;"></div>
<svg style="position:absolute;left:1455.10px;top:475.60px;" width="16.00" height="16.00" viewBox="0 0 16.00 16.00"><circle cx="8" cy="8" r="6.3" fill="#c9c9c9"/><rect x="8.6" y="3.6" width="1.7" height="7" fill="#1e1e1e"/><ellipse cx="7.6" cy="10.9" rx="2.5" ry="1.8" transform="rotate(-25 7.6 10.9)" fill="#1e1e1e"/></svg>
<div style="left:1488.40px;top:472.70px;width:5.20px;height:22.10px;background:#1c1c1c;"></div>
<div style="left:1495.00px;top:472.70px;width:5.90px;height:22.10px;background:#1c1c1c;"></div>
<div style="left:1129.60px;top:501.80px;width:179.20px;height:61.00px;background:#eff6b1;"></div>
<svg style="position:absolute;left:1134.00px;top:504.80px;" width="24.00" height="24.00" viewBox="0 0 24.00 24.00"><circle cx="12" cy="12" r="10.3" stroke="#33331f" stroke-width="1.7" fill="none"/><polygon points="6.8,9.6 17.2,9.6 12,16" fill="#33331f"/></svg>
<div class="t b" style="left:1170.00px;top:508.64px;line-height:20.40px;font-size:17px;color:#33331f;font-weight:normal;font-family:'Liberation Sans',sans-serif;letter-spacing:0.9px">Synth Riser</div>
<div style="left:1308.80px;top:501.80px;width:209.20px;height:61.00px;background:#333333;"></div>
<div style="left:1503.00px;top:501.80px;width:15.00px;height:61.00px;background:#303030;"></div>
<div style="left:1316.50px;top:506.30px;width:77.30px;height:20.80px;background:#1a1a1a;"></div>
<div style="left:1317.30px;top:507.10px;width:75.70px;height:19.20px;background:#f2ae62;"></div>
<div class="t b" style="left:1325.20px;width:60px;text-align:center;top:507.74px;line-height:20.40px;font-size:17px;color:#111;font-weight:normal;font-family:'Liberation Sans',sans-serif;letter-spacing:0.4px">10</div>
<div style="left:1402.00px;top:506.30px;width:35.80px;height:20.80px;background:#222222;"></div>
<div class="t" style="left:1405.00px;width:30px;text-align:center;top:509.02px;line-height:19.20px;font-size:16px;color:#cfcfcf;font-weight:normal;font-family:'Liberation Sans',sans-serif;">S</div>
<div style="left:1445.40px;top:506.30px;width:35.40px;height:20.80px;background:#222222;"></div>
<svg style="position:absolute;left:1455.10px;top:508.70px;" width="16.00" height="16.00" viewBox="0 0 16.00 16.00"><circle cx="8" cy="8" r="6.3" fill="#c9c9c9"/><rect x="8.6" y="3.6" width="1.7" height="7" fill="#1e1e1e"/><ellipse cx="7.6" cy="10.9" rx="2.5" ry="1.8" transform="rotate(-25 7.6 10.9)" fill="#1e1e1e"/></svg>
<div style="left:1316.50px;top:535.80px;width:77.30px;height:20.50px;background:#222222;"></div>
<div style="left:1316.50px;top:535.80px;width:31.00px;height:20.50px;background:#2e7d90;"></div>
<div class="t" style="left:1321.00px;width:70px;text-align:center;top:537.41px;line-height:21.60px;font-size:18px;color:#c9d3d6;font-weight:normal;font-family:'Liberation Sans',sans-serif;letter-spacing:0.3px">-18.0</div>
<div style="left:1402.00px;top:535.80px;width:78.80px;height:20.50px;background:#222222;"></div>
<div class="t" style="left:1427.40px;width:30px;text-align:center;top:537.41px;line-height:21.60px;font-size:18px;color:#cfcfcf;font-weight:normal;font-family:'Liberation Sans',sans-serif;">C</div>
<div style="left:1488.40px;top:505.80px;width:5.20px;height:53.50px;background:#1c1c1c;"></div>
<div style="left:1495.00px;top:505.80px;width:5.90px;height:53.50px;background:#1c1c1c;"></div>
<div style="left:1129.60px;top:565.80px;width:179.20px;height:90.50px;background:#f6ec8a;"></div>
<svg style="position:absolute;left:1134.00px;top:568.80px;" width="24.00" height="24.00" viewBox="0 0 24.00 24.00"><circle cx="12" cy="12" r="10.3" stroke="#38341a" stroke-width="1.7" fill="none"/><polygon points="6.8,9.6 17.2,9.6 12,16" fill="#38341a"/></svg>
<div class="t b" style="left:1170.00px;top:572.64px;line-height:20.40px;font-size:17px;color:#38341a;font-weight:normal;font-family:'Liberation Sans',sans-serif;letter-spacing:0.9px">Keys</div>
<div style="left:1308.80px;top:565.80px;width:209.20px;height:90.50px;background:#333333;"></div>
<div style="left:1503.00px;top:565.80px;width:15.00px;height:90.50px;background:#303030;"></div>
<div style="left:1316.50px;top:570.30px;width:77.30px;height:20.80px;background:#1a1a1a;"></div>
<div style="left:1317.30px;top:571.10px;width:75.70px;height:19.20px;background:#f2ae62;"></div>
<div class="t b" style="left:1325.20px;width:60px;text-align:center;top:571.74px;line-height:20.40px;font-size:17px;color:#111;font-weight:normal;font-family:'Liberation Sans',sans-serif;letter-spacing:0.4px">11</div>
<div style="left:1402.00px;top:570.30px;width:35.80px;height:20.80px;background:#222222;"></div>
<div class="t" style="left:1405.00px;width:30px;text-align:center;top:573.02px;line-height:19.20px;font-size:16px;color:#cfcfcf;font-weight:normal;font-family:'Liberation Sans',sans-serif;">S</div>
<div style="left:1445.40px;top:570.30px;width:35.40px;height:20.80px;background:#222222;"></div>
<svg style="position:absolute;left:1455.10px;top:572.70px;" width="16.00" height="16.00" viewBox="0 0 16.00 16.00"><circle cx="8" cy="8" r="6.3" fill="#c9c9c9"/><rect x="8.6" y="3.6" width="1.7" height="7" fill="#1e1e1e"/><ellipse cx="7.6" cy="10.9" rx="2.5" ry="1.8" transform="rotate(-25 7.6 10.9)" fill="#1e1e1e"/></svg>
<div style="left:1316.50px;top:599.80px;width:77.30px;height:20.50px;background:#222222;"></div>
<div style="left:1316.50px;top:599.80px;width:53.00px;height:20.50px;background:#2e7d90;"></div>
<div class="t" style="left:1321.00px;width:70px;text-align:center;top:601.41px;line-height:21.60px;font-size:18px;color:#c9d3d6;font-weight:normal;font-family:'Liberation Sans',sans-serif;letter-spacing:0.3px">-6.6</div>
<div style="left:1402.00px;top:599.80px;width:78.80px;height:20.50px;background:#222222;"></div>
<div class="t" style="left:1427.40px;width:30px;text-align:center;top:601.41px;line-height:21.60px;font-size:18px;color:#cfcfcf;font-weight:normal;font-family:'Liberation Sans',sans-serif;">C</div>
<div style="left:1316.50px;top:628.80px;width:50.10px;height:21.50px;background:#222222;"></div>
<div style="left:1373.00px;top:628.80px;width:51.00px;height:21.50px;background:#222222;"></div>
<svg style="position:absolute;left:1328.00px;top:632.55px;" width="28.00" height="14.00" viewBox="0 0 28.00 14.00"><rect x="1" y="6" width="7.5" height="2.2" fill="#c9c9c9"/><circle cx="14.6" cy="7" r="3.9" stroke="#c9c9c9" stroke-width="2.2" fill="none"/><circle cx="22.4" cy="7" r="3.9" stroke="#c9c9c9" stroke-width="2.2" fill="none"/></svg>
<svg style="position:absolute;left:1384.50px;top:632.55px;" width="28.00" height="14.00" viewBox="0 0 28.00 14.00"><rect x="1" y="6" width="7.5" height="2.2" fill="#c9c9c9"/><circle cx="14.6" cy="7" r="3.9" stroke="#c9c9c9" stroke-width="2.2" fill="none"/><circle cx="22.4" cy="7" r="3.9" stroke="#c9c9c9" stroke-width="2.2" fill="none"/></svg>
<div style="left:1488.40px;top:569.80px;width:5.20px;height:83.00px;background:#1c1c1c;"></div>
<div style="left:1495.00px;top:569.80px;width:5.90px;height:83.00px;background:#1c1c1c;"></div>
<div style="left:1129.60px;top:659.80px;width:179.20px;height:29.70px;background:#eea67b;"></div>
<svg style="position:absolute;left:1134.00px;top:662.60px;" width="24.00" height="24.00" viewBox="0 0 24.00 24.00"><circle cx="12" cy="12" r="10.3" stroke="#3a2418" stroke-width="1.7" fill="none"/><path d="M7.6 8.4h8.8M7.6 12h8.8M7.6 15.6h8.8" stroke="#3a2418" stroke-width="1.7"/></svg>
<div class="t b" style="left:1168.00px;top:666.44px;line-height:20.40px;font-size:17px;color:#3a2418;font-weight:normal;font-family:'Liberation Sans',sans-serif;letter-spacing:0.9px">Pads</div>
<div style="left:1308.80px;top:659.80px;width:209.20px;height:29.70px;background:#333333;"></div>
<div style="left:1503.00px;top:659.80px;width:15.00px;height:29.70px;background:#303030;"></div>
<div style="left:1316.50px;top:664.30px;width:77.30px;height:20.80px;background:#1a1a1a;"></div>
<div style="left:1317.30px;top:665.10px;width:75.70px;height:19.20px;background:#f2ae62;"></div>
<div class="t b" style="left:1325.20px;width:60px;text-align:center;top:665.74px;line-height:20.40px;font-size:17px;color:#111;font-weight:normal;font-family:'Liberation Sans',sans-serif;letter-spacing:0.4px">12</div>
<div style="left:1402.00px;top:664.30px;width:35.80px;height:20.80px;background:#222222;"></div>
<div class="t" style="left:1405.00px;width:30px;text-align:center;top:667.02px;line-height:19.20px;font-size:16px;color:#cfcfcf;font-weight:normal;font-family:'Liberation Sans',sans-serif;">S</div>
<div style="left:1488.40px;top:663.80px;width:5.20px;height:22.20px;background:#1c1c1c;"></div>
<div style="left:1495.00px;top:663.80px;width:5.90px;height:22.20px;background:#1c1c1c;"></div>
<div style="left:1129.60px;top:692.80px;width:179.20px;height:90.00px;background:#f09bab;"></div>
<svg style="position:absolute;left:1134.00px;top:695.80px;" width="24.00" height="24.00" viewBox="0 0 24.00 24.00"><circle cx="12" cy="12" r="10.3" stroke="#3a1f26" stroke-width="1.7" fill="none"/><polygon points="6.8,9.6 17.2,9.6 12,16" fill="#3a1f26"/></svg>
<div class="t b" style="left:1170.00px;top:699.64px;line-height:20.40px;font-size:17px;color:#3a1f26;font-weight:normal;font-family:'Liberation Sans',sans-serif;letter-spacing:0.9px">Ambience</div>
<div style="left:1308.80px;top:692.80px;width:209.20px;height:90.00px;background:#333333;"></div>
<div style="left:1503.00px;top:692.80px;width:15.00px;height:90.00px;background:#303030;"></div>
<div style="left:1316.50px;top:697.30px;width:77.30px;height:20.80px;background:#1a1a1a;"></div>
<div style="left:1317.30px;top:698.10px;width:75.70px;height:19.20px;background:#f2ae62;"></div>
<div class="t b" style="left:1325.20px;width:60px;text-align:center;top:698.74px;line-height:20.40px;font-size:17px;color:#111;font-weight:normal;font-family:'Liberation Sans',sans-serif;letter-spacing:0.4px">16</div>
<div style="left:1402.00px;top:697.30px;width:35.80px;height:20.80px;background:#222222;"></div>
<div class="t" style="left:1405.00px;width:30px;text-align:center;top:700.02px;line-height:19.20px;font-size:16px;color:#cfcfcf;font-weight:normal;font-family:'Liberation Sans',sans-serif;">S</div>
<div style="left:1445.40px;top:697.30px;width:35.40px;height:20.80px;background:#222222;"></div>
<div style="left:1457.10px;top:701.70px;width:12px;height:12px;border-radius:50%;background:#777"></div>
<div style="left:1316.50px;top:726.80px;width:77.30px;height:20.50px;background:#222222;"></div>
<div style="left:1316.50px;top:726.80px;width:48.00px;height:20.50px;background:#2e7d90;"></div>
<div class="t" style="left:1321.00px;width:70px;text-align:center;top:728.41px;line-height:21.60px;font-size:18px;color:#c9d3d6;font-weight:normal;font-family:'Liberation Sans',sans-serif;letter-spacing:0.3px">-8.3</div>
<div style="left:1402.00px;top:726.80px;width:78.80px;height:20.50px;background:#222222;"></div>
<div class="t" style="left:1427.40px;width:30px;text-align:center;top:728.41px;line-height:21.60px;font-size:18px;color:#cfcfcf;font-weight:normal;font-family:'Liberation Sans',sans-serif;">C</div>
<div style="left:1316.50px;top:755.80px;width:50.10px;height:21.50px;background:#222222;"></div>
<div style="left:1373.00px;top:755.80px;width:51.00px;height:21.50px;background:#222222;"></div>
<svg style="position:absolute;left:1328.00px;top:759.55px;" width="28.00" height="14.00" viewBox="0 0 28.00 14.00"><rect x="1" y="6" width="7.5" height="2.2" fill="#c9c9c9"/><circle cx="14.6" cy="7" r="3.9" stroke="#c9c9c9" stroke-width="2.2" fill="none"/><circle cx="22.4" cy="7" r="3.9" stroke="#c9c9c9" stroke-width="2.2" fill="none"/></svg>
<svg style="position:absolute;left:1384.50px;top:759.55px;" width="28.00" height="14.00" viewBox="0 0 28.00 14.00"><rect x="1" y="6" width="7.5" height="2.2" fill="#c9c9c9"/><circle cx="14.6" cy="7" r="3.9" stroke="#c9c9c9" stroke-width="2.2" fill="none"/><circle cx="22.4" cy="7" r="3.9" stroke="#c9c9c9" stroke-width="2.2" fill="none"/></svg>
<div style="left:1488.40px;top:696.80px;width:5.20px;height:82.50px;background:#1c1c1c;"></div>
<div style="left:1495.00px;top:696.80px;width:5.90px;height:82.50px;background:#1c1c1c;"></div>
<div style="left:1129.60px;top:786.00px;width:179.20px;height:29.30px;background:#f09bab;"></div>
<svg style="position:absolute;left:1134.00px;top:789.00px;" width="24.00" height="24.00" viewBox="0 0 24.00 24.00"><circle cx="12" cy="12" r="10.3" stroke="#3a1f26" stroke-width="1.7" fill="none"/><polygon points="9.6,6.8 9.6,17.2 16,12" fill="#3a1f26"/></svg>
<div class="t b" style="left:1170.00px;top:792.84px;line-height:20.40px;font-size:17px;color:#3a1f26;font-weight:normal;font-family:'Liberation Sans',sans-serif;letter-spacing:0.9px">Drone</div>
<div style="left:1308.80px;top:786.00px;width:209.20px;height:29.30px;background:#333333;"></div>
<div style="left:1503.00px;top:786.00px;width:15.00px;height:29.30px;background:#303030;"></div>
<div style="left:1316.50px;top:790.50px;width:77.30px;height:20.80px;background:#1a1a1a;"></div>
<div style="left:1317.30px;top:791.30px;width:75.70px;height:19.20px;background:#f2ae62;"></div>
<div class="t b" style="left:1325.20px;width:60px;text-align:center;top:791.94px;line-height:20.40px;font-size:17px;color:#111;font-weight:normal;font-family:'Liberation Sans',sans-serif;letter-spacing:0.4px">17</div>
<div style="left:1402.00px;top:790.50px;width:35.80px;height:20.80px;background:#222222;"></div>
<div class="t" style="left:1405.00px;width:30px;text-align:center;top:793.22px;line-height:19.20px;font-size:16px;color:#cfcfcf;font-weight:normal;font-family:'Liberation Sans',sans-serif;">S</div>
<div style="left:1445.40px;top:790.50px;width:35.40px;height:20.80px;background:#222222;"></div>
<div style="left:1457.10px;top:794.90px;width:12px;height:12px;border-radius:50%;background:#777"></div>
<div style="left:1488.40px;top:790.00px;width:5.20px;height:21.80px;background:#1c1c1c;"></div>
<div style="left:1495.00px;top:790.00px;width:5.90px;height:21.80px;background:#1c1c1c;"></div>
<div style="left:1129.60px;top:819.00px;width:179.20px;height:29.00px;background:#c776e2;"></div>
<svg style="position:absolute;left:1134.00px;top:822.00px;" width="24.00" height="24.00" viewBox="0 0 24.00 24.00"><circle cx="12" cy="12" r="10.3" stroke="#301a3a" stroke-width="1.7" fill="none"/><polygon points="9.6,6.8 9.6,17.2 16,12" fill="#301a3a"/></svg>
<div class="t b" style="left:1170.00px;top:825.84px;line-height:20.40px;font-size:17px;color:#301a3a;font-weight:normal;font-family:'Liberation Sans',sans-serif;letter-spacing:0.9px">FX</div>
<div style="left:1308.80px;top:819.00px;width:209.20px;height:29.00px;background:#333333;"></div>
<div style="left:1503.00px;top:819.00px;width:15.00px;height:29.00px;background:#303030;"></div>
<div style="left:1316.50px;top:823.50px;width:77.30px;height:20.80px;background:#1a1a1a;"></div>
<div style="left:1317.30px;top:824.30px;width:75.70px;height:19.20px;background:#f2ae62;"></div>
<div class="t b" style="left:1325.20px;width:60px;text-align:center;top:824.94px;line-height:20.40px;font-size:17px;color:#111;font-weight:normal;font-family:'Liberation Sans',sans-serif;letter-spacing:0.4px">18</div>
<div style="left:1402.00px;top:823.50px;width:35.80px;height:20.80px;background:#222222;"></div>
<div class="t" style="left:1405.00px;width:30px;text-align:center;top:826.22px;line-height:19.20px;font-size:16px;color:#cfcfcf;font-weight:normal;font-family:'Liberation Sans',sans-serif;">S</div>
<div style="left:1445.40px;top:823.50px;width:35.40px;height:20.80px;background:#222222;"></div>
<div style="left:1457.10px;top:827.90px;width:12px;height:12px;border-radius:50%;background:#777"></div>
<div style="left:1488.40px;top:823.00px;width:5.20px;height:21.50px;background:#1c1c1c;"></div>
<div style="left:1495.00px;top:823.00px;width:5.90px;height:21.50px;background:#1c1c1c;"></div>
<div style="left:1129.60px;top:852.00px;width:179.20px;height:29.30px;background:#c776e2;"></div>
<svg style="position:absolute;left:1134.00px;top:855.00px;" width="24.00" height="24.00" viewBox="0 0 24.00 24.00"><circle cx="12" cy="12" r="10.3" stroke="#301a3a" stroke-width="1.7" fill="none"/><polygon points="9.6,6.8 9.6,17.2 16,12" fill="#301a3a"/></svg>
<div class="t b" style="left:1170.00px;top:858.84px;line-height:20.40px;font-size:17px;color:#301a3a;font-weight:normal;font-family:'Liberation Sans',sans-serif;letter-spacing:0.9px">Zap</div>
<div style="left:1308.80px;top:852.00px;width:209.20px;height:29.30px;background:#333333;"></div>
<div style="left:1503.00px;top:852.00px;width:15.00px;height:29.30px;background:#303030;"></div>
<div style="left:1316.50px;top:856.50px;width:77.30px;height:20.80px;background:#1a1a1a;"></div>
<div style="left:1317.30px;top:857.30px;width:75.70px;height:19.20px;background:#f2ae62;"></div>
<div class="t b" style="left:1325.20px;width:60px;text-align:center;top:857.94px;line-height:20.40px;font-size:17px;color:#111;font-weight:normal;font-family:'Liberation Sans',sans-serif;letter-spacing:0.4px">19</div>
<div style="left:1402.00px;top:856.50px;width:35.80px;height:20.80px;background:#222222;"></div>
<div class="t" style="left:1405.00px;width:30px;text-align:center;top:859.22px;line-height:19.20px;font-size:16px;color:#cfcfcf;font-weight:normal;font-family:'Liberation Sans',sans-serif;">S</div>
<div style="left:1445.40px;top:856.50px;width:35.40px;height:20.80px;background:#222222;"></div>
<svg style="position:absolute;left:1455.10px;top:858.90px;" width="16.00" height="16.00" viewBox="0 0 16.00 16.00"><circle cx="8" cy="8" r="6.3" fill="#c9c9c9"/><rect x="8.6" y="3.6" width="1.7" height="7" fill="#1e1e1e"/><ellipse cx="7.6" cy="10.9" rx="2.5" ry="1.8" transform="rotate(-25 7.6 10.9)" fill="#1e1e1e"/></svg>
<div style="left:1488.40px;top:856.00px;width:5.20px;height:21.80px;background:#1c1c1c;"></div>
<div style="left:1495.00px;top:856.00px;width:5.90px;height:21.80px;background:#1c1c1c;"></div>
<div style="left:1488.40px;top:200.00px;width:5.20px;height:42.50px;background:#66e35e;"></div>
<div style="left:1495.00px;top:200.00px;width:5.90px;height:42.50px;background:#66e35e;"></div>
<div style="left:1487.50px;top:176.50px;width:6.50px;height:2.00px;background:#e0a050;"></div>
<div style="left:1494.50px;top:177.50px;width:7.00px;height:2.00px;background:#e0a050;"></div>
<div style="left:1488.40px;top:296.00px;width:5.20px;height:40.20px;background:#66e35e;"></div>
<div style="left:1495.00px;top:296.00px;width:5.90px;height:40.20px;background:#66e35e;"></div>
<div style="left:1488.40px;top:276.00px;width:5.20px;height:20.00px;background:#a8b43c;background:linear-gradient(#c8c040,#5cc050)"></div>
<div style="left:1495.00px;top:276.00px;width:5.90px;height:20.00px;background:#a8b43c;background:linear-gradient(#c8c040,#5cc050)"></div>
<div style="left:1488.40px;top:362.00px;width:5.20px;height:6.50px;background:#66e35e;"></div>
<div style="left:1495.00px;top:361.00px;width:5.90px;height:7.50px;background:#66e35e;"></div>
<div style="left:1488.40px;top:356.00px;width:5.20px;height:1.50px;background:#66e35e;"></div>
<div style="left:1495.00px;top:357.00px;width:5.90px;height:1.50px;background:#66e35e;"></div>
<div style="left:1488.40px;top:416.00px;width:5.20px;height:46.00px;background:#66e35e;"></div>
<div style="left:1495.00px;top:416.00px;width:5.90px;height:46.00px;background:#66e35e;"></div>
<div style="left:1488.40px;top:400.00px;width:5.20px;height:2.00px;background:#e0a050;"></div>
<div style="left:1495.00px;top:400.00px;width:5.90px;height:2.00px;background:#e0a050;"></div>
<div style="left:1488.40px;top:536.00px;width:5.20px;height:23.30px;background:#66e35e;"></div>
<div style="left:1495.00px;top:534.50px;width:5.90px;height:24.80px;background:#66e35e;"></div>
<div style="left:1488.40px;top:600.00px;width:5.20px;height:1.50px;background:#66e35e;"></div>
<div style="left:1495.00px;top:598.50px;width:5.90px;height:1.50px;background:#c8e050;"></div>
<div style="left:1488.40px;top:650.00px;width:5.20px;height:2.50px;background:#66e35e;"></div>
<div style="left:1495.00px;top:650.00px;width:5.90px;height:2.50px;background:#66e35e;"></div>
<div style="left:1488.40px;top:676.00px;width:5.20px;height:10.00px;background:#66e35e;"></div>
<div style="left:1495.00px;top:676.00px;width:5.90px;height:10.00px;background:#66e35e;"></div>
<div style="left:1488.40px;top:670.00px;width:5.20px;height:2.00px;background:#e0c050;"></div>
<div style="left:1495.00px;top:670.50px;width:5.90px;height:2.00px;background:#e0c050;"></div>
<div style="left:1488.40px;top:745.00px;width:5.20px;height:34.30px;background:#66e35e;"></div>
<div style="left:1495.00px;top:747.00px;width:5.90px;height:32.30px;background:#66e35e;"></div>
<div style="left:1488.40px;top:745.00px;width:5.20px;height:7.00px;background:#4fae4c;"></div>
<div style="left:1495.00px;top:742.00px;width:5.90px;height:2.00px;background:#66e35e;"></div>
<div style="left:1488.40px;top:801.00px;width:5.20px;height:10.80px;background:#66e35e;"></div>
<div style="left:1495.00px;top:800.00px;width:5.90px;height:11.80px;background:#66e35e;"></div>
<div style="left:1488.40px;top:833.00px;width:5.20px;height:11.50px;background:#66e35e;"></div>
<div style="left:1495.00px;top:831.00px;width:5.90px;height:13.50px;background:#66e35e;"></div>
<div style="left:1488.40px;top:866.00px;width:5.20px;height:11.80px;background:#66e35e;"></div>
<div style="left:1495.00px;top:865.00px;width:5.90px;height:12.80px;background:#66e35e;"></div>
<div style="left:1129.60px;top:884.50px;width:388.40px;height:38.50px;background:#313131;"></div>
<div style="left:1308.80px;top:884.50px;width:209.20px;height:38.50px;background:#333333;"></div>
<div style="left:1129.60px;top:926.00px;width:179.20px;height:30.50px;background:#ffffff;"></div>
<svg style="position:absolute;left:1134.00px;top:929.00px;" width="24.00" height="24.00" viewBox="0 0 24.00 24.00"><circle cx="12" cy="12" r="10.3" stroke="#222" stroke-width="1.7" fill="none"/><polygon points="9.6,6.8 9.6,17.2 16,12" fill="#222"/></svg>
<div class="t b" style="left:1173.00px;top:932.84px;line-height:20.40px;font-size:17px;color:#222;font-weight:normal;font-family:'Liberation Sans',sans-serif;letter-spacing:0.9px">Main</div>
<div style="left:1308.80px;top:926.00px;width:209.20px;height:30.50px;background:#333333;"></div>
<div style="left:1316.50px;top:930.50px;width:77.30px;height:21.50px;background:#222222;"></div>
<div style="left:1316.50px;top:930.50px;width:64.50px;height:21.50px;background:#2e7d90;"></div>
<div class="t" style="left:1335.00px;width:40px;text-align:center;top:933.04px;line-height:20.40px;font-size:17px;color:#c9d3d6;font-weight:normal;font-family:'Liberation Sans',sans-serif;">0</div>
<div style="left:1402.00px;top:930.50px;width:78.80px;height:21.50px;background:#222222;"></div>
<div style="left:1402.00px;top:930.50px;width:65.00px;height:21.50px;background:#3e6fc8;"></div>
<div class="t" style="left:1421.00px;width:40px;text-align:center;top:933.04px;line-height:20.40px;font-size:17px;color:#c9d3e6;font-weight:normal;font-family:'Liberation Sans',sans-serif;">0</div>
<div style="left:1488.40px;top:930.00px;width:5.20px;height:22.00px;background:#1c1c1c;"></div>
<div style="left:1495.00px;top:930.00px;width:5.90px;height:22.00px;background:#1c1c1c;"></div>
<div style="left:1488.40px;top:938.00px;width:5.20px;height:14.00px;background:#66e35e;"></div>
<div style="left:1495.00px;top:938.00px;width:5.90px;height:14.00px;background:#66e35e;"></div>
<div style="left:1488.40px;top:932.00px;width:5.20px;height:2.00px;background:#d05040;"></div>
<div style="left:1495.00px;top:932.00px;width:5.90px;height:2.00px;background:#d05040;"></div>
<div style="left:0.00px;top:997.00px;width:1518.00px;height:534.00px;background:#262626;"></div>
<div style="left:0.00px;top:1001.00px;width:38.30px;height:29.60px;background:#eff6b1;"></div>
<svg style="position:absolute;left:11.20px;top:1003.40px;" width="24.00" height="24.00" viewBox="0 0 24.00 24.00"><circle cx="12" cy="12" r="10.3" stroke="#33331f" stroke-width="1.7" fill="none"/><polygon points="6.8,9.6 17.2,9.6 12,16" fill="#33331f"/></svg>
<div style="left:0.00px;top:1031.00px;width:38.30px;height:427.00px;background:#333333;"></div>
<div class="t" style="left:5.50px;top:1042.02px;line-height:19.20px;font-size:16px;color:#ababab;font-weight:normal;font-family:'Liberation Sans',sans-serif;letter-spacing:0.3px">6</div>
<div class="t" style="left:5.50px;top:1075.42px;line-height:19.20px;font-size:16px;color:#ababab;font-weight:normal;font-family:'Liberation Sans',sans-serif;letter-spacing:0.3px">0</div>
<div class="t" style="left:5.50px;top:1114.52px;line-height:19.20px;font-size:16px;color:#ababab;font-weight:normal;font-family:'Liberation Sans',sans-serif;letter-spacing:0.3px">6</div>
<div class="t" style="left:5.50px;top:1154.42px;line-height:19.20px;font-size:16px;color:#ababab;font-weight:normal;font-family:'Liberation Sans',sans-serif;letter-spacing:0.3px">12</div>
<div class="t" style="left:5.50px;top:1194.22px;line-height:19.20px;font-size:16px;color:#ababab;font-weight:normal;font-family:'Liberation Sans',sans-serif;letter-spacing:0.3px">18</div>
<div class="t" style="left:5.50px;top:1234.02px;line-height:19.20px;font-size:16px;color:#ababab;font-weight:normal;font-family:'Liberation Sans',sans-serif;letter-spacing:0.3px">24</div>
<div class="t" style="left:5.50px;top:1276.02px;line-height:19.20px;font-size:16px;color:#ababab;font-weight:normal;font-family:'Liberation Sans',sans-serif;letter-spacing:0.3px">30</div>
<div class="t" style="left:5.50px;top:1310.52px;line-height:19.20px;font-size:16px;color:#ababab;font-weight:normal;font-family:'Liberation Sans',sans-serif;letter-spacing:0.3px">36</div>
<div class="t" style="left:5.50px;top:1341.62px;line-height:19.20px;font-size:16px;color:#ababab;font-weight:normal;font-family:'Liberation Sans',sans-serif;letter-spacing:0.3px">42</div>
<div class="t" style="left:5.50px;top:1367.72px;line-height:19.20px;font-size:16px;color:#ababab;font-weight:normal;font-family:'Liberation Sans',sans-serif;letter-spacing:0.3px">48</div>
<div class="t" style="left:5.50px;top:1391.72px;line-height:19.20px;font-size:16px;color:#ababab;font-weight:normal;font-family:'Liberation Sans',sans-serif;letter-spacing:0.3px">54</div>
<div class="t" style="left:5.50px;top:1414.32px;line-height:19.20px;font-size:16px;color:#ababab;font-weight:normal;font-family:'Liberation Sans',sans-serif;letter-spacing:0.3px">60</div>
<div style="left:0.00px;top:1461.20px;width:38.30px;height:10.60px;background:#eff6b1;"></div>
<div style="left:41.70px;top:1001.00px;width:161.30px;height:29.60px;background:#f6ec8a;"></div>
<div class="t b" style="left:47.70px;top:1007.44px;line-height:20.40px;font-size:17px;color:#3a3418;font-weight:normal;font-family:'Liberation Sans',sans-serif;letter-spacing:0.9px">Keys</div>
<div style="left:41.70px;top:1031.00px;width:161.30px;height:427.00px;background:#333333;"></div>
<div style="left:54.70px;top:1043.00px;width:59px;height:21px;border-radius:10.5px;background:#232323;border:1.2px solid #171717"></div>
<div class="t" style="left:49.20px;width:70px;text-align:center;top:1044.28px;line-height:22.80px;font-size:19px;color:#dadada;font-weight:normal;font-family:'Liberation Sans',sans-serif;letter-spacing:0.2px">-16.0</div>
<div style="left:54.20px;top:1074.00px;width:60.50px;height:21.50px;background:#232323;border:1px solid #1a1a1a"></div>
<div class="t" style="left:49.40px;width:70px;text-align:center;top:1075.48px;line-height:22.80px;font-size:19px;color:#d0d0d0;font-weight:normal;font-family:'Liberation Sans',sans-serif;letter-spacing:0.2px">-6.6</div>
<div style="left:133.70px;top:1043.80px;width:5.50px;height:2.00px;background:#5a5a5a;"></div>
<div style="left:133.70px;top:1083.70px;width:5.50px;height:2.00px;background:#5a5a5a;"></div>
<div style="left:133.70px;top:1123.70px;width:5.50px;height:2.00px;background:#5a5a5a;"></div>
<div style="left:133.70px;top:1163.70px;width:5.50px;height:2.00px;background:#5a5a5a;"></div>
<div style="left:133.70px;top:1203.50px;width:5.50px;height:2.00px;background:#5a5a5a;"></div>
<div style="left:133.70px;top:1243.30px;width:5.50px;height:2.00px;background:#5a5a5a;"></div>
<div style="left:133.70px;top:1284.80px;width:5.50px;height:2.00px;background:#5a5a5a;"></div>
<div style="left:133.70px;top:1319.50px;width:5.50px;height:2.00px;background:#5a5a5a;"></div>
<div style="left:133.70px;top:1350.30px;width:5.50px;height:2.00px;background:#5a5a5a;"></div>
<div style="left:133.70px;top:1376.70px;width:5.50px;height:2.00px;background:#5a5a5a;"></div>
<div style="left:133.70px;top:1400.70px;width:5.50px;height:2.00px;background:#5a5a5a;"></div>
<div style="left:133.70px;top:1423.30px;width:5.50px;height:2.00px;background:#5a5a5a;"></div>
<div style="left:133.70px;top:1438.50px;width:5.50px;height:2.00px;background:#5a5a5a;"></div>
<div style="left:142.70px;top:1043.00px;width:22.00px;height:404.00px;background:#1b1b1b;border-radius:3px 3px 0 0"></div>
<div style="left:153.20px;top:1043.00px;width:1.00px;height:404.00px;background:#3c3c3c;"></div>
<div style="left:143.00px;top:1441.00px;width:9.90px;height:5.70px;background:#6ae862;"></div>
<div style="left:143.00px;top:1226.50px;width:9.90px;height:2.00px;background:#5fd85a;"></div>
<div style="left:154.50px;top:1441.00px;width:9.90px;height:5.70px;background:#6ae862;"></div>
<div style="left:154.50px;top:1190.00px;width:9.90px;height:2.00px;background:#b8e04a;"></div>
<div style="left:143.70px;top:1084.00px;width:9.00px;height:1.60px;background:#a9a9a9;"></div>
<div style="left:154.70px;top:1084.00px;width:9.00px;height:1.60px;background:#a9a9a9;"></div>
<div class="t" style="left:170.70px;top:1042.02px;line-height:19.20px;font-size:16px;color:#ababab;font-weight:normal;font-family:'Liberation Sans',sans-serif;letter-spacing:0.3px">6</div>
<div class="t" style="left:170.70px;top:1075.42px;line-height:19.20px;font-size:16px;color:#ababab;font-weight:normal;font-family:'Liberation Sans',sans-serif;letter-spacing:0.3px">0</div>
<div class="t" style="left:170.70px;top:1114.52px;line-height:19.20px;font-size:16px;color:#ababab;font-weight:normal;font-family:'Liberation Sans',sans-serif;letter-spacing:0.3px">6</div>
<div class="t" style="left:170.70px;top:1154.42px;line-height:19.20px;font-size:16px;color:#ababab;font-weight:normal;font-family:'Liberation Sans',sans-serif;letter-spacing:0.3px">12</div>
<div class="t" style="left:170.70px;top:1194.22px;line-height:19.20px;font-size:16px;color:#ababab;font-weight:normal;font-family:'Liberation Sans',sans-serif;letter-spacing:0.3px">18</div>
<div class="t" style="left:170.70px;top:1234.02px;line-height:19.20px;font-size:16px;color:#ababab;font-weight:normal;font-family:'Liberation Sans',sans-serif;letter-spacing:0.3px">24</div>
<div class="t" style="left:170.70px;top:1276.02px;line-height:19.20px;font-size:16px;color:#ababab;font-weight:normal;font-family:'Liberation Sans',sans-serif;letter-spacing:0.3px">30</div>
<div class="t" style="left:170.70px;top:1310.52px;line-height:19.20px;font-size:16px;color:#ababab;font-weight:normal;font-family:'Liberation Sans',sans-serif;letter-spacing:0.3px">36</div>
<div class="t" style="left:170.70px;top:1341.62px;line-height:19.20px;font-size:16px;color:#ababab;font-weight:normal;font-family:'Liberation Sans',sans-serif;letter-spacing:0.3px">42</div>
<div class="t" style="left:170.70px;top:1367.72px;line-height:19.20px;font-size:16px;color:#ababab;font-weight:normal;font-family:'Liberation Sans',sans-serif;letter-spacing:0.3px">48</div>
<div class="t" style="left:170.70px;top:1391.72px;line-height:19.20px;font-size:16px;color:#ababab;font-weight:normal;font-family:'Liberation Sans',sans-serif;letter-spacing:0.3px">54</div>
<div class="t" style="left:170.70px;top:1414.32px;line-height:19.20px;font-size:16px;color:#ababab;font-weight:normal;font-family:'Liberation Sans',sans-serif;letter-spacing:0.3px">60</div>
<svg style="position:absolute;left:121.20px;top:1119.30px;" width="20.00" height="21.40" viewBox="0 0 20.00 21.40"><polygon points="0,0 20,10.7 0,21.4" fill="#c6c6c6"/></svg>
<svg style="position:absolute;left:58.20px;top:1290.80px;" width="52.00" height="56.00" viewBox="0 0 52.00 56.00"><path d="M15.67,49.63 A21.3,21.3 0 1 1 36.33,49.63" stroke="#1a1a1a" stroke-width="3.3" fill="none" stroke-linecap="butt"/><rect x="21.0" y="7.2" width="10" height="6" fill="#333"/><path d="M26,7.2 V33.8" stroke="#1a1a1a" stroke-width="2.8"/><polygon points="20,0.2 32,0.2 26,6.2" fill="#1a1a1a"/></svg>
<div style="left:65.00px;top:1350.00px;width:38.40px;height:37.70px;background:#1a1a1a;"></div>
<div style="left:65.70px;top:1350.70px;width:37.00px;height:36.30px;background:#f2ae62;"></div>
<div class="t b" style="left:65.20px;width:38px;text-align:center;top:1357.42px;line-height:25.20px;font-size:21px;color:#111;font-weight:normal;font-family:'Liberation Sans',sans-serif;letter-spacing:0.5px">11</div>
<div style="left:65.00px;top:1396.30px;width:38.40px;height:21.30px;background:#222222;"></div>
<div class="t" style="left:65.20px;width:38px;text-align:center;top:1399.32px;line-height:19.20px;font-size:16px;color:#cfcfcf;font-weight:normal;font-family:'Liberation Sans',sans-serif;">S</div>
<div style="left:65.00px;top:1425.40px;width:38.40px;height:21.60px;background:#222222;"></div>
<svg style="position:absolute;left:76.20px;top:1428.20px;" width="16.00" height="16.00" viewBox="0 0 16.00 16.00"><circle cx="8" cy="8" r="6.3" fill="#c9c9c9"/><rect x="8.6" y="3.6" width="1.7" height="7" fill="#1e1e1e"/><ellipse cx="7.6" cy="10.9" rx="2.5" ry="1.8" transform="rotate(-25 7.6 10.9)" fill="#1e1e1e"/></svg>
<div style="left:41.70px;top:1461.20px;width:161.30px;height:10.60px;background:#f6ec8a;"></div>
<div style="left:206.20px;top:1001.00px;width:161.20px;height:29.60px;background:#eea67b;"></div>
<div class="t b" style="left:212.20px;top:1007.44px;line-height:20.40px;font-size:17px;color:#3a2418;font-weight:normal;font-family:'Liberation Sans',sans-serif;letter-spacing:0.9px">Pads</div>
<svg style="position:absolute;left:339.90px;top:1003.60px;" width="24.00" height="24.00" viewBox="0 0 24.00 24.00"><circle cx="12" cy="12" r="10.3" stroke="#3a2418" stroke-width="1.7" fill="none"/><path d="M7.6 8.4h8.8M7.6 12h8.8M7.6 15.6h8.8" stroke="#3a2418" stroke-width="1.7"/></svg>
<div style="left:206.20px;top:1031.00px;width:161.20px;height:427.00px;background:#333333;"></div>
<div style="left:219.20px;top:1043.00px;width:59px;height:21px;border-radius:10.5px;background:#232323;border:1.2px solid #171717"></div>
<div class="t" style="left:213.70px;width:70px;text-align:center;top:1044.28px;line-height:22.80px;font-size:19px;color:#dadada;font-weight:normal;font-family:'Liberation Sans',sans-serif;letter-spacing:0.2px">-14.4</div>
<div style="left:218.70px;top:1074.00px;width:60.50px;height:21.50px;background:#232323;border:1px solid #1a1a1a"></div>
<div class="t" style="left:213.90px;width:70px;text-align:center;top:1075.48px;line-height:22.80px;font-size:19px;color:#d0d0d0;font-weight:normal;font-family:'Liberation Sans',sans-serif;letter-spacing:0.2px">0</div>
<div style="left:298.20px;top:1043.80px;width:5.50px;height:2.00px;background:#5a5a5a;"></div>
<div style="left:298.20px;top:1083.70px;width:5.50px;height:2.00px;background:#5a5a5a;"></div>
<div style="left:298.20px;top:1123.70px;width:5.50px;height:2.00px;background:#5a5a5a;"></div>
<div style="left:298.20px;top:1163.70px;width:5.50px;height:2.00px;background:#5a5a5a;"></div>
<div style="left:298.20px;top:1203.50px;width:5.50px;height:2.00px;background:#5a5a5a;"></div>
<div style="left:298.20px;top:1243.30px;width:5.50px;height:2.00px;background:#5a5a5a;"></div>
<div style="left:298.20px;top:1284.80px;width:5.50px;height:2.00px;background:#5a5a5a;"></div>
<div style="left:298.20px;top:1319.50px;width:5.50px;height:2.00px;background:#5a5a5a;"></div>
<div style="left:298.20px;top:1350.30px;width:5.50px;height:2.00px;background:#5a5a5a;"></div>
<div style="left:298.20px;top:1376.70px;width:5.50px;height:2.00px;background:#5a5a5a;"></div>
<div style="left:298.20px;top:1400.70px;width:5.50px;height:2.00px;background:#5a5a5a;"></div>
<div style="left:298.20px;top:1423.30px;width:5.50px;height:2.00px;background:#5a5a5a;"></div>
<div style="left:298.20px;top:1438.50px;width:5.50px;height:2.00px;background:#5a5a5a;"></div>
<div style="left:307.20px;top:1043.00px;width:22.00px;height:404.00px;background:#1b1b1b;border-radius:3px 3px 0 0"></div>
<div style="left:317.70px;top:1043.00px;width:1.00px;height:404.00px;background:#3c3c3c;"></div>
<div style="left:307.50px;top:1320.00px;width:9.90px;height:126.70px;background:#6ae862;"></div>
<div style="left:307.50px;top:1179.00px;width:9.90px;height:2.00px;background:#c8d048;"></div>
<div style="left:319.00px;top:1312.50px;width:9.90px;height:134.20px;background:#6ae862;"></div>
<div style="left:319.00px;top:1192.00px;width:9.90px;height:2.00px;background:#7ae05a;"></div>
<div style="left:308.20px;top:1084.00px;width:9.00px;height:1.60px;background:#a9a9a9;"></div>
<div style="left:319.20px;top:1084.00px;width:9.00px;height:1.60px;background:#a9a9a9;"></div>
<div class="t" style="left:335.20px;top:1042.02px;line-height:19.20px;font-size:16px;color:#ababab;font-weight:normal;font-family:'Liberation Sans',sans-serif;letter-spacing:0.3px">6</div>
<div class="t" style="left:335.20px;top:1075.42px;line-height:19.20px;font-size:16px;color:#ababab;font-weight:normal;font-family:'Liberation Sans',sans-serif;letter-spacing:0.3px">0</div>
<div class="t" style="left:335.20px;top:1114.52px;line-height:19.20px;font-size:16px;color:#ababab;font-weight:normal;font-family:'Liberation Sans',sans-serif;letter-spacing:0.3px">6</div>
<div class="t" style="left:335.20px;top:1154.42px;line-height:19.20px;font-size:16px;color:#ababab;font-weight:normal;font-family:'Liberation Sans',sans-serif;letter-spacing:0.3px">12</div>
<div class="t" style="left:335.20px;top:1194.22px;line-height:19.20px;font-size:16px;color:#ababab;font-weight:normal;font-family:'Liberation Sans',sans-serif;letter-spacing:0.3px">18</div>
<div class="t" style="left:335.20px;top:1234.02px;line-height:19.20px;font-size:16px;color:#ababab;font-weight:normal;font-family:'Liberation Sans',sans-serif;letter-spacing:0.3px">24</div>
<div class="t" style="left:335.20px;top:1276.02px;line-height:19.20px;font-size:16px;color:#ababab;font-weight:normal;font-family:'Liberation Sans',sans-serif;letter-spacing:0.3px">30</div>
<div class="t" style="left:335.20px;top:1310.52px;line-height:19.20px;font-size:16px;color:#ababab;font-weight:normal;font-family:'Liberation Sans',sans-serif;letter-spacing:0.3px">36</div>
<div class="t" style="left:335.20px;top:1341.62px;line-height:19.20px;font-size:16px;color:#ababab;font-weight:normal;font-family:'Liberation Sans',sans-serif;letter-spacing:0.3px">42</div>
<div class="t" style="left:335.20px;top:1367.72px;line-height:19.20px;font-size:16px;color:#ababab;font-weight:normal;font-family:'Liberation Sans',sans-serif;letter-spacing:0.3px">48</div>
<div class="t" style="left:335.20px;top:1391.72px;line-height:19.20px;font-size:16px;color:#ababab;font-weight:normal;font-family:'Liberation Sans',sans-serif;letter-spacing:0.3px">54</div>
<div class="t" style="left:335.20px;top:1414.32px;line-height:19.20px;font-size:16px;color:#ababab;font-weight:normal;font-family:'Liberation Sans',sans-serif;letter-spacing:0.3px">60</div>
<svg style="position:absolute;left:285.70px;top:1074.30px;" width="20.00" height="21.40" viewBox="0 0 20.00 21.40"><polygon points="0,0 20,10.7 0,21.4" fill="#c6c6c6"/></svg>
<svg style="position:absolute;left:222.70px;top:1290.80px;" width="52.00" height="56.00" viewBox="0 0 52.00 56.00"><path d="M15.67,49.63 A21.3,21.3 0 1 1 36.33,49.63" stroke="#1a1a1a" stroke-width="3.3" fill="none" stroke-linecap="butt"/><rect x="21.0" y="7.2" width="10" height="6" fill="#333"/><path d="M26,7.2 V33.8" stroke="#1a1a1a" stroke-width="2.8"/><polygon points="20,0.2 32,0.2 26,6.2" fill="#1a1a1a"/></svg>
<div style="left:229.50px;top:1350.00px;width:38.40px;height:37.70px;background:#1a1a1a;"></div>
<div style="left:230.20px;top:1350.70px;width:37.00px;height:36.30px;background:#f2ae62;"></div>
<div class="t b" style="left:229.70px;width:38px;text-align:center;top:1357.42px;line-height:25.20px;font-size:21px;color:#111;font-weight:normal;font-family:'Liberation Sans',sans-serif;letter-spacing:0.5px">12</div>
<div style="left:229.50px;top:1396.30px;width:38.40px;height:21.30px;background:#222222;"></div>
<div class="t" style="left:229.70px;width:38px;text-align:center;top:1399.32px;line-height:19.20px;font-size:16px;color:#cfcfcf;font-weight:normal;font-family:'Liberation Sans',sans-serif;">S</div>
<div style="left:206.20px;top:1461.20px;width:161.20px;height:10.60px;background:#eea67b;"></div>
<div style="left:370.90px;top:1001.00px;width:161.30px;height:29.60px;background:#f09bab;"></div>
<div class="t b" style="left:376.90px;top:1007.44px;line-height:20.40px;font-size:17px;color:#3a1f26;font-weight:normal;font-family:'Liberation Sans',sans-serif;letter-spacing:0.9px">Ambience</div>
<div style="left:370.90px;top:1031.00px;width:161.30px;height:427.00px;background:#333333;"></div>
<div style="left:383.90px;top:1043.00px;width:59px;height:21px;border-radius:10.5px;background:#232323;border:1.2px solid #171717"></div>
<div class="t" style="left:378.40px;width:70px;text-align:center;top:1044.28px;line-height:22.80px;font-size:19px;color:#dadada;font-weight:normal;font-family:'Liberation Sans',sans-serif;letter-spacing:0.2px">-29.7</div>
<div style="left:383.40px;top:1074.00px;width:60.50px;height:21.50px;background:#232323;border:1px solid #1a1a1a"></div>
<div class="t" style="left:378.60px;width:70px;text-align:center;top:1075.48px;line-height:22.80px;font-size:19px;color:#d0d0d0;font-weight:normal;font-family:'Liberation Sans',sans-serif;letter-spacing:0.2px">-8.3</div>
<div style="left:462.90px;top:1043.80px;width:5.50px;height:2.00px;background:#5a5a5a;"></div>
<div style="left:462.90px;top:1083.70px;width:5.50px;height:2.00px;background:#5a5a5a;"></div>
<div style="left:462.90px;top:1123.70px;width:5.50px;height:2.00px;background:#5a5a5a;"></div>
<div style="left:462.90px;top:1163.70px;width:5.50px;height:2.00px;background:#5a5a5a;"></div>
<div style="left:462.90px;top:1203.50px;width:5.50px;height:2.00px;background:#5a5a5a;"></div>
<div style="left:462.90px;top:1243.30px;width:5.50px;height:2.00px;background:#5a5a5a;"></div>
<div style="left:462.90px;top:1284.80px;width:5.50px;height:2.00px;background:#5a5a5a;"></div>
<div style="left:462.90px;top:1319.50px;width:5.50px;height:2.00px;background:#5a5a5a;"></div>
<div style="left:462.90px;top:1350.30px;width:5.50px;height:2.00px;background:#5a5a5a;"></div>
<div style="left:462.90px;top:1376.70px;width:5.50px;height:2.00px;background:#5a5a5a;"></div>
<div style="left:462.90px;top:1400.70px;width:5.50px;height:2.00px;background:#5a5a5a;"></div>
<div style="left:462.90px;top:1423.30px;width:5.50px;height:2.00px;background:#5a5a5a;"></div>
<div style="left:462.90px;top:1438.50px;width:5.50px;height:2.00px;background:#5a5a5a;"></div>
<div style="left:471.90px;top:1043.00px;width:22.00px;height:404.00px;background:#1b1b1b;border-radius:3px 3px 0 0"></div>
<div style="left:482.40px;top:1043.00px;width:1.00px;height:404.00px;background:#3c3c3c;"></div>
<div style="left:472.20px;top:1305.40px;width:9.90px;height:47.60px;background:#4fa84b;"></div>
<div style="left:472.20px;top:1353.00px;width:9.90px;height:93.70px;background:#6ae862;"></div>
<div style="left:472.20px;top:1288.70px;width:9.90px;height:2.00px;background:#6ae862;"></div>
<div style="left:483.70px;top:1318.30px;width:9.90px;height:34.70px;background:#4fa84b;"></div>
<div style="left:483.70px;top:1353.00px;width:9.90px;height:93.70px;background:#6ae862;"></div>
<div style="left:483.70px;top:1282.00px;width:9.90px;height:2.00px;background:#6ae862;"></div>
<div style="left:472.90px;top:1084.00px;width:9.00px;height:1.60px;background:#a9a9a9;"></div>
<div style="left:483.90px;top:1084.00px;width:9.00px;height:1.60px;background:#a9a9a9;"></div>
<div class="t" style="left:499.90px;top:1042.02px;line-height:19.20px;font-size:16px;color:#ababab;font-weight:normal;font-family:'Liberation Sans',sans-serif;letter-spacing:0.3px">6</div>
<div class="t" style="left:499.90px;top:1075.42px;line-height:19.20px;font-size:16px;color:#ababab;font-weight:normal;font-family:'Liberation Sans',sans-serif;letter-spacing:0.3px">0</div>
<div class="t" style="left:499.90px;top:1114.52px;line-height:19.20px;font-size:16px;color:#ababab;font-weight:normal;font-family:'Liberation Sans',sans-serif;letter-spacing:0.3px">6</div>
<div class="t" style="left:499.90px;top:1154.42px;line-height:19.20px;font-size:16px;color:#ababab;font-weight:normal;font-family:'Liberation Sans',sans-serif;letter-spacing:0.3px">12</div>
<div class="t" style="left:499.90px;top:1194.22px;line-height:19.20px;font-size:16px;color:#ababab;font-weight:normal;font-family:'Liberation Sans',sans-serif;letter-spacing:0.3px">18</div>
<div class="t" style="left:499.90px;top:1234.02px;line-height:19.20px;font-size:16px;color:#ababab;font-weight:normal;font-family:'Liberation Sans',sans-serif;letter-spacing:0.3px">24</div>
<div class="t" style="left:499.90px;top:1276.02px;line-height:19.20px;font-size:16px;color:#ababab;font-weight:normal;font-family:'Liberation Sans',sans-serif;letter-spacing:0.3px">30</div>
<div class="t" style="left:499.90px;top:1310.52px;line-height:19.20px;font-size:16px;color:#ababab;font-weight:normal;font-family:'Liberation Sans',sans-serif;letter-spacing:0.3px">36</div>
<div class="t" style="left:499.90px;top:1341.62px;line-height:19.20px;font-size:16px;color:#ababab;font-weight:normal;font-family:'Liberation Sans',sans-serif;letter-spacing:0.3px">42</div>
<div class="t" style="left:499.90px;top:1367.72px;line-height:19.20px;font-size:16px;color:#ababab;font-weight:normal;font-family:'Liberation Sans',sans-serif;letter-spacing:0.3px">48</div>
<div class="t" style="left:499.90px;top:1391.72px;line-height:19.20px;font-size:16px;color:#ababab;font-weight:normal;font-family:'Liberation Sans',sans-serif;letter-spacing:0.3px">54</div>
<div class="t" style="left:499.90px;top:1414.32px;line-height:19.20px;font-size:16px;color:#ababab;font-weight:normal;font-family:'Liberation Sans',sans-serif;letter-spacing:0.3px">60</div>
<svg style="position:absolute;left:450.40px;top:1129.30px;" width="20.00" height="21.40" viewBox="0 0 20.00 21.40"><polygon points="0,0 20,10.7 0,21.4" fill="#c6c6c6"/></svg>
<svg style="position:absolute;left:387.40px;top:1290.80px;" width="52.00" height="56.00" viewBox="0 0 52.00 56.00"><path d="M15.67,49.63 A21.3,21.3 0 1 1 36.33,49.63" stroke="#1a1a1a" stroke-width="3.3" fill="none" stroke-linecap="butt"/><rect x="21.0" y="7.2" width="10" height="6" fill="#333"/><path d="M26,7.2 V33.8" stroke="#1a1a1a" stroke-width="2.8"/><polygon points="20,0.2 32,0.2 26,6.2" fill="#1a1a1a"/></svg>
<div style="left:394.20px;top:1350.00px;width:38.40px;height:37.70px;background:#1a1a1a;"></div>
<div style="left:394.90px;top:1350.70px;width:37.00px;height:36.30px;background:#f2ae62;"></div>
<div class="t b" style="left:394.40px;width:38px;text-align:center;top:1357.42px;line-height:25.20px;font-size:21px;color:#111;font-weight:normal;font-family:'Liberation Sans',sans-serif;letter-spacing:0.5px">16</div>
<div style="left:394.20px;top:1396.30px;width:38.40px;height:21.30px;background:#222222;"></div>
<div class="t" style="left:394.40px;width:38px;text-align:center;top:1399.32px;line-height:19.20px;font-size:16px;color:#cfcfcf;font-weight:normal;font-family:'Liberation Sans',sans-serif;">S</div>
<div style="left:394.20px;top:1425.40px;width:38.40px;height:21.60px;background:#222222;"></div>
<div style="left:407.40px;top:1430.20px;width:12px;height:12px;border-radius:50%;background:#777"></div>
<div style="left:370.90px;top:1461.20px;width:161.30px;height:10.60px;background:#f09bab;"></div>
<div style="left:535.70px;top:1001.00px;width:161.30px;height:29.60px;background:#f09bab;"></div>
<div class="t b" style="left:541.70px;top:1007.44px;line-height:20.40px;font-size:17px;color:#3a1f26;font-weight:normal;font-family:'Liberation Sans',sans-serif;letter-spacing:0.9px">Drone</div>
<div style="left:535.70px;top:1031.00px;width:161.30px;height:427.00px;background:#333333;"></div>
<div style="left:548.70px;top:1043.00px;width:59px;height:21px;border-radius:10.5px;background:#232323;border:1.2px solid #171717"></div>
<div class="t" style="left:543.20px;width:70px;text-align:center;top:1044.28px;line-height:22.80px;font-size:19px;color:#dadada;font-weight:normal;font-family:'Liberation Sans',sans-serif;letter-spacing:0.2px">-25.0</div>
<div style="left:548.20px;top:1074.00px;width:60.50px;height:21.50px;background:#232323;border:1px solid #1a1a1a"></div>
<div class="t" style="left:543.40px;width:70px;text-align:center;top:1075.48px;line-height:22.80px;font-size:19px;color:#d0d0d0;font-weight:normal;font-family:'Liberation Sans',sans-serif;letter-spacing:0.2px">-15.6</div>
<div style="left:627.70px;top:1043.80px;width:5.50px;height:2.00px;background:#5a5a5a;"></div>
<div style="left:627.70px;top:1083.70px;width:5.50px;height:2.00px;background:#5a5a5a;"></div>
<div style="left:627.70px;top:1123.70px;width:5.50px;height:2.00px;background:#5a5a5a;"></div>
<div style="left:627.70px;top:1163.70px;width:5.50px;height:2.00px;background:#5a5a5a;"></div>
<div style="left:627.70px;top:1203.50px;width:5.50px;height:2.00px;background:#5a5a5a;"></div>
<div style="left:627.70px;top:1243.30px;width:5.50px;height:2.00px;background:#5a5a5a;"></div>
<div style="left:627.70px;top:1284.80px;width:5.50px;height:2.00px;background:#5a5a5a;"></div>
<div style="left:627.70px;top:1319.50px;width:5.50px;height:2.00px;background:#5a5a5a;"></div>
<div style="left:627.70px;top:1350.30px;width:5.50px;height:2.00px;background:#5a5a5a;"></div>
<div style="left:627.70px;top:1376.70px;width:5.50px;height:2.00px;background:#5a5a5a;"></div>
<div style="left:627.70px;top:1400.70px;width:5.50px;height:2.00px;background:#5a5a5a;"></div>
<div style="left:627.70px;top:1423.30px;width:5.50px;height:2.00px;background:#5a5a5a;"></div>
<div style="left:627.70px;top:1438.50px;width:5.50px;height:2.00px;background:#5a5a5a;"></div>
<div style="left:636.70px;top:1043.00px;width:22.00px;height:404.00px;background:#1b1b1b;border-radius:3px 3px 0 0"></div>
<div style="left:647.20px;top:1043.00px;width:1.00px;height:404.00px;background:#3c3c3c;"></div>
<div style="left:637.00px;top:1268.70px;width:9.90px;height:56.80px;background:#4fa84b;"></div>
<div style="left:637.00px;top:1325.50px;width:9.90px;height:121.20px;background:#6ae862;"></div>
<div style="left:637.00px;top:1267.70px;width:9.90px;height:2.00px;background:#6ae862;"></div>
<div style="left:648.50px;top:1279.50px;width:9.90px;height:33.30px;background:#4fa84b;"></div>
<div style="left:648.50px;top:1312.80px;width:9.90px;height:133.90px;background:#6ae862;"></div>
<div style="left:648.50px;top:1250.70px;width:9.90px;height:2.00px;background:#6ae862;"></div>
<div style="left:637.70px;top:1084.00px;width:9.00px;height:1.60px;background:#a9a9a9;"></div>
<div style="left:648.70px;top:1084.00px;width:9.00px;height:1.60px;background:#a9a9a9;"></div>
<div class="t" style="left:664.70px;top:1042.02px;line-height:19.20px;font-size:16px;color:#ababab;font-weight:normal;font-family:'Liberation Sans',sans-serif;letter-spacing:0.3px">6</div>
<div class="t" style="left:664.70px;top:1075.42px;line-height:19.20px;font-size:16px;color:#ababab;font-weight:normal;font-family:'Liberation Sans',sans-serif;letter-spacing:0.3px">0</div>
<div class="t" style="left:664.70px;top:1114.52px;line-height:19.20px;font-size:16px;color:#ababab;font-weight:normal;font-family:'Liberation Sans',sans-serif;letter-spacing:0.3px">6</div>
<div class="t" style="left:664.70px;top:1154.42px;line-height:19.20px;font-size:16px;color:#ababab;font-weight:normal;font-family:'Liberation Sans',sans-serif;letter-spacing:0.3px">12</div>
<div class="t" style="left:664.70px;top:1194.22px;line-height:19.20px;font-size:16px;color:#ababab;font-weight:normal;font-family:'Liberation Sans',sans-serif;letter-spacing:0.3px">18</div>
<div class="t" style="left:664.70px;top:1234.02px;line-height:19.20px;font-size:16px;color:#ababab;font-weight:normal;font-family:'Liberation Sans',sans-serif;letter-spacing:0.3px">24</div>
<div class="t" style="left:664.70px;top:1276.02px;line-height:19.20px;font-size:16px;color:#ababab;font-weight:normal;font-family:'Liberation Sans',sans-serif;letter-spacing:0.3px">30</div>
<div class="t" style="left:664.70px;top:1310.52px;line-height:19.20px;font-size:16px;color:#ababab;font-weight:normal;font-family:'Liberation Sans',sans-serif;letter-spacing:0.3px">36</div>
<div class="t" style="left:664.70px;top:1341.62px;line-height:19.20px;font-size:16px;color:#ababab;font-weight:normal;font-family:'Liberation Sans',sans-serif;letter-spacing:0.3px">42</div>
<div class="t" style="left:664.70px;top:1367.72px;line-height:19.20px;font-size:16px;color:#ababab;font-weight:normal;font-family:'Liberation Sans',sans-serif;letter-spacing:0.3px">48</div>
<div class="t" style="left:664.70px;top:1391.72px;line-height:19.20px;font-size:16px;color:#ababab;font-weight:normal;font-family:'Liberation Sans',sans-serif;letter-spacing:0.3px">54</div>
<div class="t" style="left:664.70px;top:1414.32px;line-height:19.20px;font-size:16px;color:#ababab;font-weight:normal;font-family:'Liberation Sans',sans-serif;letter-spacing:0.3px">60</div>
<svg style="position:absolute;left:615.20px;top:1178.30px;" width="20.00" height="21.40" viewBox="0 0 20.00 21.40"><polygon points="0,0 20,10.7 0,21.4" fill="#c6c6c6"/></svg>
<svg style="position:absolute;left:552.20px;top:1290.80px;" width="52.00" height="56.00" viewBox="0 0 52.00 56.00"><path d="M15.67,49.63 A21.3,21.3 0 1 1 36.33,49.63" stroke="#1a1a1a" stroke-width="3.3" fill="none" stroke-linecap="butt"/><rect x="21.0" y="7.2" width="10" height="6" fill="#333"/><path d="M26,7.2 V33.8" stroke="#1a1a1a" stroke-width="2.8"/><polygon points="20,0.2 32,0.2 26,6.2" fill="#1a1a1a"/></svg>
<div style="left:559.00px;top:1350.00px;width:38.40px;height:37.70px;background:#1a1a1a;"></div>
<div style="left:559.70px;top:1350.70px;width:37.00px;height:36.30px;background:#f2ae62;"></div>
<div class="t b" style="left:559.20px;width:38px;text-align:center;top:1357.42px;line-height:25.20px;font-size:21px;color:#111;font-weight:normal;font-family:'Liberation Sans',sans-serif;letter-spacing:0.5px">17</div>
<div style="left:559.00px;top:1396.30px;width:38.40px;height:21.30px;background:#222222;"></div>
<div class="t" style="left:559.20px;width:38px;text-align:center;top:1399.32px;line-height:19.20px;font-size:16px;color:#cfcfcf;font-weight:normal;font-family:'Liberation Sans',sans-serif;">S</div>
<div style="left:559.00px;top:1425.40px;width:38.40px;height:21.60px;background:#222222;"></div>
<div style="left:572.20px;top:1430.20px;width:12px;height:12px;border-radius:50%;background:#777"></div>
<div style="left:535.70px;top:1461.20px;width:161.30px;height:10.60px;background:#f09bab;"></div>
<div style="left:700.00px;top:1001.00px;width:161.00px;height:29.60px;background:#c776e2;"></div>
<div class="t b" style="left:706.00px;top:1007.44px;line-height:20.40px;font-size:17px;color:#2e1538;font-weight:normal;font-family:'Liberation Sans',sans-serif;letter-spacing:0.9px">FX</div>
<div style="left:700.00px;top:1031.00px;width:161.00px;height:427.00px;background:#333333;"></div>
<div style="left:713.00px;top:1043.00px;width:59px;height:21px;border-radius:10.5px;background:#232323;border:1.2px solid #171717"></div>
<div class="t" style="left:707.50px;width:70px;text-align:center;top:1044.28px;line-height:22.80px;font-size:19px;color:#dadada;font-weight:normal;font-family:'Liberation Sans',sans-serif;letter-spacing:0.2px">-19.6</div>
<div style="left:712.50px;top:1074.00px;width:60.50px;height:21.50px;background:#232323;border:1px solid #1a1a1a"></div>
<div class="t" style="left:707.70px;width:70px;text-align:center;top:1075.48px;line-height:22.80px;font-size:19px;color:#d0d0d0;font-weight:normal;font-family:'Liberation Sans',sans-serif;letter-spacing:0.2px">-4.1</div>
<div style="left:792.00px;top:1043.80px;width:5.50px;height:2.00px;background:#5a5a5a;"></div>
<div style="left:792.00px;top:1083.70px;width:5.50px;height:2.00px;background:#5a5a5a;"></div>
<div style="left:792.00px;top:1123.70px;width:5.50px;height:2.00px;background:#5a5a5a;"></div>
<div style="left:792.00px;top:1163.70px;width:5.50px;height:2.00px;background:#5a5a5a;"></div>
<div style="left:792.00px;top:1203.50px;width:5.50px;height:2.00px;background:#5a5a5a;"></div>
<div style="left:792.00px;top:1243.30px;width:5.50px;height:2.00px;background:#5a5a5a;"></div>
<div style="left:792.00px;top:1284.80px;width:5.50px;height:2.00px;background:#5a5a5a;"></div>
<div style="left:792.00px;top:1319.50px;width:5.50px;height:2.00px;background:#5a5a5a;"></div>
<div style="left:792.00px;top:1350.30px;width:5.50px;height:2.00px;background:#5a5a5a;"></div>
<div style="left:792.00px;top:1376.70px;width:5.50px;height:2.00px;background:#5a5a5a;"></div>
<div style="left:792.00px;top:1400.70px;width:5.50px;height:2.00px;background:#5a5a5a;"></div>
<div style="left:792.00px;top:1423.30px;width:5.50px;height:2.00px;background:#5a5a5a;"></div>
<div style="left:792.00px;top:1438.50px;width:5.50px;height:2.00px;background:#5a5a5a;"></div>
<div style="left:801.00px;top:1043.00px;width:22.00px;height:404.00px;background:#1b1b1b;border-radius:3px 3px 0 0"></div>
<div style="left:811.50px;top:1043.00px;width:1.00px;height:404.00px;background:#3c3c3c;"></div>
<div style="left:801.30px;top:1235.00px;width:9.90px;height:46.20px;background:#4fa84b;"></div>
<div style="left:801.30px;top:1281.20px;width:9.90px;height:165.50px;background:#6ae862;"></div>
<div style="left:801.30px;top:1223.30px;width:9.90px;height:2.00px;background:#6ae862;"></div>
<div style="left:812.80px;top:1224.30px;width:9.90px;height:43.20px;background:#4fa84b;"></div>
<div style="left:812.80px;top:1267.50px;width:9.90px;height:179.20px;background:#6ae862;"></div>
<div style="left:812.80px;top:1214.40px;width:9.90px;height:2.00px;background:#6ae862;"></div>
<div style="left:802.00px;top:1084.00px;width:9.00px;height:1.60px;background:#a9a9a9;"></div>
<div style="left:813.00px;top:1084.00px;width:9.00px;height:1.60px;background:#a9a9a9;"></div>
<div class="t" style="left:829.00px;top:1042.02px;line-height:19.20px;font-size:16px;color:#ababab;font-weight:normal;font-family:'Liberation Sans',sans-serif;letter-spacing:0.3px">6</div>
<div class="t" style="left:829.00px;top:1075.42px;line-height:19.20px;font-size:16px;color:#ababab;font-weight:normal;font-family:'Liberation Sans',sans-serif;letter-spacing:0.3px">0</div>
<div class="t" style="left:829.00px;top:1114.52px;line-height:19.20px;font-size:16px;color:#ababab;font-weight:normal;font-family:'Liberation Sans',sans-serif;letter-spacing:0.3px">6</div>
<div class="t" style="left:829.00px;top:1154.42px;line-height:19.20px;font-size:16px;color:#ababab;font-weight:normal;font-family:'Liberation Sans',sans-serif;letter-spacing:0.3px">12</div>
<div class="t" style="left:829.00px;top:1194.22px;line-height:19.20px;font-size:16px;color:#ababab;font-weight:normal;font-family:'Liberation Sans',sans-serif;letter-spacing:0.3px">18</div>
<div class="t" style="left:829.00px;top:1234.02px;line-height:19.20px;font-size:16px;color:#ababab;font-weight:normal;font-family:'Liberation Sans',sans-serif;letter-spacing:0.3px">24</div>
<div class="t" style="left:829.00px;top:1276.02px;line-height:19.20px;font-size:16px;color:#ababab;font-weight:normal;font-family:'Liberation Sans',sans-serif;letter-spacing:0.3px">30</div>
<div class="t" style="left:829.00px;top:1310.52px;line-height:19.20px;font-size:16px;color:#ababab;font-weight:normal;font-family:'Liberation Sans',sans-serif;letter-spacing:0.3px">36</div>
<div class="t" style="left:829.00px;top:1341.62px;line-height:19.20px;font-size:16px;color:#ababab;font-weight:normal;font-family:'Liberation Sans',sans-serif;letter-spacing:0.3px">42</div>
<div class="t" style="left:829.00px;top:1367.72px;line-height:19.20px;font-size:16px;color:#ababab;font-weight:normal;font-family:'Liberation Sans',sans-serif;letter-spacing:0.3px">48</div>
<div class="t" style="left:829.00px;top:1391.72px;line-height:19.20px;font-size:16px;color:#ababab;font-weight:normal;font-family:'Liberation Sans',sans-serif;letter-spacing:0.3px">54</div>
<div class="t" style="left:829.00px;top:1414.32px;line-height:19.20px;font-size:16px;color:#ababab;font-weight:normal;font-family:'Liberation Sans',sans-serif;letter-spacing:0.3px">60</div>
<svg style="position:absolute;left:779.50px;top:1101.80px;" width="20.00" height="21.40" viewBox="0 0 20.00 21.40"><polygon points="0,0 20,10.7 0,21.4" fill="#c6c6c6"/></svg>
<svg style="position:absolute;left:716.50px;top:1290.80px;" width="52.00" height="56.00" viewBox="0 0 52.00 56.00"><path d="M15.67,49.63 A21.3,21.3 0 1 1 36.33,49.63" stroke="#1a1a1a" stroke-width="3.3" fill="none" stroke-linecap="butt"/><rect x="21.0" y="7.2" width="10" height="6" fill="#333"/><path d="M26,7.2 V33.8" stroke="#1a1a1a" stroke-width="2.8"/><polygon points="20,0.2 32,0.2 26,6.2" fill="#1a1a1a"/></svg>
<div style="left:723.30px;top:1350.00px;width:38.40px;height:37.70px;background:#1a1a1a;"></div>
<div style="left:724.00px;top:1350.70px;width:37.00px;height:36.30px;background:#f2ae62;"></div>
<div class="t b" style="left:723.50px;width:38px;text-align:center;top:1357.42px;line-height:25.20px;font-size:21px;color:#111;font-weight:normal;font-family:'Liberation Sans',sans-serif;letter-spacing:0.5px">18</div>
<div style="left:723.30px;top:1396.30px;width:38.40px;height:21.30px;background:#222222;"></div>
<div class="t" style="left:723.50px;width:38px;text-align:center;top:1399.32px;line-height:19.20px;font-size:16px;color:#cfcfcf;font-weight:normal;font-family:'Liberation Sans',sans-serif;">S</div>
<div style="left:723.30px;top:1425.40px;width:38.40px;height:21.60px;background:#222222;"></div>
<div style="left:736.50px;top:1430.20px;width:12px;height:12px;border-radius:50%;background:#777"></div>
<div style="left:700.00px;top:1461.20px;width:161.00px;height:10.60px;background:#c776e2;"></div>
<div style="left:864.80px;top:1001.00px;width:146.90px;height:29.60px;background:#c776e2;"></div>
<div class="t b" style="left:870.80px;top:1007.44px;line-height:20.40px;font-size:17px;color:#2e1538;font-weight:normal;font-family:'Liberation Sans',sans-serif;letter-spacing:0.9px">Zap</div>
<div style="left:864.80px;top:1031.00px;width:146.90px;height:427.00px;background:#333333;"></div>
<div style="left:864.8px;top:1031px;width:146.9000000000001px;height:427px;overflow:hidden">
<div style="left:30.00px;top:12.00px;width:59px;height:21px;border-radius:10.5px;background:#232323;border:1.2px solid #171717"></div>
<div class="t" style="left:24.50px;width:70px;text-align:center;top:13.28px;line-height:22.80px;font-size:19px;color:#dadada;font-weight:normal;font-family:'Liberation Sans',sans-serif;letter-spacing:0.2px">-24.6</div>
<div style="left:29.50px;top:43.00px;width:60.50px;height:21.50px;background:#232323;border:1px solid #1a1a1a"></div>
<div class="t" style="left:24.70px;width:70px;text-align:center;top:44.48px;line-height:22.80px;font-size:19px;color:#d0d0d0;font-weight:normal;font-family:'Liberation Sans',sans-serif;letter-spacing:0.2px">-19.4</div>
<div style="left:109.00px;top:12.80px;width:5.50px;height:2.00px;background:#5a5a5a;"></div>
<div style="left:109.00px;top:52.70px;width:5.50px;height:2.00px;background:#5a5a5a;"></div>
<div style="left:109.00px;top:92.70px;width:5.50px;height:2.00px;background:#5a5a5a;"></div>
<div style="left:109.00px;top:132.70px;width:5.50px;height:2.00px;background:#5a5a5a;"></div>
<div style="left:109.00px;top:172.50px;width:5.50px;height:2.00px;background:#5a5a5a;"></div>
<div style="left:109.00px;top:212.30px;width:5.50px;height:2.00px;background:#5a5a5a;"></div>
<div style="left:109.00px;top:253.80px;width:5.50px;height:2.00px;background:#5a5a5a;"></div>
<div style="left:109.00px;top:288.50px;width:5.50px;height:2.00px;background:#5a5a5a;"></div>
<div style="left:109.00px;top:319.30px;width:5.50px;height:2.00px;background:#5a5a5a;"></div>
<div style="left:109.00px;top:345.70px;width:5.50px;height:2.00px;background:#5a5a5a;"></div>
<div style="left:109.00px;top:369.70px;width:5.50px;height:2.00px;background:#5a5a5a;"></div>
<div style="left:109.00px;top:392.30px;width:5.50px;height:2.00px;background:#5a5a5a;"></div>
<div style="left:109.00px;top:407.50px;width:5.50px;height:2.00px;background:#5a5a5a;"></div>
<div style="left:118.00px;top:12.00px;width:22.00px;height:404.00px;background:#1b1b1b;border-radius:3px 3px 0 0"></div>
<div style="left:128.50px;top:12.00px;width:1.00px;height:404.00px;background:#3c3c3c;"></div>
<div style="left:118.30px;top:244.20px;width:9.90px;height:50.60px;background:#4fa84b;"></div>
<div style="left:118.30px;top:294.80px;width:9.90px;height:120.90px;background:#6ae862;"></div>
<div style="left:118.30px;top:217.20px;width:9.90px;height:2.00px;background:#6ae862;"></div>
<div style="left:129.80px;top:236.00px;width:9.90px;height:56.80px;background:#4fa84b;"></div>
<div style="left:129.80px;top:292.80px;width:9.90px;height:122.90px;background:#6ae862;"></div>
<div style="left:129.80px;top:221.70px;width:9.90px;height:2.00px;background:#6ae862;"></div>
<div style="left:119.00px;top:53.00px;width:9.00px;height:1.60px;background:#a9a9a9;"></div>
<div style="left:130.00px;top:53.00px;width:9.00px;height:1.60px;background:#a9a9a9;"></div>
<div class="t" style="left:146.00px;top:11.02px;line-height:19.20px;font-size:16px;color:#ababab;font-weight:normal;font-family:'Liberation Sans',sans-serif;letter-spacing:0.3px">6</div>
<div class="t" style="left:146.00px;top:44.42px;line-height:19.20px;font-size:16px;color:#ababab;font-weight:normal;font-family:'Liberation Sans',sans-serif;letter-spacing:0.3px">0</div>
<div class="t" style="left:146.00px;top:83.52px;line-height:19.20px;font-size:16px;color:#ababab;font-weight:normal;font-family:'Liberation Sans',sans-serif;letter-spacing:0.3px">6</div>
<div class="t" style="left:146.00px;top:123.42px;line-height:19.20px;font-size:16px;color:#ababab;font-weight:normal;font-family:'Liberation Sans',sans-serif;letter-spacing:0.3px">12</div>
<div class="t" style="left:146.00px;top:163.22px;line-height:19.20px;font-size:16px;color:#ababab;font-weight:normal;font-family:'Liberation Sans',sans-serif;letter-spacing:0.3px">18</div>
<div class="t" style="left:146.00px;top:203.02px;line-height:19.20px;font-size:16px;color:#ababab;font-weight:normal;font-family:'Liberation Sans',sans-serif;letter-spacing:0.3px">24</div>
<div class="t" style="left:146.00px;top:245.02px;line-height:19.20px;font-size:16px;color:#ababab;font-weight:normal;font-family:'Liberation Sans',sans-serif;letter-spacing:0.3px">30</div>
<div class="t" style="left:146.00px;top:279.52px;line-height:19.20px;font-size:16px;color:#ababab;font-weight:normal;font-family:'Liberation Sans',sans-serif;letter-spacing:0.3px">36</div>
<div class="t" style="left:146.00px;top:310.62px;line-height:19.20px;font-size:16px;color:#ababab;font-weight:normal;font-family:'Liberation Sans',sans-serif;letter-spacing:0.3px">42</div>
<div class="t" style="left:146.00px;top:336.72px;line-height:19.20px;font-size:16px;color:#ababab;font-weight:normal;font-family:'Liberation Sans',sans-serif;letter-spacing:0.3px">48</div>
<div class="t" style="left:146.00px;top:360.72px;line-height:19.20px;font-size:16px;color:#ababab;font-weight:normal;font-family:'Liberation Sans',sans-serif;letter-spacing:0.3px">54</div>
<div class="t" style="left:146.00px;top:383.32px;line-height:19.20px;font-size:16px;color:#ababab;font-weight:normal;font-family:'Liberation Sans',sans-serif;letter-spacing:0.3px">60</div>
<svg style="position:absolute;left:96.50px;top:172.70px;" width="20.00" height="21.40" viewBox="0 0 20.00 21.40"><polygon points="0,0 20,10.7 0,21.4" fill="#c6c6c6"/></svg>
<svg style="position:absolute;left:33.50px;top:259.80px;" width="52.00" height="56.00" viewBox="0 0 52.00 56.00"><path d="M15.67,49.63 A21.3,21.3 0 1 1 36.33,49.63" stroke="#1a1a1a" stroke-width="3.3" fill="none" stroke-linecap="butt"/><rect x="21.0" y="7.2" width="10" height="6" fill="#333"/><path d="M26,7.2 V33.8" stroke="#1a1a1a" stroke-width="2.8"/><polygon points="20,0.2 32,0.2 26,6.2" fill="#1a1a1a"/></svg>
<div style="left:40.30px;top:319.00px;width:38.40px;height:37.70px;background:#1a1a1a;"></div>
<div style="left:41.00px;top:319.70px;width:37.00px;height:36.30px;background:#f2ae62;"></div>
<div class="t b" style="left:40.50px;width:38px;text-align:center;top:326.42px;line-height:25.20px;font-size:21px;color:#111;font-weight:normal;font-family:'Liberation Sans',sans-serif;letter-spacing:0.5px">19</div>
<div style="left:40.30px;top:365.30px;width:38.40px;height:21.30px;background:#222222;"></div>
<div class="t" style="left:40.50px;width:38px;text-align:center;top:368.32px;line-height:19.20px;font-size:16px;color:#cfcfcf;font-weight:normal;font-family:'Liberation Sans',sans-serif;">S</div>
<div style="left:40.30px;top:394.40px;width:38.40px;height:21.60px;background:#222222;"></div>
<svg style="position:absolute;left:51.50px;top:397.20px;" width="16.00" height="16.00" viewBox="0 0 16.00 16.00"><circle cx="8" cy="8" r="6.3" fill="#c9c9c9"/><rect x="8.6" y="3.6" width="1.7" height="7" fill="#1e1e1e"/><ellipse cx="7.6" cy="10.9" rx="2.5" ry="1.8" transform="rotate(-25 7.6 10.9)" fill="#1e1e1e"/></svg>
</div>
<div style="left:864.80px;top:1461.20px;width:146.90px;height:10.60px;background:#c776e2;"></div>
<div style="left:1016.90px;top:1001.00px;width:161.70px;height:29.60px;background:#d4d2d5;"></div>
<div class="t b" style="left:1022.90px;top:1007.44px;line-height:20.40px;font-size:17px;color:#2a2a2a;font-weight:normal;font-family:'Liberation Sans',sans-serif;letter-spacing:0.9px">A Reverb</div>
<div style="left:1016.90px;top:1031.00px;width:161.70px;height:427.00px;background:#333333;"></div>
<div style="left:1029.90px;top:1043.00px;width:59px;height:21px;border-radius:10.5px;background:#232323;border:1.2px solid #171717"></div>
<div class="t" style="left:1024.40px;width:70px;text-align:center;top:1044.28px;line-height:22.80px;font-size:19px;color:#dadada;font-weight:normal;font-family:'Liberation Sans',sans-serif;letter-spacing:0.2px">-50.9</div>
<div style="left:1029.40px;top:1074.00px;width:60.50px;height:21.50px;background:#232323;border:1px solid #1a1a1a"></div>
<div class="t" style="left:1024.60px;width:70px;text-align:center;top:1075.48px;line-height:22.80px;font-size:19px;color:#d0d0d0;font-weight:normal;font-family:'Liberation Sans',sans-serif;letter-spacing:0.2px">0</div>
<div style="left:1108.90px;top:1043.80px;width:5.50px;height:2.00px;background:#5a5a5a;"></div>
<div style="left:1108.90px;top:1083.70px;width:5.50px;height:2.00px;background:#5a5a5a;"></div>
<div style="left:1108.90px;top:1123.70px;width:5.50px;height:2.00px;background:#5a5a5a;"></div>
<div style="left:1108.90px;top:1163.70px;width:5.50px;height:2.00px;background:#5a5a5a;"></div>
<div style="left:1108.90px;top:1203.50px;width:5.50px;height:2.00px;background:#5a5a5a;"></div>
<div style="left:1108.90px;top:1243.30px;width:5.50px;height:2.00px;background:#5a5a5a;"></div>
<div style="left:1108.90px;top:1284.80px;width:5.50px;height:2.00px;background:#5a5a5a;"></div>
<div style="left:1108.90px;top:1319.50px;width:5.50px;height:2.00px;background:#5a5a5a;"></div>
<div style="left:1108.90px;top:1350.30px;width:5.50px;height:2.00px;background:#5a5a5a;"></div>
<div style="left:1108.90px;top:1376.70px;width:5.50px;height:2.00px;background:#5a5a5a;"></div>
<div style="left:1108.90px;top:1400.70px;width:5.50px;height:2.00px;background:#5a5a5a;"></div>
<div style="left:1108.90px;top:1423.30px;width:5.50px;height:2.00px;background:#5a5a5a;"></div>
<div style="left:1108.90px;top:1438.50px;width:5.50px;height:2.00px;background:#5a5a5a;"></div>
<div style="left:1117.90px;top:1043.00px;width:22.00px;height:404.00px;background:#1b1b1b;border-radius:3px 3px 0 0"></div>
<div style="left:1128.40px;top:1043.00px;width:1.00px;height:404.00px;background:#3c3c3c;"></div>
<div style="left:1118.20px;top:1401.90px;width:9.90px;height:25.00px;background:#4fa84b;"></div>
<div style="left:1118.20px;top:1426.90px;width:9.90px;height:19.80px;background:#6ae862;"></div>
<div style="left:1118.20px;top:1387.30px;width:9.90px;height:2.00px;background:#6ae862;"></div>
<div style="left:1129.70px;top:1398.75px;width:9.90px;height:31.25px;background:#4fa84b;"></div>
<div style="left:1129.70px;top:1430.00px;width:9.90px;height:16.70px;background:#6ae862;"></div>
<div style="left:1129.70px;top:1396.30px;width:9.90px;height:2.00px;background:#6ae862;"></div>
<div style="left:1118.90px;top:1084.00px;width:9.00px;height:1.60px;background:#a9a9a9;"></div>
<div style="left:1129.90px;top:1084.00px;width:9.00px;height:1.60px;background:#a9a9a9;"></div>
<div class="t" style="left:1145.90px;top:1042.02px;line-height:19.20px;font-size:16px;color:#ababab;font-weight:normal;font-family:'Liberation Sans',sans-serif;letter-spacing:0.3px">6</div>
<div class="t" style="left:1145.90px;top:1075.42px;line-height:19.20px;font-size:16px;color:#ababab;font-weight:normal;font-family:'Liberation Sans',sans-serif;letter-spacing:0.3px">0</div>
<div class="t" style="left:1145.90px;top:1114.52px;line-height:19.20px;font-size:16px;color:#ababab;font-weight:normal;font-family:'Liberation Sans',sans-serif;letter-spacing:0.3px">6</div>
<div class="t" style="left:1145.90px;top:1154.42px;line-height:19.20px;font-size:16px;color:#ababab;font-weight:normal;font-family:'Liberation Sans',sans-serif;letter-spacing:0.3px">12</div>
<div class="t" style="left:1145.90px;top:1194.22px;line-height:19.20px;font-size:16px;color:#ababab;font-weight:normal;font-family:'Liberation Sans',sans-serif;letter-spacing:0.3px">18</div>
<div class="t" style="left:1145.90px;top:1234.02px;line-height:19.20px;font-size:16px;color:#ababab;font-weight:normal;font-family:'Liberation Sans',sans-serif;letter-spacing:0.3px">24</div>
<div class="t" style="left:1145.90px;top:1276.02px;line-height:19.20px;font-size:16px;color:#ababab;font-weight:normal;font-family:'Liberation Sans',sans-serif;letter-spacing:0.3px">30</div>
<div class="t" style="left:1145.90px;top:1310.52px;line-height:19.20px;font-size:16px;color:#ababab;font-weight:normal;font-family:'Liberation Sans',sans-serif;letter-spacing:0.3px">36</div>
<div class="t" style="left:1145.90px;top:1341.62px;line-height:19.20px;font-size:16px;color:#ababab;font-weight:normal;font-family:'Liberation Sans',sans-serif;letter-spacing:0.3px">42</div>
<div class="t" style="left:1145.90px;top:1367.72px;line-height:19.20px;font-size:16px;color:#ababab;font-weight:normal;font-family:'Liberation Sans',sans-serif;letter-spacing:0.3px">48</div>
<div class="t" style="left:1145.90px;top:1391.72px;line-height:19.20px;font-size:16px;color:#ababab;font-weight:normal;font-family:'Liberation Sans',sans-serif;letter-spacing:0.3px">54</div>
<div class="t" style="left:1145.90px;top:1414.32px;line-height:19.20px;font-size:16px;color:#ababab;font-weight:normal;font-family:'Liberation Sans',sans-serif;letter-spacing:0.3px">60</div>
<svg style="position:absolute;left:1096.40px;top:1074.30px;" width="20.00" height="21.40" viewBox="0 0 20.00 21.40"><polygon points="0,0 20,10.7 0,21.4" fill="#c6c6c6"/></svg>
<svg style="position:absolute;left:1033.40px;top:1290.80px;" width="52.00" height="56.00" viewBox="0 0 52.00 56.00"><path d="M15.67,49.63 A21.3,21.3 0 1 1 36.33,49.63" stroke="#1a1a1a" stroke-width="3.3" fill="none" stroke-linecap="butt"/><rect x="21.0" y="7.2" width="10" height="6" fill="#333"/><path d="M26,7.2 V33.8" stroke="#1a1a1a" stroke-width="2.8"/><polygon points="20,0.2 32,0.2 26,6.2" fill="#1a1a1a"/></svg>
<div style="left:1040.20px;top:1350.00px;width:38.40px;height:37.70px;background:#1a1a1a;"></div>
<div style="left:1040.90px;top:1350.70px;width:37.00px;height:36.30px;background:#f2ae62;"></div>
<div class="t b" style="left:1040.40px;width:38px;text-align:center;top:1357.42px;line-height:25.20px;font-size:21px;color:#111;font-weight:normal;font-family:'Liberation Sans',sans-serif;letter-spacing:0.5px">A</div>
<div style="left:1040.20px;top:1396.30px;width:38.40px;height:21.30px;background:#222222;"></div>
<div class="t" style="left:1040.40px;width:38px;text-align:center;top:1399.32px;line-height:19.20px;font-size:16px;color:#cfcfcf;font-weight:normal;font-family:'Liberation Sans',sans-serif;">S</div>
<div style="left:1016.90px;top:1461.20px;width:161.70px;height:10.60px;background:#d4d2d5;"></div>
<div style="left:1182.30px;top:1001.00px;width:161.00px;height:29.60px;background:#d4d2d5;"></div>
<div class="t b" style="left:1188.30px;top:1007.44px;line-height:20.40px;font-size:17px;color:#2a2a2a;font-weight:normal;font-family:'Liberation Sans',sans-serif;letter-spacing:0.9px">B Delay</div>
<div style="left:1182.30px;top:1031.00px;width:161.00px;height:427.00px;background:#333333;"></div>
<div style="left:1195.30px;top:1043.00px;width:59px;height:21px;border-radius:10.5px;background:#232323;border:1.2px solid #171717"></div>
<div class="t" style="left:1189.80px;width:70px;text-align:center;top:1044.28px;line-height:22.80px;font-size:19px;color:#dadada;font-weight:normal;font-family:'Liberation Sans',sans-serif;letter-spacing:0.2px">-55.2</div>
<div style="left:1194.80px;top:1074.00px;width:60.50px;height:21.50px;background:#232323;border:1px solid #1a1a1a"></div>
<div class="t" style="left:1190.00px;width:70px;text-align:center;top:1075.48px;line-height:22.80px;font-size:19px;color:#d0d0d0;font-weight:normal;font-family:'Liberation Sans',sans-serif;letter-spacing:0.2px">0</div>
<div style="left:1274.30px;top:1043.80px;width:5.50px;height:2.00px;background:#5a5a5a;"></div>
<div style="left:1274.30px;top:1083.70px;width:5.50px;height:2.00px;background:#5a5a5a;"></div>
<div style="left:1274.30px;top:1123.70px;width:5.50px;height:2.00px;background:#5a5a5a;"></div>
<div style="left:1274.30px;top:1163.70px;width:5.50px;height:2.00px;background:#5a5a5a;"></div>
<div style="left:1274.30px;top:1203.50px;width:5.50px;height:2.00px;background:#5a5a5a;"></div>
<div style="left:1274.30px;top:1243.30px;width:5.50px;height:2.00px;background:#5a5a5a;"></div>
<div style="left:1274.30px;top:1284.80px;width:5.50px;height:2.00px;background:#5a5a5a;"></div>
<div style="left:1274.30px;top:1319.50px;width:5.50px;height:2.00px;background:#5a5a5a;"></div>
<div style="left:1274.30px;top:1350.30px;width:5.50px;height:2.00px;background:#5a5a5a;"></div>
<div style="left:1274.30px;top:1376.70px;width:5.50px;height:2.00px;background:#5a5a5a;"></div>
<div style="left:1274.30px;top:1400.70px;width:5.50px;height:2.00px;background:#5a5a5a;"></div>
<div style="left:1274.30px;top:1423.30px;width:5.50px;height:2.00px;background:#5a5a5a;"></div>
<div style="left:1274.30px;top:1438.50px;width:5.50px;height:2.00px;background:#5a5a5a;"></div>
<div style="left:1283.30px;top:1043.00px;width:22.00px;height:404.00px;background:#1b1b1b;border-radius:3px 3px 0 0"></div>
<div style="left:1293.80px;top:1043.00px;width:1.00px;height:404.00px;background:#3c3c3c;"></div>
<div style="left:1283.60px;top:1437.30px;width:9.90px;height:9.40px;background:#6ae862;"></div>
<div style="left:1283.60px;top:1408.20px;width:9.90px;height:2.00px;background:#6ae862;"></div>
<div style="left:1295.10px;top:1420.60px;width:9.90px;height:14.60px;background:#4fa84b;"></div>
<div style="left:1295.10px;top:1435.20px;width:9.90px;height:11.50px;background:#6ae862;"></div>
<div style="left:1295.10px;top:1404.60px;width:9.90px;height:2.00px;background:#6ae862;"></div>
<div style="left:1284.30px;top:1084.00px;width:9.00px;height:1.60px;background:#a9a9a9;"></div>
<div style="left:1295.30px;top:1084.00px;width:9.00px;height:1.60px;background:#a9a9a9;"></div>
<div class="t" style="left:1311.30px;top:1042.02px;line-height:19.20px;font-size:16px;color:#ababab;font-weight:normal;font-family:'Liberation Sans',sans-serif;letter-spacing:0.3px">6</div>
<div class="t" style="left:1311.30px;top:1075.42px;line-height:19.20px;font-size:16px;color:#ababab;font-weight:normal;font-family:'Liberation Sans',sans-serif;letter-spacing:0.3px">0</div>
<div class="t" style="left:1311.30px;top:1114.52px;line-height:19.20px;font-size:16px;color:#ababab;font-weight:normal;font-family:'Liberation Sans',sans-serif;letter-spacing:0.3px">6</div>
<div class="t" style="left:1311.30px;top:1154.42px;line-height:19.20px;font-size:16px;color:#ababab;font-weight:normal;font-family:'Liberation Sans',sans-serif;letter-spacing:0.3px">12</div>
<div class="t" style="left:1311.30px;top:1194.22px;line-height:19.20px;font-size:16px;color:#ababab;font-weight:normal;font-family:'Liberation Sans',sans-serif;letter-spacing:0.3px">18</div>
<div class="t" style="left:1311.30px;top:1234.02px;line-height:19.20px;font-size:16px;color:#ababab;font-weight:normal;font-family:'Liberation Sans',sans-serif;letter-spacing:0.3px">24</div>
<div class="t" style="left:1311.30px;top:1276.02px;line-height:19.20px;font-size:16px;color:#ababab;font-weight:normal;font-family:'Liberation Sans',sans-serif;letter-spacing:0.3px">30</div>
<div class="t" style="left:1311.30px;top:1310.52px;line-height:19.20px;font-size:16px;color:#ababab;font-weight:normal;font-family:'Liberation Sans',sans-serif;letter-spacing:0.3px">36</div>
<div class="t" style="left:1311.30px;top:1341.62px;line-height:19.20px;font-size:16px;color:#ababab;font-weight:normal;font-family:'Liberation Sans',sans-serif;letter-spacing:0.3px">42</div>
<div class="t" style="left:1311.30px;top:1367.72px;line-height:19.20px;font-size:16px;color:#ababab;font-weight:normal;font-family:'Liberation Sans',sans-serif;letter-spacing:0.3px">48</div>
<div class="t" style="left:1311.30px;top:1391.72px;line-height:19.20px;font-size:16px;color:#ababab;font-weight:normal;font-family:'Liberation Sans',sans-serif;letter-spacing:0.3px">54</div>
<div class="t" style="left:1311.30px;top:1414.32px;line-height:19.20px;font-size:16px;color:#ababab;font-weight:normal;font-family:'Liberation Sans',sans-serif;letter-spacing:0.3px">60</div>
<svg style="position:absolute;left:1261.80px;top:1074.30px;" width="20.00" height="21.40" viewBox="0 0 20.00 21.40"><polygon points="0,0 20,10.7 0,21.4" fill="#c6c6c6"/></svg>
<svg style="position:absolute;left:1198.80px;top:1290.80px;" width="52.00" height="56.00" viewBox="0 0 52.00 56.00"><path d="M15.67,49.63 A21.3,21.3 0 1 1 36.33,49.63" stroke="#1a1a1a" stroke-width="3.3" fill="none" stroke-linecap="butt"/><rect x="21.0" y="7.2" width="10" height="6" fill="#333"/><path d="M26,7.2 V33.8" stroke="#1a1a1a" stroke-width="2.8"/><polygon points="20,0.2 32,0.2 26,6.2" fill="#1a1a1a"/></svg>
<div style="left:1205.60px;top:1350.00px;width:38.40px;height:37.70px;background:#1a1a1a;"></div>
<div style="left:1206.30px;top:1350.70px;width:37.00px;height:36.30px;background:#f2ae62;"></div>
<div class="t b" style="left:1205.80px;width:38px;text-align:center;top:1357.42px;line-height:25.20px;font-size:21px;color:#111;font-weight:normal;font-family:'Liberation Sans',sans-serif;letter-spacing:0.5px">B</div>
<div style="left:1205.60px;top:1396.30px;width:38.40px;height:21.30px;background:#222222;"></div>
<div class="t" style="left:1205.80px;width:38px;text-align:center;top:1399.32px;line-height:19.20px;font-size:16px;color:#cfcfcf;font-weight:normal;font-family:'Liberation Sans',sans-serif;">S</div>
<div style="left:1182.30px;top:1461.20px;width:161.00px;height:10.60px;background:#d4d2d5;"></div>
<div style="left:1346.40px;top:1001.00px;width:171.40px;height:29.60px;background:#ffffff;"></div>
<div class="t b" style="left:1355.40px;top:1007.44px;line-height:20.40px;font-size:17px;color:#2a2a2a;font-weight:normal;font-family:'Liberation Sans',sans-serif;letter-spacing:0.9px">Main</div>
<div style="left:1346.40px;top:1031.00px;width:171.40px;height:427.00px;background:#333333;"></div>
<div style="left:1364.90px;top:1043.00px;width:59px;height:21px;border-radius:10.5px;background:#232323;border:1.2px solid #171717"></div>
<div class="t" style="left:1359.40px;width:70px;text-align:center;top:1044.28px;line-height:22.80px;font-size:19px;color:#dadada;font-weight:normal;font-family:'Liberation Sans',sans-serif;letter-spacing:0.2px">-0.30</div>
<div style="left:1364.40px;top:1074.00px;width:60.50px;height:21.50px;background:#232323;border:1px solid #1a1a1a"></div>
<div class="t" style="left:1359.60px;width:70px;text-align:center;top:1075.48px;line-height:22.80px;font-size:19px;color:#d0d0d0;font-weight:normal;font-family:'Liberation Sans',sans-serif;letter-spacing:0.2px">0</div>
<div style="left:1443.90px;top:1043.80px;width:5.50px;height:2.00px;background:#5a5a5a;"></div>
<div style="left:1443.90px;top:1083.70px;width:5.50px;height:2.00px;background:#5a5a5a;"></div>
<div style="left:1443.90px;top:1123.70px;width:5.50px;height:2.00px;background:#5a5a5a;"></div>
<div style="left:1443.90px;top:1163.70px;width:5.50px;height:2.00px;background:#5a5a5a;"></div>
<div style="left:1443.90px;top:1203.50px;width:5.50px;height:2.00px;background:#5a5a5a;"></div>
<div style="left:1443.90px;top:1243.30px;width:5.50px;height:2.00px;background:#5a5a5a;"></div>
<div style="left:1443.90px;top:1284.80px;width:5.50px;height:2.00px;background:#5a5a5a;"></div>
<div style="left:1443.90px;top:1319.50px;width:5.50px;height:2.00px;background:#5a5a5a;"></div>
<div style="left:1443.90px;top:1350.30px;width:5.50px;height:2.00px;background:#5a5a5a;"></div>
<div style="left:1443.90px;top:1376.70px;width:5.50px;height:2.00px;background:#5a5a5a;"></div>
<div style="left:1443.90px;top:1400.70px;width:5.50px;height:2.00px;background:#5a5a5a;"></div>
<div style="left:1443.90px;top:1423.30px;width:5.50px;height:2.00px;background:#5a5a5a;"></div>
<div style="left:1443.90px;top:1438.50px;width:5.50px;height:2.00px;background:#5a5a5a;"></div>
<div style="left:1453.60px;top:1043.00px;width:19.80px;height:404.00px;background:#1b1b1b;border-radius:3px 3px 0 0"></div>
<div style="left:1463.00px;top:1043.00px;width:1.00px;height:404.00px;background:#3c3c3c;"></div>
<div style="left:1453.90px;top:1182.00px;width:8.80px;height:264.70px;background:#6ae862;"></div>
<div style="left:1464.30px;top:1182.00px;width:8.80px;height:264.70px;background:#6ae862;"></div>
<div style="left:1453.90px;top:1182.00px;width:19.20px;height:8.00px;background:#a8e040;"></div>
<div style="left:1463.00px;top:1043.00px;width:1.00px;height:404.00px;background:#2a2a2a;"></div>
<div style="left:1453.60px;top:1085.00px;width:19.80px;height:2.00px;background:#d04a3c;"></div>
<div class="t" style="left:1480.90px;top:1042.02px;line-height:19.20px;font-size:16px;color:#ababab;font-weight:normal;font-family:'Liberation Sans',sans-serif;letter-spacing:0.3px">6</div>
<div class="t" style="left:1480.90px;top:1075.42px;line-height:19.20px;font-size:16px;color:#ababab;font-weight:normal;font-family:'Liberation Sans',sans-serif;letter-spacing:0.3px">0</div>
<div class="t" style="left:1480.90px;top:1114.52px;line-height:19.20px;font-size:16px;color:#ababab;font-weight:normal;font-family:'Liberation Sans',sans-serif;letter-spacing:0.3px">6</div>
<div class="t" style="left:1480.90px;top:1154.42px;line-height:19.20px;font-size:16px;color:#ababab;font-weight:normal;font-family:'Liberation Sans',sans-serif;letter-spacing:0.3px">12</div>
<div class="t" style="left:1480.90px;top:1194.22px;line-height:19.20px;font-size:16px;color:#ababab;font-weight:normal;font-family:'Liberation Sans',sans-serif;letter-spacing:0.3px">18</div>
<div class="t" style="left:1480.90px;top:1234.02px;line-height:19.20px;font-size:16px;color:#ababab;font-weight:normal;font-family:'Liberation Sans',sans-serif;letter-spacing:0.3px">24</div>
<div class="t" style="left:1480.90px;top:1276.02px;line-height:19.20px;font-size:16px;color:#ababab;font-weight:normal;font-family:'Liberation Sans',sans-serif;letter-spacing:0.3px">30</div>
<div class="t" style="left:1480.90px;top:1310.52px;line-height:19.20px;font-size:16px;color:#ababab;font-weight:normal;font-family:'Liberation Sans',sans-serif;letter-spacing:0.3px">36</div>
<div class="t" style="left:1480.90px;top:1341.62px;line-height:19.20px;font-size:16px;color:#ababab;font-weight:normal;font-family:'Liberation Sans',sans-serif;letter-spacing:0.3px">42</div>
<div class="t" style="left:1480.90px;top:1367.72px;line-height:19.20px;font-size:16px;color:#ababab;font-weight:normal;font-family:'Liberation Sans',sans-serif;letter-spacing:0.3px">48</div>
<div class="t" style="left:1480.90px;top:1391.72px;line-height:19.20px;font-size:16px;color:#ababab;font-weight:normal;font-family:'Liberation Sans',sans-serif;letter-spacing:0.3px">54</div>
<div class="t" style="left:1480.90px;top:1414.32px;line-height:19.20px;font-size:16px;color:#ababab;font-weight:normal;font-family:'Liberation Sans',sans-serif;letter-spacing:0.3px">60</div>
<svg style="position:absolute;left:1431.40px;top:1074.30px;" width="20.00" height="21.40" viewBox="0 0 20.00 21.40"><polygon points="0,0 20,10.7 0,21.4" fill="#c6c6c6"/></svg>
<svg style="position:absolute;left:1368.40px;top:1290.80px;" width="52.00" height="56.00" viewBox="0 0 52.00 56.00"><path d="M15.67,49.63 A21.3,21.3 0 1 1 36.33,49.63" stroke="#1a1a1a" stroke-width="3.3" fill="none" stroke-linecap="butt"/><rect x="21.0" y="7.2" width="10" height="6" fill="#333"/><path d="M26,7.2 V33.8" stroke="#1a1a1a" stroke-width="2.8"/><polygon points="20,0.2 32,0.2 26,6.2" fill="#1a1a1a"/></svg>
<div style="left:1373.40px;top:1366.50px;width:42.50px;height:21.70px;background:#1c1c1c;"></div>
<div style="left:1374.40px;top:1367.50px;width:40.50px;height:19.70px;background:#8c8c8c;"></div>
<div class="t" style="left:1373.60px;width:42px;text-align:center;top:1368.86px;line-height:21.60px;font-size:18px;color:#2a2a2a;font-weight:normal;font-family:'Liberation Sans',sans-serif;">Solo</div>
<svg style="position:absolute;left:1368.90px;top:1392.50px;" width="52.00" height="56.00" viewBox="0 0 52.00 56.00"><path d="M14.24,42.79 A20.5,20.5 0 1 1 46.19,29.56" stroke="#4a78d0" stroke-width="3.2" fill="none"/><path d="M46.19,29.56 A20.5,20.5 0 0 1 40.50,40.50" stroke="#1a1a1a" stroke-width="3.2" fill="none"/><path d="M26,26 L45.19,29.06" stroke="#1a1a1a" stroke-width="2.6"/><circle cx="26" cy="43" r="9" fill="#333"/><path d="M19.5,45 a6.5,6.5 0 0 1 13,0" stroke="#cfcfcf" stroke-width="2.6" fill="none"/><rect x="17.8" y="43.5" width="4" height="6" rx="1.2" fill="#cfcfcf"/><rect x="30.2" y="43.5" width="4" height="6" rx="1.2" fill="#cfcfcf"/></svg>
<div style="left:1346.40px;top:1461.2px;width:171.40px;height:10.6px;background:#fff;border-radius:0 0 6px 0"></div>
<div style="left:0.00px;top:1487.50px;width:670.00px;height:33.00px;background:#303030;"></div>
<div style="left:689.40px;top:1488.00px;width:31.50px;height:32.30px;background:#2e2e2e;"></div>
<svg style="position:absolute;left:689.40px;top:1488.00px;" width="31.50" height="32.30" viewBox="0 0 31.50 32.30"><polygon points="11,10 11,22.5 21.5,16.2" fill="#d0d0d0"/></svg>
<div style="left:722.40px;top:1488.00px;width:347.40px;height:32.30px;background:#3a3a3a;"></div>
<svg style="position:absolute;left:722.40px;top:1488.00px;" width="347.40" height="32.30" viewBox="0 0 347.40 32.30"><g fill="#1e1e1e"><rect x="212.5" y="20" width="8.2" height="2" rx="1"/><rect x="320.5" y="6" width="8.4" height="2" rx="1"/><rect x="264.3" y="6" width="7.6" height="2" rx="1"/><rect x="306.5" y="6" width="6.5" height="2" rx="1"/><rect x="295.5" y="24" width="7.2" height="2" rx="1"/><rect x="196.0" y="6" width="7.9" height="2" rx="1"/><rect x="140.0" y="6" width="8.7" height="2" rx="1"/><rect x="260.8" y="6" width="8.0" height="2" rx="1"/><rect x="26.3" y="24" width="5.5" height="2" rx="1"/><rect x="2.6" y="6" width="5.8" height="2" rx="1"/><rect x="74.8" y="6" width="8.5" height="2" rx="1"/><rect x="99.8" y="6" width="7.2" height="2" rx="1"/><rect x="231.1" y="6" width="5.7" height="2" rx="1"/><rect x="329.4" y="6" width="8.9" height="2" rx="1"/><rect x="304.1" y="20" width="5.1" height="2" rx="1"/><rect x="142.2" y="6" width="6.1" height="2" rx="1"/><rect x="114.2" y="6" width="7.4" height="2" rx="1"/><rect x="241.2" y="6" width="6.2" height="2" rx="1"/><rect x="278.7" y="24" width="7.8" height="2" rx="1"/><rect x="64.5" y="24" width="7.8" height="2" rx="1"/><rect x="21.3" y="6" width="8.8" height="2" rx="1"/><rect x="122.9" y="24" width="5.1" height="2" rx="1"/><rect x="268.3" y="20" width="6.5" height="2" rx="1"/><rect x="286.3" y="24" width="5.2" height="2" rx="1"/><rect x="63.2" y="6" width="5.5" height="2" rx="1"/><rect x="85.2" y="24" width="6.4" height="2" rx="1"/><rect x="121.9" y="20" width="8.1" height="2" rx="1"/><rect x="38.5" y="20" width="8.4" height="2" rx="1"/><rect x="14.4" y="6" width="5.8" height="2" rx="1"/><rect x="175.4" y="20" width="8.7" height="2" rx="1"/><rect x="116.9" y="6" width="6.2" height="2" rx="1"/><rect x="109.1" y="6" width="8.2" height="2" rx="1"/><rect x="213.9" y="20" width="9.0" height="2" rx="1"/><rect x="56.6" y="6" width="5.3" height="2" rx="1"/></g></svg>
<div style="left:992.50px;top:1488.00px;width:2.00px;height:32.30px;background:#e8e8e8;"></div>
<div style="left:1085.00px;top:1487.40px;width:33.00px;height:33.60px;background:#2e2e2e;"></div>
<svg style="position:absolute;left:1085.00px;top:1487.40px;" width="33.00" height="33.60" viewBox="0 0 33.00 33.60"><polygon points="12,10 12,23.5 22.5,16.8" fill="#d0d0d0"/></svg>
<div style="left:1120.30px;top:1487.40px;width:57.50px;height:33.60px;background:#2e2e2e;"></div>
<div class="t b" style="left:1130.00px;top:1495.84px;line-height:20.40px;font-size:17px;color:#bdbdbd;font-weight:normal;font-family:'Liberation Sans',sans-serif;letter-spacing:0.9px">Bass</div>
<div style="left:1180.00px;top:1487.50px;width:255.40px;height:33.00px;background:#232323;"></div>
<div style="left:1180.50px;top:1488.00px;width:19.50px;height:31.50px;background:#1e1e1e;"></div>
<div style="left:1181.50px;top:1491.50px;width:17.50px;height:2.50px;background:#3aa8b0;"></div>
<div style="left:1181.50px;top:1495.00px;width:17.50px;height:10.00px;background:#121416;"></div>
<div style="left:1181.50px;top:1506.00px;width:17.50px;height:2.50px;background:#d09a40;"></div>
<div style="left:1181.50px;top:1509.50px;width:17.50px;height:8.50px;background:#14120e;"></div>
<svg style="position:absolute;left:1181.50px;top:1495.00px;" width="18.00" height="10.00" viewBox="0 0 18.00 10.00"><path d="M4,9 L9,3 L14,6" stroke="#2f8f8a" stroke-width="1.2" fill="none"/></svg>
<svg style="position:absolute;left:1181.50px;top:1509.50px;" width="18.00" height="9.00" viewBox="0 0 18.00 9.00"><polygon points="9,1 14,5 9,8 4,5" fill="#b07a30"/></svg>
<div style="left:1200.00px;top:1488.00px;width:25.00px;height:31.50px;background:#2a2a2a;"></div>
<svg style="position:absolute;left:1200.00px;top:1488.00px;" width="25.00" height="31.50" viewBox="0 0 25.00 31.50"><circle cx="7" cy="9" r="3.5" stroke="#555" stroke-width="1.3" fill="none"/><circle cx="18" cy="9" r="3.5" stroke="#2f8f8a" stroke-width="1.3" fill="none"/><circle cx="7" cy="23" r="3.5" stroke="#555" stroke-width="1.3" fill="none"/><circle cx="18" cy="23" r="3.5" stroke="#777" stroke-width="1.3" fill="none"/></svg>
<div style="left:1226.00px;top:1488.00px;width:68.80px;height:31.50px;background:#161616;"></div>
<div style="left:1236.00px;top:1490.00px;width:11.00px;height:3.00px;background:#3aa8b0;"></div>
<svg style="position:absolute;left:1226.00px;top:1488.00px;" width="68.80" height="31.50" viewBox="0 0 68.80 31.50"><path d="M3,9 L22,9 L27,18 L66,18" stroke="#3a8f90" stroke-width="0.9" fill="none"/><path d="M36,7 L41,17 L66,17" stroke="#3a8f90" stroke-width="0.9" fill="none"/><g fill="#2a6f72"><rect x="2" y="22" width="64" height="1"/></g><g fill="#3b1f2a"><rect x="3" y="25" width="8" height="4"/><rect x="14" y="25" width="8" height="4"/><rect x="25" y="25" width="8" height="4"/><rect x="36" y="25" width="8" height="4"/></g></svg>
<div style="left:1295.00px;top:1488.00px;width:47.00px;height:31.50px;background:#262626;"></div>
<div style="left:1327.00px;top:1491.00px;width:13.00px;height:6.00px;background:#d8a040;"></div>
<div style="left:1327.00px;top:1499.00px;width:13.00px;height:2.00px;background:#555;"></div>
<svg style="position:absolute;left:1295.00px;top:1488.00px;" width="47.00" height="31.50" viewBox="0 0 47.00 31.50"><circle cx="8" cy="24" r="4" stroke="#9a7a3a" stroke-width="1.3" fill="none"/><circle cx="22" cy="12" r="3" stroke="#2f8f8a" stroke-width="1.2" fill="none"/><rect x="16" y="20" width="8" height="1.5" fill="#666"/><rect x="28" y="10" width="8" height="1.5" fill="#555"/><rect x="28" y="24" width="12" height="1.5" fill="#666"/></svg>
<div style="left:1344.00px;top:1488.00px;width:47.40px;height:31.50px;background:#1f1f1f;"></div>
<svg style="position:absolute;left:1344.00px;top:1488.00px;" width="47.40" height="31.50" viewBox="0 0 47.40 31.50"><circle cx="19" cy="6" r="2" fill="#4a90d0"/><rect x="3" y="16" width="18" height="13" fill="#141414"/><path d="M4,24 L10,20 L19,27" stroke="#8a7a30" stroke-width="1" fill="none"/><rect x="26" y="20" width="8" height="1.5" fill="#d09a40"/><rect x="24" y="26" width="20" height="2" fill="#2a7f90"/><rect x="34" y="12" width="10" height="2" fill="#3aa8b0"/></svg>
<div style="left:1393.00px;top:1488.00px;width:42.40px;height:31.50px;background:#141414;"></div>
<div style="left:1425.00px;top:1491.00px;width:9.00px;height:3.00px;background:#d8a040;"></div>
<div style="left:1425.00px;top:1497.00px;width:9.00px;height:3.00px;background:#d8a040;"></div>
<svg style="position:absolute;left:1393.00px;top:1488.00px;" width="42.40" height="31.50" viewBox="0 0 42.40 31.50"><g fill="#3a3a3a"><rect x="10" y="4" width="1" height="24"/><rect x="18" y="4" width="1" height="24"/><rect x="26" y="4" width="1" height="24"/></g><rect x="2" y="8" width="6" height="1.5" fill="#555"/><rect x="2" y="18" width="6" height="1.5" fill="#555"/></svg>
<div style="left:1465.40px;top:1500.00px;width:3.20px;height:15.50px;background:#f0a860;"></div>
<div style="left:1472.40px;top:1493.00px;width:3.20px;height:22.50px;background:#f0a860;"></div>
<div style="left:1479.40px;top:1503.00px;width:3.20px;height:12.50px;background:#f0a860;"></div>
<div style="left:1486.40px;top:1497.00px;width:3.20px;height:18.50px;background:#f0a860;"></div>
<svg style="position:absolute;left:1498.00px;top:1496.00px;" width="16.00" height="12.00" viewBox="0 0 16.00 12.00"><polygon points="1,1 15,1 8,10" fill="#4a4a4a"/></svg>
</body></html>
